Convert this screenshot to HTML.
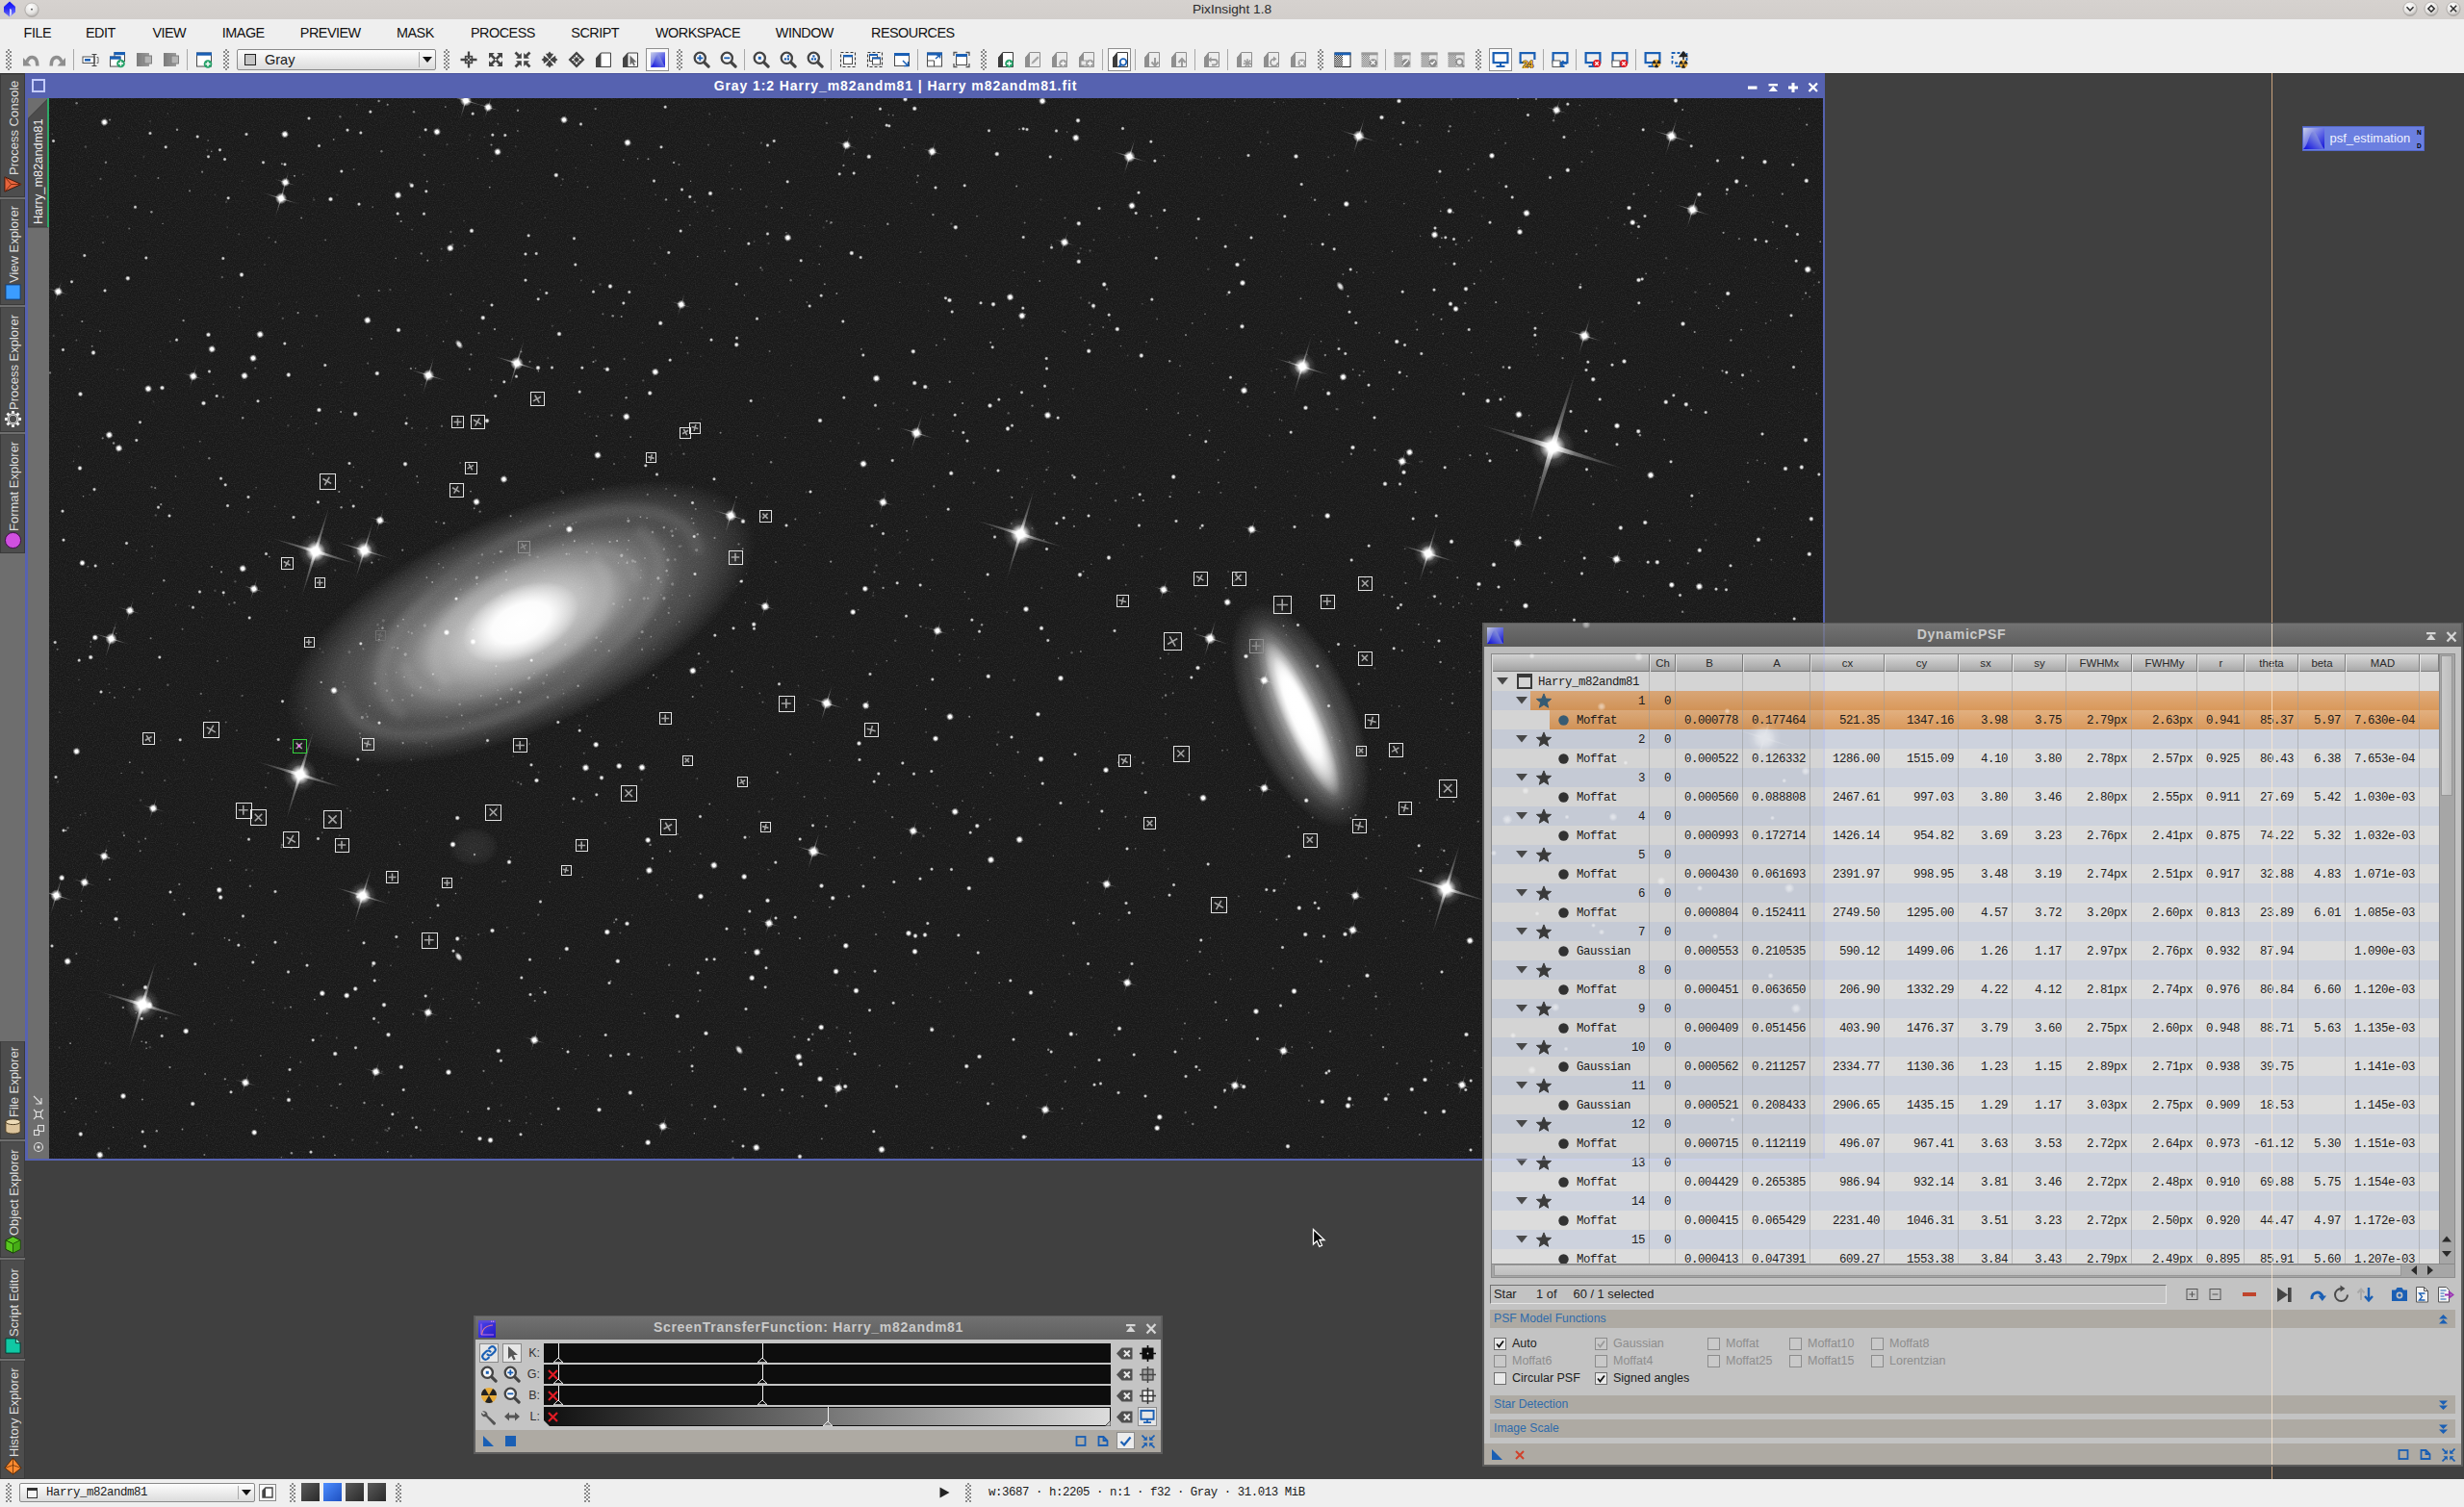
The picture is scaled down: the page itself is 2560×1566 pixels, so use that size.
<!DOCTYPE html><html><head><meta charset="utf-8"><title>PixInsight 1.8</title><style>
*{box-sizing:border-box}
html,body{margin:0;padding:0}
body{width:2560px;height:1566px;position:relative;overflow:hidden;background:#404040;font-family:"Liberation Sans",sans-serif;font-size:12.5px;color:#1a1a1a}
.a{position:absolute}
.mono{font-family:"Liberation Mono",monospace;font-size:12.4px;letter-spacing:-.44px}
.menu span{position:absolute;top:25px;font-size:14.4px;letter-spacing:-.5px;color:#111;line-height:18px;white-space:nowrap}
.grip{position:absolute;width:6px;background-image:repeating-conic-gradient(#8a8a8a 0% 25%,#f0f0f0 0% 50%);background-size:4px 4px}
.sep{position:absolute;width:1px;background:#a8a8a8}
.vt{position:absolute;left:0;width:26px;background:#4d4d4d;border:1px solid #3a3a3a;border-top-color:#444}
    .vt span{position:absolute;left:4px;bottom:0;transform-origin:0 100%;transform:rotate(-90deg) translate(0,100%);white-space:nowrap;color:#dcdcdc;font-size:13px;line-height:19px;height:19px}
.bar{position:absolute;left:1548px;width:1003px;height:19px;background:#aeaaa3;color:#2e6bab;font-size:12.2px;line-height:19px;padding-left:4px}
.cb{position:absolute;width:13px;height:13px;border:1px solid #6e6e6e;background:#e9e9e9}
.cb.d{border-color:#8c8c8c;background:#c9c9c9}
.lb{position:absolute;font-size:12.5px;line-height:15px;white-space:nowrap;color:#1c1c1c}
.lb.d{color:#8d8d8d}
.row{position:absolute;left:0;width:984px;height:20px}
.row span{position:absolute;top:1px;line-height:20px;white-space:pre;color:#1c1c1c}
.hd{position:absolute;top:0;height:18px;border-right:1px solid #7d7d7d;border-left:1px solid #e6e6e6;font-size:11.4px;line-height:18px;text-align:center;color:#2a2a2a}
</style></head><body><div class="a" style="left:0;top:0;width:2560px;height:20px;background:linear-gradient(#d6d2cf,#d2cecb)"></div><div class="a" style="left:1180px;top:2px;width:200px;text-align:center;font-size:13.7px;line-height:16px;color:#2b2b2b">PixInsight 1.8</div><svg class="a" style="left:3px;top:1px" width="14" height="17" viewBox="0 0 14 17"><defs><linearGradient id="gm" x1="0" y1="0" x2="0" y2="1"><stop offset="0" stop-color="#1010f0"/><stop offset=".45" stop-color="#2a2cff"/><stop offset="1" stop-color="#c8ccff"/></linearGradient></defs><path d="M7 .5 L13 6 L13 11.5 L7 16.5 L1 11.5 L1 6 Z" fill="url(#gm)"/><path d="M7 8 L13 6 L13 11.5 L7 16.5Z" fill="#4a50f8" opacity=".55"/><path d="M7 8 L1 6 L1 11.5 L7 16.5Z" fill="#2020e8" opacity=".5"/><path d="M7 8 L7 16.5 L9 14 L9 9Z" fill="#e8eaff" opacity=".8"/></svg><svg class="a" style="left:24.5px;top:1.8px" width="16" height="16" viewBox="-8 -8 16 16"><defs><radialGradient id="bl32" cx=".4" cy=".3" r=".8"><stop offset="0" stop-color="#fff"/><stop offset=".6" stop-color="#e4e2e0"/><stop offset="1" stop-color="#a9a6a3"/></radialGradient></defs><circle r="7.400" cy=".5" fill="#8f8c89" opacity=".55"/><circle r="7" fill="url(#bl32)" stroke="#a9a6a3" stroke-width=".6"/><circle r="0.9" cy="-0.3" fill="#444"/></svg><svg class="a" style="left:2495.5px;top:1.2px" width="16" height="16" viewBox="-8 -8 16 16"><defs><radialGradient id="bl2503" cx=".4" cy=".3" r=".8"><stop offset="0" stop-color="#fff"/><stop offset=".6" stop-color="#e4e2e0"/><stop offset="1" stop-color="#a9a6a3"/></radialGradient></defs><circle r="7.400" cy=".5" fill="#8f8c89" opacity=".55"/><circle r="7" fill="url(#bl2503)" stroke="#a9a6a3" stroke-width=".6"/><path d="M-3.500 -1.700L0 1.900 3.500 -1.700" fill="none" stroke="#2a2a2a" stroke-width="1.500"/></svg><svg class="a" style="left:2518.3px;top:1.2px" width="16" height="16" viewBox="-8 -8 16 16"><defs><radialGradient id="bl2526" cx=".4" cy=".3" r=".8"><stop offset="0" stop-color="#fff"/><stop offset=".6" stop-color="#e4e2e0"/><stop offset="1" stop-color="#a9a6a3"/></radialGradient></defs><circle r="7.400" cy=".5" fill="#8f8c89" opacity=".55"/><circle r="7" fill="url(#bl2526)" stroke="#a9a6a3" stroke-width=".6"/><path d="M0 -3.200L3.200 0 0 3.200-3.200 0Z" fill="none" stroke="#2a2a2a" stroke-width="1.500"/></svg><svg class="a" style="left:2541px;top:1.2px" width="16" height="16" viewBox="-8 -8 16 16"><defs><radialGradient id="bl2549" cx=".4" cy=".3" r=".8"><stop offset="0" stop-color="#fff"/><stop offset=".6" stop-color="#e4e2e0"/><stop offset="1" stop-color="#a9a6a3"/></radialGradient></defs><circle r="7.400" cy=".5" fill="#8f8c89" opacity=".55"/><circle r="7" fill="url(#bl2549)" stroke="#a9a6a3" stroke-width=".6"/><path d="M-3.200 -3.200L3.200 3.200M3.200 -3.200L-3.200 3.200" stroke="#2a2a2a" stroke-width="1.500"/></svg><div class="a" style="left:0;top:20px;width:2560px;height:56px;background:#efefef"></div><div class="menu"><span style="left:24.6px">FILE</span><span style="left:89px">EDIT</span><span style="left:158.4px">VIEW</span><span style="left:230.8px">IMAGE</span><span style="left:311.8px">PREVIEW</span><span style="left:412px">MASK</span><span style="left:489px">PROCESS</span><span style="left:593.3px">SCRIPT</span><span style="left:681px">WORKSPACE</span><span style="left:805.8px">WINDOW</span><span style="left:905px">RESOURCES</span></div><div class="grip" style="left:6px;top:51px;height:22px"></div><svg class="a" style="left:23px;top:53px" width="18" height="18" viewBox="0 0 18 18"><path d="M1 15.500V7l8.500 8.500z" fill="#8e8e8e"/><path d="M5 11.500C6 4.500 16 4 15.800 15.500" fill="none" stroke="#8e8e8e" stroke-width="3.600"/></svg><svg class="a" style="left:51px;top:53px" width="18" height="18" viewBox="0 0 18 18"><path d="M17 15.500V7l-8.500 8.500z" fill="#8e8e8e"/><path d="M13 11.500C12 4.500 2 4 2.200 15.500" fill="none" stroke="#8e8e8e" stroke-width="3.600"/></svg><div class="sep" style="left:76px;top:51px;height:22px"></div><svg class="a" style="left:85px;top:53px" width="18" height="18" viewBox="0 0 18 18"><rect x="1" y="6" width="12" height="6.500" fill="#fff" stroke="#555" stroke-width="1"/><rect x="3" y="8" width="6" height="2.6" fill="#1a5fb4"/><path d="M10.5 3.5h5M10.5 15.500h5M13 3.5v12" stroke="#444" stroke-width="1.2" fill="none"/><path d="M15.500 6.500h1.500v6h-1.500" stroke="#666" fill="none"/></svg><svg class="a" style="left:113px;top:53px" width="18" height="18" viewBox="0 0 18 18"><rect x="6" y="1.5" width="10.5" height="9" fill="#fff" stroke="#4a4a4a" stroke-width="1"/><rect x="5.5" y="1" width="11.5" height="3.2" fill="#1a5fb4"/><rect x="1.5" y="6" width="10.5" height="10" fill="#fff" stroke="#4a4a4a" stroke-width="1"/><rect x="1" y="5.5" width="11.5" height="3.2" fill="#1a5fb4"/><circle cx="12.5" cy="13" r="4.3" fill="#26a269"/><path d="M10 13h5M12.5 10.5v5" stroke="#fff" stroke-width="1.400"/></svg><svg class="a" style="left:141px;top:53px" width="18" height="18" viewBox="0 0 18 18"><defs><linearGradient id="gb141" x1="0" y1="0" x2="1" y2="0"><stop offset="0" stop-color="#7a7a7a"/><stop offset="1" stop-color="#9c9c9c"/></linearGradient></defs><rect x="1" y="2" width="13" height="14" fill="url(#gb141)"/><rect x="9" y="5" width="7.5" height="8" fill="#b5b5b5" stroke="#7e7e7e"/></svg><svg class="a" style="left:169px;top:53px" width="18" height="18" viewBox="0 0 18 18"><defs><linearGradient id="gb169" x1="0" y1="0" x2="1" y2="0"><stop offset="0" stop-color="#7a7a7a"/><stop offset="1" stop-color="#9c9c9c"/></linearGradient></defs><rect x="1" y="2" width="13" height="14" fill="url(#gb169)"/><rect x="9" y="5" width="7.5" height="8" fill="#b5b5b5" stroke="#7e7e7e"/></svg><div class="sep" style="left:194px;top:51px;height:22px"></div><svg class="a" style="left:203px;top:53px" width="18" height="18" viewBox="0 0 18 18"><rect x="1.5" y="2" width="15" height="14" fill="#fff" stroke="#4a4a4a" stroke-width="1"/><rect x="1" y="1.5" width="16" height="3.2" fill="#1a5fb4"/><circle cx="13" cy="13.5" r="4.3" fill="#26a269"/><path d="M10.5 13.5h5M13 11v5" stroke="#fff" stroke-width="1.400"/></svg><div class="grip" style="left:232px;top:51px;height:22px"></div><div class="a" style="left:246px;top:51px;width:207px;height:22px;border:1px solid #8a8a8a;border-radius:2px;background:linear-gradient(#fdfdfd,#dcdcdc)"><div class="a" style="left:7px;top:4px;width:12px;height:12px;border:1.500px solid #222;background:#c4c4c4"></div><div class="a" style="left:28px;top:1px;font-size:14.5px;line-height:18px;color:#1a1a1a">Gray</div><div class="a" style="left:188px;top:2px;width:1px;height:16px;background:#aaa"></div><svg class="a" style="left:192px;top:7px" width="10" height="7"><path d="M0 0h10L5 6z" fill="#111"/></svg></div><div class="grip" style="left:461px;top:51px;height:22px"></div><svg class="a" style="left:478px;top:53px" width="18" height="18" viewBox="0 0 18 18"><path d="M9 0.500v17M0.500 9h17" stroke="#444" stroke-width="2.300"/><rect x="5.600" y="5.600" width="6.800" height="6.800" fill="none" stroke="#444" stroke-width="1.600"/><rect x="8.200" y="8.200" width="1.600" height="1.600" fill="#efefef"/></svg><svg class="a" style="left:506px;top:53px" width="18" height="18" viewBox="0 0 18 18"><path d="M2 2h5.800L2 7.800zM16 2v5.800L10.200 2zM2 16V10.200L7.800 16zM16 16H10.200L16 10.200z" fill="#444"/><path d="M4 4l10 10M14 4L4 14" stroke="#444" stroke-width="2.500"/><rect x="8.100" y="8.100" width="1.800" height="1.800" fill="#efefef"/></svg><svg class="a" style="left:534px;top:53px" width="18" height="18" viewBox="0 0 18 18"><path d="M7.800 7.800V2L2 7.800zM10.200 7.800V2L16 7.800zM7.800 10.200V16L2 10.200zM10.200 10.200V16L16 10.200z" fill="#444"/><path d="M1.500 1.500l4.500 4.500M16.500 1.500L12 6M1.500 16.500L6 12M16.500 16.500L12 12" stroke="#444" stroke-width="2.800"/></svg><svg class="a" style="left:562px;top:53px" width="18" height="18" viewBox="0 0 18 18"><path d="M9 9L4.800 2.800h2.400L9 0.500l1.800 2.300h2.400zM9 9l4.200 6.200h-2.400L9 17.500l-1.800-2.300H4.800zM9 9L2.800 13.200v-2.400L0.500 9l2.300-1.800V4.800zM9 9l6.200-4.200v2.400L17.500 9l-2.300 1.800v2.400z" fill="#444"/><circle cx="9" cy="9" r="1.100" fill="#efefef"/></svg><svg class="a" style="left:590px;top:53px" width="18" height="18" viewBox="0 0 18 18"><path d="M9 0.500L17.500 9 9 17.500 0.500 9z" fill="#444"/><g fill="#efefef"><rect x="7.900" y="4.300" width="2.200" height="2.200"/><rect x="7.900" y="11.500" width="2.200" height="2.200"/><rect x="4.300" y="7.900" width="2.200" height="2.200"/><rect x="11.500" y="7.900" width="2.200" height="2.200"/><rect x="6.200" y="6.200" width="1.500" height="1.500"/><rect x="10.300" y="6.200" width="1.500" height="1.500"/><rect x="6.200" y="10.300" width="1.500" height="1.500"/><rect x="10.300" y="10.300" width="1.500" height="1.500"/></g></svg><svg class="a" style="left:618px;top:53px" width="18" height="18" viewBox="0 0 18 18"><path d="M1.500 16.500V7.500l5-5.500h10v14.500z" fill="#fff" stroke="#444" stroke-width="1"/><path d="M1 17V7.500L6.500 1.500V17z" fill="#444"/></svg><svg class="a" style="left:646px;top:53px" width="18" height="18" viewBox="0 0 18 18"><path d="M1.500 16.500V7.500l5-5.500h10v14.500z" fill="#f4f4f4" stroke="#444" stroke-width="1"/><path d="M1 17V7.500L6.500 1.500V17z" fill="#444"/><path d="M8.500 4.500v10l2.300-2.200 1.500 3.200 1.600-0.700-1.500-3.200h3.100z" fill="#6a6a6a"/></svg><div class="a" style="left:671px;top:50px;width:24px;height:24px;border:1px solid #8f8f8f;background:#fbfbfb"></div><svg class="a" style="left:675.5px;top:54px" width="15.5" height="16" viewBox="0 0 17 17"><defs><linearGradient id="pg1" x1="0" y1="0" x2="1" y2="1"><stop offset="0" stop-color="#c9d0e8"/><stop offset=".5" stop-color="#6a72e6"/><stop offset="1" stop-color="#1010d8"/></linearGradient><linearGradient id="ph1" x1="0" y1="1" x2="1" y2="0"><stop offset="0" stop-color="#0a0ae0"/><stop offset=".55" stop-color="#6a74e0"/><stop offset="1" stop-color="#aeb8dc"/></linearGradient></defs><rect width="17" height="17" fill="url(#pg1)"/><path d="M0 17 C4 14 5 3 8 3 C11 3 13 12 17 17Z" fill="url(#ph1)"/></svg><div class="grip" style="left:703px;top:51px;height:22px"></div><svg class="a" style="left:720px;top:53px" width="18" height="18" viewBox="0 0 18 18"><circle cx="7.300" cy="7.300" r="5.600" fill="#f6f6f6" stroke="#444" stroke-width="2.300"/><path d="M11.800 11.800l4.300 4.300" stroke="#444" stroke-width="3.200" stroke-linecap="round"/><g transform="translate(.3 .3)"><path d="M4 7h6M7 4v6" stroke="#1a5fb4" stroke-width="1.800"/></g></svg><svg class="a" style="left:748px;top:53px" width="18" height="18" viewBox="0 0 18 18"><circle cx="7.300" cy="7.300" r="5.600" fill="#f6f6f6" stroke="#444" stroke-width="2.300"/><path d="M11.800 11.800l4.300 4.300" stroke="#444" stroke-width="3.200" stroke-linecap="round"/><g transform="translate(.3 .3)"><path d="M4 7h6" stroke="#1a5fb4" stroke-width="1.800"/></g></svg><div class="sep" style="left:773px;top:51px;height:22px"></div><svg class="a" style="left:782px;top:53px" width="18" height="18" viewBox="0 0 18 18"><circle cx="7.300" cy="7.300" r="5.600" fill="#f6f6f6" stroke="#444" stroke-width="2.300"/><path d="M11.800 11.800l4.300 4.300" stroke="#444" stroke-width="3.200" stroke-linecap="round"/><g transform="translate(.3 .3)"><rect x="5.500" y="5.500" width="3" height="3" fill="#1a5fb4"/></g></svg><svg class="a" style="left:810px;top:53px" width="18" height="18" viewBox="0 0 18 18"><circle cx="7.300" cy="7.300" r="5.600" fill="#f6f6f6" stroke="#444" stroke-width="2.300"/><path d="M11.800 11.800l4.300 4.300" stroke="#444" stroke-width="3.200" stroke-linecap="round"/><g transform="translate(.3 .3)"><rect x="4.500" y="7" width="2.200" height="2.200" fill="#1a5fb4"/><rect x="7.500" y="7" width="2.200" height="2.200" fill="#1a5fb4"/><rect x="7.500" y="4" width="2.200" height="2.200" fill="#1a5fb4"/></g></svg><svg class="a" style="left:838px;top:53px" width="18" height="18" viewBox="0 0 18 18"><circle cx="7.300" cy="7.300" r="5.600" fill="#f6f6f6" stroke="#444" stroke-width="2.300"/><path d="M11.800 11.800l4.300 4.300" stroke="#444" stroke-width="3.200" stroke-linecap="round"/><g transform="translate(.3 .3)"><rect x="4.500" y="7" width="2.200" height="2.200" fill="#1a5fb4"/><rect x="7.500" y="7" width="2.200" height="2.200" fill="#1a5fb4"/><rect x="6" y="4" width="2.200" height="2.200" fill="#1a5fb4"/></g></svg><div class="sep" style="left:863px;top:51px;height:22px"></div><svg class="a" style="left:872px;top:53px" width="18" height="18" viewBox="0 0 18 18"><rect x="1.500" y="1.500" width="15" height="15" fill="none" stroke="#3a3a3a" stroke-width="1.100" stroke-dasharray="3 2"/><rect x="4.5" y="4.5" width="9" height="9" fill="#fff" stroke="#4a4a4a" stroke-width="1"/><rect x="4" y="4" width="10" height="2.4" fill="#1a5fb4"/></svg><svg class="a" style="left:900px;top:53px" width="18" height="18" viewBox="0 0 18 18"><rect x="1.500" y="1.500" width="15" height="15" fill="none" stroke="#3a3a3a" stroke-width="1.100" stroke-dasharray="3 2"/><rect x="3.5" y="3.5" width="8" height="7" fill="#fff" stroke="#4a4a4a" stroke-width="1"/><rect x="3" y="3" width="9" height="2" fill="#1a5fb4"/><rect x="6.5" y="7" width="8" height="7" fill="#fff" stroke="#4a4a4a" stroke-width="1"/><rect x="6" y="6.5" width="9" height="2" fill="#1a5fb4"/></svg><svg class="a" style="left:928px;top:53px" width="18" height="18" viewBox="0 0 18 18"><rect x="1.5" y="2.5" width="15" height="13" fill="#fff" stroke="#4a4a4a" stroke-width="1"/><rect x="1" y="2" width="16" height="3" fill="#1a5fb4"/><path d="M10 10l5 5M15.500 11v4.500H11" stroke="#1a5fb4" stroke-width="1.500" fill="none"/></svg><div class="sep" style="left:953px;top:51px;height:22px"></div><svg class="a" style="left:962px;top:53px" width="18" height="18" viewBox="0 0 18 18"><rect x="1.5" y="2" width="15" height="14" fill="#fff" stroke="#4a4a4a" stroke-width="1"/><rect x="1" y="1.5" width="16" height="3" fill="#1a5fb4"/><path d="M1.500 10h7v6" fill="none" stroke="#4a4a4a"/><path d="M10 8l4-3.500M11 4h3.500v3.500" stroke="#1a5fb4" stroke-width="1.500" fill="none"/></svg><svg class="a" style="left:990px;top:53px" width="18" height="18" viewBox="0 0 18 18"><path d="M1 5V1.500h3.500M13.500 1.500H17V5M17 13v3.500h-3.500M4.500 16.500H1V13" fill="none" stroke="#555" stroke-width="1.300"/><rect x="3.5" y="3.5" width="11" height="11" fill="#fff" stroke="#4a4a4a" stroke-width="1"/><rect x="3" y="3" width="12" height="3" fill="#1a5fb4"/></svg><div class="grip" style="left:1019px;top:51px;height:22px"></div><svg class="a" style="left:1036px;top:53px" width="18" height="18" viewBox="0 0 18 18"><path d="M1.500 16.500V7l4.500-5.500h10.500v15z" fill="#fff" stroke="#3d3d3d" stroke-width="1"/><path d="M1 17V7L6 1v16z" fill="#3d3d3d"/><circle cx="12.5" cy="13" r="4.3" fill="#26a269"/><path d="M10 13h5M12.5 10.5v5" stroke="#fff" stroke-width="1.400"/></svg><svg class="a" style="left:1064px;top:53px" width="18" height="18" viewBox="0 0 18 18"><path d="M1.500 16.500V7l4.500-5.500h10.500v15z" fill="#ececec" stroke="#8e8e8e" stroke-width="1"/><path d="M1 17V7L6 1v16z" fill="#8e8e8e"/><path d="M7 14l1-3 6-6 2 2-6 6z" fill="#a8a8a8" stroke="#efefef" stroke-width=".6"/></svg><svg class="a" style="left:1092px;top:53px" width="18" height="18" viewBox="0 0 18 18"><path d="M1.500 16.500V7l4.500-5.500h10.500v15z" fill="#ececec" stroke="#8e8e8e" stroke-width="1"/><path d="M1 17V7L6 1v16z" fill="#8e8e8e"/><circle cx="12.5" cy="13" r="4.3" fill="#a2a2a2"/><path d="M10 13h5M12.5 10.5v5" stroke="#fff" stroke-width="1.400"/></svg><svg class="a" style="left:1120px;top:53px" width="18" height="18" viewBox="0 0 18 18"><path d="M1.500 16.500V7l4.500-5.500h10.500v15z" fill="#ececec" stroke="#8e8e8e" stroke-width="1"/><path d="M1 17V7L6 1v16z" fill="#8e8e8e"/><rect x="3" y="10" width="6" height="5" fill="#e8e8e8" stroke="#999"/><circle cx="12.5" cy="13" r="4.3" fill="#a2a2a2"/><path d="M10 13h5M12.5 10.5v5" stroke="#fff" stroke-width="1.400"/></svg><div class="sep" style="left:1145px;top:51px;height:22px"></div><div class="a" style="left:1151px;top:50px;width:24px;height:24px;border:1px solid #8f8f8f;background:#fbfbfb"></div><svg class="a" style="left:1154.5px;top:53px" width="18" height="18" viewBox="0 0 18 18"><path d="M1.500 16.500V7l4.500-5.500h10.500v15z" fill="#fff" stroke="#3d3d3d" stroke-width="1"/><path d="M1 17V7L6 1v16z" fill="#3d3d3d"/><circle cx="12" cy="11.500" r="3.300" fill="#fff" stroke="#1a5fb4" stroke-width="1.700"/><path d="M9.800 14l-2.300 2.500" stroke="#1a5fb4" stroke-width="2"/></svg><div class="sep" style="left:1179px;top:51px;height:22px"></div><svg class="a" style="left:1188px;top:53px" width="18" height="18" viewBox="0 0 18 18"><path d="M1.500 16.500V7l4.500-5.500h10.500v15z" fill="#ececec" stroke="#8e8e8e" stroke-width="1"/><path d="M1 17V7L6 1v16z" fill="#8e8e8e"/><path d="M12 7v8M8.500 11.500l3.500 4 3.500-4" stroke="#9a9a9a" stroke-width="2" fill="none"/></svg><svg class="a" style="left:1216px;top:53px" width="18" height="18" viewBox="0 0 18 18"><path d="M1.500 16.500V7l4.500-5.500h10.500v15z" fill="#ececec" stroke="#8e8e8e" stroke-width="1"/><path d="M1 17V7L6 1v16z" fill="#8e8e8e"/><path d="M12 16V9M8.500 12l3.500-4 3.500 4" stroke="#9a9a9a" stroke-width="2" fill="none"/></svg><div class="sep" style="left:1241px;top:51px;height:22px"></div><svg class="a" style="left:1250px;top:53px" width="18" height="18" viewBox="0 0 18 18"><path d="M1.500 16.500V7l4.500-5.500h10.500v15z" fill="#ececec" stroke="#8e8e8e" stroke-width="1"/><path d="M1 17V7L6 1v16z" fill="#8e8e8e"/><path d="M6 9h6a2.500 2.500 0 010 5.500H9" stroke="#9a9a9a" stroke-width="1.800" fill="none"/><path d="M8.500 6L5 9l3.500 3z" fill="#9a9a9a"/></svg><div class="sep" style="left:1275px;top:51px;height:22px"></div><svg class="a" style="left:1284px;top:53px" width="18" height="18" viewBox="0 0 18 18"><path d="M1.500 16.500V7l4.500-5.500h10.500v15z" fill="#ececec" stroke="#8e8e8e" stroke-width="1"/><path d="M1 17V7L6 1v16z" fill="#8e8e8e"/><circle cx="12" cy="12.500" r="3" fill="none" stroke="#9a9a9a" stroke-width="2.400" stroke-dasharray="1.600 1"/><circle cx="12" cy="12.500" r="2.200" fill="#9a9a9a"/></svg><svg class="a" style="left:1312px;top:53px" width="18" height="18" viewBox="0 0 18 18"><path d="M1.500 16.500V7l4.500-5.500h10.500v15z" fill="#ececec" stroke="#8e8e8e" stroke-width="1"/><path d="M1 17V7L6 1v16z" fill="#8e8e8e"/><path d="M15.500 12a3.700 3.700 0 11-3.700-3.700" stroke="#9a9a9a" stroke-width="1.800" fill="none"/><path d="M11 5.500l3.500 2.800-3.500 2.800z" fill="#9a9a9a"/></svg><svg class="a" style="left:1340px;top:53px" width="18" height="18" viewBox="0 0 18 18"><path d="M1.500 16.500V7l4.500-5.500h10.500v15z" fill="#ececec" stroke="#8e8e8e" stroke-width="1"/><path d="M1 17V7L6 1v16z" fill="#8e8e8e"/><circle cx="12.500" cy="12.500" r="4" fill="#a2a2a2"/><path d="M10.500 10.500l4 4M14.500 10.500l-4 4" stroke="#fff" stroke-width="1.300"/></svg><div class="grip" style="left:1369px;top:51px;height:22px"></div><svg class="a" style="left:1386px;top:53px" width="18" height="18" viewBox="0 0 18 18"><defs><pattern id="ck1" width="2" height="2" patternUnits="userSpaceOnUse"><rect width="2" height="2" fill="#fff"/><rect width="1" height="1" fill="#222"/><rect x="1" y="1" width="1" height="1" fill="#222"/></pattern></defs><rect x="1" y="2" width="16" height="14.500" fill="#fff" stroke="#222" stroke-width="1"/><rect x="1" y="4" width="8" height="12.500" fill="url(#ck1)"/><rect x=".5" y="1.500" width="17" height="2.800" fill="#1a5fb4"/></svg><svg class="a" style="left:1414px;top:53px" width="18" height="18" viewBox="0 0 18 18"><defs><pattern id="ck2" width="2" height="2" patternUnits="userSpaceOnUse"><rect width="2" height="2" fill="#dcdcdc"/><rect width="1" height="1" fill="#808080"/><rect x="1" y="1" width="1" height="1" fill="#808080"/></pattern></defs><rect x="1" y="2" width="16" height="14.500" fill="#e6e6e6" stroke="#b0b0b0" stroke-width="1"/><rect x="1" y="4" width="8" height="12.500" fill="url(#ck2)"/><rect x=".5" y="1.500" width="17" height="2.800" fill="#999"/><circle cx="12.800" cy="12.500" r="4.300" fill="#8c8c8c"/><path d="M10.500 10l4 4M14.500 10l-4 4" stroke="#fff" stroke-width="1.300"/></svg><div class="sep" style="left:1439px;top:51px;height:22px"></div><svg class="a" style="left:1448px;top:53px" width="18" height="18" viewBox="0 0 18 18"><defs><pattern id="ck3" width="2" height="2" patternUnits="userSpaceOnUse"><rect width="2" height="2" fill="#dcdcdc"/><rect width="1" height="1" fill="#808080"/><rect x="1" y="1" width="1" height="1" fill="#808080"/></pattern></defs><rect x="1" y="2" width="16" height="14.500" fill="#e6e6e6" stroke="#b0b0b0" stroke-width="1"/><rect x="1" y="4" width="8" height="12.500" fill="url(#ck3)"/><rect x=".5" y="1.500" width="17" height="2.800" fill="#999"/><circle cx="12.800" cy="12.500" r="4.300" fill="#8c8c8c"/><path d="M10 14.500l5-5" stroke="#fff" stroke-width="1.300"/></svg><svg class="a" style="left:1476px;top:53px" width="18" height="18" viewBox="0 0 18 18"><defs><pattern id="ck4" width="2" height="2" patternUnits="userSpaceOnUse"><rect width="2" height="2" fill="#dcdcdc"/><rect width="1" height="1" fill="#808080"/><rect x="1" y="1" width="1" height="1" fill="#808080"/></pattern></defs><rect x="1" y="2" width="16" height="14.500" fill="#e6e6e6" stroke="#b0b0b0" stroke-width="1"/><rect x="1" y="4" width="8" height="12.500" fill="url(#ck4)"/><rect x=".5" y="1.500" width="17" height="2.800" fill="#999"/><circle cx="12.800" cy="12.500" r="4.300" fill="#8c8c8c"/><path d="M10.500 12l1.500 1.700 2.700-3.200" stroke="#fff" stroke-width="1.300" fill="none"/></svg><svg class="a" style="left:1504px;top:53px" width="18" height="18" viewBox="0 0 18 18"><defs><pattern id="ck5" width="2" height="2" patternUnits="userSpaceOnUse"><rect width="2" height="2" fill="#dcdcdc"/><rect width="1" height="1" fill="#808080"/><rect x="1" y="1" width="1" height="1" fill="#808080"/></pattern></defs><rect x="1" y="2" width="16" height="14.500" fill="#e6e6e6" stroke="#b0b0b0" stroke-width="1"/><rect x="1" y="4" width="8" height="12.500" fill="url(#ck5)"/><rect x=".5" y="1.500" width="17" height="2.800" fill="#999"/><circle cx="12.300" cy="11.500" r="3.300" fill="#eee" stroke="#8c8c8c" stroke-width="1.800"/><path d="M14.600 14l2.400 2.400" stroke="#8c8c8c" stroke-width="2.200"/></svg><div class="grip" style="left:1533px;top:51px;height:22px"></div><div class="a" style="left:1547px;top:50px;width:24px;height:24px;border:1px solid #8f8f8f;background:#fbfbfb"></div><svg class="a" style="left:1550px;top:53px" width="18" height="18" viewBox="0 0 18 18"><rect x="1.600" y="2.100" width="14.800" height="10" fill="none" stroke="#1a5fb4" stroke-width="2.200"/><path d="M9 12.500v3M4.500 16h9" stroke="#1a5fb4" stroke-width="2"/></svg><svg class="a" style="left:1578px;top:53px" width="18" height="18" viewBox="0 0 18 18"><rect x="1.600" y="2.100" width="14.800" height="10" fill="none" stroke="#1a5fb4" stroke-width="2.200"/><path d="M9 12.500v3M4.500 16h9" stroke="#1a5fb4" stroke-width="2"/><rect x="4" y="9" width="14" height="9" fill="#efefef"/><text x="4" y="17.800" font-family="Liberation Sans" font-weight="bold" font-size="10.500" letter-spacing="-.6" fill="#f2b632" stroke="#2a2206" stroke-width="1.100" paint-order="stroke">24</text></svg><div class="sep" style="left:1603px;top:51px;height:22px"></div><svg class="a" style="left:1612px;top:53px" width="18" height="18" viewBox="0 0 18 18"><rect x="1.600" y="2.100" width="14.800" height="10" fill="none" stroke="#1a5fb4" stroke-width="2.200"/><path d="M9 12.500v3M4.500 16h9" stroke="#1a5fb4" stroke-width="2"/><rect x="1" y="10" width="8" height="6.500" fill="#fff" stroke="#555"/><path d="M16 13h-6M12.500 10l-3 3 3 3" stroke="#1a5fb4" stroke-width="1.700" fill="none"/></svg><div class="sep" style="left:1637px;top:51px;height:22px"></div><svg class="a" style="left:1646px;top:53px" width="18" height="18" viewBox="0 0 18 18"><rect x="1.600" y="2.100" width="14.800" height="10" fill="none" stroke="#1a5fb4" stroke-width="2.200"/><path d="M9 12.500v3M4.500 16h9" stroke="#1a5fb4" stroke-width="2"/><circle cx="13" cy="13" r="4" fill="#e01b24"/><path d="M11.3 11.3l3.400 3.400M14.7 11.3l-3.400 3.400" stroke="#fff" stroke-width="1.300"/></svg><svg class="a" style="left:1674px;top:53px" width="18" height="18" viewBox="0 0 18 18"><rect x="1.600" y="2.100" width="14.800" height="10" fill="none" stroke="#1a5fb4" stroke-width="2.200"/><path d="M9 12.500v3M4.500 16h9" stroke="#1a5fb4" stroke-width="2"/><rect x="1" y="10" width="8" height="6.500" fill="#fff" stroke="#555"/><circle cx="13" cy="13" r="4" fill="#e01b24"/><path d="M11.3 11.3l3.400 3.400M14.7 11.3l-3.400 3.400" stroke="#fff" stroke-width="1.300"/></svg><div class="sep" style="left:1699px;top:51px;height:22px"></div><svg class="a" style="left:1708px;top:53px" width="18" height="18" viewBox="0 0 18 18"><rect x="1.600" y="2.100" width="14.800" height="10" fill="none" stroke="#1a5fb4" stroke-width="2.200"/><path d="M9 12.500v3M4.500 16h9" stroke="#1a5fb4" stroke-width="2"/><circle cx="13" cy="13" r="4.3" fill="#e9ad3b"/><path d="M13 13L8.70 13.00A4.3 4.3 0 0 1 10.85 9.28Z" fill="#222"/><path d="M13 13L15.15 9.28A4.3 4.3 0 0 1 17.30 13.00Z" fill="#222"/><path d="M13 13L15.15 16.72A4.3 4.3 0 0 1 10.85 16.72Z" fill="#222"/></svg><svg class="a" style="left:1736px;top:53px" width="18" height="18" viewBox="0 0 18 18"><rect x="1.500" y="2" width="15" height="10.500" fill="none" stroke="#1a5fb4" stroke-width="1.800" stroke-dasharray="3 2"/><path d="M9 12.500v3M5 16.200h6" stroke="#1a5fb4" stroke-width="1.800"/><circle cx="13" cy="13.5" r="4.3" fill="#e9ad3b"/><path d="M13 13.5L8.70 13.50A4.3 4.3 0 0 1 10.85 9.78Z" fill="#222"/><path d="M13 13.5L15.15 9.78A4.3 4.3 0 0 1 17.30 13.50Z" fill="#222"/><path d="M13 13.5L15.15 17.22A4.3 4.3 0 0 1 10.85 17.22Z" fill="#222"/><path d="M13 9V4M9.500 5.500L13 1l3.500 4.500z" fill="#222" stroke="#222" stroke-width="1.500"/></svg><div class="a" style="left:0;top:76px;width:2560px;height:1461px;background:#404040"></div><div class="a" style="left:0;top:76px;width:2560px;height:1px;background:#303030"></div><div class="a" style="left:0;top:77px;width:26px;height:1460px;background:#6e6e6e"></div><div class="vt" style="top:77px;height:128px"><span style="bottom:22px">Process Console</span><svg class="a" style="left:3px;bottom:3px" width="19" height="19" viewBox="0 0 20 20"><path d="M1 2L19 10 1 18z" fill="#e8643c" stroke="#3a1408" stroke-width="1"/><path d="M1 2l7 8-7 8M8 10h11" stroke="#7a2a10" stroke-width="1" fill="none"/></svg></div><div class="vt" style="top:207px;height:110px"><span style="bottom:22px">View Explorer</span><svg class="a" style="left:3px;bottom:3px" width="19" height="19" viewBox="0 0 20 20"><rect x="2" y="2" width="16" height="16" fill="#3b9cff" stroke="#123a6e" stroke-width="1"/></svg></div><div class="vt" style="top:319px;height:130px"><span style="bottom:22px">Process Explorer</span><svg class="a" style="left:3px;bottom:3px" width="19" height="19" viewBox="0 0 20 20"><circle cx="10" cy="10" r="5.200" fill="none" stroke="#f4f4f4" stroke-width="2.600"/><g stroke="#f4f4f4" stroke-width="3"><path d="M10 1v3M10 16v3M1 10h3M16 10h3M3.600 3.600l2.200 2.200M14.200 14.200l2.200 2.200M3.600 16.400l2.200-2.200M14.200 5.800l2.200-2.200"/></g><circle cx="10" cy="10" r="5.200" fill="none" stroke="#111" stroke-width=".6"/></svg></div><div class="vt" style="top:451px;height:124px"><span style="bottom:22px">Format Explorer</span><svg class="a" style="left:3px;bottom:3px" width="19" height="19" viewBox="0 0 20 20"><circle cx="10" cy="10" r="8.500" fill="#d050e0" stroke="#3a0a44" stroke-width="1"/></svg></div><div class="vt" style="top:1082px;height:102px"><span style="bottom:22px">File Explorer</span><svg class="a" style="left:3px;bottom:3px" width="19" height="19" viewBox="0 0 20 20"><path d="M2 5v10c0 4 16 4 16 0V5" fill="#dcc49c" stroke="#4a3a20"/><ellipse cx="10" cy="5" rx="8" ry="3" fill="#eedcb8" stroke="#4a3a20"/></svg></div><div class="vt" style="top:1186px;height:121px"><span style="bottom:22px">Object Explorer</span><svg class="a" style="left:3px;bottom:3px" width="19" height="19" viewBox="0 0 20 20"><path d="M10 1l8 4v10l-8 4-8-4V5z" fill="#58c81e" stroke="#143a04"/><path d="M2 5l8 4 8-4M10 9v10" stroke="#143a04" fill="none"/><path d="M10 9l8-4v10l-8 4z" fill="#3a9a10" opacity=".6"/></svg></div><div class="vt" style="top:1309px;height:103px"><span style="bottom:22px">Script Editor</span><svg class="a" style="left:3px;bottom:3px" width="19" height="19" viewBox="0 0 20 20"><path d="M2 2h11l5 5v11H2z" fill="#10c8a4" stroke="#043a30"/><path d="M13 2v5h5" fill="#8ee8d4" stroke="#043a30"/></svg></div><div class="vt" style="top:1414px;height:123px"><span style="bottom:22px">History Explorer</span><svg class="a" style="left:3px;bottom:3px" width="19" height="19" viewBox="0 0 20 20"><path d="M10 1l9 11-9 7-9-7z" fill="#ff8a30" stroke="#5a2a04"/><path d="M10 1v18M1 12l9-3 9 3" stroke="#5a2a04" fill="none" stroke-width=".8"/></svg></div><div class="a" style="left:2359.500px;top:76px;width:1.500px;height:1461px;background:#c9a27c"></div><div class="a" style="left:2391.500px;top:131px;width:127px;height:25.500px;background:#6b7fe0;border:1px solid #5468c8"><svg class="a" style="left:.5px;top:.5px" width="22" height="22" viewBox="0 0 17 17"><defs><linearGradient id="pg2" x1="0" y1="0" x2="1" y2="1"><stop offset="0" stop-color="#c9d0e8"/><stop offset=".5" stop-color="#6a72e6"/><stop offset="1" stop-color="#1010d8"/></linearGradient><linearGradient id="ph2" x1="0" y1="1" x2="1" y2="0"><stop offset="0" stop-color="#0a0ae0"/><stop offset=".55" stop-color="#6a74e0"/><stop offset="1" stop-color="#aeb8dc"/></linearGradient></defs><rect width="17" height="17" fill="url(#pg2)"/><path d="M0 17 C4 14 5 3 8 3 C11 3 13 12 17 17Z" fill="url(#ph2)"/></svg><div class="a" style="left:28px;top:2px;font-size:13px;line-height:19px;color:#f0f2ff">psf_estimation</div><div class="a" style="left:118.500px;top:2px;font-size:6.500px;font-weight:bold;line-height:7px;color:#000">N</div><div class="a" style="left:118.500px;top:16px;font-size:6.500px;font-weight:bold;line-height:7px;color:#000">D</div></div><div class="a" style="left:26px;top:76px;width:1870px;height:1130px;background:#5662b0"></div><div class="a" style="left:26px;top:76px;width:1870px;height:1px;background:#46519c"></div><div class="a" style="left:33px;top:82px;width:14px;height:14px;border:2.500px solid #c5ccff;background:#5662b0"></div><div class="a" style="left:500px;top:79px;width:861px;text-align:center;font-weight:bold;font-size:14px;letter-spacing:.92px;line-height:20px;color:#fff;white-space:nowrap">Gray 1:2 Harry_m82andm81 | Harry m82andm81.fit</div><svg class="a" style="left:1810px;top:83px" width="84" height="16"><g fill="#fff" stroke="none"><rect x="6" y="6.500" width="9.500" height="3.200"/><rect x="27.500" y="4" width="9.500" height="2.400"/><path d="M32.200 6.400L37 12H27.500z"/><rect x="48" y="6.500" width="10" height="3"/><rect x="51.500" y="3" width="3" height="10"/></g><path d="M69.500 3.500l8.500 8.500M78 3.500l-8.500 8.500" stroke="#fff" stroke-width="2.300"/></svg><div class="a" style="left:29px;top:102px;width:22px;height:1102px;background:#6e6e6e"></div><svg class="a" style="left:29px;top:102px" width="22" height="136"><path d="M21 0.500L0 21.500V134H21z" fill="#4c4c4c" stroke="#3a3a3a" stroke-width="1"/><rect x="20" y="0" width="2" height="134" fill="#2ea866"/></svg><div class="a" style="left:29px;top:233px;width:20px;height:0"><span class="a" style="left:2px;top:0;transform-origin:0 0;transform:rotate(-90deg);white-space:nowrap;color:#f0f0f0;font-size:12.800px;line-height:17px">Harry_m82andm81</span></div><svg class="a" style="left:32px;top:1136px" width="16" height="66"><g fill="none" stroke="#e0e0e0" stroke-width="1.100"><path d="M3 3l8 8M11 5v6H5"/><path d="M3 17l3 3m4 0l3-3m0 10l-3-3m-4 0l-3 3"/><rect x="5.500" y="19.500" width="5" height="5"/><rect x="7.500" y="33.500" width="6" height="6"/><rect x="3.500" y="38.500" width="5" height="5" fill="#6e6e6e"/><circle cx="8" cy="56" r="4.500"/><circle cx="8" cy="56" r="1" fill="#e0e0e0"/></g></svg><svg class="a" style="left:51px;top:102px;background:#191919" width="1843" height="1102" viewBox="51 102 1843 1102"><defs>
<radialGradient id="s"><stop offset="0" stop-color="#fff"/><stop offset=".38" stop-color="#fff"/><stop offset=".62" stop-color="#fff" stop-opacity=".55"/><stop offset="1" stop-color="#fff" stop-opacity="0"/></radialGradient>
<radialGradient id="h"><stop offset="0" stop-color="#fff" stop-opacity=".55"/><stop offset=".4" stop-color="#fff" stop-opacity=".22"/><stop offset="1" stop-color="#fff" stop-opacity="0"/></radialGradient>
<linearGradient id="k" x1="0" y1="0" x2="1" y2="0"><stop offset="0" stop-color="#fff" stop-opacity="0"/><stop offset=".35" stop-color="#fff" stop-opacity=".35"/><stop offset=".5" stop-color="#fff" stop-opacity=".95"/><stop offset=".65" stop-color="#fff" stop-opacity=".35"/><stop offset="1" stop-color="#fff" stop-opacity="0"/></linearGradient>
<linearGradient id="kv" x1="0" y1="0" x2="0" y2="1"><stop offset="0" stop-color="#fff" stop-opacity="0"/><stop offset=".35" stop-color="#fff" stop-opacity=".35"/><stop offset=".5" stop-color="#fff" stop-opacity=".95"/><stop offset=".65" stop-color="#fff" stop-opacity=".35"/><stop offset="1" stop-color="#fff" stop-opacity="0"/></linearGradient>
<g id="x"><path d="M-1 0L0 -.035 1 0 0 .035z" fill="url(#k)"/><path d="M0 -1.050L.035 0 0 1.050-.035 0z" fill="url(#kv)"/></g>
<radialGradient id="ga"><stop offset="0" stop-color="#fff" stop-opacity=".36"/><stop offset=".5" stop-color="#fff" stop-opacity=".30"/><stop offset=".78" stop-color="#fff" stop-opacity=".2"/><stop offset=".92" stop-color="#fff" stop-opacity=".08"/><stop offset="1" stop-color="#fff" stop-opacity="0"/></radialGradient>
<radialGradient id="gb"><stop offset="0" stop-color="#fff" stop-opacity=".42"/><stop offset=".6" stop-color="#fff" stop-opacity=".26"/><stop offset="1" stop-color="#fff" stop-opacity="0"/></radialGradient>
<radialGradient id="gc"><stop offset="0" stop-color="#fff" stop-opacity=".64"/><stop offset=".5" stop-color="#fff" stop-opacity=".42"/><stop offset="1" stop-color="#fff" stop-opacity="0"/></radialGradient>
<radialGradient id="gd"><stop offset="0" stop-color="#fff" stop-opacity="1"/><stop offset=".5" stop-color="#fff" stop-opacity=".93"/><stop offset="1" stop-color="#fff" stop-opacity="0"/></radialGradient>
<radialGradient id="g1"><stop offset="0" stop-color="#fff" stop-opacity=".26"/><stop offset=".55" stop-color="#fff" stop-opacity=".13"/><stop offset=".85" stop-color="#fff" stop-opacity=".04"/><stop offset="1" stop-color="#fff" stop-opacity="0"/></radialGradient>
<radialGradient id="g2"><stop offset="0" stop-color="#fff" stop-opacity=".5"/><stop offset=".5" stop-color="#fff" stop-opacity=".28"/><stop offset="1" stop-color="#fff" stop-opacity="0"/></radialGradient>
<radialGradient id="g3"><stop offset="0" stop-color="#fff" stop-opacity="1"/><stop offset=".35" stop-color="#fff" stop-opacity=".8"/><stop offset="1" stop-color="#fff" stop-opacity="0"/></radialGradient>
<filter id="bl" x="-20%" y="-20%" width="140%" height="140%"><feGaussianBlur stdDeviation="3"/></filter>
<filter id="bl2" x="-20%" y="-20%" width="140%" height="140%"><feGaussianBlur stdDeviation="6"/></filter>
<filter id="nz" x="0" y="0" width="100%" height="100%"><feTurbulence type="fractalNoise" baseFrequency=".85" numOctaves="2" seed="4"/><feColorMatrix values="0 0 0 0 1  0 0 0 0 1  0 0 0 0 1  .9 .9 .9 0 -1.15"/></filter>
</defs><rect x="51" y="102" width="1843" height="1102" filter="url(#nz)" opacity=".10"/><g transform="translate(541 647) rotate(-24)"><ellipse rx="262" ry="112" fill="url(#ga)"/><g filter="url(#bl)" fill="none" stroke="#fff" stroke-opacity=".075" stroke-width="13"><path d="M-150 40 C-190 -20 -100 -80 30 -82 C150 -82 212 -40 198 10"/><path d="M150 -40 C190 20 100 80 -30 82 C-150 82 -212 40 -198 -10"/><path d="M-95 30 C-120 -20 -50 -53 30 -53 C100 -51 138 -20 126 10"/><path d="M95 -30 C120 20 50 53 -30 53 C-100 51 -138 20 -126 -10"/></g><ellipse rx="182" ry="76" fill="url(#gb)"/><ellipse rx="122" ry="58" fill="url(#gc)"/><ellipse rx="64" ry="37" fill="url(#gd)"/><circle cx="-68.6" cy="52.7" r="0.9" fill="#fff" opacity="0.32"/><circle cx="-175.1" cy="-44.5" r="1.6" fill="#fff" opacity="0.18"/><circle cx="10.7" cy="85.3" r="0.9" fill="#fff" opacity="0.25"/><circle cx="-129.5" cy="-60.0" r="1.6" fill="#fff" opacity="0.18"/><circle cx="132.5" cy="-11.2" r="1.6" fill="#fff" opacity="0.25"/><circle cx="-193.7" cy="-18.4" r="1.1" fill="#fff" opacity="0.18"/><circle cx="-132.7" cy="-30.5" r="0.9" fill="#fff" opacity="0.18"/><circle cx="-133.4" cy="-53.2" r="1.3" fill="#fff" opacity="0.40"/><circle cx="-160.5" cy="-41.6" r="1.1" fill="#fff" opacity="0.25"/><circle cx="146.3" cy="37.5" r="1.6" fill="#fff" opacity="0.32"/><circle cx="-107.8" cy="-35.9" r="1.3" fill="#fff" opacity="0.25"/><circle cx="163.4" cy="-30.2" r="1.3" fill="#fff" opacity="0.32"/><circle cx="-66.7" cy="-75.6" r="0.9" fill="#fff" opacity="0.18"/><circle cx="176.2" cy="-29.8" r="1.3" fill="#fff" opacity="0.40"/><circle cx="-35.2" cy="74.4" r="1.6" fill="#fff" opacity="0.32"/><circle cx="65.6" cy="46.3" r="1.3" fill="#fff" opacity="0.25"/><circle cx="-14.8" cy="-74.2" r="0.9" fill="#fff" opacity="0.25"/><circle cx="-190.5" cy="23.1" r="1.6" fill="#fff" opacity="0.32"/><circle cx="-43.2" cy="-68.5" r="1.1" fill="#fff" opacity="0.25"/><circle cx="127.3" cy="29.2" r="1.6" fill="#fff" opacity="0.25"/><circle cx="-14.9" cy="55.9" r="1.3" fill="#fff" opacity="0.25"/><circle cx="-66.8" cy="-75.8" r="0.9" fill="#fff" opacity="0.40"/><circle cx="158.4" cy="-49.7" r="0.9" fill="#fff" opacity="0.40"/><circle cx="-92.3" cy="-37.8" r="1.6" fill="#fff" opacity="0.25"/><circle cx="147.1" cy="48.8" r="1.1" fill="#fff" opacity="0.18"/><circle cx="182.0" cy="-23.1" r="1.6" fill="#fff" opacity="0.25"/><circle cx="-110.1" cy="-52.7" r="0.9" fill="#fff" opacity="0.40"/><circle cx="184.5" cy="-4.9" r="1.1" fill="#fff" opacity="0.18"/><circle cx="-0.6" cy="-68.7" r="0.9" fill="#fff" opacity="0.25"/><circle cx="186.8" cy="-23.6" r="0.9" fill="#fff" opacity="0.32"/><circle cx="134.4" cy="-9.4" r="1.3" fill="#fff" opacity="0.25"/><circle cx="-92.4" cy="51.8" r="1.3" fill="#fff" opacity="0.25"/><circle cx="-110.3" cy="-38.6" r="1.1" fill="#fff" opacity="0.25"/><circle cx="-163.9" cy="-3.8" r="1.3" fill="#fff" opacity="0.40"/><circle cx="-5.9" cy="82.2" r="1.3" fill="#fff" opacity="0.32"/><circle cx="113.3" cy="24.6" r="1.1" fill="#fff" opacity="0.40"/><circle cx="-136.6" cy="-58.4" r="1.3" fill="#fff" opacity="0.18"/><circle cx="72.5" cy="-45.8" r="1.1" fill="#fff" opacity="0.40"/><circle cx="145.2" cy="-51.0" r="1.6" fill="#fff" opacity="0.40"/><circle cx="-105.8" cy="29.8" r="1.1" fill="#fff" opacity="0.18"/><circle cx="111.3" cy="60.1" r="1.6" fill="#fff" opacity="0.32"/><circle cx="105.8" cy="64.9" r="0.9" fill="#fff" opacity="0.25"/><circle cx="-133.8" cy="23.1" r="1.3" fill="#fff" opacity="0.25"/><circle cx="-37.0" cy="59.3" r="1.6" fill="#fff" opacity="0.25"/><circle cx="160.3" cy="27.5" r="1.6" fill="#fff" opacity="0.25"/><circle cx="-193.7" cy="-13.5" r="1.1" fill="#fff" opacity="0.18"/><circle cx="20.6" cy="-62.4" r="0.9" fill="#fff" opacity="0.18"/><circle cx="-90.5" cy="73.4" r="0.9" fill="#fff" opacity="0.18"/><circle cx="-3.9" cy="67.0" r="1.6" fill="#fff" opacity="0.18"/><circle cx="7.7" cy="-54.8" r="1.1" fill="#fff" opacity="0.32"/><circle cx="-185.3" cy="24.5" r="1.1" fill="#fff" opacity="0.32"/><circle cx="137.2" cy="-32.3" r="0.9" fill="#fff" opacity="0.40"/><circle cx="-122.5" cy="19.3" r="1.1" fill="#fff" opacity="0.32"/><circle cx="37.1" cy="-60.4" r="1.3" fill="#fff" opacity="0.25"/><circle cx="2.7" cy="60.7" r="0.9" fill="#fff" opacity="0.40"/><circle cx="118.7" cy="-39.0" r="1.1" fill="#fff" opacity="0.40"/><circle cx="182.8" cy="-5.3" r="1.3" fill="#fff" opacity="0.18"/><circle cx="-25.2" cy="-55.3" r="0.9" fill="#fff" opacity="0.40"/><circle cx="-99.4" cy="75.9" r="0.9" fill="#fff" opacity="0.25"/><circle cx="126.2" cy="-11.7" r="1.1" fill="#fff" opacity="0.32"/><circle cx="10.9" cy="-75.9" r="1.3" fill="#fff" opacity="0.40"/><circle cx="117.7" cy="68.4" r="0.9" fill="#fff" opacity="0.32"/><circle cx="139.9" cy="18.9" r="0.9" fill="#fff" opacity="0.18"/><circle cx="43.8" cy="-55.1" r="1.3" fill="#fff" opacity="0.18"/><circle cx="-154.7" cy="19.4" r="1.3" fill="#fff" opacity="0.25"/><circle cx="150.2" cy="20.6" r="1.3" fill="#fff" opacity="0.18"/><circle cx="71.9" cy="64.0" r="1.1" fill="#fff" opacity="0.32"/><circle cx="-144.6" cy="23.5" r="1.3" fill="#fff" opacity="0.18"/><circle cx="197.5" cy="5.5" r="1.6" fill="#fff" opacity="0.25"/><circle cx="124.1" cy="-21.1" r="1.6" fill="#fff" opacity="0.40"/><circle cx="167.0" cy="-9.2" r="1.3" fill="#fff" opacity="0.25"/><circle cx="73.2" cy="-56.0" r="0.9" fill="#fff" opacity="0.25"/><circle cx="166.2" cy="2.7" r="1.6" fill="#fff" opacity="0.32"/><circle cx="-141.9" cy="-43.3" r="1.3" fill="#fff" opacity="0.40"/><circle cx="173.2" cy="5.4" r="1.3" fill="#fff" opacity="0.25"/><circle cx="160.4" cy="12.5" r="1.3" fill="#fff" opacity="0.40"/><circle cx="145.0" cy="32.9" r="0.9" fill="#fff" opacity="0.18"/><circle cx="-16.1" cy="56.3" r="1.6" fill="#fff" opacity="0.18"/><circle cx="-51.2" cy="63.6" r="1.1" fill="#fff" opacity="0.40"/><circle cx="12.4" cy="-75.3" r="1.1" fill="#fff" opacity="0.18"/><circle cx="91.2" cy="-71.9" r="1.1" fill="#fff" opacity="0.18"/><circle cx="94.9" cy="-71.8" r="1.1" fill="#fff" opacity="0.18"/><circle cx="149.3" cy="15.9" r="1.6" fill="#fff" opacity="0.40"/><circle cx="-122.9" cy="-18.6" r="1.6" fill="#fff" opacity="0.32"/><circle cx="136.3" cy="1.2" r="0.9" fill="#fff" opacity="0.18"/><circle cx="-7.9" cy="-80.8" r="1.3" fill="#fff" opacity="0.25"/><circle cx="-22.7" cy="-61.3" r="1.6" fill="#fff" opacity="0.40"/><circle cx="75.0" cy="-44.6" r="0.9" fill="#fff" opacity="0.25"/><circle cx="131.0" cy="30.7" r="1.3" fill="#fff" opacity="0.25"/><circle cx="132.7" cy="8.1" r="0.9" fill="#fff" opacity="0.25"/></g><g transform="translate(1351 743) rotate(66)"><ellipse rx="126" ry="56" fill="url(#ga)" opacity=".75"/><ellipse rx="110" ry="36" fill="url(#gb)"/><ellipse rx="100" ry="24" fill="url(#gc)"/><ellipse cx="4" rx="88" ry="18" fill="url(#gd)"/><ellipse cx="-10" cy="-1" rx="56" ry="11" fill="url(#gd)"/></g><ellipse cx="492" cy="880" rx="26" ry="20" fill="url(#ga)" opacity=".22"/><circle cx="1296.3" cy="422.5" r="1.1" fill="#fff" opacity="0.22"/><circle cx="907.4" cy="615.9" r="0.7" fill="#fff" opacity="0.34"/><circle cx="418.2" cy="1179.9" r="1.0" fill="#fff" opacity="0.14"/><circle cx="584.7" cy="186.3" r="1.1" fill="#fff" opacity="0.28"/><circle cx="1882.9" cy="528.3" r="0.8" fill="#fff" opacity="0.14"/><circle cx="1122.7" cy="258.2" r="1.1" fill="#fff" opacity="0.22"/><circle cx="1806.9" cy="248.1" r="1.2" fill="#fff" opacity="0.34"/><circle cx="566.2" cy="226.2" r="0.9" fill="#fff" opacity="0.18"/><circle cx="968.6" cy="1067.5" r="1.0" fill="#fff" opacity="0.14"/><circle cx="344.2" cy="1148.9" r="1.2" fill="#fff" opacity="0.28"/><circle cx="798.2" cy="903.4" r="1.0" fill="#fff" opacity="0.22"/><circle cx="744.2" cy="235.2" r="0.9" fill="#fff" opacity="0.14"/><circle cx="649.1" cy="474.8" r="1.0" fill="#fff" opacity="0.14"/><circle cx="1783.2" cy="317.7" r="0.7" fill="#fff" opacity="0.42"/><circle cx="585.2" cy="512.2" r="1.0" fill="#fff" opacity="0.28"/><circle cx="1891.8" cy="751.3" r="0.9" fill="#fff" opacity="0.28"/><circle cx="1443.7" cy="1043.4" r="0.9" fill="#fff" opacity="0.14"/><circle cx="146.1" cy="831.5" r="1.2" fill="#fff" opacity="0.18"/><circle cx="510.5" cy="394.8" r="1.1" fill="#fff" opacity="0.22"/><circle cx="400.9" cy="513.4" r="1.0" fill="#fff" opacity="0.14"/><circle cx="1547.4" cy="797.2" r="1.1" fill="#fff" opacity="0.34"/><circle cx="425.9" cy="190.8" r="1.2" fill="#fff" opacity="0.28"/><circle cx="881.9" cy="931.4" r="1.2" fill="#fff" opacity="0.50"/><circle cx="578.5" cy="156.0" r="1.1" fill="#fff" opacity="0.18"/><circle cx="365.7" cy="559.2" r="0.9" fill="#fff" opacity="0.22"/><circle cx="522.3" cy="916.1" r="1.2" fill="#fff" opacity="0.22"/><circle cx="799.6" cy="365.0" r="1.0" fill="#fff" opacity="0.34"/><circle cx="1283.7" cy="234.0" r="1.2" fill="#fff" opacity="0.18"/><circle cx="189.5" cy="653.7" r="1.0" fill="#fff" opacity="0.34"/><circle cx="456.5" cy="1100.7" r="1.0" fill="#fff" opacity="0.28"/><circle cx="308.3" cy="314.0" r="0.7" fill="#fff" opacity="0.18"/><circle cx="681.2" cy="202.4" r="0.8" fill="#fff" opacity="0.22"/><circle cx="527.2" cy="729.7" r="0.7" fill="#fff" opacity="0.42"/><circle cx="1655.5" cy="523.9" r="1.2" fill="#fff" opacity="0.34"/><circle cx="438.0" cy="399.8" r="0.7" fill="#fff" opacity="0.28"/><circle cx="562.5" cy="1168.4" r="0.8" fill="#fff" opacity="0.42"/><circle cx="978.8" cy="795.8" r="0.8" fill="#fff" opacity="0.14"/><circle cx="550.5" cy="375.8" r="1.0" fill="#fff" opacity="0.42"/><circle cx="872.7" cy="1153.2" r="0.7" fill="#fff" opacity="0.18"/><circle cx="110.4" cy="883.9" r="1.0" fill="#fff" opacity="0.34"/><circle cx="953.7" cy="182.6" r="1.1" fill="#fff" opacity="0.50"/><circle cx="913.8" cy="596.7" r="0.7" fill="#fff" opacity="0.18"/><circle cx="335.5" cy="677.6" r="1.2" fill="#fff" opacity="0.14"/><circle cx="1786.2" cy="897.4" r="1.2" fill="#fff" opacity="0.50"/><circle cx="1460.5" cy="606.0" r="1.1" fill="#fff" opacity="0.50"/><circle cx="123.9" cy="964.1" r="0.8" fill="#fff" opacity="0.34"/><circle cx="1746.4" cy="813.3" r="0.9" fill="#fff" opacity="0.18"/><circle cx="1205.6" cy="684.1" r="1.0" fill="#fff" opacity="0.42"/><circle cx="1458.8" cy="211.6" r="0.9" fill="#fff" opacity="0.34"/><circle cx="1789.9" cy="313.3" r="0.9" fill="#fff" opacity="0.18"/><circle cx="1507.9" cy="103.3" r="1.1" fill="#fff" opacity="0.22"/><circle cx="1887.3" cy="409.0" r="0.9" fill="#fff" opacity="0.42"/><circle cx="1598.0" cy="369.1" r="1.1" fill="#fff" opacity="0.18"/><circle cx="1059.1" cy="134.3" r="1.0" fill="#fff" opacity="0.42"/><circle cx="1248.3" cy="163.0" r="0.8" fill="#fff" opacity="0.28"/><circle cx="1681.8" cy="815.2" r="0.7" fill="#fff" opacity="0.22"/><circle cx="470.9" cy="569.6" r="0.9" fill="#fff" opacity="0.18"/><circle cx="959.5" cy="868.8" r="1.2" fill="#fff" opacity="0.28"/><circle cx="718.8" cy="538.8" r="0.7" fill="#fff" opacity="0.50"/><circle cx="589.4" cy="1033.4" r="0.7" fill="#fff" opacity="0.18"/><circle cx="964.6" cy="322.9" r="0.8" fill="#fff" opacity="0.18"/><circle cx="908.2" cy="394.1" r="0.9" fill="#fff" opacity="0.14"/><circle cx="1805.4" cy="648.3" r="0.8" fill="#fff" opacity="0.18"/><circle cx="945.0" cy="1105.3" r="0.7" fill="#fff" opacity="0.34"/><circle cx="320.8" cy="535.6" r="0.8" fill="#fff" opacity="0.14"/><circle cx="1846.3" cy="258.4" r="0.7" fill="#fff" opacity="0.42"/><circle cx="161.8" cy="535.4" r="1.2" fill="#fff" opacity="0.22"/><circle cx="1401.4" cy="1201.3" r="0.8" fill="#fff" opacity="0.22"/><circle cx="402.4" cy="821.0" r="1.1" fill="#fff" opacity="0.42"/><circle cx="912.8" cy="445.6" r="1.2" fill="#fff" opacity="0.28"/><circle cx="1597.5" cy="1187.5" r="1.0" fill="#fff" opacity="0.18"/><circle cx="251.8" cy="188.2" r="0.7" fill="#fff" opacity="0.22"/><circle cx="825.4" cy="1077.5" r="1.1" fill="#fff" opacity="0.50"/><circle cx="433.2" cy="495.0" r="0.9" fill="#fff" opacity="0.50"/><circle cx="1532.7" cy="198.7" r="1.2" fill="#fff" opacity="0.28"/><circle cx="411.7" cy="698.8" r="1.0" fill="#fff" opacity="0.18"/><circle cx="646.9" cy="914.5" r="1.0" fill="#fff" opacity="0.14"/><circle cx="1215.2" cy="375.3" r="1.2" fill="#fff" opacity="0.50"/><circle cx="797.0" cy="515.9" r="1.0" fill="#fff" opacity="0.14"/><circle cx="1531.6" cy="170.3" r="0.8" fill="#fff" opacity="0.42"/><circle cx="166.8" cy="769.4" r="0.9" fill="#fff" opacity="0.22"/><circle cx="668.4" cy="1153.0" r="0.7" fill="#fff" opacity="0.22"/><circle cx="1426.7" cy="861.9" r="0.9" fill="#fff" opacity="0.22"/><circle cx="58.0" cy="934.7" r="1.2" fill="#fff" opacity="0.14"/><circle cx="95.7" cy="359.7" r="1.0" fill="#fff" opacity="0.42"/><circle cx="1814.3" cy="1153.2" r="1.0" fill="#fff" opacity="0.50"/><circle cx="513.7" cy="575.8" r="1.0" fill="#fff" opacity="0.18"/><circle cx="1761.5" cy="303.6" r="1.2" fill="#fff" opacity="0.22"/><circle cx="1567.3" cy="953.6" r="1.1" fill="#fff" opacity="0.18"/><circle cx="655.1" cy="454.1" r="0.9" fill="#fff" opacity="0.50"/><circle cx="1492.7" cy="189.1" r="0.8" fill="#fff" opacity="0.28"/><circle cx="1438.6" cy="374.5" r="0.7" fill="#fff" opacity="0.42"/><circle cx="113.4" cy="711.0" r="0.9" fill="#fff" opacity="0.18"/><circle cx="1857.6" cy="1075.6" r="0.7" fill="#fff" opacity="0.22"/><circle cx="1202.1" cy="331.6" r="1.0" fill="#fff" opacity="0.28"/><circle cx="1872.7" cy="1173.3" r="0.8" fill="#fff" opacity="0.18"/><circle cx="296.0" cy="609.9" r="1.2" fill="#fff" opacity="0.18"/><circle cx="1429.5" cy="1035.4" r="1.2" fill="#fff" opacity="0.50"/><circle cx="274.3" cy="1028.6" r="0.9" fill="#fff" opacity="0.22"/><circle cx="1095.8" cy="513.0" r="1.2" fill="#fff" opacity="0.22"/><circle cx="418.1" cy="374.7" r="0.8" fill="#fff" opacity="0.18"/><circle cx="333.6" cy="1076.4" r="1.1" fill="#fff" opacity="0.18"/><circle cx="652.4" cy="538.5" r="0.8" fill="#fff" opacity="0.34"/><circle cx="1021.0" cy="817.9" r="0.7" fill="#fff" opacity="0.42"/><circle cx="906.0" cy="142.8" r="0.7" fill="#fff" opacity="0.28"/><circle cx="1678.0" cy="356.7" r="1.0" fill="#fff" opacity="0.22"/><circle cx="125.4" cy="425.6" r="0.7" fill="#fff" opacity="0.14"/><circle cx="400.4" cy="1174.2" r="1.1" fill="#fff" opacity="0.18"/><circle cx="1765.3" cy="512.2" r="0.8" fill="#fff" opacity="0.28"/><circle cx="1162.4" cy="956.0" r="1.2" fill="#fff" opacity="0.14"/><circle cx="246.0" cy="759.0" r="1.1" fill="#fff" opacity="0.22"/><circle cx="452.1" cy="508.3" r="0.8" fill="#fff" opacity="0.14"/><circle cx="426.9" cy="382.9" r="1.1" fill="#fff" opacity="0.42"/><circle cx="1252.0" cy="326.2" r="0.7" fill="#fff" opacity="0.50"/><circle cx="654.1" cy="849.5" r="0.8" fill="#fff" opacity="0.34"/><circle cx="626.4" cy="326.2" r="1.0" fill="#fff" opacity="0.34"/><circle cx="942.1" cy="551.8" r="1.0" fill="#fff" opacity="0.42"/><circle cx="1064.9" cy="806.4" r="0.7" fill="#fff" opacity="0.42"/><circle cx="352.7" cy="868.3" r="1.0" fill="#fff" opacity="0.22"/><circle cx="1281.8" cy="562.5" r="0.7" fill="#fff" opacity="0.22"/><circle cx="1424.7" cy="1075.8" r="1.0" fill="#fff" opacity="0.28"/><circle cx="84.6" cy="946.9" r="0.9" fill="#fff" opacity="0.42"/><circle cx="414.4" cy="904.3" r="0.8" fill="#fff" opacity="0.14"/><circle cx="851.2" cy="274.5" r="0.7" fill="#fff" opacity="0.50"/><circle cx="217.8" cy="738.7" r="0.9" fill="#fff" opacity="0.28"/><circle cx="1475.7" cy="245.2" r="0.7" fill="#fff" opacity="0.34"/><circle cx="313.6" cy="990.7" r="1.0" fill="#fff" opacity="0.14"/><circle cx="1106.8" cy="1123.8" r="1.2" fill="#fff" opacity="0.34"/><circle cx="367.4" cy="485.4" r="0.8" fill="#fff" opacity="0.34"/><circle cx="367.6" cy="175.9" r="1.0" fill="#fff" opacity="0.28"/><circle cx="1439.8" cy="974.9" r="0.8" fill="#fff" opacity="0.22"/><circle cx="284.4" cy="1141.3" r="1.0" fill="#fff" opacity="0.22"/><circle cx="149.4" cy="1122.6" r="1.0" fill="#fff" opacity="0.14"/><circle cx="1717.5" cy="785.6" r="0.8" fill="#fff" opacity="0.42"/><circle cx="1499.3" cy="346.7" r="1.0" fill="#fff" opacity="0.34"/><circle cx="1610.8" cy="1015.8" r="0.8" fill="#fff" opacity="0.34"/><circle cx="453.0" cy="542.5" r="1.1" fill="#fff" opacity="0.18"/><circle cx="757.9" cy="237.6" r="0.8" fill="#fff" opacity="0.42"/><circle cx="1554.2" cy="314.2" r="1.1" fill="#fff" opacity="0.50"/><circle cx="1447.0" cy="144.0" r="0.9" fill="#fff" opacity="0.14"/><circle cx="769.5" cy="604.2" r="1.2" fill="#fff" opacity="0.50"/><circle cx="615.4" cy="564.9" r="1.1" fill="#fff" opacity="0.18"/><circle cx="835.6" cy="828.0" r="1.0" fill="#fff" opacity="0.34"/><circle cx="858.9" cy="127.8" r="1.1" fill="#fff" opacity="0.28"/><circle cx="908.5" cy="594.4" r="1.1" fill="#fff" opacity="0.50"/><circle cx="1560.4" cy="1023.9" r="1.0" fill="#fff" opacity="0.28"/><circle cx="248.3" cy="243.6" r="1.0" fill="#fff" opacity="0.22"/><circle cx="220.0" cy="589.0" r="1.1" fill="#fff" opacity="0.42"/><circle cx="126.1" cy="803.4" r="0.7" fill="#fff" opacity="0.42"/><circle cx="629.2" cy="895.9" r="0.7" fill="#fff" opacity="0.14"/><circle cx="1437.0" cy="1088.1" r="1.2" fill="#fff" opacity="0.50"/><circle cx="302.0" cy="1046.5" r="1.1" fill="#fff" opacity="0.42"/><circle cx="1327.4" cy="222.8" r="0.8" fill="#fff" opacity="0.28"/><circle cx="581.6" cy="995.7" r="0.8" fill="#fff" opacity="0.42"/><circle cx="1504.0" cy="1127.5" r="0.7" fill="#fff" opacity="0.50"/><circle cx="697.7" cy="935.3" r="0.8" fill="#fff" opacity="0.22"/><circle cx="1703.3" cy="405.0" r="1.0" fill="#fff" opacity="0.18"/><circle cx="519.4" cy="1164.7" r="1.0" fill="#fff" opacity="0.18"/><circle cx="1141.8" cy="780.7" r="0.8" fill="#fff" opacity="0.22"/><circle cx="737.1" cy="321.2" r="1.0" fill="#fff" opacity="0.18"/><circle cx="1224.2" cy="408.6" r="0.9" fill="#fff" opacity="0.28"/><circle cx="362.0" cy="966.9" r="0.7" fill="#fff" opacity="0.50"/><circle cx="1029.1" cy="803.2" r="0.9" fill="#fff" opacity="0.50"/><circle cx="886.0" cy="676.6" r="1.2" fill="#fff" opacity="0.14"/><circle cx="515.5" cy="692.3" r="1.0" fill="#fff" opacity="0.42"/><circle cx="1521.1" cy="393.8" r="0.9" fill="#fff" opacity="0.34"/><circle cx="320.4" cy="466.6" r="0.7" fill="#fff" opacity="0.28"/><circle cx="475.0" cy="780.1" r="0.7" fill="#fff" opacity="0.22"/><circle cx="1561.9" cy="381.5" r="1.2" fill="#fff" opacity="0.50"/><circle cx="1130.8" cy="833.4" r="0.9" fill="#fff" opacity="0.42"/><circle cx="54.3" cy="139.2" r="0.8" fill="#fff" opacity="0.22"/><circle cx="1186.4" cy="578.3" r="1.1" fill="#fff" opacity="0.22"/><circle cx="1701.5" cy="247.5" r="0.8" fill="#fff" opacity="0.34"/><circle cx="1254.7" cy="126.6" r="0.7" fill="#fff" opacity="0.34"/><circle cx="705.2" cy="219.2" r="0.9" fill="#fff" opacity="0.34"/><circle cx="464.3" cy="745.1" r="1.1" fill="#fff" opacity="0.18"/><circle cx="427.3" cy="789.6" r="1.0" fill="#fff" opacity="0.18"/><circle cx="299.3" cy="1134.1" r="0.8" fill="#fff" opacity="0.42"/><circle cx="326.2" cy="207.6" r="1.2" fill="#fff" opacity="0.18"/><circle cx="1656.8" cy="963.9" r="1.0" fill="#fff" opacity="0.50"/><circle cx="538.0" cy="114.7" r="1.2" fill="#fff" opacity="0.50"/><circle cx="1087.4" cy="488.1" r="1.2" fill="#fff" opacity="0.34"/><circle cx="868.8" cy="1134.7" r="1.2" fill="#fff" opacity="0.28"/><circle cx="509.0" cy="1097.7" r="0.7" fill="#fff" opacity="0.14"/><circle cx="1030.6" cy="549.4" r="0.8" fill="#fff" opacity="0.18"/><circle cx="158.6" cy="960.3" r="0.7" fill="#fff" opacity="0.34"/><circle cx="1066.4" cy="1138.9" r="0.8" fill="#fff" opacity="0.28"/><circle cx="418.7" cy="772.1" r="1.1" fill="#fff" opacity="0.42"/><circle cx="1233.4" cy="998.3" r="0.8" fill="#fff" opacity="0.34"/><circle cx="621.2" cy="432.9" r="0.7" fill="#fff" opacity="0.42"/><circle cx="1494.0" cy="890.4" r="0.7" fill="#fff" opacity="0.28"/><circle cx="1607.3" cy="923.2" r="1.0" fill="#fff" opacity="0.14"/><circle cx="1418.1" cy="600.6" r="0.8" fill="#fff" opacity="0.14"/><circle cx="532.8" cy="811.7" r="0.7" fill="#fff" opacity="0.22"/><circle cx="1693.6" cy="1121.5" r="0.9" fill="#fff" opacity="0.42"/><circle cx="147.8" cy="802.7" r="1.2" fill="#fff" opacity="0.28"/><circle cx="1314.8" cy="1112.8" r="0.9" fill="#fff" opacity="0.22"/><circle cx="1234.2" cy="1165.6" r="0.8" fill="#fff" opacity="0.14"/><circle cx="1672.9" cy="118.8" r="0.9" fill="#fff" opacity="0.18"/><circle cx="1602.3" cy="325.5" r="0.8" fill="#fff" opacity="0.42"/><circle cx="1737.3" cy="313.5" r="1.0" fill="#fff" opacity="0.22"/><circle cx="1159.1" cy="520.2" r="1.2" fill="#fff" opacity="0.42"/><circle cx="1860.2" cy="1029.4" r="1.1" fill="#fff" opacity="0.28"/><circle cx="921.2" cy="686.7" r="0.7" fill="#fff" opacity="0.50"/><circle cx="99.9" cy="1155.2" r="0.8" fill="#fff" opacity="0.34"/><circle cx="1681.6" cy="971.7" r="1.0" fill="#fff" opacity="0.34"/><circle cx="1129.8" cy="724.9" r="0.8" fill="#fff" opacity="0.18"/><circle cx="111.7" cy="225.3" r="1.1" fill="#fff" opacity="0.18"/><circle cx="686.6" cy="258.3" r="0.7" fill="#fff" opacity="0.14"/><circle cx="127.8" cy="865.3" r="1.2" fill="#fff" opacity="0.14"/><circle cx="1335.6" cy="913.9" r="0.7" fill="#fff" opacity="0.50"/><circle cx="1139.2" cy="502.5" r="1.1" fill="#fff" opacity="0.42"/><circle cx="172.5" cy="1058.3" r="1.2" fill="#fff" opacity="0.28"/><circle cx="248.4" cy="328.7" r="0.7" fill="#fff" opacity="0.14"/><circle cx="114.4" cy="1036.2" r="1.2" fill="#fff" opacity="0.14"/><circle cx="1571.6" cy="798.0" r="0.9" fill="#fff" opacity="0.28"/><circle cx="235.1" cy="209.8" r="1.2" fill="#fff" opacity="0.18"/><circle cx="593.7" cy="472.8" r="0.9" fill="#fff" opacity="0.14"/><circle cx="697.7" cy="1127.0" r="0.7" fill="#fff" opacity="0.42"/><circle cx="1451.4" cy="1105.2" r="1.1" fill="#fff" opacity="0.34"/><circle cx="928.4" cy="419.0" r="1.2" fill="#fff" opacity="0.14"/><circle cx="1505.2" cy="136.4" r="1.1" fill="#fff" opacity="0.50"/><circle cx="232.2" cy="618.8" r="0.7" fill="#fff" opacity="0.34"/><circle cx="1094.3" cy="889.3" r="0.7" fill="#fff" opacity="0.34"/><circle cx="1561.9" cy="289.7" r="0.7" fill="#fff" opacity="0.34"/><circle cx="423.4" cy="941.9" r="0.7" fill="#fff" opacity="0.14"/><circle cx="692.0" cy="207.4" r="1.2" fill="#fff" opacity="0.50"/><circle cx="1572.1" cy="1167.8" r="1.1" fill="#fff" opacity="0.22"/><circle cx="1815.1" cy="669.7" r="1.1" fill="#fff" opacity="0.18"/><circle cx="573.9" cy="338.6" r="1.2" fill="#fff" opacity="0.18"/><circle cx="969.4" cy="223.1" r="1.2" fill="#fff" opacity="0.50"/><circle cx="200.1" cy="970.3" r="1.2" fill="#fff" opacity="0.34"/><circle cx="1501.3" cy="794.0" r="0.9" fill="#fff" opacity="0.14"/><circle cx="790.5" cy="536.8" r="1.2" fill="#fff" opacity="0.14"/><circle cx="829.0" cy="813.7" r="0.9" fill="#fff" opacity="0.18"/><circle cx="609.7" cy="573.7" r="1.1" fill="#fff" opacity="0.34"/><circle cx="366.3" cy="1184.6" r="1.2" fill="#fff" opacity="0.18"/><circle cx="1790.6" cy="241.8" r="1.1" fill="#fff" opacity="0.50"/><circle cx="1321.3" cy="769.1" r="0.7" fill="#fff" opacity="0.22"/><circle cx="1122.9" cy="676.9" r="1.0" fill="#fff" opacity="0.42"/><circle cx="1071.5" cy="458.3" r="1.0" fill="#fff" opacity="0.28"/><circle cx="1320.9" cy="385.4" r="0.8" fill="#fff" opacity="0.18"/><circle cx="666.7" cy="810.3" r="1.2" fill="#fff" opacity="0.18"/><circle cx="986.7" cy="396.8" r="1.2" fill="#fff" opacity="0.50"/><circle cx="1605.9" cy="272.4" r="0.8" fill="#fff" opacity="0.18"/><circle cx="1383.8" cy="766.4" r="0.9" fill="#fff" opacity="0.18"/><circle cx="486.3" cy="1155.3" r="0.9" fill="#fff" opacity="0.42"/><circle cx="1884.6" cy="283.4" r="1.2" fill="#fff" opacity="0.14"/><circle cx="411.2" cy="268.4" r="0.8" fill="#fff" opacity="0.50"/><circle cx="607.8" cy="429.7" r="0.9" fill="#fff" opacity="0.18"/><circle cx="252.4" cy="1106.4" r="0.9" fill="#fff" opacity="0.18"/><circle cx="1682.5" cy="613.2" r="0.7" fill="#fff" opacity="0.28"/><circle cx="1625.5" cy="583.1" r="0.8" fill="#fff" opacity="0.34"/><circle cx="1858.8" cy="428.4" r="0.7" fill="#fff" opacity="0.18"/><circle cx="525.0" cy="915.5" r="0.7" fill="#fff" opacity="0.42"/><circle cx="497.5" cy="1041.9" r="1.2" fill="#fff" opacity="0.34"/><circle cx="1133.6" cy="815.2" r="0.8" fill="#fff" opacity="0.42"/><circle cx="1382.1" cy="1071.8" r="1.2" fill="#fff" opacity="0.42"/><circle cx="1126.9" cy="353.9" r="0.8" fill="#fff" opacity="0.42"/><circle cx="279.9" cy="578.6" r="0.9" fill="#fff" opacity="0.42"/><circle cx="1342.3" cy="1088.0" r="0.8" fill="#fff" opacity="0.50"/><circle cx="788.4" cy="887.3" r="0.8" fill="#fff" opacity="0.22"/><circle cx="1616.5" cy="634.0" r="0.7" fill="#fff" opacity="0.34"/><circle cx="1633.3" cy="673.1" r="1.2" fill="#fff" opacity="0.50"/><circle cx="388.4" cy="823.2" r="0.7" fill="#fff" opacity="0.28"/><circle cx="1584.1" cy="1102.8" r="0.7" fill="#fff" opacity="0.14"/><circle cx="514.0" cy="342.1" r="1.2" fill="#fff" opacity="0.50"/><circle cx="1804.3" cy="322.2" r="0.9" fill="#fff" opacity="0.14"/><circle cx="1612.3" cy="605.4" r="0.8" fill="#fff" opacity="0.42"/><circle cx="927.8" cy="119.7" r="0.9" fill="#fff" opacity="0.34"/><circle cx="682.9" cy="919.8" r="1.0" fill="#fff" opacity="0.18"/><circle cx="1876.1" cy="304.6" r="1.1" fill="#fff" opacity="0.50"/><circle cx="1770.0" cy="905.5" r="1.1" fill="#fff" opacity="0.22"/><circle cx="1226.0" cy="380.2" r="1.0" fill="#fff" opacity="0.28"/><circle cx="164.4" cy="184.9" r="1.0" fill="#fff" opacity="0.42"/><circle cx="1337.9" cy="490.0" r="0.9" fill="#fff" opacity="0.14"/><circle cx="464.6" cy="919.1" r="1.1" fill="#fff" opacity="0.18"/><circle cx="1883.4" cy="1160.9" r="1.0" fill="#fff" opacity="0.18"/><circle cx="354.2" cy="1126.2" r="0.7" fill="#fff" opacity="0.50"/><circle cx="1522.4" cy="314.9" r="1.2" fill="#fff" opacity="0.34"/><circle cx="1379.3" cy="999.7" r="0.8" fill="#fff" opacity="0.22"/><circle cx="1278.5" cy="1017.4" r="1.0" fill="#fff" opacity="0.28"/><circle cx="1886.9" cy="939.4" r="1.2" fill="#fff" opacity="0.18"/><circle cx="1488.3" cy="619.3" r="0.8" fill="#fff" opacity="0.22"/><circle cx="1348.8" cy="859.6" r="1.0" fill="#fff" opacity="0.42"/><circle cx="393.6" cy="105.0" r="1.2" fill="#fff" opacity="0.50"/><circle cx="569.3" cy="372.0" r="0.9" fill="#fff" opacity="0.22"/><circle cx="934.8" cy="574.2" r="1.2" fill="#fff" opacity="0.14"/><circle cx="1266.0" cy="501.4" r="0.9" fill="#fff" opacity="0.50"/><circle cx="760.8" cy="196.0" r="1.1" fill="#fff" opacity="0.22"/><circle cx="1496.0" cy="256.7" r="0.9" fill="#fff" opacity="0.42"/><circle cx="1124.5" cy="826.3" r="0.8" fill="#fff" opacity="0.14"/><circle cx="1259.9" cy="377.5" r="0.7" fill="#fff" opacity="0.34"/><circle cx="314.1" cy="359.5" r="1.0" fill="#fff" opacity="0.22"/><circle cx="1497.5" cy="331.8" r="1.0" fill="#fff" opacity="0.50"/><circle cx="1036.1" cy="773.7" r="1.2" fill="#fff" opacity="0.34"/><circle cx="1851.9" cy="201.6" r="1.1" fill="#fff" opacity="0.50"/><circle cx="1224.2" cy="429.3" r="1.0" fill="#fff" opacity="0.42"/><circle cx="443.7" cy="188.6" r="1.0" fill="#fff" opacity="0.42"/><circle cx="1677.8" cy="713.7" r="0.9" fill="#fff" opacity="0.28"/><circle cx="482.6" cy="255.6" r="1.0" fill="#fff" opacity="0.34"/><circle cx="158.7" cy="616.7" r="0.8" fill="#fff" opacity="0.42"/><circle cx="956.6" cy="651.0" r="1.1" fill="#fff" opacity="0.34"/><circle cx="1641.3" cy="109.3" r="0.9" fill="#fff" opacity="0.28"/><circle cx="1333.5" cy="650.4" r="0.9" fill="#fff" opacity="0.50"/><circle cx="909.4" cy="571.2" r="1.2" fill="#fff" opacity="0.14"/><circle cx="383.7" cy="499.1" r="1.2" fill="#fff" opacity="0.14"/><circle cx="88.9" cy="152.5" r="1.2" fill="#fff" opacity="0.22"/><circle cx="1541.2" cy="205.6" r="1.0" fill="#fff" opacity="0.28"/><circle cx="1446.5" cy="261.2" r="0.8" fill="#fff" opacity="0.42"/><circle cx="816.9" cy="241.8" r="0.7" fill="#fff" opacity="0.50"/><circle cx="1265.6" cy="478.1" r="1.1" fill="#fff" opacity="0.34"/><circle cx="1471.2" cy="334.2" r="1.0" fill="#fff" opacity="0.22"/><circle cx="829.5" cy="712.5" r="0.9" fill="#fff" opacity="0.22"/><circle cx="705.6" cy="646.1" r="0.9" fill="#fff" opacity="0.34"/><circle cx="1865.0" cy="1064.0" r="0.9" fill="#fff" opacity="0.18"/><circle cx="1257.4" cy="974.7" r="0.9" fill="#fff" opacity="0.18"/><circle cx="635.4" cy="431.7" r="1.1" fill="#fff" opacity="0.42"/><circle cx="212.4" cy="1200.1" r="1.0" fill="#fff" opacity="0.42"/><circle cx="1072.6" cy="549.4" r="1.1" fill="#fff" opacity="0.14"/><circle cx="785.4" cy="221.6" r="0.7" fill="#fff" opacity="0.18"/><circle cx="1565.9" cy="625.5" r="1.2" fill="#fff" opacity="0.14"/><circle cx="1505.2" cy="1104.6" r="1.1" fill="#fff" opacity="0.28"/><circle cx="1187.6" cy="792.7" r="1.2" fill="#fff" opacity="0.42"/><circle cx="1150.0" cy="852.4" r="0.8" fill="#fff" opacity="0.14"/><circle cx="1280.3" cy="606.6" r="0.8" fill="#fff" opacity="0.14"/><circle cx="1274.1" cy="1059.9" r="1.0" fill="#fff" opacity="0.50"/><circle cx="236.4" cy="1127.4" r="0.7" fill="#fff" opacity="0.22"/><circle cx="1658.0" cy="254.8" r="0.9" fill="#fff" opacity="0.34"/><circle cx="1359.8" cy="1052.4" r="0.8" fill="#fff" opacity="0.28"/><circle cx="114.1" cy="124.5" r="1.1" fill="#fff" opacity="0.42"/><circle cx="1116.8" cy="1109.0" r="1.0" fill="#fff" opacity="0.34"/><circle cx="1013.3" cy="1010.9" r="1.0" fill="#fff" opacity="0.34"/><circle cx="1333.2" cy="547.9" r="0.7" fill="#fff" opacity="0.14"/><circle cx="1304.2" cy="756.4" r="1.2" fill="#fff" opacity="0.18"/><circle cx="927.3" cy="556.5" r="0.7" fill="#fff" opacity="0.14"/><circle cx="1238.8" cy="335.9" r="0.8" fill="#fff" opacity="0.42"/><circle cx="79.6" cy="107.3" r="1.2" fill="#fff" opacity="0.42"/><circle cx="275.2" cy="1166.9" r="0.7" fill="#fff" opacity="0.18"/><circle cx="1653.6" cy="244.1" r="0.7" fill="#fff" opacity="0.22"/><circle cx="1376.8" cy="369.0" r="1.2" fill="#fff" opacity="0.42"/><circle cx="396.4" cy="157.3" r="1.2" fill="#fff" opacity="0.42"/><circle cx="1331.6" cy="261.6" r="0.7" fill="#fff" opacity="0.22"/><circle cx="1209.6" cy="883.6" r="1.0" fill="#fff" opacity="0.42"/><circle cx="1769.3" cy="382.0" r="0.7" fill="#fff" opacity="0.42"/><circle cx="109.9" cy="168.7" r="1.2" fill="#fff" opacity="0.42"/><circle cx="1557.4" cy="189.8" r="0.9" fill="#fff" opacity="0.22"/><circle cx="1395.4" cy="284.9" r="1.0" fill="#fff" opacity="0.34"/><circle cx="161.2" cy="507.1" r="1.1" fill="#fff" opacity="0.42"/><circle cx="859.6" cy="847.9" r="0.8" fill="#fff" opacity="0.50"/><circle cx="266.1" cy="1153.2" r="0.8" fill="#fff" opacity="0.42"/><circle cx="1528.8" cy="627.6" r="1.0" fill="#fff" opacity="0.22"/><circle cx="1497.1" cy="726.6" r="0.9" fill="#fff" opacity="0.22"/><circle cx="162.8" cy="1175.3" r="1.2" fill="#fff" opacity="0.50"/><circle cx="1575.9" cy="467.9" r="1.1" fill="#fff" opacity="0.42"/><circle cx="1852.4" cy="1018.1" r="1.1" fill="#fff" opacity="0.50"/><circle cx="619.7" cy="574.3" r="0.8" fill="#fff" opacity="0.28"/><circle cx="764.9" cy="516.6" r="0.8" fill="#fff" opacity="0.50"/><circle cx="882.7" cy="860.8" r="0.9" fill="#fff" opacity="0.22"/><circle cx="545.0" cy="275.3" r="0.7" fill="#fff" opacity="0.22"/><circle cx="1586.6" cy="996.6" r="1.1" fill="#fff" opacity="0.18"/><circle cx="555.7" cy="1040.0" r="1.1" fill="#fff" opacity="0.42"/><circle cx="1483.1" cy="653.0" r="1.1" fill="#fff" opacity="0.14"/><circle cx="1046.2" cy="636.2" r="1.0" fill="#fff" opacity="0.18"/><circle cx="1502.7" cy="897.9" r="0.8" fill="#fff" opacity="0.22"/><circle cx="1169.5" cy="848.8" r="1.0" fill="#fff" opacity="0.42"/><circle cx="431.7" cy="382.7" r="0.7" fill="#fff" opacity="0.50"/><circle cx="760.5" cy="697.7" r="1.1" fill="#fff" opacity="0.50"/><circle cx="705.5" cy="171.0" r="1.0" fill="#fff" opacity="0.34"/><circle cx="1011.3" cy="388.0" r="1.1" fill="#fff" opacity="0.22"/><circle cx="929.3" cy="751.4" r="0.8" fill="#fff" opacity="0.18"/><circle cx="405.4" cy="301.1" r="1.2" fill="#fff" opacity="0.22"/><circle cx="719.7" cy="724.0" r="1.0" fill="#fff" opacity="0.50"/><circle cx="1004.2" cy="266.2" r="0.7" fill="#fff" opacity="0.28"/><circle cx="740.4" cy="218.9" r="1.2" fill="#fff" opacity="0.28"/><circle cx="1502.1" cy="274.1" r="1.1" fill="#fff" opacity="0.14"/><circle cx="686.7" cy="674.4" r="0.7" fill="#fff" opacity="0.14"/><circle cx="112.9" cy="1193.4" r="1.1" fill="#fff" opacity="0.28"/><circle cx="1132.3" cy="337.4" r="0.9" fill="#fff" opacity="0.28"/><circle cx="230.0" cy="594.4" r="1.1" fill="#fff" opacity="0.50"/><circle cx="1172.9" cy="246.3" r="0.7" fill="#fff" opacity="0.22"/><circle cx="421.4" cy="301.2" r="0.7" fill="#fff" opacity="0.14"/><circle cx="145.0" cy="716.2" r="1.2" fill="#fff" opacity="0.28"/><circle cx="948.2" cy="1033.9" r="0.7" fill="#fff" opacity="0.50"/><circle cx="1153.2" cy="539.9" r="0.7" fill="#fff" opacity="0.42"/><circle cx="1819.0" cy="385.4" r="1.1" fill="#fff" opacity="0.18"/><circle cx="1231.7" cy="1156.0" r="1.2" fill="#fff" opacity="0.34"/><circle cx="775.5" cy="596.1" r="0.8" fill="#fff" opacity="0.22"/><circle cx="1830.9" cy="1194.9" r="0.8" fill="#fff" opacity="0.18"/><circle cx="122.2" cy="384.0" r="0.9" fill="#fff" opacity="0.14"/><circle cx="1714.8" cy="1098.8" r="0.7" fill="#fff" opacity="0.22"/><circle cx="1500.3" cy="884.0" r="1.2" fill="#fff" opacity="0.50"/><circle cx="1867.1" cy="163.5" r="0.8" fill="#fff" opacity="0.22"/><circle cx="1442.4" cy="1137.2" r="1.2" fill="#fff" opacity="0.42"/><circle cx="601.7" cy="753.8" r="1.2" fill="#fff" opacity="0.14"/><circle cx="918.5" cy="511.6" r="1.0" fill="#fff" opacity="0.14"/><circle cx="742.1" cy="520.4" r="1.0" fill="#fff" opacity="0.18"/><circle cx="1539.3" cy="1109.6" r="0.7" fill="#fff" opacity="0.28"/><circle cx="1372.8" cy="317.0" r="0.7" fill="#fff" opacity="0.18"/><circle cx="1760.7" cy="345.0" r="1.1" fill="#fff" opacity="0.50"/><circle cx="738.6" cy="927.5" r="1.0" fill="#fff" opacity="0.14"/><circle cx="1757.5" cy="526.4" r="0.7" fill="#fff" opacity="0.42"/><circle cx="189.5" cy="1173.5" r="0.9" fill="#fff" opacity="0.50"/><circle cx="482.0" cy="229.4" r="0.9" fill="#fff" opacity="0.18"/><circle cx="662.8" cy="913.1" r="0.8" fill="#fff" opacity="0.42"/><circle cx="882.9" cy="1082.0" r="1.0" fill="#fff" opacity="0.50"/><circle cx="326.3" cy="562.9" r="0.8" fill="#fff" opacity="0.18"/><circle cx="97.8" cy="731.2" r="0.9" fill="#fff" opacity="0.22"/><circle cx="1533.0" cy="389.3" r="0.7" fill="#fff" opacity="0.22"/><circle cx="891.7" cy="633.6" r="0.8" fill="#fff" opacity="0.34"/><circle cx="155.8" cy="1088.3" r="1.2" fill="#fff" opacity="0.18"/><circle cx="1083.0" cy="1022.5" r="0.7" fill="#fff" opacity="0.22"/><circle cx="1442.2" cy="1171.7" r="1.0" fill="#fff" opacity="0.22"/><circle cx="1890.5" cy="1121.4" r="0.7" fill="#fff" opacity="0.28"/><circle cx="584.4" cy="1089.6" r="0.7" fill="#fff" opacity="0.50"/><circle cx="1389.9" cy="425.5" r="1.2" fill="#fff" opacity="0.14"/><circle cx="865.8" cy="661.6" r="1.1" fill="#fff" opacity="0.18"/><circle cx="867.5" cy="972.1" r="1.1" fill="#fff" opacity="0.22"/><circle cx="393.5" cy="581.6" r="1.0" fill="#fff" opacity="0.18"/><circle cx="561.2" cy="301.1" r="0.8" fill="#fff" opacity="0.34"/><circle cx="1470.9" cy="886.2" r="0.8" fill="#fff" opacity="0.34"/><circle cx="197.1" cy="198.3" r="1.1" fill="#fff" opacity="0.42"/><circle cx="964.2" cy="403.8" r="0.8" fill="#fff" opacity="0.18"/><circle cx="1179.7" cy="881.9" r="0.8" fill="#fff" opacity="0.34"/><circle cx="618.7" cy="113.1" r="1.2" fill="#fff" opacity="0.42"/><circle cx="1008.6" cy="1028.9" r="0.7" fill="#fff" opacity="0.34"/><circle cx="1545.0" cy="471.4" r="1.2" fill="#fff" opacity="0.50"/><circle cx="1793.8" cy="201.5" r="1.0" fill="#fff" opacity="0.50"/><circle cx="929.4" cy="1063.0" r="0.9" fill="#fff" opacity="0.18"/><circle cx="393.9" cy="1018.4" r="0.9" fill="#fff" opacity="0.14"/><circle cx="352.3" cy="511.0" r="1.1" fill="#fff" opacity="0.50"/><circle cx="59.6" cy="674.8" r="1.0" fill="#fff" opacity="0.34"/><circle cx="182.5" cy="495.1" r="0.8" fill="#fff" opacity="0.50"/><circle cx="1580.8" cy="1107.6" r="1.2" fill="#fff" opacity="0.50"/><circle cx="753.9" cy="930.0" r="0.7" fill="#fff" opacity="0.22"/><circle cx="1659.6" cy="1153.4" r="1.0" fill="#fff" opacity="0.28"/><circle cx="997.0" cy="686.6" r="1.1" fill="#fff" opacity="0.18"/><circle cx="89.1" cy="1168.1" r="0.8" fill="#fff" opacity="0.34"/><circle cx="387.2" cy="215.1" r="0.9" fill="#fff" opacity="0.34"/><circle cx="1557.0" cy="135.1" r="0.7" fill="#fff" opacity="0.42"/><circle cx="1412.5" cy="390.1" r="1.1" fill="#fff" opacity="0.42"/><circle cx="1113.5" cy="678.2" r="1.2" fill="#fff" opacity="0.28"/><circle cx="240.6" cy="1060.2" r="1.2" fill="#fff" opacity="0.18"/><circle cx="134.2" cy="237.6" r="1.0" fill="#fff" opacity="0.34"/><circle cx="973.9" cy="410.1" r="0.7" fill="#fff" opacity="0.14"/><circle cx="798.6" cy="252.9" r="1.1" fill="#fff" opacity="0.18"/><circle cx="1638.0" cy="264.2" r="1.1" fill="#fff" opacity="0.28"/><circle cx="1426.9" cy="283.1" r="0.7" fill="#fff" opacity="0.42"/><circle cx="767.5" cy="565.4" r="1.1" fill="#fff" opacity="0.34"/><circle cx="117.7" cy="1171.5" r="0.7" fill="#fff" opacity="0.50"/><circle cx="720.5" cy="543.6" r="0.9" fill="#fff" opacity="0.42"/><circle cx="853.8" cy="1183.3" r="0.9" fill="#fff" opacity="0.50"/><circle cx="789.3" cy="720.3" r="0.9" fill="#fff" opacity="0.34"/><circle cx="321.2" cy="851.5" r="0.9" fill="#fff" opacity="0.18"/><circle cx="1655.3" cy="832.8" r="0.7" fill="#fff" opacity="0.22"/><circle cx="251.9" cy="308.6" r="0.9" fill="#fff" opacity="0.28"/><circle cx="421.0" cy="839.4" r="0.8" fill="#fff" opacity="0.18"/><circle cx="826.4" cy="539.6" r="1.0" fill="#fff" opacity="0.42"/><circle cx="137.2" cy="1182.2" r="0.7" fill="#fff" opacity="0.14"/><circle cx="1646.3" cy="786.3" r="1.2" fill="#fff" opacity="0.34"/><circle cx="554.9" cy="699.6" r="0.7" fill="#fff" opacity="0.34"/><circle cx="236.2" cy="236.1" r="0.7" fill="#fff" opacity="0.28"/><circle cx="487.2" cy="145.4" r="0.7" fill="#fff" opacity="0.22"/><circle cx="691.5" cy="286.0" r="0.7" fill="#fff" opacity="0.34"/><circle cx="1818.6" cy="1117.0" r="0.9" fill="#fff" opacity="0.14"/><circle cx="910.6" cy="690.3" r="0.8" fill="#fff" opacity="0.28"/><circle cx="279.4" cy="246.8" r="0.9" fill="#fff" opacity="0.28"/><circle cx="1115.0" cy="404.1" r="1.2" fill="#fff" opacity="0.14"/><circle cx="1415.6" cy="418.5" r="1.0" fill="#fff" opacity="0.34"/><circle cx="1331.6" cy="346.2" r="1.0" fill="#fff" opacity="0.18"/><circle cx="1062.0" cy="506.2" r="1.1" fill="#fff" opacity="0.22"/><circle cx="1180.4" cy="618.8" r="0.9" fill="#fff" opacity="0.14"/><circle cx="497.5" cy="346.2" r="1.1" fill="#fff" opacity="0.34"/><circle cx="757.2" cy="747.4" r="0.7" fill="#fff" opacity="0.22"/><circle cx="350.1" cy="1151.2" r="0.9" fill="#fff" opacity="0.34"/><circle cx="650.9" cy="399.5" r="0.8" fill="#fff" opacity="0.22"/><circle cx="155.9" cy="126.0" r="1.1" fill="#fff" opacity="0.14"/><circle cx="1167.7" cy="485.5" r="1.2" fill="#fff" opacity="0.14"/><circle cx="1003.8" cy="1021.4" r="0.9" fill="#fff" opacity="0.42"/><circle cx="1456.9" cy="676.1" r="1.2" fill="#fff" opacity="0.42"/><circle cx="1772.3" cy="561.3" r="1.2" fill="#fff" opacity="0.22"/><circle cx="309.6" cy="325.1" r="1.1" fill="#fff" opacity="0.50"/><circle cx="561.0" cy="1026.5" r="0.7" fill="#fff" opacity="0.42"/><circle cx="1629.1" cy="1118.1" r="1.0" fill="#fff" opacity="0.22"/><circle cx="1497.6" cy="882.8" r="1.2" fill="#fff" opacity="0.18"/><circle cx="812.2" cy="215.9" r="1.0" fill="#fff" opacity="0.50"/><circle cx="1064.6" cy="231.4" r="1.0" fill="#fff" opacity="0.34"/><circle cx="326.8" cy="1038.6" r="0.9" fill="#fff" opacity="0.50"/><circle cx="1196.2" cy="224.4" r="1.0" fill="#fff" opacity="0.42"/><circle cx="894.9" cy="898.8" r="0.9" fill="#fff" opacity="0.22"/><circle cx="771.0" cy="714.0" r="1.0" fill="#fff" opacity="0.42"/><circle cx="644.4" cy="969.4" r="1.0" fill="#fff" opacity="0.28"/><circle cx="869.3" cy="305.0" r="0.9" fill="#fff" opacity="0.50"/><circle cx="318.2" cy="736.1" r="1.1" fill="#fff" opacity="0.18"/><circle cx="213.1" cy="1116.0" r="0.9" fill="#fff" opacity="0.50"/><circle cx="1171.7" cy="369.4" r="0.9" fill="#fff" opacity="0.18"/><circle cx="1842.6" cy="1084.2" r="0.7" fill="#fff" opacity="0.14"/><circle cx="138.4" cy="724.6" r="1.0" fill="#fff" opacity="0.22"/><circle cx="1747.1" cy="954.4" r="1.1" fill="#fff" opacity="0.34"/><circle cx="1890.9" cy="672.2" r="1.1" fill="#fff" opacity="0.42"/><circle cx="1313.9" cy="531.2" r="0.9" fill="#fff" opacity="0.14"/><circle cx="1147.1" cy="488.9" r="0.7" fill="#fff" opacity="0.42"/><circle cx="176.8" cy="354.7" r="1.0" fill="#fff" opacity="0.22"/><circle cx="974.2" cy="816.7" r="1.1" fill="#fff" opacity="0.18"/><circle cx="1672.5" cy="1164.8" r="1.0" fill="#fff" opacity="0.28"/><circle cx="862.2" cy="790.3" r="1.1" fill="#fff" opacity="0.22"/><circle cx="1325.6" cy="924.6" r="0.7" fill="#fff" opacity="0.18"/><circle cx="719.5" cy="506.1" r="0.7" fill="#fff" opacity="0.50"/><circle cx="623.5" cy="295.5" r="1.2" fill="#fff" opacity="0.22"/><circle cx="1322.5" cy="1006.3" r="1.1" fill="#fff" opacity="0.28"/><circle cx="1214.1" cy="679.5" r="1.1" fill="#fff" opacity="0.18"/><circle cx="981.5" cy="309.3" r="0.8" fill="#fff" opacity="0.14"/><circle cx="1212.3" cy="766.6" r="0.9" fill="#fff" opacity="0.34"/><circle cx="1882.5" cy="803.4" r="0.7" fill="#fff" opacity="0.42"/><circle cx="809.2" cy="970.0" r="0.9" fill="#fff" opacity="0.42"/><circle cx="1324.0" cy="106.3" r="0.9" fill="#fff" opacity="0.28"/><circle cx="1603.1" cy="748.0" r="1.2" fill="#fff" opacity="0.14"/><circle cx="413.4" cy="650.6" r="1.1" fill="#fff" opacity="0.34"/><circle cx="541.3" cy="814.8" r="1.1" fill="#fff" opacity="0.34"/><circle cx="1888.7" cy="735.1" r="1.0" fill="#fff" opacity="0.34"/><circle cx="274.9" cy="274.8" r="1.1" fill="#fff" opacity="0.14"/><circle cx="104.5" cy="185.9" r="1.1" fill="#fff" opacity="0.28"/><circle cx="1568.0" cy="777.5" r="0.7" fill="#fff" opacity="0.42"/><circle cx="74.0" cy="951.2" r="0.9" fill="#fff" opacity="0.18"/><circle cx="1369.6" cy="491.9" r="0.8" fill="#fff" opacity="0.14"/><circle cx="542.4" cy="211.6" r="1.1" fill="#fff" opacity="0.14"/><circle cx="694.0" cy="597.7" r="1.0" fill="#fff" opacity="0.14"/><circle cx="151.8" cy="1083.4" r="1.1" fill="#fff" opacity="0.50"/><circle cx="1819.6" cy="586.5" r="1.1" fill="#fff" opacity="0.18"/><circle cx="510.5" cy="150.5" r="1.1" fill="#fff" opacity="0.50"/><circle cx="370.8" cy="108.8" r="1.0" fill="#fff" opacity="0.22"/><circle cx="822.1" cy="379.7" r="1.0" fill="#fff" opacity="0.14"/><circle cx="498.7" cy="531.6" r="1.2" fill="#fff" opacity="0.34"/><circle cx="459.0" cy="442.7" r="1.2" fill="#fff" opacity="0.28"/><circle cx="92.3" cy="1058.8" r="0.7" fill="#fff" opacity="0.18"/><circle cx="364.2" cy="519.7" r="0.7" fill="#fff" opacity="0.22"/><circle cx="780.9" cy="502.0" r="0.9" fill="#fff" opacity="0.34"/><circle cx="1657.1" cy="472.1" r="1.2" fill="#fff" opacity="0.14"/><circle cx="1822.5" cy="567.3" r="0.9" fill="#fff" opacity="0.34"/><circle cx="502.4" cy="312.7" r="0.9" fill="#fff" opacity="0.22"/><circle cx="488.1" cy="140.5" r="1.2" fill="#fff" opacity="0.14"/><circle cx="680.2" cy="273.8" r="1.2" fill="#fff" opacity="0.18"/><circle cx="221.7" cy="399.2" r="0.8" fill="#fff" opacity="0.34"/><circle cx="868.0" cy="1023.6" r="0.8" fill="#fff" opacity="0.18"/><circle cx="729.1" cy="340.6" r="1.0" fill="#fff" opacity="0.28"/><circle cx="1210.9" cy="742.0" r="0.9" fill="#fff" opacity="0.28"/><circle cx="981.4" cy="352.5" r="1.0" fill="#fff" opacity="0.42"/><circle cx="292.3" cy="880.5" r="0.9" fill="#fff" opacity="0.34"/><circle cx="1709.0" cy="749.5" r="0.9" fill="#fff" opacity="0.34"/><circle cx="504.8" cy="772.2" r="0.8" fill="#fff" opacity="0.18"/><circle cx="1658.8" cy="237.3" r="1.1" fill="#fff" opacity="0.14"/><circle cx="1051.0" cy="400.0" r="1.0" fill="#fff" opacity="0.14"/><circle cx="1262.8" cy="727.6" r="0.9" fill="#fff" opacity="0.14"/><circle cx="769.6" cy="196.8" r="0.8" fill="#fff" opacity="0.50"/><circle cx="1619.4" cy="455.8" r="1.2" fill="#fff" opacity="0.14"/><circle cx="176.5" cy="1109.1" r="1.1" fill="#fff" opacity="0.50"/><circle cx="598.3" cy="174.6" r="0.9" fill="#fff" opacity="0.14"/><circle cx="468.3" cy="241.0" r="1.2" fill="#fff" opacity="0.28"/><circle cx="571.4" cy="546.5" r="1.0" fill="#fff" opacity="0.50"/><circle cx="1208.5" cy="794.7" r="0.8" fill="#fff" opacity="0.22"/><circle cx="376.1" cy="506.0" r="1.2" fill="#fff" opacity="0.42"/><circle cx="698.7" cy="556.7" r="1.2" fill="#fff" opacity="0.42"/><circle cx="1339.7" cy="375.8" r="1.0" fill="#fff" opacity="0.22"/><circle cx="1720.8" cy="209.7" r="0.9" fill="#fff" opacity="0.14"/><circle cx="550.2" cy="773.0" r="0.8" fill="#fff" opacity="0.42"/><circle cx="1299.5" cy="547.9" r="1.1" fill="#fff" opacity="0.18"/><circle cx="844.8" cy="936.2" r="0.8" fill="#fff" opacity="0.28"/><circle cx="1411.7" cy="710.7" r="1.2" fill="#fff" opacity="0.42"/><circle cx="1786.3" cy="724.1" r="0.8" fill="#fff" opacity="0.34"/><circle cx="968.6" cy="675.9" r="1.0" fill="#fff" opacity="0.42"/><circle cx="1312.2" cy="486.6" r="0.7" fill="#fff" opacity="0.14"/><circle cx="1588.6" cy="957.7" r="0.9" fill="#fff" opacity="0.14"/><circle cx="1663.8" cy="746.8" r="1.2" fill="#fff" opacity="0.14"/><circle cx="1846.3" cy="852.5" r="0.7" fill="#fff" opacity="0.50"/><circle cx="638.1" cy="958.4" r="0.9" fill="#fff" opacity="0.42"/><circle cx="1734.8" cy="561.8" r="1.2" fill="#fff" opacity="0.28"/><circle cx="1890.5" cy="780.1" r="0.8" fill="#fff" opacity="0.22"/><circle cx="1022.9" cy="486.6" r="1.0" fill="#fff" opacity="0.28"/><circle cx="1765.4" cy="864.2" r="1.2" fill="#fff" opacity="0.42"/><circle cx="1580.7" cy="794.2" r="1.0" fill="#fff" opacity="0.34"/><circle cx="151.1" cy="871.5" r="1.0" fill="#fff" opacity="0.42"/><circle cx="994.4" cy="1124.8" r="0.8" fill="#fff" opacity="0.28"/><circle cx="1455.2" cy="150.1" r="1.2" fill="#fff" opacity="0.50"/><circle cx="1536.0" cy="389.8" r="1.1" fill="#fff" opacity="0.18"/><circle cx="1837.6" cy="804.5" r="1.1" fill="#fff" opacity="0.22"/><circle cx="511.2" cy="167.4" r="0.9" fill="#fff" opacity="0.22"/><circle cx="809.6" cy="324.0" r="0.9" fill="#fff" opacity="0.18"/><circle cx="302.7" cy="881.1" r="1.2" fill="#fff" opacity="0.28"/><circle cx="489.4" cy="368.4" r="1.1" fill="#fff" opacity="0.42"/><circle cx="871.2" cy="1133.3" r="0.9" fill="#fff" opacity="0.42"/><circle cx="602.7" cy="1076.9" r="0.8" fill="#fff" opacity="0.34"/><circle cx="1089.1" cy="469.6" r="0.7" fill="#fff" opacity="0.34"/><circle cx="833.6" cy="1139.2" r="1.2" fill="#fff" opacity="0.42"/><circle cx="336.3" cy="1181.2" r="1.0" fill="#fff" opacity="0.50"/><circle cx="431.3" cy="862.5" r="0.7" fill="#fff" opacity="0.22"/><circle cx="947.8" cy="149.8" r="0.9" fill="#fff" opacity="0.22"/><circle cx="414.3" cy="875.2" r="1.0" fill="#fff" opacity="0.14"/><circle cx="348.3" cy="592.5" r="1.1" fill="#fff" opacity="0.22"/><circle cx="584.6" cy="716.4" r="0.7" fill="#fff" opacity="0.14"/><circle cx="914.5" cy="1181.8" r="1.0" fill="#fff" opacity="0.14"/><circle cx="1428.3" cy="467.6" r="1.2" fill="#fff" opacity="0.34"/><circle cx="538.3" cy="812.9" r="1.0" fill="#fff" opacity="0.28"/><circle cx="400.8" cy="700.5" r="0.7" fill="#fff" opacity="0.22"/><circle cx="1745.7" cy="812.2" r="1.2" fill="#fff" opacity="0.34"/><circle cx="1774.7" cy="821.2" r="0.9" fill="#fff" opacity="0.42"/><circle cx="504.4" cy="254.8" r="0.7" fill="#fff" opacity="0.14"/><circle cx="1478.3" cy="1027.2" r="0.9" fill="#fff" opacity="0.22"/><circle cx="393.3" cy="805.2" r="1.2" fill="#fff" opacity="0.18"/><circle cx="239.3" cy="894.2" r="0.9" fill="#fff" opacity="0.42"/><circle cx="1187.8" cy="520.1" r="1.2" fill="#fff" opacity="0.50"/><circle cx="707.6" cy="355.7" r="0.8" fill="#fff" opacity="0.34"/><circle cx="1746.0" cy="1025.3" r="0.9" fill="#fff" opacity="0.18"/><circle cx="157.4" cy="220.2" r="1.2" fill="#fff" opacity="0.50"/><circle cx="1893.8" cy="546.4" r="0.7" fill="#fff" opacity="0.18"/><circle cx="962.1" cy="652.5" r="0.8" fill="#fff" opacity="0.22"/><circle cx="1161.6" cy="792.4" r="0.8" fill="#fff" opacity="0.42"/><circle cx="470.3" cy="254.4" r="1.2" fill="#fff" opacity="0.28"/><circle cx="216.2" cy="146.0" r="1.0" fill="#fff" opacity="0.28"/><circle cx="402.7" cy="898.7" r="0.7" fill="#fff" opacity="0.14"/><circle cx="1600.6" cy="1044.6" r="1.1" fill="#fff" opacity="0.28"/><circle cx="314.8" cy="181.3" r="0.7" fill="#fff" opacity="0.34"/><circle cx="1361.0" cy="1083.5" r="0.7" fill="#fff" opacity="0.28"/><circle cx="67.2" cy="1155.5" r="0.8" fill="#fff" opacity="0.42"/><circle cx="354.1" cy="427.9" r="1.0" fill="#fff" opacity="0.50"/><circle cx="1089.3" cy="485.6" r="0.8" fill="#fff" opacity="0.28"/><circle cx="207.7" cy="458.7" r="1.0" fill="#fff" opacity="0.28"/><circle cx="1841.1" cy="1103.4" r="0.8" fill="#fff" opacity="0.28"/><circle cx="1823.6" cy="785.1" r="0.7" fill="#fff" opacity="0.42"/><circle cx="1297.7" cy="773.3" r="0.9" fill="#fff" opacity="0.34"/><circle cx="1103.6" cy="1152.0" r="1.0" fill="#fff" opacity="0.42"/><circle cx="1244.1" cy="431.8" r="0.9" fill="#fff" opacity="0.34"/><circle cx="1682.2" cy="132.7" r="0.8" fill="#fff" opacity="0.18"/><circle cx="1301.8" cy="595.0" r="0.7" fill="#fff" opacity="0.18"/><circle cx="1268.3" cy="512.0" r="1.1" fill="#fff" opacity="0.28"/><circle cx="714.5" cy="366.7" r="1.0" fill="#fff" opacity="0.28"/><circle cx="532.2" cy="352.4" r="0.8" fill="#fff" opacity="0.34"/><circle cx="1433.0" cy="345.8" r="0.9" fill="#fff" opacity="0.42"/><circle cx="226.0" cy="686.9" r="0.9" fill="#fff" opacity="0.42"/><circle cx="952.7" cy="712.5" r="0.8" fill="#fff" opacity="0.34"/><circle cx="1106.5" cy="226.5" r="1.1" fill="#fff" opacity="0.34"/><circle cx="1095.7" cy="1040.4" r="1.2" fill="#fff" opacity="0.14"/><circle cx="1526.0" cy="250.0" r="1.1" fill="#fff" opacity="0.34"/><circle cx="985.8" cy="1026.1" r="0.7" fill="#fff" opacity="0.42"/><circle cx="1876.8" cy="897.2" r="0.7" fill="#fff" opacity="0.28"/><circle cx="1581.1" cy="533.9" r="0.8" fill="#fff" opacity="0.18"/><circle cx="1088.7" cy="956.0" r="0.8" fill="#fff" opacity="0.22"/><circle cx="1481.5" cy="165.4" r="0.8" fill="#fff" opacity="0.14"/><circle cx="737.2" cy="118.7" r="1.1" fill="#fff" opacity="0.18"/><circle cx="898.2" cy="234.8" r="0.8" fill="#fff" opacity="0.28"/><circle cx="1725.4" cy="198.7" r="0.8" fill="#fff" opacity="0.34"/><circle cx="262.4" cy="904.5" r="0.9" fill="#fff" opacity="0.18"/><circle cx="727.3" cy="1029.3" r="1.2" fill="#fff" opacity="0.42"/><circle cx="72.5" cy="383.7" r="0.8" fill="#fff" opacity="0.22"/><circle cx="996.8" cy="680.2" r="0.9" fill="#fff" opacity="0.42"/><circle cx="952.2" cy="1001.8" r="0.9" fill="#fff" opacity="0.14"/><circle cx="706.6" cy="462.8" r="1.1" fill="#fff" opacity="0.14"/><circle cx="113.9" cy="1105.1" r="0.8" fill="#fff" opacity="0.22"/><circle cx="704.1" cy="866.7" r="0.7" fill="#fff" opacity="0.50"/><circle cx="1873.2" cy="586.7" r="0.7" fill="#fff" opacity="0.28"/><circle cx="254.5" cy="984.4" r="0.8" fill="#fff" opacity="0.18"/><circle cx="1072.5" cy="421.6" r="1.2" fill="#fff" opacity="0.42"/><circle cx="752.9" cy="261.0" r="0.9" fill="#fff" opacity="0.34"/><circle cx="1889.0" cy="941.1" r="0.9" fill="#fff" opacity="0.28"/><circle cx="76.4" cy="479.3" r="0.8" fill="#fff" opacity="0.28"/><circle cx="975.8" cy="1064.1" r="0.7" fill="#fff" opacity="0.14"/><circle cx="387.0" cy="1003.8" r="1.2" fill="#fff" opacity="0.34"/><circle cx="774.5" cy="626.3" r="0.8" fill="#fff" opacity="0.42"/><circle cx="1608.5" cy="535.5" r="1.1" fill="#fff" opacity="0.34"/><circle cx="190.9" cy="464.9" r="0.8" fill="#fff" opacity="0.22"/><circle cx="1698.6" cy="751.3" r="0.7" fill="#fff" opacity="0.18"/><circle cx="363.8" cy="499.8" r="1.0" fill="#fff" opacity="0.22"/><circle cx="1114.5" cy="529.4" r="0.9" fill="#fff" opacity="0.22"/><circle cx="62.0" cy="740.2" r="0.9" fill="#fff" opacity="0.18"/><circle cx="88.8" cy="608.3" r="1.1" fill="#fff" opacity="0.14"/><circle cx="1213.7" cy="903.1" r="0.8" fill="#fff" opacity="0.22"/><circle cx="759.5" cy="172.0" r="0.9" fill="#fff" opacity="0.22"/><circle cx="1099.6" cy="684.0" r="0.8" fill="#fff" opacity="0.42"/><circle cx="113.9" cy="719.8" r="0.7" fill="#fff" opacity="0.50"/><circle cx="418.2" cy="571.7" r="1.1" fill="#fff" opacity="0.42"/><circle cx="233.4" cy="974.7" r="0.8" fill="#fff" opacity="0.50"/><circle cx="1519.3" cy="257.5" r="0.7" fill="#fff" opacity="0.22"/><circle cx="1825.7" cy="478.3" r="0.9" fill="#fff" opacity="0.34"/><circle cx="1623.5" cy="372.2" r="1.1" fill="#fff" opacity="0.42"/><circle cx="799.2" cy="168.6" r="0.9" fill="#fff" opacity="0.42"/><circle cx="646.7" cy="1191.2" r="1.0" fill="#fff" opacity="0.34"/><circle cx="727.9" cy="370.3" r="0.8" fill="#fff" opacity="0.22"/><circle cx="328.9" cy="328.3" r="1.2" fill="#fff" opacity="0.28"/><circle cx="797.4" cy="538.5" r="0.9" fill="#fff" opacity="0.18"/><circle cx="1132.5" cy="260.5" r="1.2" fill="#fff" opacity="0.22"/><circle cx="515.7" cy="732.2" r="1.2" fill="#fff" opacity="0.22"/><circle cx="186.5" cy="311.6" r="0.7" fill="#fff" opacity="0.34"/><circle cx="380.4" cy="741.7" r="1.0" fill="#fff" opacity="0.22"/><circle cx="1839.7" cy="862.7" r="1.2" fill="#fff" opacity="0.50"/><circle cx="1750.2" cy="1026.1" r="0.9" fill="#fff" opacity="0.18"/><circle cx="559.4" cy="385.8" r="0.7" fill="#fff" opacity="0.50"/><circle cx="354.3" cy="397.4" r="1.2" fill="#fff" opacity="0.14"/><circle cx="453.4" cy="542.3" r="0.8" fill="#fff" opacity="0.34"/><circle cx="571.9" cy="655.1" r="0.7" fill="#fff" opacity="0.18"/><circle cx="496.5" cy="164.6" r="0.8" fill="#fff" opacity="0.34"/><circle cx="140.6" cy="182.9" r="1.1" fill="#fff" opacity="0.22"/><circle cx="1376.1" cy="107.6" r="0.9" fill="#fff" opacity="0.34"/><circle cx="1235.1" cy="118.5" r="0.9" fill="#fff" opacity="0.14"/><circle cx="442.1" cy="462.1" r="1.2" fill="#fff" opacity="0.14"/><circle cx="1247.0" cy="548.7" r="1.2" fill="#fff" opacity="0.50"/><circle cx="673.5" cy="165.3" r="1.0" fill="#fff" opacity="0.50"/><circle cx="134.8" cy="792.2" r="0.9" fill="#fff" opacity="0.50"/><circle cx="962.1" cy="760.8" r="0.9" fill="#fff" opacity="0.28"/><circle cx="1660.5" cy="130.4" r="0.9" fill="#fff" opacity="0.34"/><circle cx="1256.5" cy="447.4" r="1.0" fill="#fff" opacity="0.34"/><circle cx="1359.8" cy="1022.1" r="0.8" fill="#fff" opacity="0.14"/><circle cx="85.3" cy="334.0" r="1.1" fill="#fff" opacity="0.50"/><circle cx="1600.2" cy="496.3" r="0.9" fill="#fff" opacity="0.28"/><circle cx="685.2" cy="851.5" r="1.1" fill="#fff" opacity="0.18"/><circle cx="1262.5" cy="764.9" r="0.9" fill="#fff" opacity="0.18"/><circle cx="1416.8" cy="386.1" r="1.2" fill="#fff" opacity="0.28"/><circle cx="1457.8" cy="957.1" r="0.9" fill="#fff" opacity="0.42"/><circle cx="1474.9" cy="1179.1" r="1.0" fill="#fff" opacity="0.34"/><circle cx="563.8" cy="678.7" r="0.9" fill="#fff" opacity="0.18"/><circle cx="517.1" cy="717.1" r="0.7" fill="#fff" opacity="0.42"/><circle cx="1542.4" cy="1178.5" r="0.8" fill="#fff" opacity="0.42"/><circle cx="471.5" cy="935.8" r="0.7" fill="#fff" opacity="0.14"/><circle cx="1202.2" cy="236.7" r="1.1" fill="#fff" opacity="0.34"/><circle cx="428.7" cy="958.7" r="0.9" fill="#fff" opacity="0.34"/><circle cx="724.8" cy="266.5" r="0.8" fill="#fff" opacity="0.50"/><circle cx="1410.7" cy="1117.4" r="0.8" fill="#fff" opacity="0.34"/><circle cx="104.5" cy="959.5" r="0.8" fill="#fff" opacity="0.28"/><circle cx="1861.4" cy="651.8" r="1.2" fill="#fff" opacity="0.22"/><circle cx="1711.6" cy="530.7" r="0.8" fill="#fff" opacity="0.22"/><circle cx="1506.6" cy="131.2" r="1.2" fill="#fff" opacity="0.42"/><circle cx="79.4" cy="991.0" r="1.0" fill="#fff" opacity="0.42"/><circle cx="1643.5" cy="168.1" r="1.1" fill="#fff" opacity="0.28"/><circle cx="806.5" cy="1114.9" r="1.2" fill="#fff" opacity="0.42"/><circle cx="1636.6" cy="135.8" r="0.7" fill="#fff" opacity="0.22"/><circle cx="1358.2" cy="368.5" r="0.9" fill="#fff" opacity="0.18"/><circle cx="651.9" cy="571.0" r="0.9" fill="#fff" opacity="0.22"/><circle cx="1671.8" cy="651.5" r="1.1" fill="#fff" opacity="0.50"/><circle cx="339.8" cy="1053.1" r="0.9" fill="#fff" opacity="0.50"/><circle cx="302.6" cy="432.7" r="0.7" fill="#fff" opacity="0.22"/><circle cx="58.2" cy="1063.1" r="0.8" fill="#fff" opacity="0.18"/><circle cx="640.3" cy="774.5" r="1.0" fill="#fff" opacity="0.18"/><circle cx="1118.5" cy="1074.9" r="0.8" fill="#fff" opacity="0.50"/><circle cx="1679.4" cy="499.1" r="1.0" fill="#fff" opacity="0.18"/><circle cx="852.4" cy="256.1" r="0.9" fill="#fff" opacity="0.42"/><circle cx="96.0" cy="224.9" r="0.7" fill="#fff" opacity="0.18"/><circle cx="1731.1" cy="268.2" r="1.2" fill="#fff" opacity="0.22"/><circle cx="230.8" cy="288.0" r="1.2" fill="#fff" opacity="0.28"/><circle cx="217.3" cy="476.2" r="1.2" fill="#fff" opacity="0.42"/><circle cx="782.1" cy="471.9" r="0.7" fill="#fff" opacity="0.34"/><circle cx="483.4" cy="974.9" r="1.2" fill="#fff" opacity="0.14"/><circle cx="120.8" cy="658.3" r="0.8" fill="#fff" opacity="0.34"/><circle cx="844.4" cy="217.6" r="0.7" fill="#fff" opacity="0.14"/><circle cx="1877.0" cy="450.8" r="0.7" fill="#fff" opacity="0.14"/><circle cx="1815.1" cy="1171.6" r="1.1" fill="#fff" opacity="0.28"/><circle cx="55.7" cy="348.8" r="1.1" fill="#fff" opacity="0.18"/><circle cx="1218.0" cy="703.2" r="0.7" fill="#fff" opacity="0.34"/><circle cx="702.6" cy="648.9" r="0.7" fill="#fff" opacity="0.22"/><circle cx="1839.6" cy="1042.2" r="0.8" fill="#fff" opacity="0.42"/><circle cx="184.4" cy="877.3" r="0.7" fill="#fff" opacity="0.22"/><circle cx="546.8" cy="1166.9" r="0.8" fill="#fff" opacity="0.34"/><circle cx="139.2" cy="972.0" r="0.9" fill="#fff" opacity="0.22"/><circle cx="70.5" cy="860.3" r="1.2" fill="#fff" opacity="0.28"/><circle cx="1053.5" cy="706.8" r="1.2" fill="#fff" opacity="0.28"/><circle cx="1861.5" cy="1065.2" r="1.2" fill="#fff" opacity="0.22"/><circle cx="786.9" cy="452.7" r="1.0" fill="#fff" opacity="0.28"/><circle cx="1844.1" cy="528.6" r="1.0" fill="#fff" opacity="0.28"/><circle cx="1532.3" cy="1091.7" r="1.2" fill="#fff" opacity="0.14"/><circle cx="491.6" cy="654.2" r="0.9" fill="#fff" opacity="0.42"/><circle cx="1176.9" cy="517.4" r="0.8" fill="#fff" opacity="0.50"/><circle cx="416.7" cy="230.0" r="1.1" fill="#fff" opacity="0.50"/><circle cx="113.0" cy="891.5" r="1.0" fill="#fff" opacity="0.42"/><circle cx="1080.4" cy="856.7" r="1.0" fill="#fff" opacity="0.34"/><circle cx="1282.1" cy="604.0" r="1.1" fill="#fff" opacity="0.14"/><circle cx="923.6" cy="815.4" r="1.0" fill="#fff" opacity="0.34"/><circle cx="682.0" cy="703.9" r="1.0" fill="#fff" opacity="0.18"/><circle cx="1571.5" cy="974.1" r="1.0" fill="#fff" opacity="0.22"/><circle cx="1363.5" cy="535.7" r="1.1" fill="#fff" opacity="0.22"/><circle cx="1180.4" cy="848.3" r="0.9" fill="#fff" opacity="0.14"/><circle cx="1210.1" cy="700.5" r="0.8" fill="#fff" opacity="0.34"/><circle cx="1461.6" cy="391.0" r="1.0" fill="#fff" opacity="0.50"/><circle cx="1380.8" cy="677.3" r="1.0" fill="#fff" opacity="0.34"/><circle cx="458.7" cy="258.6" r="1.1" fill="#fff" opacity="0.22"/><circle cx="1016.6" cy="683.3" r="0.9" fill="#fff" opacity="0.18"/><circle cx="1292.6" cy="270.0" r="1.2" fill="#fff" opacity="0.28"/><circle cx="378.5" cy="1146.0" r="1.2" fill="#fff" opacity="0.50"/><circle cx="1729.2" cy="456.8" r="0.9" fill="#fff" opacity="0.50"/><circle cx="1642.6" cy="573.7" r="1.0" fill="#fff" opacity="0.18"/><circle cx="1345.9" cy="515.4" r="0.9" fill="#fff" opacity="0.22"/><circle cx="1272.9" cy="677.9" r="0.9" fill="#fff" opacity="0.28"/><circle cx="1271.5" cy="405.1" r="0.9" fill="#fff" opacity="0.28"/><circle cx="1331.9" cy="597.1" r="1.0" fill="#fff" opacity="0.42"/><circle cx="1522.2" cy="938.2" r="0.8" fill="#fff" opacity="0.14"/><circle cx="1304.6" cy="506.4" r="1.1" fill="#fff" opacity="0.42"/><circle cx="489.0" cy="510.6" r="0.9" fill="#fff" opacity="0.50"/><circle cx="753.4" cy="121.6" r="0.8" fill="#fff" opacity="0.14"/><circle cx="1102.5" cy="165.6" r="0.8" fill="#fff" opacity="0.22"/><circle cx="1374.6" cy="404.6" r="0.9" fill="#fff" opacity="0.22"/><circle cx="496.7" cy="1021.2" r="0.7" fill="#fff" opacity="0.34"/><circle cx="1223.4" cy="1048.5" r="0.8" fill="#fff" opacity="0.18"/><circle cx="830.9" cy="975.1" r="1.1" fill="#fff" opacity="0.50"/><circle cx="735.9" cy="150.4" r="1.0" fill="#fff" opacity="0.28"/><circle cx="727.7" cy="887.2" r="0.9" fill="#fff" opacity="0.28"/><circle cx="845.3" cy="771.4" r="0.9" fill="#fff" opacity="0.22"/><circle cx="490.8" cy="1038.4" r="0.8" fill="#fff" opacity="0.34"/><circle cx="404.1" cy="1172.5" r="1.2" fill="#fff" opacity="0.34"/><circle cx="737.3" cy="835.5" r="0.9" fill="#fff" opacity="0.50"/><circle cx="181.4" cy="935.2" r="1.0" fill="#fff" opacity="0.28"/><circle cx="1020.1" cy="649.3" r="1.2" fill="#fff" opacity="0.50"/><circle cx="1510.0" cy="220.8" r="1.1" fill="#fff" opacity="0.28"/><circle cx="1774.3" cy="874.4" r="1.0" fill="#fff" opacity="0.28"/><circle cx="1884.7" cy="296.2" r="0.7" fill="#fff" opacity="0.28"/><circle cx="783.8" cy="251.1" r="0.7" fill="#fff" opacity="0.42"/><circle cx="479.3" cy="322.7" r="1.1" fill="#fff" opacity="0.14"/><circle cx="1757.2" cy="426.0" r="0.9" fill="#fff" opacity="0.50"/><circle cx="765.1" cy="608.8" r="0.7" fill="#fff" opacity="0.18"/><circle cx="1613.7" cy="731.3" r="0.7" fill="#fff" opacity="0.14"/><circle cx="966.9" cy="1036.7" r="0.8" fill="#fff" opacity="0.34"/><circle cx="888.2" cy="1010.0" r="0.8" fill="#fff" opacity="0.42"/><circle cx="669.5" cy="1053.0" r="1.1" fill="#fff" opacity="0.42"/><circle cx="1429.4" cy="1031.7" r="0.8" fill="#fff" opacity="0.28"/><circle cx="1556.5" cy="1062.9" r="0.8" fill="#fff" opacity="0.22"/><circle cx="667.2" cy="673.1" r="0.7" fill="#fff" opacity="0.18"/><circle cx="1873.1" cy="404.7" r="0.9" fill="#fff" opacity="0.14"/><circle cx="627.9" cy="383.0" r="0.9" fill="#fff" opacity="0.34"/><circle cx="778.6" cy="1078.1" r="1.2" fill="#fff" opacity="0.14"/><circle cx="616.5" cy="375.9" r="1.0" fill="#fff" opacity="0.50"/><circle cx="854.7" cy="696.6" r="0.9" fill="#fff" opacity="0.18"/><circle cx="293.8" cy="330.7" r="1.2" fill="#fff" opacity="0.22"/><circle cx="1769.5" cy="825.3" r="1.2" fill="#fff" opacity="0.34"/><circle cx="311.4" cy="1127.4" r="0.9" fill="#fff" opacity="0.18"/><circle cx="892.2" cy="881.0" r="1.2" fill="#fff" opacity="0.14"/><circle cx="1395.0" cy="111.4" r="0.7" fill="#fff" opacity="0.28"/><circle cx="1804.5" cy="1009.4" r="0.7" fill="#fff" opacity="0.22"/><circle cx="455.9" cy="585.9" r="0.8" fill="#fff" opacity="0.42"/><circle cx="436.9" cy="1174.4" r="1.1" fill="#fff" opacity="0.28"/><circle cx="799.3" cy="904.0" r="0.8" fill="#fff" opacity="0.18"/><circle cx="157.4" cy="580.0" r="1.2" fill="#fff" opacity="0.14"/><circle cx="141.2" cy="1052.6" r="0.7" fill="#fff" opacity="0.50"/><circle cx="1150.0" cy="300.5" r="1.2" fill="#fff" opacity="0.34"/><circle cx="1409.7" cy="282.9" r="0.8" fill="#fff" opacity="0.42"/><circle cx="1378.8" cy="927.0" r="0.8" fill="#fff" opacity="0.34"/><circle cx="1596.0" cy="262.6" r="1.2" fill="#fff" opacity="0.18"/><circle cx="1002.4" cy="615.2" r="0.8" fill="#fff" opacity="0.50"/><circle cx="219.7" cy="157.4" r="0.8" fill="#fff" opacity="0.42"/><circle cx="1587.3" cy="880.2" r="1.0" fill="#fff" opacity="0.42"/><circle cx="833.5" cy="1058.7" r="1.2" fill="#fff" opacity="0.18"/><circle cx="128.0" cy="1023.4" r="0.9" fill="#fff" opacity="0.50"/><circle cx="479.8" cy="743.4" r="0.9" fill="#fff" opacity="0.42"/><circle cx="1084.1" cy="271.7" r="0.9" fill="#fff" opacity="0.22"/><circle cx="1062.3" cy="338.5" r="1.2" fill="#fff" opacity="0.18"/><circle cx="772.5" cy="138.3" r="1.0" fill="#fff" opacity="0.18"/><circle cx="1232.0" cy="348.1" r="1.1" fill="#fff" opacity="0.42"/><circle cx="223.5" cy="613.8" r="1.2" fill="#fff" opacity="0.18"/><circle cx="843.2" cy="850.2" r="0.7" fill="#fff" opacity="0.14"/><circle cx="1577.9" cy="236.6" r="0.8" fill="#fff" opacity="0.42"/><circle cx="1782.4" cy="682.0" r="0.9" fill="#fff" opacity="0.28"/><circle cx="692.3" cy="928.9" r="1.0" fill="#fff" opacity="0.14"/><circle cx="420.5" cy="410.6" r="0.9" fill="#fff" opacity="0.34"/><circle cx="1127.1" cy="935.4" r="0.8" fill="#fff" opacity="0.18"/><circle cx="918.0" cy="948.1" r="0.8" fill="#fff" opacity="0.34"/><circle cx="1755.1" cy="137.7" r="1.1" fill="#fff" opacity="0.14"/><circle cx="1833.8" cy="481.4" r="0.8" fill="#fff" opacity="0.42"/><circle cx="603.9" cy="291.5" r="0.9" fill="#fff" opacity="0.28"/><circle cx="937.6" cy="465.2" r="0.9" fill="#fff" opacity="0.18"/><circle cx="253.1" cy="1018.9" r="0.7" fill="#fff" opacity="0.42"/><circle cx="1081.6" cy="207.4" r="1.1" fill="#fff" opacity="0.14"/><circle cx="1503.3" cy="758.3" r="1.0" fill="#fff" opacity="0.14"/><circle cx="113.2" cy="667.7" r="0.7" fill="#fff" opacity="0.28"/><circle cx="1243.1" cy="247.4" r="1.1" fill="#fff" opacity="0.50"/><circle cx="701.3" cy="514.9" r="1.2" fill="#fff" opacity="0.42"/><circle cx="353.0" cy="289.0" r="0.7" fill="#fff" opacity="0.22"/><circle cx="60.1" cy="812.5" r="1.0" fill="#fff" opacity="0.22"/><circle cx="325.7" cy="205.6" r="0.8" fill="#fff" opacity="0.14"/><circle cx="333.1" cy="400.1" r="1.1" fill="#fff" opacity="0.14"/><circle cx="648.6" cy="373.1" r="1.1" fill="#fff" opacity="0.34"/><circle cx="128.5" cy="384.4" r="0.8" fill="#fff" opacity="0.22"/><circle cx="795.1" cy="326.2" r="0.8" fill="#fff" opacity="0.18"/><circle cx="1390.1" cy="691.3" r="0.8" fill="#fff" opacity="0.14"/><circle cx="78.9" cy="1141.5" r="1.0" fill="#fff" opacity="0.50"/><circle cx="1508.9" cy="730.6" r="1.2" fill="#fff" opacity="0.42"/><circle cx="473.5" cy="928.5" r="0.8" fill="#fff" opacity="0.50"/><circle cx="537.9" cy="136.1" r="1.0" fill="#fff" opacity="0.34"/><circle cx="1005.9" cy="423.7" r="0.7" fill="#fff" opacity="0.14"/><circle cx="1274.5" cy="341.8" r="0.8" fill="#fff" opacity="0.34"/><circle cx="1479.2" cy="667.3" r="0.7" fill="#fff" opacity="0.50"/><circle cx="503.9" cy="762.3" r="0.7" fill="#fff" opacity="0.14"/><circle cx="447.1" cy="953.7" r="0.8" fill="#fff" opacity="0.50"/><circle cx="610.5" cy="194.6" r="1.0" fill="#fff" opacity="0.34"/><circle cx="1748.1" cy="113.9" r="1.0" fill="#fff" opacity="0.50"/><circle cx="801.3" cy="199.0" r="0.8" fill="#fff" opacity="0.18"/><circle cx="1403.3" cy="850.0" r="0.8" fill="#fff" opacity="0.50"/><circle cx="685.6" cy="256.7" r="0.8" fill="#fff" opacity="0.18"/><circle cx="1315.4" cy="882.9" r="0.7" fill="#fff" opacity="0.14"/><circle cx="1509.9" cy="630.7" r="1.0" fill="#fff" opacity="0.34"/><circle cx="1487.2" cy="1102.7" r="1.1" fill="#fff" opacity="0.42"/><circle cx="166.4" cy="1057.0" r="0.7" fill="#fff" opacity="0.50"/><circle cx="724.8" cy="555.3" r="1.2" fill="#fff" opacity="0.42"/><circle cx="1841.2" cy="744.2" r="1.0" fill="#fff" opacity="0.42"/><circle cx="1473.9" cy="648.8" r="0.9" fill="#fff" opacity="0.50"/><circle cx="1329.4" cy="435.9" r="0.7" fill="#fff" opacity="0.42"/><circle cx="910.1" cy="970.9" r="1.2" fill="#fff" opacity="0.34"/><circle cx="354.6" cy="527.2" r="1.2" fill="#fff" opacity="0.50"/><circle cx="1779.0" cy="667.3" r="1.2" fill="#fff" opacity="0.34"/><circle cx="1030.9" cy="1144.4" r="0.7" fill="#fff" opacity="0.14"/><circle cx="1835.9" cy="969.8" r="0.9" fill="#fff" opacity="0.50"/><circle cx="1596.1" cy="357.8" r="0.8" fill="#fff" opacity="0.34"/><circle cx="894.9" cy="362.8" r="1.0" fill="#fff" opacity="0.34"/><circle cx="1724.7" cy="857.2" r="1.2" fill="#fff" opacity="0.14"/><circle cx="773.5" cy="965.8" r="1.2" fill="#fff" opacity="0.42"/><circle cx="1477.3" cy="479.6" r="1.0" fill="#fff" opacity="0.28"/><circle cx="1798.4" cy="353.6" r="1.2" fill="#fff" opacity="0.50"/><circle cx="1510.3" cy="832.9" r="1.0" fill="#fff" opacity="0.50"/><circle cx="612.7" cy="433.1" r="1.1" fill="#fff" opacity="0.14"/><circle cx="1803.7" cy="1069.8" r="1.0" fill="#fff" opacity="0.28"/><circle cx="808.1" cy="432.0" r="0.8" fill="#fff" opacity="0.22"/><circle cx="1056.2" cy="193.6" r="1.0" fill="#fff" opacity="0.50"/><circle cx="909.7" cy="137.9" r="0.9" fill="#fff" opacity="0.14"/><circle cx="1880.1" cy="308.4" r="1.0" fill="#fff" opacity="0.28"/><circle cx="1269.2" cy="991.5" r="0.7" fill="#fff" opacity="0.18"/><circle cx="1309.7" cy="147.8" r="0.8" fill="#fff" opacity="0.28"/><circle cx="551.3" cy="1157.4" r="0.9" fill="#fff" opacity="0.18"/><circle cx="464.2" cy="1082.6" r="1.1" fill="#fff" opacity="0.28"/><circle cx="619.7" cy="453.0" r="1.1" fill="#fff" opacity="0.50"/><circle cx="1872.9" cy="310.8" r="0.8" fill="#fff" opacity="0.28"/><circle cx="1022.6" cy="102.4" r="0.8" fill="#fff" opacity="0.14"/><circle cx="1792.6" cy="602.9" r="1.2" fill="#fff" opacity="0.22"/><circle cx="1408.5" cy="847.2" r="1.1" fill="#fff" opacity="0.42"/><circle cx="1640.1" cy="668.3" r="1.0" fill="#fff" opacity="0.18"/><circle cx="1762.4" cy="1087.0" r="1.2" fill="#fff" opacity="0.28"/><circle cx="190.9" cy="789.7" r="1.0" fill="#fff" opacity="0.22"/><circle cx="1816.3" cy="500.7" r="1.2" fill="#fff" opacity="0.42"/><circle cx="1215.6" cy="516.2" r="1.1" fill="#fff" opacity="0.50"/><circle cx="1297.9" cy="1101.7" r="1.0" fill="#fff" opacity="0.28"/><circle cx="721.3" cy="1177.8" r="0.7" fill="#fff" opacity="0.50"/><circle cx="1687.7" cy="233.2" r="1.0" fill="#fff" opacity="0.28"/><circle cx="624.4" cy="666.8" r="0.8" fill="#fff" opacity="0.42"/><circle cx="1169.8" cy="607.7" r="0.9" fill="#fff" opacity="0.28"/><circle cx="303.5" cy="1152.2" r="0.9" fill="#fff" opacity="0.18"/><circle cx="396.9" cy="1113.6" r="1.1" fill="#fff" opacity="0.14"/><circle cx="1889.8" cy="293.3" r="1.1" fill="#fff" opacity="0.42"/><circle cx="1861.1" cy="793.3" r="0.8" fill="#fff" opacity="0.22"/><circle cx="1475.4" cy="130.4" r="1.1" fill="#fff" opacity="0.28"/><circle cx="1246.7" cy="989.0" r="1.2" fill="#fff" opacity="0.42"/><circle cx="752.2" cy="1163.3" r="1.2" fill="#fff" opacity="0.22"/><circle cx="1324.2" cy="407.8" r="0.8" fill="#fff" opacity="0.50"/><circle cx="1111.0" cy="1012.1" r="1.1" fill="#fff" opacity="0.22"/><circle cx="1698.1" cy="323.3" r="0.7" fill="#fff" opacity="0.18"/><circle cx="618.6" cy="675.6" r="1.2" fill="#fff" opacity="0.22"/><circle cx="1723.7" cy="749.2" r="1.0" fill="#fff" opacity="0.50"/><circle cx="1833.0" cy="1162.3" r="0.8" fill="#fff" opacity="0.22"/><circle cx="621.2" cy="1142.0" r="0.8" fill="#fff" opacity="0.34"/><circle cx="642.4" cy="585.0" r="0.7" fill="#fff" opacity="0.42"/><circle cx="530.6" cy="536.2" r="1.0" fill="#fff" opacity="0.50"/><circle cx="1826.9" cy="396.1" r="0.8" fill="#fff" opacity="0.34"/><circle cx="880.8" cy="1024.5" r="1.2" fill="#fff" opacity="0.18"/><circle cx="1486.0" cy="448.9" r="0.8" fill="#fff" opacity="0.22"/><circle cx="1446.3" cy="620.2" r="1.1" fill="#fff" opacity="0.50"/><circle cx="1286.9" cy="931.4" r="0.9" fill="#fff" opacity="0.28"/><circle cx="719.5" cy="1113.1" r="1.1" fill="#fff" opacity="0.50"/><circle cx="582.5" cy="796.5" r="0.9" fill="#fff" opacity="0.28"/><circle cx="1472.6" cy="147.5" r="1.2" fill="#fff" opacity="0.34"/><circle cx="614.2" cy="765.6" r="0.9" fill="#fff" opacity="0.22"/><circle cx="1858.0" cy="1078.3" r="1.1" fill="#fff" opacity="0.14"/><circle cx="1440.1" cy="849.2" r="1.0" fill="#fff" opacity="0.50"/><circle cx="1539.7" cy="224.6" r="0.9" fill="#fff" opacity="0.18"/><circle cx="1239.3" cy="1168.0" r="1.2" fill="#fff" opacity="0.42"/><circle cx="1326.4" cy="955.6" r="1.0" fill="#fff" opacity="0.50"/><circle cx="1784.1" cy="920.2" r="0.9" fill="#fff" opacity="0.28"/><circle cx="774.5" cy="989.9" r="0.9" fill="#fff" opacity="0.50"/><circle cx="393.3" cy="1062.5" r="1.1" fill="#fff" opacity="0.42"/><circle cx="1011.6" cy="839.7" r="0.9" fill="#fff" opacity="0.18"/><circle cx="443.7" cy="853.5" r="1.0" fill="#fff" opacity="0.14"/><circle cx="976.4" cy="1040.8" r="1.2" fill="#fff" opacity="0.18"/><circle cx="1115.9" cy="546.9" r="1.1" fill="#fff" opacity="0.42"/><circle cx="555.6" cy="1033.0" r="0.8" fill="#fff" opacity="0.18"/><circle cx="460.5" cy="1038.3" r="0.8" fill="#fff" opacity="0.34"/><circle cx="281.3" cy="413.4" r="0.7" fill="#fff" opacity="0.42"/><circle cx="1838.5" cy="1127.1" r="1.0" fill="#fff" opacity="0.22"/><circle cx="292.9" cy="877.9" r="1.2" fill="#fff" opacity="0.28"/><circle cx="1179.6" cy="405.1" r="0.7" fill="#fff" opacity="0.50"/><circle cx="1163.0" cy="1010.3" r="0.9" fill="#fff" opacity="0.34"/><circle cx="443.7" cy="348.7" r="0.7" fill="#fff" opacity="0.22"/><circle cx="1296.9" cy="1176.3" r="0.7" fill="#fff" opacity="0.22"/><circle cx="94.0" cy="672.0" r="0.7" fill="#fff" opacity="0.50"/><circle cx="1809.1" cy="342.7" r="1.0" fill="#fff" opacity="0.42"/><circle cx="1459.0" cy="594.5" r="1.1" fill="#fff" opacity="0.14"/><circle cx="1852.1" cy="752.5" r="1.1" fill="#fff" opacity="0.50"/><circle cx="110.5" cy="694.7" r="1.0" fill="#fff" opacity="0.14"/><circle cx="942.5" cy="426.2" r="0.9" fill="#fff" opacity="0.22"/><circle cx="1029.1" cy="355.8" r="1.1" fill="#fff" opacity="0.50"/><circle cx="1563.1" cy="412.4" r="1.1" fill="#fff" opacity="0.34"/><circle cx="1365.2" cy="347.7" r="0.8" fill="#fff" opacity="0.14"/><circle cx="1545.3" cy="397.4" r="0.9" fill="#fff" opacity="0.14"/><circle cx="1810.2" cy="403.7" r="0.7" fill="#fff" opacity="0.34"/><circle cx="258.1" cy="532.1" r="1.1" fill="#fff" opacity="0.28"/><circle cx="468.0" cy="1058.2" r="0.7" fill="#fff" opacity="0.50"/><circle cx="735.4" cy="687.8" r="1.2" fill="#fff" opacity="0.22"/><circle cx="182.6" cy="628.6" r="0.8" fill="#fff" opacity="0.28"/><circle cx="887.7" cy="854.3" r="1.2" fill="#fff" opacity="0.34"/><circle cx="888.9" cy="478.5" r="0.8" fill="#fff" opacity="0.14"/><circle cx="793.5" cy="413.4" r="0.8" fill="#fff" opacity="0.14"/><circle cx="1407.4" cy="670.9" r="1.0" fill="#fff" opacity="0.50"/><circle cx="415.4" cy="877.5" r="0.8" fill="#fff" opacity="0.50"/><circle cx="540.5" cy="719.4" r="1.2" fill="#fff" opacity="0.50"/><circle cx="1844.3" cy="925.9" r="0.7" fill="#fff" opacity="0.42"/><circle cx="1382.6" cy="894.9" r="0.7" fill="#fff" opacity="0.22"/><circle cx="430.0" cy="116.3" r="1.2" fill="#fff" opacity="0.42"/><circle cx="1428.4" cy="694.6" r="1.1" fill="#fff" opacity="0.22"/><circle cx="1207.6" cy="725.0" r="0.9" fill="#fff" opacity="0.22"/><circle cx="614.5" cy="150.8" r="0.8" fill="#fff" opacity="0.42"/><circle cx="705.7" cy="1092.7" r="1.2" fill="#fff" opacity="0.28"/><circle cx="1475.1" cy="479.9" r="0.8" fill="#fff" opacity="0.22"/><circle cx="1483.9" cy="621.3" r="0.7" fill="#fff" opacity="0.22"/><circle cx="1515.7" cy="626.8" r="0.8" fill="#fff" opacity="0.50"/><circle cx="251.6" cy="722.9" r="1.1" fill="#fff" opacity="0.28"/><circle cx="436.7" cy="379.6" r="0.7" fill="#fff" opacity="0.18"/><circle cx="1359.9" cy="1143.7" r="1.1" fill="#fff" opacity="0.28"/><circle cx="1478.2" cy="901.8" r="0.8" fill="#fff" opacity="0.50"/><circle cx="1703.0" cy="583.2" r="0.8" fill="#fff" opacity="0.14"/><circle cx="255.8" cy="904.1" r="1.1" fill="#fff" opacity="0.28"/><circle cx="101.9" cy="998.1" r="0.7" fill="#fff" opacity="0.28"/><circle cx="1489.2" cy="326.8" r="1.1" fill="#fff" opacity="0.34"/><circle cx="1735.3" cy="1048.1" r="0.9" fill="#fff" opacity="0.34"/><circle cx="1082.3" cy="610.9" r="1.2" fill="#fff" opacity="0.18"/><circle cx="64.5" cy="327.3" r="0.9" fill="#fff" opacity="0.28"/><circle cx="1673.9" cy="210.1" r="0.8" fill="#fff" opacity="0.18"/><circle cx="862.0" cy="732.4" r="1.2" fill="#fff" opacity="0.42"/><circle cx="1354.0" cy="586.5" r="0.7" fill="#fff" opacity="0.34"/><circle cx="1386.2" cy="161.3" r="1.0" fill="#fff" opacity="0.18"/><circle cx="788.6" cy="843.5" r="1.2" fill="#fff" opacity="0.18"/><circle cx="1372.1" cy="619.5" r="1.0" fill="#fff" opacity="0.34"/><circle cx="312.3" cy="1103.7" r="1.1" fill="#fff" opacity="0.28"/><circle cx="166.6" cy="364.9" r="0.8" fill="#fff" opacity="0.14"/><circle cx="774.0" cy="970.4" r="0.8" fill="#fff" opacity="0.42"/><circle cx="1412.0" cy="815.9" r="0.8" fill="#fff" opacity="0.14"/><circle cx="1724.4" cy="322.5" r="0.7" fill="#fff" opacity="0.14"/><circle cx="910.8" cy="545.0" r="0.8" fill="#fff" opacity="0.50"/><circle cx="1289.3" cy="1127.3" r="1.2" fill="#fff" opacity="0.34"/><circle cx="1745.2" cy="391.8" r="0.8" fill="#fff" opacity="0.28"/><circle cx="84.6" cy="936.3" r="0.7" fill="#fff" opacity="0.50"/><circle cx="1844.5" cy="884.4" r="0.8" fill="#fff" opacity="0.18"/><circle cx="1538.4" cy="281.4" r="1.1" fill="#fff" opacity="0.22"/><circle cx="246.0" cy="969.2" r="1.0" fill="#fff" opacity="0.14"/><circle cx="184.0" cy="134.7" r="1.2" fill="#fff" opacity="0.50"/><circle cx="208.8" cy="720.9" r="1.1" fill="#fff" opacity="0.34"/><circle cx="1510.3" cy="694.3" r="1.2" fill="#fff" opacity="0.14"/><circle cx="1270.0" cy="779.8" r="1.0" fill="#fff" opacity="0.28"/><circle cx="1287.1" cy="719.0" r="0.8" fill="#fff" opacity="0.14"/><circle cx="396.3" cy="660.7" r="1.0" fill="#fff" opacity="0.18"/><circle cx="276.1" cy="818.4" r="0.8" fill="#fff" opacity="0.42"/><circle cx="841.7" cy="223.7" r="0.7" fill="#fff" opacity="0.34"/><circle cx="1008.8" cy="848.8" r="0.7" fill="#fff" opacity="0.42"/><circle cx="491.3" cy="1073.3" r="0.7" fill="#fff" opacity="0.14"/><circle cx="728.5" cy="435.6" r="0.9" fill="#fff" opacity="0.18"/><circle cx="961.7" cy="737.0" r="0.9" fill="#fff" opacity="0.50"/><circle cx="404.9" cy="188.9" r="0.7" fill="#fff" opacity="0.14"/><circle cx="1309.5" cy="947.6" r="0.8" fill="#fff" opacity="0.34"/><circle cx="761.2" cy="1186.1" r="1.1" fill="#fff" opacity="0.34"/><circle cx="1246.3" cy="1111.9" r="1.2" fill="#fff" opacity="0.50"/><circle cx="1519.0" cy="1108.0" r="0.7" fill="#fff" opacity="0.42"/><circle cx="1394.9" cy="840.5" r="0.8" fill="#fff" opacity="0.50"/><circle cx="1730.3" cy="984.8" r="0.7" fill="#fff" opacity="0.18"/><circle cx="1191.3" cy="425.3" r="0.9" fill="#fff" opacity="0.42"/><circle cx="298.2" cy="970.0" r="0.9" fill="#fff" opacity="0.14"/><circle cx="648.9" cy="206.4" r="1.0" fill="#fff" opacity="0.18"/><circle cx="1858.8" cy="822.7" r="1.0" fill="#fff" opacity="0.50"/><circle cx="1199.3" cy="932.2" r="0.9" fill="#fff" opacity="0.22"/><circle cx="1532.1" cy="116.5" r="1.1" fill="#fff" opacity="0.14"/><circle cx="678.9" cy="701.5" r="0.9" fill="#fff" opacity="0.50"/><circle cx="656.8" cy="951.0" r="0.8" fill="#fff" opacity="0.22"/><circle cx="1515.4" cy="688.3" r="0.7" fill="#fff" opacity="0.14"/><circle cx="1572.3" cy="447.7" r="1.2" fill="#fff" opacity="0.22"/><circle cx="727.6" cy="694.1" r="1.0" fill="#fff" opacity="0.18"/><circle cx="440.8" cy="160.9" r="1.2" fill="#fff" opacity="0.34"/><circle cx="502.5" cy="1112.9" r="1.1" fill="#fff" opacity="0.42"/><circle cx="1481.8" cy="797.9" r="1.2" fill="#fff" opacity="0.18"/><circle cx="452.9" cy="934.1" r="0.7" fill="#fff" opacity="0.42"/><circle cx="530.5" cy="890.8" r="0.8" fill="#fff" opacity="0.34"/><circle cx="858.2" cy="858.9" r="1.2" fill="#fff" opacity="0.42"/><circle cx="575.0" cy="532.8" r="0.9" fill="#fff" opacity="0.22"/><circle cx="1821.4" cy="203.1" r="0.8" fill="#fff" opacity="0.42"/><circle cx="529.3" cy="1164.7" r="1.2" fill="#fff" opacity="0.42"/><circle cx="1140.5" cy="825.0" r="1.1" fill="#fff" opacity="0.14"/><circle cx="1331.7" cy="436.9" r="0.7" fill="#fff" opacity="0.42"/><circle cx="174.3" cy="118.0" r="0.9" fill="#fff" opacity="0.14"/><circle cx="313.1" cy="226.4" r="1.0" fill="#fff" opacity="0.42"/><circle cx="1837.9" cy="859.7" r="0.9" fill="#fff" opacity="0.50"/><circle cx="880.4" cy="1093.7" r="0.9" fill="#fff" opacity="0.22"/><circle cx="778.6" cy="869.8" r="0.8" fill="#fff" opacity="0.28"/><circle cx="1874.3" cy="1069.6" r="1.0" fill="#fff" opacity="0.22"/><circle cx="645.7" cy="329.1" r="1.0" fill="#fff" opacity="0.50"/><circle cx="1496.8" cy="219.4" r="0.8" fill="#fff" opacity="0.50"/><circle cx="697.4" cy="471.8" r="1.1" fill="#fff" opacity="0.14"/><circle cx="1609.5" cy="182.1" r="0.7" fill="#fff" opacity="0.18"/><circle cx="1493.0" cy="831.1" r="0.9" fill="#fff" opacity="0.42"/><circle cx="535.8" cy="152.3" r="1.0" fill="#fff" opacity="0.14"/><circle cx="1593.3" cy="165.1" r="0.9" fill="#fff" opacity="0.42"/><circle cx="214.9" cy="745.2" r="0.7" fill="#fff" opacity="0.14"/><circle cx="596.3" cy="397.7" r="0.8" fill="#fff" opacity="0.22"/><circle cx="721.2" cy="898.4" r="0.8" fill="#fff" opacity="0.22"/><circle cx="1503.2" cy="379.3" r="0.9" fill="#fff" opacity="0.18"/><circle cx="1015.0" cy="224.8" r="0.8" fill="#fff" opacity="0.50"/><circle cx="356.6" cy="940.4" r="0.7" fill="#fff" opacity="0.18"/><circle cx="1246.4" cy="1079.1" r="1.0" fill="#fff" opacity="0.50"/><circle cx="724.3" cy="808.9" r="1.0" fill="#fff" opacity="0.22"/><circle cx="1653.8" cy="157.7" r="1.2" fill="#fff" opacity="0.28"/><circle cx="1592.5" cy="360.8" r="0.7" fill="#fff" opacity="0.28"/><circle cx="858.9" cy="229.7" r="1.0" fill="#fff" opacity="0.34"/><circle cx="1362.3" cy="205.3" r="0.7" fill="#fff" opacity="0.28"/><circle cx="934.8" cy="293.5" r="0.8" fill="#fff" opacity="0.28"/><circle cx="862.4" cy="232.4" r="0.7" fill="#fff" opacity="0.22"/><circle cx="716.6" cy="619.0" r="0.9" fill="#fff" opacity="0.34"/><circle cx="156.6" cy="663.3" r="1.0" fill="#fff" opacity="0.42"/><circle cx="448.8" cy="775.5" r="1.0" fill="#fff" opacity="0.14"/><circle cx="161.4" cy="577.9" r="0.7" fill="#fff" opacity="0.18"/><circle cx="1012.2" cy="664.6" r="0.9" fill="#fff" opacity="0.18"/><circle cx="238.1" cy="628.0" r="1.0" fill="#fff" opacity="0.28"/><circle cx="1497.9" cy="247.2" r="1.0" fill="#fff" opacity="0.42"/><circle cx="636.7" cy="328.3" r="1.2" fill="#fff" opacity="0.50"/><circle cx="716.8" cy="233.9" r="1.0" fill="#fff" opacity="0.28"/><circle cx="525.2" cy="663.5" r="1.2" fill="#fff" opacity="0.42"/><circle cx="1546.7" cy="1096.7" r="1.2" fill="#fff" opacity="0.28"/><circle cx="1317.0" cy="137.5" r="1.2" fill="#fff" opacity="0.18"/><circle cx="1474.8" cy="834.2" r="0.8" fill="#fff" opacity="0.42"/><circle cx="722.8" cy="528.9" r="0.9" fill="#fff" opacity="0.42"/><circle cx="127.9" cy="1047.0" r="1.2" fill="#fff" opacity="0.42"/><circle cx="385.9" cy="352.0" r="1.1" fill="#fff" opacity="0.28"/><circle cx="1712.6" cy="192.3" r="0.8" fill="#fff" opacity="0.50"/><circle cx="117.2" cy="585.8" r="0.8" fill="#fff" opacity="0.50"/><circle cx="404.0" cy="927.3" r="1.1" fill="#fff" opacity="0.18"/><circle cx="1782.4" cy="545.0" r="1.2" fill="#fff" opacity="0.18"/><circle cx="74.2" cy="1147.1" r="0.8" fill="#fff" opacity="0.14"/><circle cx="930.2" cy="665.8" r="1.2" fill="#fff" opacity="0.28"/><circle cx="1290.6" cy="335.9" r="0.8" fill="#fff" opacity="0.18"/><circle cx="1587.9" cy="324.5" r="1.0" fill="#fff" opacity="0.22"/><circle cx="468.0" cy="1161.3" r="0.9" fill="#fff" opacity="0.14"/><circle cx="801.1" cy="480.2" r="1.2" fill="#fff" opacity="0.42"/><circle cx="93.3" cy="514.1" r="0.8" fill="#fff" opacity="0.18"/><circle cx="1577.1" cy="102.2" r="1.1" fill="#fff" opacity="0.50"/><circle cx="526.2" cy="602.5" r="1.1" fill="#fff" opacity="0.34"/><circle cx="1362.7" cy="253.7" r="0.8" fill="#fff" opacity="0.34"/><circle cx="273.1" cy="1160.2" r="0.8" fill="#fff" opacity="0.18"/><circle cx="1891.2" cy="251.1" r="0.9" fill="#fff" opacity="0.50"/><circle cx="155.9" cy="360.2" r="0.8" fill="#fff" opacity="0.14"/><circle cx="1130.2" cy="600.6" r="1.0" fill="#fff" opacity="0.22"/><circle cx="1688.3" cy="831.2" r="0.8" fill="#fff" opacity="0.42"/><circle cx="546.6" cy="1140.1" r="1.0" fill="#fff" opacity="0.14"/><circle cx="146.1" cy="1110.1" r="0.7" fill="#fff" opacity="0.14"/><circle cx="1717.0" cy="179.7" r="0.8" fill="#fff" opacity="0.50"/><circle cx="306.0" cy="182.8" r="1.0" fill="#fff" opacity="0.50"/><circle cx="604.4" cy="832.8" r="1.2" fill="#fff" opacity="0.34"/><circle cx="1125.6" cy="593.8" r="1.0" fill="#fff" opacity="0.42"/><circle cx="1028.6" cy="851.2" r="0.9" fill="#fff" opacity="0.34"/><circle cx="1824.7" cy="314.3" r="0.7" fill="#fff" opacity="0.34"/><circle cx="1705.2" cy="730.5" r="0.8" fill="#fff" opacity="0.50"/><circle cx="1326.5" cy="383.7" r="0.8" fill="#fff" opacity="0.28"/><circle cx="726.0" cy="679.3" r="1.2" fill="#fff" opacity="0.50"/><circle cx="186.3" cy="918.9" r="1.1" fill="#fff" opacity="0.42"/><circle cx="920.3" cy="842.7" r="0.7" fill="#fff" opacity="0.28"/><circle cx="927.1" cy="849.1" r="1.2" fill="#fff" opacity="0.42"/><circle cx="1690.8" cy="615.0" r="0.9" fill="#fff" opacity="0.50"/><circle cx="1841.0" cy="1180.0" r="0.7" fill="#fff" opacity="0.18"/><circle cx="1050.9" cy="544.0" r="0.8" fill="#fff" opacity="0.42"/><circle cx="479.5" cy="912.3" r="0.9" fill="#fff" opacity="0.28"/><circle cx="1273.5" cy="947.1" r="0.8" fill="#fff" opacity="0.18"/><circle cx="1230.1" cy="1070.6" r="0.7" fill="#fff" opacity="0.14"/><circle cx="990.7" cy="1076.8" r="1.1" fill="#fff" opacity="0.28"/><circle cx="1242.3" cy="619.5" r="1.0" fill="#fff" opacity="0.22"/><circle cx="1114.3" cy="494.0" r="1.2" fill="#fff" opacity="0.50"/><circle cx="856.8" cy="295.3" r="1.0" fill="#fff" opacity="0.42"/><circle cx="83.5" cy="846.9" r="0.8" fill="#fff" opacity="0.28"/><circle cx="732.4" cy="1162.7" r="0.9" fill="#fff" opacity="0.50"/><circle cx="1065.1" cy="326.8" r="0.8" fill="#fff" opacity="0.42"/><circle cx="1142.4" cy="949.4" r="0.9" fill="#fff" opacity="0.50"/><circle cx="1618.1" cy="816.9" r="0.8" fill="#fff" opacity="0.50"/><circle cx="170.3" cy="603.3" r="1.2" fill="#fff" opacity="0.50"/><circle cx="1136.2" cy="320.5" r="0.7" fill="#fff" opacity="0.34"/><circle cx="1036.7" cy="901.6" r="0.9" fill="#fff" opacity="0.14"/><circle cx="180.1" cy="107.2" r="0.8" fill="#fff" opacity="0.14"/><circle cx="1333.5" cy="106.3" r="0.8" fill="#fff" opacity="0.18"/><circle cx="539.6" cy="885.6" r="0.8" fill="#fff" opacity="0.14"/><circle cx="95.1" cy="192.9" r="0.7" fill="#fff" opacity="0.18"/><circle cx="324.9" cy="471.6" r="1.1" fill="#fff" opacity="0.22"/><circle cx="641.1" cy="562.0" r="1.0" fill="#fff" opacity="0.50"/><circle cx="527.4" cy="162.6" r="0.7" fill="#fff" opacity="0.22"/><circle cx="350.4" cy="202.7" r="1.1" fill="#fff" opacity="0.14"/><circle cx="1334.9" cy="391.8" r="1.2" fill="#fff" opacity="0.22"/><circle cx="680.8" cy="644.0" r="0.8" fill="#fff" opacity="0.34"/><circle cx="1763.1" cy="719.5" r="0.7" fill="#fff" opacity="0.50"/><circle cx="334.7" cy="865.3" r="1.0" fill="#fff" opacity="0.22"/><circle cx="1372.5" cy="354.8" r="0.7" fill="#fff" opacity="0.50"/><circle cx="921.7" cy="174.3" r="0.8" fill="#fff" opacity="0.18"/><circle cx="1514.2" cy="600.3" r="1.0" fill="#fff" opacity="0.50"/><circle cx="1552.4" cy="787.9" r="1.2" fill="#fff" opacity="0.28"/><circle cx="1092.3" cy="254.3" r="0.8" fill="#fff" opacity="0.34"/><circle cx="448.7" cy="1027.6" r="1.0" fill="#fff" opacity="0.18"/><circle cx="1434.8" cy="654.4" r="1.1" fill="#fff" opacity="0.34"/><circle cx="662.6" cy="164.9" r="0.8" fill="#fff" opacity="0.42"/><circle cx="94.3" cy="667.1" r="0.8" fill="#fff" opacity="0.42"/><circle cx="1374.0" cy="602.6" r="0.8" fill="#fff" opacity="0.18"/><circle cx="428.1" cy="444.9" r="1.2" fill="#fff" opacity="0.22"/><circle cx="292.9" cy="170.3" r="1.0" fill="#fff" opacity="0.50"/><circle cx="675.6" cy="877.9" r="1.2" fill="#fff" opacity="0.42"/><circle cx="1515.0" cy="443.3" r="0.9" fill="#fff" opacity="0.34"/><circle cx="1380.2" cy="163.3" r="1.1" fill="#fff" opacity="0.22"/><circle cx="215.3" cy="156.1" r="1.1" fill="#fff" opacity="0.18"/><circle cx="329.8" cy="1128.7" r="0.8" fill="#fff" opacity="0.28"/><circle cx="106.7" cy="455.3" r="1.1" fill="#fff" opacity="0.42"/><circle cx="1011.7" cy="501.8" r="1.2" fill="#fff" opacity="0.28"/><circle cx="1026.4" cy="956.5" r="0.7" fill="#fff" opacity="0.42"/><circle cx="180.1" cy="528.5" r="1.0" fill="#fff" opacity="0.14"/><circle cx="516.5" cy="838.7" r="0.8" fill="#fff" opacity="0.28"/><circle cx="637.5" cy="627.5" r="1.2" fill="#fff" opacity="0.28"/><circle cx="1470.7" cy="511.6" r="1.0" fill="#fff" opacity="0.50"/><circle cx="1760.5" cy="1131.2" r="1.1" fill="#fff" opacity="0.14"/><circle cx="244.4" cy="604.2" r="1.2" fill="#fff" opacity="0.22"/><circle cx="296.2" cy="1047.7" r="1.1" fill="#fff" opacity="0.18"/><circle cx="167.5" cy="855.8" r="0.7" fill="#fff" opacity="0.22"/><circle cx="1263.0" cy="1041.4" r="1.2" fill="#fff" opacity="0.50"/><circle cx="679.1" cy="674.8" r="0.8" fill="#fff" opacity="0.28"/><circle cx="1336.4" cy="890.9" r="1.2" fill="#fff" opacity="0.14"/><circle cx="109.8" cy="1104.6" r="1.2" fill="#fff" opacity="0.18"/><circle cx="1027.8" cy="873.6" r="0.9" fill="#fff" opacity="0.18"/><circle cx="1559.6" cy="767.2" r="1.0" fill="#fff" opacity="0.18"/><circle cx="492.7" cy="528.3" r="1.0" fill="#fff" opacity="0.42"/><circle cx="674.0" cy="237.8" r="0.8" fill="#fff" opacity="0.28"/><circle cx="1841.9" cy="230.9" r="0.9" fill="#fff" opacity="0.42"/><circle cx="1783.0" cy="895.6" r="1.0" fill="#fff" opacity="0.28"/><circle cx="468.4" cy="305.8" r="0.9" fill="#fff" opacity="0.50"/><circle cx="908.4" cy="891.1" r="1.2" fill="#fff" opacity="0.50"/><circle cx="289.9" cy="315.4" r="1.0" fill="#fff" opacity="0.14"/><circle cx="1649.7" cy="667.4" r="0.8" fill="#fff" opacity="0.14"/><circle cx="521.3" cy="619.1" r="1.2" fill="#fff" opacity="0.18"/><circle cx="1850.2" cy="780.1" r="0.9" fill="#fff" opacity="0.18"/><circle cx="1395.3" cy="1037.2" r="1.2" fill="#fff" opacity="0.18"/><circle cx="1266.7" cy="164.1" r="0.7" fill="#fff" opacity="0.50"/><circle cx="478.1" cy="480.9" r="0.9" fill="#fff" opacity="0.34"/><circle cx="123.5" cy="143.4" r="0.9" fill="#fff" opacity="0.18"/><circle cx="1614.8" cy="1004.4" r="0.9" fill="#fff" opacity="0.22"/><circle cx="606.8" cy="782.8" r="1.0" fill="#fff" opacity="0.28"/><circle cx="574.3" cy="1140.9" r="0.7" fill="#fff" opacity="0.42"/><circle cx="807.7" cy="802.7" r="1.1" fill="#fff" opacity="0.50"/><circle cx="1731.5" cy="1002.3" r="1.2" fill="#fff" opacity="0.50"/><circle cx="147.2" cy="1082.2" r="0.8" fill="#fff" opacity="0.50"/><circle cx="328.4" cy="440.1" r="1.1" fill="#fff" opacity="0.42"/><circle cx="651.7" cy="583.6" r="0.9" fill="#fff" opacity="0.18"/><circle cx="493.0" cy="888.0" r="1.2" fill="#fff" opacity="0.50"/><circle cx="152.1" cy="1089.3" r="0.8" fill="#fff" opacity="0.50"/><circle cx="640.2" cy="955.4" r="1.2" fill="#fff" opacity="0.50"/><circle cx="1298.6" cy="821.0" r="0.7" fill="#fff" opacity="0.50"/><circle cx="1654.7" cy="705.6" r="1.0" fill="#fff" opacity="0.22"/><circle cx="917.6" cy="610.9" r="1.2" fill="#fff" opacity="0.50"/><circle cx="1594.3" cy="905.8" r="0.9" fill="#fff" opacity="0.18"/><circle cx="169.0" cy="232.4" r="0.7" fill="#fff" opacity="0.50"/><circle cx="98.1" cy="509.8" r="1.1" fill="#fff" opacity="0.14"/><circle cx="968.6" cy="159.9" r="1.0" fill="#fff" opacity="0.42"/><circle cx="791.6" cy="986.2" r="1.0" fill="#fff" opacity="0.22"/><circle cx="1228.0" cy="1079.5" r="1.1" fill="#fff" opacity="0.28"/><circle cx="638.0" cy="482.1" r="0.9" fill="#fff" opacity="0.42"/><circle cx="1661.7" cy="733.7" r="0.7" fill="#fff" opacity="0.34"/><circle cx="1133.7" cy="1015.8" r="1.1" fill="#fff" opacity="0.14"/><circle cx="943.1" cy="560.9" r="1.2" fill="#fff" opacity="0.18"/><circle cx="434.2" cy="501.3" r="0.9" fill="#fff" opacity="0.42"/><circle cx="1333.6" cy="239.6" r="1.1" fill="#fff" opacity="0.14"/><circle cx="901.6" cy="729.3" r="0.7" fill="#fff" opacity="0.42"/><circle cx="292.4" cy="1202.6" r="0.8" fill="#fff" opacity="0.34"/><circle cx="587.3" cy="669.7" r="1.2" fill="#fff" opacity="0.22"/><circle cx="238.2" cy="976.9" r="1.1" fill="#fff" opacity="0.50"/><circle cx="157.5" cy="506.1" r="1.2" fill="#fff" opacity="0.28"/><circle cx="341.7" cy="803.9" r="0.7" fill="#fff" opacity="0.28"/><circle cx="422.8" cy="434.5" r="0.9" fill="#fff" opacity="0.34"/><circle cx="1400.5" cy="307.9" r="1.1" fill="#fff" opacity="0.50"/><circle cx="973.1" cy="838.6" r="0.8" fill="#fff" opacity="0.34"/><circle cx="1814.1" cy="1204.0" r="1.1" fill="#fff" opacity="0.50"/><circle cx="353.4" cy="121.3" r="1.2" fill="#fff" opacity="0.34"/><circle cx="1670.9" cy="226.3" r="1.1" fill="#fff" opacity="0.22"/><circle cx="149.4" cy="163.1" r="1.1" fill="#fff" opacity="0.14"/><circle cx="1712.2" cy="1040.0" r="1.2" fill="#fff" opacity="0.42"/><circle cx="1811.0" cy="664.9" r="0.8" fill="#fff" opacity="0.34"/><circle cx="444.3" cy="270.8" r="1.0" fill="#fff" opacity="0.50"/><circle cx="107.1" cy="252.1" r="1.2" fill="#fff" opacity="0.22"/><circle cx="1164.5" cy="359.6" r="0.8" fill="#fff" opacity="0.34"/><circle cx="1209.3" cy="161.7" r="0.7" fill="#fff" opacity="0.50"/><circle cx="678.0" cy="892.0" r="1.2" fill="#fff" opacity="0.50"/><circle cx="487.9" cy="383.7" r="1.1" fill="#fff" opacity="0.50"/><circle cx="374.4" cy="766.4" r="0.8" fill="#fff" opacity="0.34"/><circle cx="1380.8" cy="223.0" r="1.0" fill="#fff" opacity="0.42"/><circle cx="1146.1" cy="339.9" r="1.0" fill="#fff" opacity="0.34"/><circle cx="147.9" cy="1142.4" r="1.0" fill="#fff" opacity="0.50"/><circle cx="210.1" cy="178.7" r="1.1" fill="#fff" opacity="0.42"/><circle cx="815.9" cy="454.6" r="0.8" fill="#fff" opacity="0.42"/><circle cx="449.9" cy="700.4" r="1.0" fill="#fff" opacity="0.50"/><circle cx="1381.0" cy="1200.2" r="0.8" fill="#fff" opacity="0.18"/><circle cx="1653.1" cy="494.9" r="1.0" fill="#fff" opacity="0.22"/><circle cx="622.4" cy="801.8" r="1.0" fill="#fff" opacity="0.14"/><circle cx="313.7" cy="751.9" r="0.7" fill="#fff" opacity="0.34"/><circle cx="596.8" cy="562.2" r="1.0" fill="#fff" opacity="0.50"/><circle cx="1844.2" cy="637.8" r="0.9" fill="#fff" opacity="0.28"/><circle cx="1006.6" cy="622.0" r="1.1" fill="#fff" opacity="0.18"/><circle cx="972.8" cy="358.7" r="0.9" fill="#fff" opacity="0.42"/><circle cx="757.7" cy="178.7" r="0.7" fill="#fff" opacity="0.22"/><circle cx="1403.9" cy="471.8" r="1.2" fill="#fff" opacity="0.42"/><circle cx="1599.6" cy="813.3" r="1.0" fill="#fff" opacity="0.50"/><circle cx="1589.2" cy="705.8" r="0.7" fill="#fff" opacity="0.50"/><circle cx="1496.7" cy="627.4" r="1.1" fill="#fff" opacity="0.42"/><circle cx="1363.7" cy="849.6" r="1.0" fill="#fff" opacity="0.34"/><circle cx="600.6" cy="712.8" r="1.2" fill="#fff" opacity="0.42"/><circle cx="1405.7" cy="1148.1" r="0.8" fill="#fff" opacity="0.42"/><circle cx="725.3" cy="1040.4" r="0.9" fill="#fff" opacity="0.34"/><circle cx="1104.1" cy="344.1" r="0.8" fill="#fff" opacity="0.34"/><circle cx="1068.2" cy="819.3" r="0.9" fill="#fff" opacity="0.14"/><circle cx="301.6" cy="1098.7" r="0.7" fill="#fff" opacity="0.34"/><circle cx="646.7" cy="630.5" r="1.0" fill="#fff" opacity="0.22"/><circle cx="720.8" cy="1088.5" r="0.9" fill="#fff" opacity="0.34"/><circle cx="1031.4" cy="1126.2" r="1.2" fill="#fff" opacity="0.28"/><circle cx="265.3" cy="382.5" r="1.1" fill="#fff" opacity="0.34"/><circle cx="1092.8" cy="1046.5" r="0.7" fill="#fff" opacity="0.22"/><circle cx="1525.4" cy="176.0" r="1.2" fill="#fff" opacity="0.34"/><circle cx="73.1" cy="1084.2" r="0.9" fill="#fff" opacity="0.50"/><circle cx="963.3" cy="1137.1" r="1.0" fill="#fff" opacity="0.14"/><circle cx="190.6" cy="333.1" r="1.2" fill="#fff" opacity="0.50"/><circle cx="310.1" cy="444.9" r="0.8" fill="#fff" opacity="0.14"/><circle cx="855.7" cy="236.4" r="1.2" fill="#fff" opacity="0.14"/><circle cx="1796.2" cy="709.1" r="0.7" fill="#fff" opacity="0.50"/><circle cx="1756.0" cy="580.3" r="0.8" fill="#fff" opacity="0.14"/><circle cx="1429.7" cy="1048.2" r="1.0" fill="#fff" opacity="0.28"/><circle cx="222.7" cy="1064.0" r="0.8" fill="#fff" opacity="0.34"/><circle cx="283.8" cy="434.5" r="0.7" fill="#fff" opacity="0.14"/><circle cx="346.7" cy="145.0" r="0.9" fill="#fff" opacity="0.42"/><circle cx="1330.9" cy="287.6" r="1.0" fill="#fff" opacity="0.18"/><circle cx="248.4" cy="319.6" r="0.9" fill="#fff" opacity="0.42"/><circle cx="1785.6" cy="320.2" r="0.7" fill="#fff" opacity="0.50"/><circle cx="851.7" cy="532.8" r="0.9" fill="#fff" opacity="0.28"/><circle cx="479.8" cy="1176.0" r="1.2" fill="#fff" opacity="0.42"/><circle cx="1710.1" cy="284.4" r="0.8" fill="#fff" opacity="0.50"/><circle cx="697.9" cy="914.4" r="0.7" fill="#fff" opacity="0.28"/><circle cx="1028.2" cy="852.1" r="0.7" fill="#fff" opacity="0.50"/><circle cx="861.1" cy="973.6" r="1.1" fill="#fff" opacity="0.14"/><circle cx="883.3" cy="1073.3" r="1.1" fill="#fff" opacity="0.42"/><circle cx="672.1" cy="538.3" r="0.8" fill="#fff" opacity="0.50"/><circle cx="139.7" cy="968.7" r="1.1" fill="#fff" opacity="0.18"/><circle cx="966.5" cy="860.6" r="0.8" fill="#fff" opacity="0.42"/><circle cx="1241.8" cy="653.3" r="1.2" fill="#fff" opacity="0.34"/><circle cx="1781.0" cy="1032.6" r="0.9" fill="#fff" opacity="0.28"/><circle cx="1351.4" cy="310.3" r="1.0" fill="#fff" opacity="0.42"/><circle cx="1272.3" cy="469.8" r="1.0" fill="#fff" opacity="0.34"/><circle cx="1763.0" cy="779.9" r="0.9" fill="#fff" opacity="0.28"/><circle cx="402.8" cy="1196.8" r="0.8" fill="#fff" opacity="0.50"/><circle cx="1275.1" cy="779.3" r="0.7" fill="#fff" opacity="0.34"/><circle cx="1319.0" cy="452.7" r="1.1" fill="#fff" opacity="0.22"/><circle cx="1527.4" cy="473.2" r="1.1" fill="#fff" opacity="0.50"/><circle cx="1057.3" cy="1151.2" r="0.7" fill="#fff" opacity="0.28"/><circle cx="1765.4" cy="936.2" r="0.8" fill="#fff" opacity="0.28"/><circle cx="1453.6" cy="733.8" r="0.9" fill="#fff" opacity="0.34"/><circle cx="986.5" cy="878.9" r="0.7" fill="#fff" opacity="0.14"/><circle cx="1136.5" cy="249.2" r="1.0" fill="#fff" opacity="0.22"/><circle cx="1666.4" cy="770.0" r="1.0" fill="#fff" opacity="0.28"/><circle cx="1677.6" cy="994.1" r="0.7" fill="#fff" opacity="0.42"/><circle cx="878.3" cy="507.9" r="0.7" fill="#fff" opacity="0.28"/><circle cx="1588.7" cy="431.8" r="0.7" fill="#fff" opacity="0.42"/><circle cx="526.8" cy="963.8" r="0.8" fill="#fff" opacity="0.34"/><circle cx="1789.1" cy="1201.7" r="1.0" fill="#fff" opacity="0.50"/><circle cx="1104.7" cy="993.0" r="0.9" fill="#fff" opacity="0.28"/><circle cx="1236.2" cy="452.1" r="1.2" fill="#fff" opacity="0.42"/><circle cx="922.3" cy="232.7" r="1.2" fill="#fff" opacity="0.50"/><circle cx="318.0" cy="850.9" r="0.7" fill="#fff" opacity="0.34"/><circle cx="1872.4" cy="698.1" r="1.2" fill="#fff" opacity="0.18"/><circle cx="699.0" cy="1040.2" r="0.8" fill="#fff" opacity="0.22"/><circle cx="1552.9" cy="138.7" r="1.0" fill="#fff" opacity="0.14"/><circle cx="211.1" cy="1040.2" r="0.7" fill="#fff" opacity="0.18"/><circle cx="907.2" cy="618.9" r="1.2" fill="#fff" opacity="0.14"/><circle cx="1394.8" cy="480.2" r="1.1" fill="#fff" opacity="0.18"/><circle cx="1814.3" cy="813.0" r="0.7" fill="#fff" opacity="0.42"/><circle cx="393.7" cy="653.2" r="0.9" fill="#fff" opacity="0.18"/><circle cx="352.9" cy="1126.8" r="1.0" fill="#fff" opacity="0.50"/><circle cx="1499.3" cy="377.7" r="0.7" fill="#fff" opacity="0.18"/><circle cx="347.9" cy="1200.3" r="0.9" fill="#fff" opacity="0.50"/><circle cx="167.3" cy="524.2" r="1.1" fill="#fff" opacity="0.50"/><circle cx="1834.7" cy="335.9" r="1.0" fill="#fff" opacity="0.28"/><circle cx="1535.7" cy="853.6" r="1.2" fill="#fff" opacity="0.28"/><circle cx="478.6" cy="612.6" r="1.1" fill="#fff" opacity="0.18"/><circle cx="1752.5" cy="278.9" r="1.2" fill="#fff" opacity="0.14"/><circle cx="1072.2" cy="548.5" r="0.8" fill="#fff" opacity="0.18"/><circle cx="1707.6" cy="619.5" r="0.9" fill="#fff" opacity="0.34"/><circle cx="728.6" cy="712.5" r="1.1" fill="#fff" opacity="0.22"/><circle cx="349.8" cy="1078.5" r="0.9" fill="#fff" opacity="0.28"/><circle cx="1819.9" cy="1183.8" r="0.8" fill="#fff" opacity="0.28"/><circle cx="1124.2" cy="1167.4" r="1.0" fill="#fff" opacity="0.34"/><circle cx="1060.0" cy="447.9" r="0.7" fill="#fff" opacity="0.22"/><circle cx="428.0" cy="238.6" r="0.9" fill="#fff" opacity="0.28"/><circle cx="1211.1" cy="722.5" r="1.2" fill="#fff" opacity="0.42"/><circle cx="718.8" cy="1148.2" r="1.2" fill="#fff" opacity="0.18"/><circle cx="1052.2" cy="1052.5" r="1.2" fill="#fff" opacity="0.18"/><circle cx="715.1" cy="768.5" r="0.9" fill="#fff" opacity="0.22"/><circle cx="1837.3" cy="371.1" r="1.1" fill="#fff" opacity="0.14"/><circle cx="826.0" cy="333.0" r="0.7" fill="#fff" opacity="0.18"/><circle cx="1000.0" cy="832.2" r="0.8" fill="#fff" opacity="0.42"/><circle cx="254.4" cy="417.9" r="0.7" fill="#fff" opacity="0.18"/><circle cx="1300.9" cy="887.9" r="0.7" fill="#fff" opacity="0.22"/><circle cx="141.8" cy="572.1" r="0.9" fill="#fff" opacity="0.22"/><circle cx="1700.9" cy="865.8" r="1.1" fill="#fff" opacity="0.28"/><circle cx="696.1" cy="884.6" r="1.1" fill="#fff" opacity="0.50"/><circle cx="384.1" cy="733.5" r="0.8" fill="#fff" opacity="0.50"/><circle cx="464.1" cy="334.0" r="0.7" fill="#fff" opacity="0.22"/><circle cx="1130.0" cy="917.1" r="0.9" fill="#fff" opacity="0.42"/><circle cx="1832.1" cy="548.4" r="1.2" fill="#fff" opacity="0.14"/><circle cx="175.0" cy="1017.1" r="1.0" fill="#fff" opacity="0.14"/><circle cx="1579.9" cy="1085.4" r="1.1" fill="#fff" opacity="0.18"/><circle cx="839.5" cy="1061.6" r="0.7" fill="#fff" opacity="0.14"/><circle cx="1882.8" cy="1196.9" r="1.1" fill="#fff" opacity="0.34"/><circle cx="1255.3" cy="279.6" r="1.2" fill="#fff" opacity="0.22"/><circle cx="1067.0" cy="497.6" r="0.9" fill="#fff" opacity="0.22"/><circle cx="1052.7" cy="281.2" r="0.8" fill="#fff" opacity="0.18"/><circle cx="254.5" cy="980.1" r="0.7" fill="#fff" opacity="0.18"/><circle cx="621.0" cy="727.0" r="0.7" fill="#fff" opacity="0.34"/><circle cx="966.2" cy="612.6" r="0.7" fill="#fff" opacity="0.42"/><circle cx="158.1" cy="567.8" r="0.8" fill="#fff" opacity="0.50"/><circle cx="61.6" cy="1088.7" r="0.9" fill="#fff" opacity="0.18"/><circle cx="1476.7" cy="1022.0" r="1.1" fill="#fff" opacity="0.28"/><circle cx="842.3" cy="627.0" r="0.7" fill="#fff" opacity="0.18"/><circle cx="1848.9" cy="1195.8" r="0.7" fill="#fff" opacity="0.28"/><circle cx="1871.5" cy="365.2" r="0.7" fill="#fff" opacity="0.34"/><circle cx="1756.0" cy="320.4" r="0.9" fill="#fff" opacity="0.14"/><circle cx="1477.4" cy="933.4" r="0.9" fill="#fff" opacity="0.42"/><circle cx="196.3" cy="933.5" r="0.7" fill="#fff" opacity="0.34"/><circle cx="1486.7" cy="594.5" r="1.2" fill="#fff" opacity="0.18"/><circle cx="368.1" cy="578.0" r="0.7" fill="#fff" opacity="0.42"/><circle cx="997.5" cy="1125.1" r="1.1" fill="#fff" opacity="0.14"/><circle cx="968.4" cy="1192.8" r="1.2" fill="#fff" opacity="0.42"/><circle cx="1418.9" cy="1004.3" r="0.7" fill="#fff" opacity="0.22"/><circle cx="985.2" cy="471.5" r="0.7" fill="#fff" opacity="0.34"/><circle cx="1419.4" cy="891.9" r="1.1" fill="#fff" opacity="0.28"/><circle cx="360.8" cy="839.9" r="1.0" fill="#fff" opacity="0.22"/><circle cx="1269.6" cy="202.8" r="1.0" fill="#fff" opacity="0.14"/><circle cx="1344.1" cy="831.4" r="0.7" fill="#fff" opacity="0.18"/><circle cx="802.9" cy="692.9" r="0.9" fill="#fff" opacity="0.22"/><circle cx="668.3" cy="395.4" r="1.2" fill="#fff" opacity="0.22"/><circle cx="461.2" cy="543.6" r="1.2" fill="#fff" opacity="0.50"/><circle cx="844.8" cy="273.6" r="0.7" fill="#fff" opacity="0.14"/><circle cx="1051.8" cy="1193.6" r="1.2" fill="#fff" opacity="0.14"/><circle cx="755.8" cy="851.9" r="0.9" fill="#fff" opacity="0.18"/><circle cx="233.8" cy="1121.3" r="1.1" fill="#fff" opacity="0.50"/><circle cx="876.4" cy="171.9" r="1.1" fill="#fff" opacity="0.50"/><circle cx="1694.7" cy="241.9" r="0.7" fill="#fff" opacity="0.28"/><circle cx="857.0" cy="829.3" r="0.7" fill="#fff" opacity="0.42"/><circle cx="391.7" cy="1187.5" r="1.2" fill="#fff" opacity="0.14"/><circle cx="1505.9" cy="973.0" r="0.7" fill="#fff" opacity="0.14"/><circle cx="1528.6" cy="366.5" r="0.8" fill="#fff" opacity="0.34"/><circle cx="1798.9" cy="397.6" r="0.8" fill="#fff" opacity="0.42"/><circle cx="1580.5" cy="550.1" r="0.9" fill="#fff" opacity="0.18"/><circle cx="1853.7" cy="584.6" r="0.7" fill="#fff" opacity="0.18"/><circle cx="219.6" cy="902.2" r="0.8" fill="#fff" opacity="0.42"/><circle cx="1723.1" cy="828.3" r="0.9" fill="#fff" opacity="0.42"/><circle cx="266.6" cy="992.2" r="0.7" fill="#fff" opacity="0.42"/><circle cx="458.3" cy="270.6" r="0.9" fill="#fff" opacity="0.14"/><circle cx="1663.0" cy="1200.0" r="0.9" fill="#fff" opacity="0.50"/><circle cx="1726.1" cy="968.2" r="1.1" fill="#fff" opacity="0.28"/><circle cx="1837.5" cy="811.8" r="1.1" fill="#fff" opacity="0.34"/><circle cx="413.2" cy="673.6" r="1.0" fill="#fff" opacity="0.42"/><circle cx="672.8" cy="513.8" r="1.1" fill="#fff" opacity="0.34"/><circle cx="1134.8" cy="347.2" r="0.9" fill="#fff" opacity="0.42"/><circle cx="977.8" cy="657.3" r="1.0" fill="#fff" opacity="0.28"/><circle cx="1275.0" cy="306.4" r="1.1" fill="#fff" opacity="0.22"/><circle cx="559.3" cy="950.6" r="1.2" fill="#fff" opacity="0.28"/><circle cx="1490.4" cy="672.2" r="0.8" fill="#fff" opacity="0.42"/><circle cx="1756.9" cy="664.9" r="1.0" fill="#fff" opacity="0.34"/><circle cx="586.2" cy="545.0" r="1.2" fill="#fff" opacity="0.14"/><circle cx="1559.6" cy="633.8" r="1.2" fill="#fff" opacity="0.42"/><circle cx="443.4" cy="600.1" r="0.9" fill="#fff" opacity="0.42"/><circle cx="615.7" cy="498.1" r="0.9" fill="#fff" opacity="0.42"/><circle cx="1256.6" cy="1012.3" r="1.0" fill="#fff" opacity="0.42"/><circle cx="1405.7" cy="383.9" r="0.9" fill="#fff" opacity="0.42"/><circle cx="81.9" cy="706.4" r="0.9" fill="#fff" opacity="0.22"/><circle cx="805.9" cy="584.1" r="1.1" fill="#fff" opacity="0.34"/><circle cx="1691.2" cy="1058.9" r="0.9" fill="#fff" opacity="0.50"/><circle cx="1516.5" cy="477.1" r="1.0" fill="#fff" opacity="0.14"/><circle cx="1377.3" cy="914.2" r="0.8" fill="#fff" opacity="0.28"/><circle cx="239.2" cy="319.1" r="1.0" fill="#fff" opacity="0.14"/><circle cx="1363.3" cy="1088.7" r="1.0" fill="#fff" opacity="0.50"/><circle cx="1816.3" cy="420.0" r="0.8" fill="#fff" opacity="0.22"/><circle cx="334.7" cy="808.8" r="1.2" fill="#fff" opacity="0.18"/><circle cx="700.1" cy="168.9" r="1.2" fill="#fff" opacity="0.50"/><circle cx="503.2" cy="142.4" r="0.8" fill="#fff" opacity="0.14"/><circle cx="838.4" cy="313.9" r="0.9" fill="#fff" opacity="0.34"/><circle cx="270.9" cy="1096.9" r="1.0" fill="#fff" opacity="0.34"/><circle cx="783.6" cy="758.0" r="0.9" fill="#fff" opacity="0.14"/><circle cx="773.4" cy="306.8" r="0.7" fill="#fff" opacity="0.42"/><circle cx="736.2" cy="940.9" r="0.9" fill="#fff" opacity="0.18"/><circle cx="1303.5" cy="790.3" r="0.8" fill="#fff" opacity="0.18"/><circle cx="88.6" cy="845.1" r="1.1" fill="#fff" opacity="0.18"/><circle cx="592.5" cy="322.6" r="0.8" fill="#fff" opacity="0.18"/><circle cx="919.6" cy="953.0" r="0.9" fill="#fff" opacity="0.14"/><circle cx="118.1" cy="460.5" r="1.2" fill="#fff" opacity="0.50"/><circle cx="1160.4" cy="664.1" r="0.7" fill="#fff" opacity="0.18"/><circle cx="443.2" cy="445.1" r="1.0" fill="#fff" opacity="0.22"/><circle cx="79.4" cy="353.5" r="0.9" fill="#fff" opacity="0.28"/><circle cx="494.0" cy="1046.0" r="0.8" fill="#fff" opacity="0.22"/><circle cx="1133.3" cy="517.7" r="0.7" fill="#fff" opacity="0.34"/><circle cx="1518.8" cy="995.1" r="0.9" fill="#fff" opacity="0.28"/><circle cx="1481.5" cy="630.0" r="0.7" fill="#fff" opacity="0.14"/><circle cx="1273.6" cy="611.1" r="1.1" fill="#fff" opacity="0.34"/><circle cx="373.9" cy="762.3" r="1.0" fill="#fff" opacity="0.34"/><circle cx="1813.4" cy="278.1" r="0.7" fill="#fff" opacity="0.22"/><circle cx="1449.4" cy="926.2" r="0.7" fill="#fff" opacity="0.22"/><circle cx="902.2" cy="336.2" r="0.7" fill="#fff" opacity="0.14"/><circle cx="223.3" cy="202.3" r="0.9" fill="#fff" opacity="0.14"/><circle cx="848.3" cy="661.6" r="0.9" fill="#fff" opacity="0.42"/><circle cx="692.1" cy="508.0" r="1.2" fill="#fff" opacity="0.18"/><circle cx="235.7" cy="683.7" r="0.7" fill="#fff" opacity="0.22"/><circle cx="585.9" cy="698.3" r="0.8" fill="#fff" opacity="0.28"/><circle cx="710.4" cy="471.7" r="1.1" fill="#fff" opacity="0.34"/><circle cx="1089.3" cy="415.0" r="0.7" fill="#fff" opacity="0.34"/><circle cx="1811.5" cy="509.1" r="0.7" fill="#fff" opacity="0.22"/><circle cx="1260.9" cy="688.3" r="0.9" fill="#fff" opacity="0.18"/><circle cx="656.3" cy="1033.2" r="0.9" fill="#fff" opacity="0.18"/><circle cx="820.3" cy="1156.5" r="0.9" fill="#fff" opacity="0.18"/><circle cx="791.9" cy="280.5" r="1.2" fill="#fff" opacity="0.18"/><circle cx="1276.2" cy="593.9" r="1.0" fill="#fff" opacity="0.22"/><circle cx="479.9" cy="972.5" r="1.0" fill="#fff" opacity="0.18"/><circle cx="1584.2" cy="515.2" r="1.2" fill="#fff" opacity="0.14"/><circle cx="104.0" cy="344.1" r="0.9" fill="#fff" opacity="0.42"/><circle cx="790.9" cy="148.5" r="1.1" fill="#fff" opacity="0.28"/><circle cx="1527.0" cy="698.8" r="0.7" fill="#fff" opacity="0.42"/><circle cx="372.6" cy="307.2" r="1.2" fill="#fff" opacity="0.34"/><circle cx="301.9" cy="777.6" r="0.8" fill="#fff" opacity="0.42"/><circle cx="990.1" cy="448.0" r="1.1" fill="#fff" opacity="0.34"/><circle cx="298.0" cy="634.7" r="1.1" fill="#fff" opacity="0.14"/><circle cx="299.4" cy="442.2" r="1.2" fill="#fff" opacity="0.18"/><circle cx="1057.6" cy="781.6" r="1.1" fill="#fff" opacity="0.50"/><circle cx="460.5" cy="589.7" r="0.9" fill="#fff" opacity="0.34"/><circle cx="283.7" cy="1041.7" r="1.0" fill="#fff" opacity="0.28"/><circle cx="1064.3" cy="282.9" r="0.7" fill="#fff" opacity="0.42"/><circle cx="1775.1" cy="191.0" r="1.1" fill="#fff" opacity="0.14"/><circle cx="1141.9" cy="861.2" r="1.1" fill="#fff" opacity="0.42"/><circle cx="323.0" cy="990.7" r="0.7" fill="#fff" opacity="0.18"/><circle cx="1720.2" cy="1148.4" r="0.7" fill="#fff" opacity="0.14"/><circle cx="1191.1" cy="355.2" r="0.7" fill="#fff" opacity="0.50"/><circle cx="1573.4" cy="602.2" r="0.8" fill="#fff" opacity="0.50"/><circle cx="387.3" cy="448.1" r="1.2" fill="#fff" opacity="0.22"/><circle cx="1162.8" cy="247.1" r="0.9" fill="#fff" opacity="0.14"/><circle cx="1727.4" cy="126.8" r="1.2" fill="#fff" opacity="0.14"/><circle cx="144.3" cy="874.8" r="1.2" fill="#fff" opacity="0.22"/><circle cx="605.2" cy="911.4" r="0.7" fill="#fff" opacity="0.50"/><circle cx="428.6" cy="1161.7" r="1.1" fill="#fff" opacity="0.50"/><circle cx="1840.1" cy="711.5" r="0.7" fill="#fff" opacity="0.50"/><circle cx="159.6" cy="417.5" r="0.9" fill="#fff" opacity="0.14"/><circle cx="1800.0" cy="830.7" r="1.0" fill="#fff" opacity="0.34"/><circle cx="1158.0" cy="1075.5" r="1.0" fill="#fff" opacity="0.42"/><circle cx="1051.4" cy="517.1" r="1.0" fill="#fff" opacity="0.50"/><circle cx="413.5" cy="1155.9" r="0.9" fill="#fff" opacity="0.22"/><circle cx="1423.8" cy="1018.0" r="0.8" fill="#fff" opacity="0.18"/><circle cx="1331.9" cy="538.5" r="0.8" fill="#fff" opacity="0.14"/><circle cx="451.4" cy="1153.4" r="0.9" fill="#fff" opacity="0.28"/><circle cx="990.6" cy="654.4" r="0.7" fill="#fff" opacity="0.34"/><circle cx="1439.8" cy="923.1" r="1.2" fill="#fff" opacity="0.22"/><circle cx="790.4" cy="278.3" r="1.0" fill="#fff" opacity="0.42"/><circle cx="1732.3" cy="1130.6" r="0.8" fill="#fff" opacity="0.34"/><circle cx="1459.7" cy="570.4" r="0.8" fill="#fff" opacity="0.28"/><circle cx="1839.8" cy="333.0" r="0.8" fill="#fff" opacity="0.42"/><circle cx="1382.5" cy="491.3" r="0.7" fill="#fff" opacity="0.22"/><circle cx="559.6" cy="802.4" r="1.0" fill="#fff" opacity="0.22"/><circle cx="745.6" cy="739.7" r="0.8" fill="#fff" opacity="0.22"/><circle cx="857.1" cy="104.1" r="0.9" fill="#fff" opacity="0.22"/><circle cx="1512.7" cy="253.9" r="1.1" fill="#fff" opacity="0.34"/><circle cx="1089.2" cy="1090.8" r="1.2" fill="#fff" opacity="0.50"/><circle cx="364.2" cy="842.8" r="0.7" fill="#fff" opacity="0.50"/><circle cx="1840.3" cy="581.8" r="1.0" fill="#fff" opacity="0.28"/><circle cx="1588.9" cy="888.2" r="1.0" fill="#fff" opacity="0.18"/><circle cx="1613.4" cy="274.1" r="0.8" fill="#fff" opacity="0.34"/><circle cx="1703.9" cy="452.2" r="1.2" fill="#fff" opacity="0.50"/><circle cx="850.9" cy="407.9" r="0.7" fill="#fff" opacity="0.18"/><circle cx="1381.5" cy="1028.5" r="0.8" fill="#fff" opacity="0.28"/><circle cx="1131.7" cy="314.8" r="1.2" fill="#fff" opacity="0.34"/><circle cx="947.0" cy="211.2" r="0.8" fill="#fff" opacity="0.28"/><circle cx="121.6" cy="947.8" r="1.1" fill="#fff" opacity="0.14"/><circle cx="1042.4" cy="341.8" r="0.9" fill="#fff" opacity="0.42"/><circle cx="1390.7" cy="353.5" r="1.1" fill="#fff" opacity="0.18"/><circle cx="1245.7" cy="511.6" r="1.0" fill="#fff" opacity="0.50"/><circle cx="171.2" cy="811.0" r="1.2" fill="#fff" opacity="0.22"/><circle cx="333.7" cy="708.9" r="1.2" fill="#fff" opacity="0.50"/><circle cx="237.3" cy="1026.5" r="0.7" fill="#fff" opacity="0.18"/><circle cx="508.8" cy="194.6" r="0.9" fill="#fff" opacity="0.50"/><circle cx="210.0" cy="641.3" r="0.9" fill="#fff" opacity="0.14"/><circle cx="604.1" cy="610.6" r="0.9" fill="#fff" opacity="0.18"/><circle cx="1504.2" cy="898.4" r="0.7" fill="#fff" opacity="0.50"/><circle cx="462.8" cy="111.1" r="0.9" fill="#fff" opacity="0.42"/><circle cx="250.3" cy="870.3" r="0.7" fill="#fff" opacity="0.18"/><circle cx="436.2" cy="142.4" r="1.0" fill="#fff" opacity="0.28"/><circle cx="1251.5" cy="689.9" r="0.8" fill="#fff" opacity="0.22"/><circle cx="821.2" cy="783.8" r="1.1" fill="#fff" opacity="0.42"/><circle cx="863.2" cy="583.7" r="1.1" fill="#fff" opacity="0.50"/><circle cx="1447.3" cy="404.5" r="1.0" fill="#fff" opacity="0.50"/><circle cx="802.4" cy="830.3" r="1.1" fill="#fff" opacity="0.18"/><circle cx="901.3" cy="735.5" r="0.8" fill="#fff" opacity="0.34"/><circle cx="988.4" cy="232.5" r="1.2" fill="#fff" opacity="0.22"/><circle cx="1708.2" cy="576.9" r="0.7" fill="#fff" opacity="0.14"/><circle cx="528.1" cy="640.0" r="0.8" fill="#fff" opacity="0.50"/><circle cx="406.0" cy="1003.3" r="0.9" fill="#fff" opacity="0.28"/><circle cx="1364.5" cy="904.6" r="0.8" fill="#fff" opacity="0.18"/><circle cx="1235.3" cy="825.7" r="1.2" fill="#fff" opacity="0.22"/><circle cx="91.4" cy="588.7" r="0.9" fill="#fff" opacity="0.34"/><circle cx="1151.7" cy="473.1" r="0.8" fill="#fff" opacity="0.14"/><circle cx="1286.5" cy="418.2" r="0.9" fill="#fff" opacity="0.22"/><circle cx="1517.1" cy="860.7" r="0.8" fill="#fff" opacity="0.14"/><circle cx="220.0" cy="809.9" r="0.9" fill="#fff" opacity="0.14"/><circle cx="1487.2" cy="1112.1" r="1.2" fill="#fff" opacity="0.18"/><circle cx="1186.6" cy="803.6" r="1.2" fill="#fff" opacity="0.28"/><circle cx="1700.7" cy="231.8" r="1.0" fill="#fff" opacity="0.22"/><circle cx="948.7" cy="591.2" r="0.7" fill="#fff" opacity="0.28"/><circle cx="1756.8" cy="520.8" r="0.8" fill="#fff" opacity="0.22"/><circle cx="936.1" cy="886.6" r="1.0" fill="#fff" opacity="0.28"/><circle cx="1007.7" cy="714.9" r="0.7" fill="#fff" opacity="0.34"/><circle cx="128.8" cy="596.8" r="0.8" fill="#fff" opacity="0.18"/><circle cx="862.8" cy="942.6" r="0.9" fill="#fff" opacity="0.22"/><circle cx="332.3" cy="674.2" r="1.0" fill="#fff" opacity="0.18"/><circle cx="1780.6" cy="1090.9" r="0.8" fill="#fff" opacity="0.14"/><circle cx="1084.6" cy="560.7" r="0.7" fill="#fff" opacity="0.34"/><circle cx="869.9" cy="1111.0" r="0.9" fill="#fff" opacity="0.34"/><circle cx="861.6" cy="942.7" r="0.7" fill="#fff" opacity="0.50"/><circle cx="252.2" cy="434.3" r="1.2" fill="#fff" opacity="0.50"/><circle cx="86.6" cy="515.8" r="0.8" fill="#fff" opacity="0.50"/><circle cx="923.4" cy="119.4" r="0.8" fill="#fff" opacity="0.34"/><circle cx="461.0" cy="191.8" r="0.7" fill="#fff" opacity="0.34"/><circle cx="409.4" cy="672.5" r="0.8" fill="#fff" opacity="0.22"/><circle cx="1564.3" cy="561.4" r="0.9" fill="#fff" opacity="0.34"/><circle cx="495.1" cy="1027.2" r="0.7" fill="#fff" opacity="0.34"/><circle cx="1418.9" cy="209.5" r="1.2" fill="#fff" opacity="0.28"/><circle cx="613.7" cy="166.4" r="0.7" fill="#fff" opacity="0.14"/><circle cx="839.6" cy="732.5" r="0.8" fill="#fff" opacity="0.34"/><circle cx="1596.0" cy="1052.5" r="1.2" fill="#fff" opacity="0.28"/><circle cx="584.4" cy="735.0" r="0.7" fill="#fff" opacity="0.22"/><circle cx="892.1" cy="460.5" r="1.1" fill="#fff" opacity="0.22"/><circle cx="1227.7" cy="663.1" r="0.7" fill="#fff" opacity="0.50"/><circle cx="1002.7" cy="477.1" r="0.9" fill="#fff" opacity="0.14"/><circle cx="634.5" cy="1019.4" r="0.9" fill="#fff" opacity="0.42"/><circle cx="618.8" cy="374.7" r="1.1" fill="#fff" opacity="0.22"/><circle cx="1147.8" cy="761.3" r="0.8" fill="#fff" opacity="0.28"/><circle cx="1789.5" cy="385.4" r="1.1" fill="#fff" opacity="0.50"/><circle cx="427.0" cy="1201.3" r="1.2" fill="#fff" opacity="0.18"/><circle cx="1543.3" cy="716.9" r="0.7" fill="#fff" opacity="0.22"/><circle cx="1642.1" cy="295.4" r="0.9" fill="#fff" opacity="0.42"/><circle cx="1186.7" cy="315.8" r="1.0" fill="#fff" opacity="0.18"/><circle cx="1366.1" cy="207.8" r="1.2" fill="#fff" opacity="0.50"/><circle cx="243.6" cy="626.2" r="1.2" fill="#fff" opacity="0.34"/><circle cx="1317.7" cy="149.5" r="0.8" fill="#fff" opacity="0.28"/><circle cx="771.7" cy="570.2" r="0.9" fill="#fff" opacity="0.42"/><circle cx="1334.1" cy="918.0" r="1.2" fill="#fff" opacity="0.22"/><circle cx="792.5" cy="729.6" r="1.1" fill="#fff" opacity="0.28"/><circle cx="397.3" cy="1148.3" r="1.1" fill="#fff" opacity="0.50"/><circle cx="673.3" cy="714.9" r="0.7" fill="#fff" opacity="0.50"/><circle cx="201.4" cy="854.7" r="0.7" fill="#fff" opacity="0.42"/><circle cx="1080.2" cy="292.0" r="0.9" fill="#fff" opacity="0.50"/><circle cx="544.3" cy="969.8" r="1.0" fill="#fff" opacity="0.22"/><circle cx="626.9" cy="508.0" r="0.8" fill="#fff" opacity="0.50"/><circle cx="1057.1" cy="296.8" r="0.7" fill="#fff" opacity="0.18"/><circle cx="1695.2" cy="686.2" r="1.0" fill="#fff" opacity="0.22"/><circle cx="1644.9" cy="680.1" r="0.8" fill="#fff" opacity="0.42"/><circle cx="1066.3" cy="1181.1" r="0.9" fill="#fff" opacity="0.50"/><circle cx="582.9" cy="192.5" r="0.8" fill="#fff" opacity="0.28"/><circle cx="1744.7" cy="1148.0" r="0.8" fill="#fff" opacity="0.28"/><circle cx="910.5" cy="587.5" r="1.2" fill="#fff" opacity="0.28"/><circle cx="1500.3" cy="205.5" r="0.8" fill="#fff" opacity="0.28"/><circle cx="517.3" cy="128.8" r="0.7" fill="#fff" opacity="0.28"/><circle cx="1359.1" cy="743.4" r="1.1" fill="#fff" opacity="0.14"/><circle cx="504.7" cy="418.0" r="0.7" fill="#fff" opacity="0.22"/><circle cx="1108.7" cy="137.1" r="0.7" fill="#fff" opacity="0.50"/><circle cx="1614.1" cy="125.2" r="1.2" fill="#fff" opacity="0.34"/><circle cx="1543.1" cy="868.4" r="1.1" fill="#fff" opacity="0.18"/><circle cx="1549.1" cy="272.1" r="1.1" fill="#fff" opacity="0.28"/><circle cx="541.0" cy="541.9" r="0.8" fill="#fff" opacity="0.14"/><circle cx="1356.4" cy="733.6" r="1.2" fill="#fff" opacity="0.42"/><circle cx="670.0" cy="580.0" r="0.8" fill="#fff" opacity="0.50"/><circle cx="584.8" cy="854.5" r="0.7" fill="#fff" opacity="0.34"/><circle cx="734.9" cy="214.5" r="0.9" fill="#fff" opacity="0.22"/><circle cx="1352.9" cy="1128.3" r="1.2" fill="#fff" opacity="0.22"/><circle cx="1272.0" cy="1134.9" r="1.1" fill="#fff" opacity="0.28"/><circle cx="879.4" cy="616.7" r="1.1" fill="#fff" opacity="0.22"/><circle cx="1746.5" cy="860.9" r="0.8" fill="#fff" opacity="0.50"/><circle cx="259.9" cy="920.7" r="1.2" fill="#fff" opacity="0.42"/><circle cx="286.3" cy="251.6" r="1.0" fill="#fff" opacity="0.42"/><circle cx="667.2" cy="1148.3" r="1.2" fill="#fff" opacity="0.28"/><circle cx="939.4" cy="153.3" r="0.8" fill="#fff" opacity="0.50"/><circle cx="1842.0" cy="294.3" r="0.7" fill="#fff" opacity="0.14"/><circle cx="885.0" cy="121.7" r="1.0" fill="#fff" opacity="0.42"/><circle cx="810.4" cy="1153.7" r="1.0" fill="#fff" opacity="0.18"/><circle cx="1617.1" cy="961.3" r="1.1" fill="#fff" opacity="0.28"/><circle cx="489.3" cy="437.9" r="1.0" fill="#fff" opacity="0.28"/><circle cx="779.1" cy="813.4" r="1.1" fill="#fff" opacity="0.14"/><circle cx="646.3" cy="770.7" r="1.0" fill="#fff" opacity="0.18"/><circle cx="459.3" cy="1189.4" r="0.7" fill="#fff" opacity="0.14"/><circle cx="1603.3" cy="1042.3" r="1.0" fill="#fff" opacity="0.42"/><circle cx="959.7" cy="513.7" r="0.7" fill="#fff" opacity="0.34"/><circle cx="748.6" cy="449.8" r="1.0" fill="#fff" opacity="0.42"/><circle cx="533.2" cy="786.0" r="0.7" fill="#fff" opacity="0.28"/><circle cx="1050.5" cy="515.9" r="1.0" fill="#fff" opacity="0.14"/><circle cx="796.3" cy="214.6" r="1.2" fill="#fff" opacity="0.28"/><circle cx="1526.1" cy="761.2" r="0.7" fill="#fff" opacity="0.42"/><circle cx="1155.2" cy="1061.8" r="0.9" fill="#fff" opacity="0.14"/><circle cx="1167.2" cy="566.2" r="1.1" fill="#fff" opacity="0.22"/><circle cx="1282.8" cy="105.1" r="1.0" fill="#fff" opacity="0.18"/><circle cx="698.6" cy="618.3" r="0.7" fill="#fff" opacity="0.22"/><circle cx="1209.6" cy="766.9" r="0.7" fill="#fff" opacity="0.22"/><circle cx="616.6" cy="360.8" r="1.1" fill="#fff" opacity="0.28"/><circle cx="1734.6" cy="725.8" r="1.2" fill="#fff" opacity="0.14"/><circle cx="844.3" cy="1074.8" r="1.2" fill="#fff" opacity="0.42"/><circle cx="1120.5" cy="263.2" r="1.2" fill="#fff" opacity="0.28"/><circle cx="611.2" cy="1096.5" r="0.7" fill="#fff" opacity="0.42"/><circle cx="584.6" cy="836.2" r="0.8" fill="#fff" opacity="0.22"/><circle cx="1359.0" cy="874.7" r="0.8" fill="#fff" opacity="0.14"/><circle cx="1728.8" cy="283.5" r="0.9" fill="#fff" opacity="0.18"/><circle cx="1401.5" cy="1024.6" r="1.2" fill="#fff" opacity="0.42"/><circle cx="1374.3" cy="1181.4" r="0.9" fill="#fff" opacity="0.34"/><circle cx="1132.3" cy="1153.8" r="0.7" fill="#fff" opacity="0.18"/><circle cx="860.7" cy="1078.7" r="0.9" fill="#fff" opacity="0.18"/><circle cx="1531.7" cy="294.8" r="1.1" fill="#fff" opacity="0.50"/><circle cx="583.4" cy="510.5" r="1.1" fill="#fff" opacity="0.22"/><circle cx="1518.2" cy="159.8" r="0.7" fill="#fff" opacity="0.18"/><circle cx="1596.0" cy="103.0" r="1.1" fill="#fff" opacity="0.42"/><circle cx="1761.3" cy="172.8" r="0.9" fill="#fff" opacity="0.14"/><circle cx="338.1" cy="249.4" r="0.9" fill="#fff" opacity="0.34"/><circle cx="1342.5" cy="741.6" r="0.7" fill="#fff" opacity="0.50"/><circle cx="1528.1" cy="661.0" r="0.8" fill="#fff" opacity="0.28"/><circle cx="1563.1" cy="1006.5" r="0.8" fill="#fff" opacity="0.18"/><circle cx="1544.5" cy="354.5" r="0.7" fill="#fff" opacity="0.14"/><circle cx="1649.5" cy="1012.3" r="0.7" fill="#fff" opacity="0.50"/><circle cx="386.3" cy="584.7" r="1.1" fill="#fff" opacity="0.50"/><circle cx="1538.3" cy="1181.3" r="0.8" fill="#fff" opacity="0.18"/><circle cx="628.8" cy="855.2" r="1.2" fill="#fff" opacity="0.18"/><circle cx="1615.4" cy="726.7" r="0.9" fill="#fff" opacity="0.50"/><circle cx="514.8" cy="700.2" r="0.8" fill="#fff" opacity="0.34"/><circle cx="1635.1" cy="1081.9" r="0.8" fill="#fff" opacity="0.42"/><circle cx="1336.0" cy="843.9" r="0.7" fill="#fff" opacity="0.18"/><circle cx="1485.6" cy="946.5" r="0.9" fill="#fff" opacity="0.22"/><circle cx="231.9" cy="412.6" r="1.2" fill="#fff" opacity="0.28"/><circle cx="1537.2" cy="697.5" r="1.0" fill="#fff" opacity="0.14"/><circle cx="222.2" cy="545.0" r="0.8" fill="#fff" opacity="0.18"/><circle cx="433.2" cy="1129.8" r="0.7" fill="#fff" opacity="0.14"/><circle cx="1726.1" cy="544.2" r="0.8" fill="#fff" opacity="0.18"/><circle cx="887.2" cy="160.1" r="1.0" fill="#fff" opacity="0.42"/><circle cx="879.6" cy="136.2" r="0.9" fill="#fff" opacity="0.18"/><circle cx="497.1" cy="971.1" r="1.2" fill="#fff" opacity="0.22"/><circle cx="1496.6" cy="688.0" r="1.2" fill="#fff" opacity="0.50"/><circle cx="285.5" cy="526.3" r="0.9" fill="#fff" opacity="0.28"/><circle cx="571.1" cy="916.6" r="0.8" fill="#fff" opacity="0.28"/><circle cx="650.6" cy="413.2" r="1.2" fill="#fff" opacity="0.50"/><circle cx="936.8" cy="520.6" r="0.7" fill="#fff" opacity="0.14"/><circle cx="879.7" cy="726.6" r="1.0" fill="#fff" opacity="0.22"/><circle cx="962.4" cy="537.4" r="0.8" fill="#fff" opacity="0.34"/><circle cx="1342.8" cy="808.4" r="1.1" fill="#fff" opacity="0.28"/><circle cx="402.7" cy="108.8" r="1.0" fill="#fff" opacity="0.50"/><circle cx="1598.1" cy="1085.1" r="1.0" fill="#fff" opacity="0.42"/><circle cx="278.6" cy="803.5" r="1.2" fill="#fff" opacity="0.14"/><circle cx="1752.5" cy="829.4" r="0.9" fill="#fff" opacity="0.28"/><circle cx="1000.1" cy="419.1" r="1.0" fill="#fff" opacity="0.50"/><circle cx="913.8" cy="1107.3" r="1.1" fill="#fff" opacity="0.28"/><circle cx="1179.0" cy="786.6" r="0.8" fill="#fff" opacity="0.22"/><circle cx="1231.0" cy="1063.5" r="1.0" fill="#fff" opacity="0.42"/><circle cx="1877.2" cy="129.6" r="1.1" fill="#fff" opacity="0.50"/><circle cx="966.9" cy="1067.6" r="0.8" fill="#fff" opacity="0.28"/><circle cx="1437.9" cy="618.2" r="1.0" fill="#fff" opacity="0.42"/><circle cx="413.3" cy="983.7" r="1.2" fill="#fff" opacity="0.14"/><circle cx="215.0" cy="1179.8" r="0.8" fill="#fff" opacity="0.22"/><circle cx="742.5" cy="559.0" r="1.1" fill="#fff" opacity="0.42"/><circle cx="1691.8" cy="1143.5" r="1.2" fill="#fff" opacity="0.28"/><circle cx="724.7" cy="220.4" r="0.7" fill="#fff" opacity="0.22"/><circle cx="1007.2" cy="744.7" r="1.0" fill="#fff" opacity="0.50"/><circle cx="1861.7" cy="557.8" r="0.9" fill="#fff" opacity="0.34"/><circle cx="821.6" cy="291.3" r="1.2" fill="#fff" opacity="0.34"/><circle cx="985.9" cy="1193.5" r="0.9" fill="#fff" opacity="0.22"/><circle cx="761.5" cy="1203.4" r="1.2" fill="#fff" opacity="0.28"/><circle cx="119.5" cy="652.5" r="1.1" fill="#fff" opacity="0.18"/><circle cx="1270.2" cy="998.2" r="0.7" fill="#fff" opacity="0.22"/><circle cx="600.3" cy="188.7" r="0.8" fill="#fff" opacity="0.18"/><circle cx="969.5" cy="431.2" r="1.1" fill="#fff" opacity="0.28"/><circle cx="1033.2" cy="148.9" r="0.7" fill="#fff" opacity="0.18"/><circle cx="1281.3" cy="861.4" r="1.0" fill="#fff" opacity="0.18"/><circle cx="1744.8" cy="1005.6" r="0.9" fill="#fff" opacity="0.22"/><circle cx="174.4" cy="711.8" r="1.2" fill="#fff" opacity="0.28"/><circle cx="464.5" cy="150.3" r="1.0" fill="#fff" opacity="0.22"/><circle cx="114.0" cy="913.9" r="1.2" fill="#fff" opacity="0.42"/><circle cx="565.5" cy="593.1" r="0.8" fill="#fff" opacity="0.22"/><circle cx="393.7" cy="301.9" r="1.0" fill="#fff" opacity="0.42"/><circle cx="1711.4" cy="938.5" r="0.8" fill="#fff" opacity="0.34"/><circle cx="1368.3" cy="996.5" r="1.1" fill="#fff" opacity="0.14"/><circle cx="402.4" cy="1175.1" r="1.2" fill="#fff" opacity="0.22"/><circle cx="1032.3" cy="805.9" r="0.7" fill="#fff" opacity="0.34"/><circle cx="667.4" cy="356.2" r="0.9" fill="#fff" opacity="0.14"/><circle cx="68.5" cy="863.1" r="1.0" fill="#fff" opacity="0.50"/><circle cx="1216.6" cy="511.7" r="1.0" fill="#fff" opacity="0.18"/><circle cx="1106.5" cy="344.9" r="0.8" fill="#fff" opacity="0.42"/><circle cx="1218.7" cy="720.3" r="1.0" fill="#fff" opacity="0.34"/><circle cx="707.3" cy="869.8" r="1.0" fill="#fff" opacity="0.14"/><circle cx="1869.2" cy="113.0" r="0.7" fill="#fff" opacity="0.34"/><circle cx="1055.9" cy="529.9" r="1.2" fill="#fff" opacity="0.22"/><circle cx="968.6" cy="581.7" r="1.2" fill="#fff" opacity="0.34"/><circle cx="1153.2" cy="332.7" r="0.7" fill="#fff" opacity="0.28"/><circle cx="1472.3" cy="342.4" r="1.0" fill="#fff" opacity="0.50"/><circle cx="52.0" cy="387.4" r="1.2" fill="#fff" opacity="0.42"/><circle cx="1459.4" cy="803.4" r="1.0" fill="#fff" opacity="0.50"/><circle cx="1401.5" cy="839.1" r="0.8" fill="#fff" opacity="0.22"/><circle cx="1037.3" cy="760.8" r="1.2" fill="#fff" opacity="0.18"/><circle cx="1871.7" cy="540.8" r="0.7" fill="#fff" opacity="0.14"/><circle cx="598.0" cy="1110.8" r="0.8" fill="#fff" opacity="0.34"/><circle cx="321.5" cy="558.2" r="0.9" fill="#fff" opacity="0.14"/><circle cx="739.3" cy="751.0" r="0.7" fill="#fff" opacity="0.22"/><circle cx="514.9" cy="669.5" r="0.9" fill="#fff" opacity="0.42"/><circle cx="1680.4" cy="1136.1" r="0.9" fill="#fff" opacity="0.50"/><circle cx="1433.1" cy="868.5" r="1.1" fill="#fff" opacity="0.22"/><circle cx="520.8" cy="1148.4" r="1.2" fill="#fff" opacity="0.14"/><circle cx="460.6" cy="354.8" r="0.8" fill="#fff" opacity="0.50"/><circle cx="844.0" cy="1091.8" r="0.7" fill="#fff" opacity="0.42"/><circle cx="1591.3" cy="442.5" r="0.7" fill="#fff" opacity="0.34"/><circle cx="1709.1" cy="402.1" r="0.8" fill="#fff" opacity="0.22"/><circle cx="266.1" cy="506.7" r="0.7" fill="#fff" opacity="0.34"/><circle cx="382.2" cy="377.6" r="1.1" fill="#fff" opacity="0.28"/><circle cx="970.3" cy="505.4" r="1.1" fill="#fff" opacity="0.50"/><circle cx="1564.2" cy="148.8" r="1.0" fill="#fff" opacity="0.34"/><circle cx="1509.3" cy="721.1" r="1.0" fill="#fff" opacity="0.28"/><circle cx="658.4" cy="249.8" r="0.9" fill="#fff" opacity="0.34"/><circle cx="1322.2" cy="361.5" r="0.8" fill="#fff" opacity="0.18"/><circle cx="112.9" cy="874.0" r="0.8" fill="#fff" opacity="0.18"/><circle cx="1038.1" cy="1021.3" r="0.9" fill="#fff" opacity="0.50"/><circle cx="969.4" cy="835.1" r="0.8" fill="#fff" opacity="0.42"/><circle cx="1205.6" cy="570.6" r="1.0" fill="#fff" opacity="0.18"/><circle cx="134.2" cy="480.7" r="0.7" fill="#fff" opacity="0.22"/><circle cx="694.7" cy="636.9" r="1.1" fill="#fff" opacity="0.34"/><circle cx="1687.5" cy="1152.9" r="1.2" fill="#fff" opacity="0.14"/><circle cx="1003.6" cy="265.8" r="1.0" fill="#fff" opacity="0.18"/><circle cx="610.2" cy="744.1" r="0.9" fill="#fff" opacity="0.28"/><circle cx="196.6" cy="629.5" r="1.0" fill="#fff" opacity="0.18"/><circle cx="1815.8" cy="480.9" r="1.0" fill="#fff" opacity="0.28"/><circle cx="420.1" cy="703.5" r="0.7" fill="#fff" opacity="0.42"/><circle cx="1615.3" cy="955.2" r="1.2" fill="#fff" opacity="0.18"/><circle cx="1158.2" cy="212.2" r="0.8" fill="#fff" opacity="0.14"/><circle cx="402.0" cy="717.7" r="1.2" fill="#fff" opacity="0.22"/><circle cx="717.6" cy="188.2" r="0.7" fill="#fff" opacity="0.50"/><circle cx="1047.7" cy="429.4" r="1.2" fill="#fff" opacity="0.28"/><circle cx="1535.6" cy="612.1" r="0.9" fill="#fff" opacity="0.50"/><circle cx="682.6" cy="1000.1" r="0.7" fill="#fff" opacity="0.18"/><circle cx="952.7" cy="189.3" r="0.9" fill="#fff" opacity="0.42"/><circle cx="1122.9" cy="309.4" r="1.2" fill="#fff" opacity="0.14"/><circle cx="1814.2" cy="192.9" r="1.2" fill="#fff" opacity="0.50"/><circle cx="1391.9" cy="769.7" r="0.7" fill="#fff" opacity="0.34"/><circle cx="1753.7" cy="585.3" r="1.1" fill="#fff" opacity="0.42"/><circle cx="1552.5" cy="405.3" r="0.7" fill="#fff" opacity="0.28"/><circle cx="1752.8" cy="400.1" r="0.7" fill="#fff" opacity="0.22"/><circle cx="302.9" cy="1198.3" r="1.2" fill="#fff" opacity="0.50"/><circle cx="437.8" cy="263.4" r="1.2" fill="#fff" opacity="0.42"/><circle cx="1294.5" cy="399.1" r="1.0" fill="#fff" opacity="0.28"/><circle cx="717.9" cy="1091.6" r="1.0" fill="#fff" opacity="0.28"/><circle cx="1336.3" cy="659.7" r="0.7" fill="#fff" opacity="0.28"/><circle cx="1808.7" cy="1029.0" r="1.2" fill="#fff" opacity="0.50"/><circle cx="128.9" cy="868.3" r="1.0" fill="#fff" opacity="0.50"/><circle cx="956.4" cy="262.0" r="1.1" fill="#fff" opacity="0.28"/><circle cx="1529.1" cy="246.9" r="1.0" fill="#fff" opacity="0.22"/><circle cx="541.5" cy="365.6" r="1.0" fill="#fff" opacity="0.42"/><circle cx="721.8" cy="209.9" r="1.1" fill="#fff" opacity="0.34"/><circle cx="995.7" cy="1191.8" r="0.8" fill="#fff" opacity="0.18"/><circle cx="81.6" cy="464.0" r="0.9" fill="#fff" opacity="0.18"/><circle cx="279.5" cy="562.8" r="0.7" fill="#fff" opacity="0.14"/><circle cx="1748.1" cy="635.8" r="1.2" fill="#fff" opacity="0.42"/><circle cx="1664.9" cy="334.5" r="1.0" fill="#fff" opacity="0.22"/><circle cx="1434.3" cy="799.6" r="0.8" fill="#fff" opacity="0.34"/><circle cx="1306.7" cy="613.1" r="1.0" fill="#fff" opacity="0.18"/><circle cx="129.2" cy="714.3" r="0.8" fill="#fff" opacity="0.50"/><circle cx="666.8" cy="1099.0" r="1.2" fill="#fff" opacity="0.18"/><circle cx="863.6" cy="231.3" r="1.2" fill="#fff" opacity="0.42"/><circle cx="667.1" cy="675.1" r="1.1" fill="#fff" opacity="0.34"/><circle cx="1087.3" cy="1117.0" r="1.2" fill="#fff" opacity="0.14"/><circle cx="1260.0" cy="750.8" r="1.0" fill="#fff" opacity="0.34"/><circle cx="1445.9" cy="733.0" r="0.8" fill="#fff" opacity="0.22"/><circle cx="835.9" cy="566.3" r="1.0" fill="#fff" opacity="0.18"/><circle cx="1084.9" cy="500.6" r="1.0" fill="#fff" opacity="0.18"/><circle cx="837.7" cy="511.3" r="1.1" fill="#fff" opacity="0.14"/><circle cx="863.0" cy="458.3" r="0.7" fill="#fff" opacity="0.28"/><circle cx="964.7" cy="294.8" r="0.7" fill="#fff" opacity="0.22"/><circle cx="119.0" cy="724.9" r="0.8" fill="#fff" opacity="0.50"/><circle cx="145.7" cy="884.2" r="1.0" fill="#fff" opacity="0.42"/><circle cx="647.8" cy="166.3" r="0.8" fill="#fff" opacity="0.50"/><circle cx="1284.4" cy="596.0" r="1.2" fill="#fff" opacity="0.50"/><circle cx="1519.4" cy="619.6" r="1.0" fill="#fff" opacity="0.14"/><circle cx="481.4" cy="981.7" r="0.9" fill="#fff" opacity="0.14"/><circle cx="695.2" cy="1002.8" r="1.2" fill="#fff" opacity="0.42"/><circle cx="1498.6" cy="1110.3" r="0.7" fill="#fff" opacity="0.28"/><circle cx="1399.8" cy="177.6" r="1.0" fill="#fff" opacity="0.42"/><circle cx="1119.9" cy="970.6" r="1.1" fill="#fff" opacity="0.18"/><circle cx="234.7" cy="750.6" r="1.0" fill="#fff" opacity="0.28"/><circle cx="511.0" cy="1125.4" r="1.2" fill="#fff" opacity="0.14"/><circle cx="1133.8" cy="586.3" r="0.8" fill="#fff" opacity="0.34"/><circle cx="1697.5" cy="201.5" r="1.1" fill="#fff" opacity="0.50"/><circle cx="1608.5" cy="904.3" r="1.1" fill="#fff" opacity="0.22"/><circle cx="1832.9" cy="902.8" r="0.7" fill="#fff" opacity="0.22"/><circle cx="1658.2" cy="122.9" r="0.9" fill="#fff" opacity="0.28"/><circle cx="1776.4" cy="295.1" r="1.1" fill="#fff" opacity="0.22"/><circle cx="1604.7" cy="595.6" r="0.9" fill="#fff" opacity="0.34"/><circle cx="429.3" cy="1053.8" r="1.1" fill="#fff" opacity="0.34"/><circle cx="325.3" cy="1182.3" r="0.9" fill="#fff" opacity="0.22"/><circle cx="1732.1" cy="855.6" r="1.0" fill="#fff" opacity="0.50"/><circle cx="1388.6" cy="425.1" r="1.2" fill="#fff" opacity="0.28"/><circle cx="443.0" cy="772.2" r="1.1" fill="#fff" opacity="0.18"/><circle cx="869.4" cy="1067.8" r="1.2" fill="#fff" opacity="0.22"/><use href="#x" transform="translate(108.5 127.0) rotate(17) scale(8)"/><circle cx="108.5" cy="127.0" r="4" fill="url(#s)"/><use href="#x" transform="translate(296.0 139.5) rotate(17) scale(8)"/><circle cx="296.0" cy="139.5" r="4" fill="url(#s)"/><use href="#x" transform="translate(454.0 137.0) rotate(17) scale(8)"/><circle cx="454.0" cy="137.0" r="4" fill="url(#s)"/><use href="#x" transform="translate(484.0 104.5) rotate(17) scale(22)"/><circle cx="484.0" cy="104.5" r="6.1" fill="url(#s)"/><use href="#x" transform="translate(507.2 111.5) rotate(17) scale(14)"/><circle cx="507.2" cy="111.5" r="4.7" fill="url(#s)"/><use href="#x" transform="translate(586.0 124.5) rotate(17) scale(8)"/><circle cx="586.0" cy="124.5" r="4" fill="url(#s)"/><circle cx="603.5" cy="129.0" r="2.15" fill="url(#s)" opacity="0.78"/><use href="#x" transform="translate(652.0 148.2) rotate(17) scale(8)"/><circle cx="652.0" cy="148.2" r="4" fill="url(#s)"/><use href="#x" transform="translate(517.0 157.8) rotate(17) scale(8)"/><circle cx="517.0" cy="157.8" r="4" fill="url(#s)"/><circle cx="384.8" cy="116.2" r="2.15" fill="url(#s)" opacity="0.78"/><circle cx="256.0" cy="139.5" r="2.15" fill="url(#s)" opacity="0.78"/><circle cx="216.5" cy="162.8" r="2.15" fill="url(#s)" opacity="0.78"/><use href="#x" transform="translate(296.5 189.5) rotate(17) scale(14)"/><circle cx="296.5" cy="189.5" r="4.7" fill="url(#s)"/><use href="#x" transform="translate(292.0 206.2) rotate(17) scale(22)"/><circle cx="292.0" cy="206.2" r="6.1" fill="url(#s)"/><use href="#x" transform="translate(413.5 202.8) rotate(17) scale(8)"/><circle cx="413.5" cy="202.8" r="4" fill="url(#s)"/><circle cx="427.8" cy="192.8" r="2.8" fill="url(#s)" opacity="0.90"/><circle cx="343.5" cy="207.0" r="2.8" fill="url(#s)" opacity="0.90"/><circle cx="577.8" cy="182.0" r="2.8" fill="url(#s)" opacity="0.90"/><circle cx="490.0" cy="239.8" r="2.8" fill="url(#s)" opacity="0.90"/><use href="#x" transform="translate(467.8 257.8) rotate(17) scale(8)"/><circle cx="467.8" cy="257.8" r="4" fill="url(#s)"/><circle cx="549.2" cy="244.8" r="2.15" fill="url(#s)" opacity="0.78"/><use href="#x" transform="translate(60.5 303.0) rotate(17) scale(14)"/><circle cx="60.5" cy="303.0" r="4.7" fill="url(#s)"/><circle cx="132.8" cy="289.2" r="2.8" fill="url(#s)" opacity="0.90"/><circle cx="251.0" cy="285.5" r="2.8" fill="url(#s)" opacity="0.90"/><circle cx="87.8" cy="265.5" r="2.15" fill="url(#s)" opacity="0.78"/><circle cx="151.8" cy="268.0" r="2.15" fill="url(#s)" opacity="0.78"/><use href="#x" transform="translate(381.8 332.8) rotate(17) scale(8)"/><circle cx="381.8" cy="332.8" r="4" fill="url(#s)"/><circle cx="414.0" cy="343.0" r="2.8" fill="url(#s)" opacity="0.90"/><circle cx="501.8" cy="330.2" r="2.8" fill="url(#s)" opacity="0.90"/><use href="#x" transform="translate(270.2 347.5) rotate(17) scale(8)"/><circle cx="270.2" cy="347.5" r="4" fill="url(#s)"/><circle cx="216.5" cy="347.8" r="2.8" fill="url(#s)" opacity="0.90"/><use href="#x" transform="translate(220.2 362.8) rotate(17) scale(8)"/><circle cx="220.2" cy="362.8" r="4" fill="url(#s)"/><use href="#x" transform="translate(263.0 372.2) rotate(17) scale(8)"/><circle cx="263.0" cy="372.2" r="4" fill="url(#s)"/><circle cx="97.0" cy="366.5" r="2.8" fill="url(#s)" opacity="0.90"/><use href="#x" transform="translate(200.8 391.0) rotate(17) scale(14)"/><circle cx="200.8" cy="391.0" r="4.7" fill="url(#s)"/><use href="#x" transform="translate(254.0 390.5) rotate(17) scale(8)"/><circle cx="254.0" cy="390.5" r="4" fill="url(#s)"/><circle cx="299.8" cy="389.5" r="2.8" fill="url(#s)" opacity="0.90"/><use href="#x" transform="translate(154.0 404.0) rotate(17) scale(8)"/><circle cx="154.0" cy="404.0" r="4" fill="url(#s)"/><circle cx="168.5" cy="403.0" r="2.8" fill="url(#s)" opacity="0.90"/><circle cx="391.8" cy="388.0" r="2.8" fill="url(#s)" opacity="0.90"/><use href="#x" transform="translate(445.2 390.0) rotate(17) scale(22)"/><circle cx="445.2" cy="390.0" r="6.1" fill="url(#s)"/><use href="#x" transform="translate(537.0 377.5) rotate(17) scale(27)"/><circle cx="537.0" cy="377.5" r="6.8" fill="url(#s)"/><circle cx="559.0" cy="382.2" r="2.8" fill="url(#s)" opacity="0.90"/><circle cx="573.5" cy="382.0" r="2.15" fill="url(#s)" opacity="0.78"/><circle cx="604.8" cy="382.2" r="2.15" fill="url(#s)" opacity="0.78"/><circle cx="631.0" cy="383.8" r="2.8" fill="url(#s)" opacity="0.90"/><circle cx="581.0" cy="347.0" r="2.8" fill="url(#s)" opacity="0.90"/><circle cx="634.0" cy="297.5" r="2.8" fill="url(#s)" opacity="0.90"/><circle cx="616.5" cy="303.2" r="2.15" fill="url(#s)" opacity="0.78"/><circle cx="653.8" cy="303.5" r="2.15" fill="url(#s)" opacity="0.78"/><circle cx="83.5" cy="409.5" r="2.8" fill="url(#s)" opacity="0.90"/><circle cx="211.5" cy="419.0" r="2.8" fill="url(#s)" opacity="0.90"/><circle cx="331.5" cy="426.0" r="2.8" fill="url(#s)" opacity="0.90"/><circle cx="369.2" cy="430.2" r="2.8" fill="url(#s)" opacity="0.90"/><circle cx="422.0" cy="440.0" r="2.15" fill="url(#s)" opacity="0.78"/><circle cx="506.0" cy="437.2" r="2.8" fill="url(#s)" opacity="0.90"/><circle cx="602.2" cy="407.2" r="2.15" fill="url(#s)" opacity="0.78"/><use href="#x" transform="translate(650.8 433.0) rotate(17) scale(8)"/><circle cx="650.8" cy="433.0" r="4" fill="url(#s)"/><use href="#x" transform="translate(113.5 452.0) rotate(17) scale(8)"/><circle cx="113.5" cy="452.0" r="4" fill="url(#s)"/><use href="#x" transform="translate(123.5 465.8) rotate(17) scale(8)"/><circle cx="123.5" cy="465.8" r="4" fill="url(#s)"/><circle cx="141.8" cy="457.5" r="2.15" fill="url(#s)" opacity="0.78"/><circle cx="145.5" cy="438.8" r="2.15" fill="url(#s)" opacity="0.78"/><ellipse cx="477.0" cy="357.8" rx="5.500" ry="3.300" transform="rotate(55 477.0 357.8)" fill="url(#s)" opacity=".85"/><circle cx="361.0" cy="135.2" r="2.15" fill="url(#s)" opacity="0.78"/><circle cx="374.8" cy="138.0" r="2.15" fill="url(#s)" opacity="0.78"/><circle cx="331.5" cy="151.5" r="2.15" fill="url(#s)" opacity="0.78"/><circle cx="442.2" cy="134.8" r="2.15" fill="url(#s)" opacity="0.78"/><circle cx="511.8" cy="140.2" r="2.15" fill="url(#s)" opacity="0.78"/><circle cx="524.8" cy="140.5" r="2.15" fill="url(#s)" opacity="0.78"/><circle cx="172.2" cy="152.8" r="2.15" fill="url(#s)" opacity="0.78"/><circle cx="228.5" cy="155.8" r="2.15" fill="url(#s)" opacity="0.78"/><circle cx="233.5" cy="165.5" r="2.15" fill="url(#s)" opacity="0.78"/><circle cx="273.5" cy="168.8" r="2.15" fill="url(#s)" opacity="0.78"/><circle cx="296.0" cy="170.8" r="2.15" fill="url(#s)" opacity="0.78"/><circle cx="354.8" cy="178.0" r="2.15" fill="url(#s)" opacity="0.78"/><circle cx="237.2" cy="205.8" r="2.15" fill="url(#s)" opacity="0.78"/><circle cx="140.5" cy="215.2" r="2.15" fill="url(#s)" opacity="0.78"/><circle cx="373.0" cy="212.2" r="2.15" fill="url(#s)" opacity="0.78"/><circle cx="440.5" cy="222.2" r="2.15" fill="url(#s)" opacity="0.78"/><circle cx="413.2" cy="222.0" r="2.15" fill="url(#s)" opacity="0.78"/><circle cx="442.8" cy="198.8" r="2.15" fill="url(#s)" opacity="0.78"/><circle cx="546.0" cy="264.0" r="2.15" fill="url(#s)" opacity="0.78"/><circle cx="557.2" cy="263.5" r="2.15" fill="url(#s)" opacity="0.78"/><circle cx="597.8" cy="275.0" r="2.15" fill="url(#s)" opacity="0.78"/><circle cx="546.0" cy="291.2" r="2.15" fill="url(#s)" opacity="0.78"/><circle cx="559.2" cy="310.8" r="2.15" fill="url(#s)" opacity="0.78"/><circle cx="567.8" cy="304.5" r="2.15" fill="url(#s)" opacity="0.78"/><circle cx="511.0" cy="317.0" r="2.15" fill="url(#s)" opacity="0.78"/><circle cx="647.8" cy="315.0" r="2.15" fill="url(#s)" opacity="0.78"/><circle cx="183.5" cy="353.2" r="2.15" fill="url(#s)" opacity="0.78"/><circle cx="295.8" cy="357.0" r="2.15" fill="url(#s)" opacity="0.78"/><circle cx="337.8" cy="379.5" r="2.15" fill="url(#s)" opacity="0.78"/><circle cx="217.5" cy="386.0" r="2.15" fill="url(#s)" opacity="0.78"/><circle cx="268.0" cy="416.8" r="2.15" fill="url(#s)" opacity="0.78"/><circle cx="225.2" cy="411.5" r="2.15" fill="url(#s)" opacity="0.78"/><circle cx="536.5" cy="391.2" r="2.15" fill="url(#s)" opacity="0.78"/><circle cx="523.8" cy="396.8" r="2.15" fill="url(#s)" opacity="0.78"/><circle cx="514.8" cy="411.5" r="2.15" fill="url(#s)" opacity="0.78"/><circle cx="74.5" cy="292.8" r="2.15" fill="url(#s)" opacity="0.78"/><circle cx="109.0" cy="302.0" r="2.15" fill="url(#s)" opacity="0.78"/><circle cx="65.5" cy="363.5" r="2.15" fill="url(#s)" opacity="0.78"/><circle cx="55.5" cy="146.5" r="2.15" fill="url(#s)" opacity="0.78"/><circle cx="156.0" cy="138.5" r="2.15" fill="url(#s)" opacity="0.78"/><circle cx="205.2" cy="142.0" r="2.15" fill="url(#s)" opacity="0.78"/><circle cx="321.0" cy="123.0" r="2.15" fill="url(#s)" opacity="0.78"/><circle cx="491.2" cy="118.2" r="2.15" fill="url(#s)" opacity="0.78"/><circle cx="596.5" cy="247.8" r="2.15" fill="url(#s)" opacity="0.78"/><circle cx="231.8" cy="268.5" r="2.15" fill="url(#s)" opacity="0.78"/><circle cx="691.2" cy="111.2" r="2.15" fill="url(#s)" opacity="0.78"/><circle cx="950.2" cy="112.8" r="2.8" fill="url(#s)" opacity="0.90"/><circle cx="940.5" cy="103.2" r="2.8" fill="url(#s)" opacity="0.90"/><use href="#x" transform="translate(1083.0 105.0) rotate(17) scale(8)"/><circle cx="1083.0" cy="105.0" r="4" fill="url(#s)"/><circle cx="1120.0" cy="125.2" r="2.8" fill="url(#s)" opacity="0.90"/><use href="#x" transform="translate(1117.8 143.2) rotate(17) scale(8)"/><circle cx="1117.8" cy="143.2" r="4" fill="url(#s)"/><use href="#x" transform="translate(879.5 150.8) rotate(17) scale(14)"/><circle cx="879.5" cy="150.8" r="4.7" fill="url(#s)"/><use href="#x" transform="translate(968.5 157.5) rotate(17) scale(14)"/><circle cx="968.5" cy="157.5" r="4.7" fill="url(#s)"/><circle cx="902.8" cy="162.8" r="2.8" fill="url(#s)" opacity="0.90"/><circle cx="1035.8" cy="160.0" r="2.8" fill="url(#s)" opacity="0.90"/><use href="#x" transform="translate(1173.5 162.8) rotate(17) scale(22)"/><circle cx="1173.5" cy="162.8" r="6.1" fill="url(#s)"/><circle cx="921.2" cy="130.2" r="2.15" fill="url(#s)" opacity="0.78"/><circle cx="738.0" cy="201.0" r="2.8" fill="url(#s)" opacity="0.90"/><circle cx="716.8" cy="204.5" r="2.15" fill="url(#s)" opacity="0.78"/><circle cx="818.2" cy="188.8" r="2.15" fill="url(#s)" opacity="0.78"/><circle cx="972.0" cy="195.0" r="2.15" fill="url(#s)" opacity="0.78"/><circle cx="1002.2" cy="192.8" r="2.15" fill="url(#s)" opacity="0.78"/><circle cx="1183.0" cy="200.2" r="2.15" fill="url(#s)" opacity="0.78"/><use href="#x" transform="translate(1176.0 213.8) rotate(17) scale(8)"/><circle cx="1176.0" cy="213.8" r="4" fill="url(#s)"/><circle cx="1142.0" cy="216.5" r="2.15" fill="url(#s)" opacity="0.78"/><circle cx="1120.8" cy="232.2" r="2.8" fill="url(#s)" opacity="0.90"/><circle cx="992.8" cy="236.2" r="2.8" fill="url(#s)" opacity="0.90"/><use href="#x" transform="translate(818.5 247.0) rotate(17) scale(8)"/><circle cx="818.5" cy="247.0" r="4" fill="url(#s)"/><circle cx="797.5" cy="243.0" r="2.15" fill="url(#s)" opacity="0.78"/><circle cx="707.2" cy="240.0" r="2.15" fill="url(#s)" opacity="0.78"/><use href="#x" transform="translate(1106.0 251.8) rotate(17) scale(14)"/><circle cx="1106.0" cy="251.8" r="4.7" fill="url(#s)"/><circle cx="1120.8" cy="271.8" r="2.8" fill="url(#s)" opacity="0.90"/><circle cx="884.8" cy="263.0" r="2.8" fill="url(#s)" opacity="0.90"/><circle cx="894.2" cy="267.5" r="2.15" fill="url(#s)" opacity="0.78"/><circle cx="1147.2" cy="295.5" r="2.8" fill="url(#s)" opacity="0.90"/><use href="#x" transform="translate(1049.5 308.8) rotate(17) scale(8)"/><circle cx="1049.5" cy="308.8" r="4" fill="url(#s)"/><circle cx="1032.0" cy="316.2" r="2.8" fill="url(#s)" opacity="0.90"/><circle cx="986.5" cy="312.0" r="2.8" fill="url(#s)" opacity="0.90"/><use href="#x" transform="translate(1061.8 328.2) rotate(17) scale(8)"/><circle cx="1061.8" cy="328.2" r="4" fill="url(#s)"/><circle cx="1062.8" cy="320.2" r="2.15" fill="url(#s)" opacity="0.78"/><use href="#x" transform="translate(707.8 316.5) rotate(17) scale(14)"/><circle cx="707.8" cy="316.5" r="4.7" fill="url(#s)"/><circle cx="686.2" cy="335.8" r="2.8" fill="url(#s)" opacity="0.90"/><circle cx="1136.0" cy="317.8" r="2.8" fill="url(#s)" opacity="0.90"/><circle cx="1196.8" cy="311.2" r="2.15" fill="url(#s)" opacity="0.78"/><circle cx="1160.8" cy="342.0" r="2.8" fill="url(#s)" opacity="0.90"/><circle cx="765.2" cy="358.2" r="2.8" fill="url(#s)" opacity="0.90"/><circle cx="765.5" cy="351.2" r="2.15" fill="url(#s)" opacity="0.78"/><circle cx="739.0" cy="353.2" r="2.15" fill="url(#s)" opacity="0.78"/><circle cx="948.8" cy="365.2" r="2.8" fill="url(#s)" opacity="0.90"/><circle cx="896.8" cy="369.0" r="2.15" fill="url(#s)" opacity="0.78"/><circle cx="1131.2" cy="364.8" r="2.8" fill="url(#s)" opacity="0.90"/><circle cx="1185.8" cy="369.5" r="2.8" fill="url(#s)" opacity="0.90"/><use href="#x" transform="translate(680.8 386.5) rotate(17) scale(8)"/><circle cx="680.8" cy="386.5" r="4" fill="url(#s)"/><circle cx="696.2" cy="374.2" r="2.15" fill="url(#s)" opacity="0.78"/><use href="#x" transform="translate(910.5 393.2) rotate(17) scale(8)"/><circle cx="910.5" cy="393.2" r="4" fill="url(#s)"/><circle cx="950.2" cy="398.0" r="2.8" fill="url(#s)" opacity="0.90"/><circle cx="961.2" cy="402.0" r="2.8" fill="url(#s)" opacity="0.90"/><circle cx="675.2" cy="408.5" r="2.8" fill="url(#s)" opacity="0.90"/><circle cx="780.2" cy="416.5" r="2.15" fill="url(#s)" opacity="0.78"/><circle cx="876.8" cy="413.2" r="2.15" fill="url(#s)" opacity="0.78"/><circle cx="1028.5" cy="421.5" r="2.8" fill="url(#s)" opacity="0.90"/><circle cx="1037.8" cy="415.2" r="2.15" fill="url(#s)" opacity="0.78"/><circle cx="1085.5" cy="401.2" r="2.15" fill="url(#s)" opacity="0.78"/><use href="#x" transform="translate(1088.5 431.5) rotate(17) scale(8)"/><circle cx="1088.5" cy="431.5" r="4" fill="url(#s)"/><circle cx="852.0" cy="437.0" r="2.8" fill="url(#s)" opacity="0.90"/><use href="#x" transform="translate(952.2 450.0) rotate(17) scale(22)"/><circle cx="952.2" cy="450.0" r="6.1" fill="url(#s)"/><circle cx="1047.0" cy="445.5" r="2.8" fill="url(#s)" opacity="0.90"/><circle cx="1005.0" cy="458.2" r="2.15" fill="url(#s)" opacity="0.78"/><circle cx="1252.8" cy="458.8" r="2.15" fill="url(#s)" opacity="0.78"/><circle cx="1277.0" cy="303.8" r="2.15" fill="url(#s)" opacity="0.78"/><circle cx="914.5" cy="113.2" r="2.15" fill="url(#s)" opacity="0.78"/><circle cx="923.8" cy="130.8" r="2.15" fill="url(#s)" opacity="0.78"/><circle cx="797.5" cy="151.0" r="2.15" fill="url(#s)" opacity="0.78"/><circle cx="804.2" cy="146.5" r="2.15" fill="url(#s)" opacity="0.78"/><circle cx="1067.0" cy="134.5" r="2.15" fill="url(#s)" opacity="0.78"/><circle cx="1063.2" cy="133.8" r="2.15" fill="url(#s)" opacity="0.78"/><circle cx="1027.5" cy="135.8" r="2.15" fill="url(#s)" opacity="0.78"/><circle cx="1097.5" cy="136.0" r="2.15" fill="url(#s)" opacity="0.78"/><circle cx="1166.5" cy="133.5" r="2.15" fill="url(#s)" opacity="0.78"/><circle cx="1195.8" cy="147.2" r="2.15" fill="url(#s)" opacity="0.78"/><circle cx="1199.8" cy="167.2" r="2.15" fill="url(#s)" opacity="0.78"/><circle cx="1091.2" cy="163.0" r="2.15" fill="url(#s)" opacity="0.78"/><circle cx="872.2" cy="180.8" r="2.15" fill="url(#s)" opacity="0.78"/><circle cx="887.2" cy="180.0" r="2.15" fill="url(#s)" opacity="0.78"/><circle cx="708.5" cy="197.0" r="2.15" fill="url(#s)" opacity="0.78"/><circle cx="679.5" cy="188.0" r="2.15" fill="url(#s)" opacity="0.78"/><circle cx="1209.8" cy="218.5" r="2.15" fill="url(#s)" opacity="0.78"/><circle cx="1180.2" cy="221.5" r="2.15" fill="url(#s)" opacity="0.78"/><circle cx="1245.2" cy="227.5" r="2.15" fill="url(#s)" opacity="0.78"/><circle cx="1063.2" cy="246.5" r="2.15" fill="url(#s)" opacity="0.78"/><circle cx="1092.5" cy="257.2" r="2.15" fill="url(#s)" opacity="0.78"/><circle cx="777.8" cy="253.2" r="2.15" fill="url(#s)" opacity="0.78"/><circle cx="694.8" cy="262.5" r="2.15" fill="url(#s)" opacity="0.78"/><circle cx="832.2" cy="270.8" r="2.15" fill="url(#s)" opacity="0.78"/><circle cx="765.2" cy="295.2" r="2.15" fill="url(#s)" opacity="0.78"/><circle cx="853.2" cy="307.2" r="2.15" fill="url(#s)" opacity="0.78"/><circle cx="841.2" cy="318.0" r="2.15" fill="url(#s)" opacity="0.78"/><circle cx="786.5" cy="331.2" r="2.15" fill="url(#s)" opacity="0.78"/><circle cx="875.8" cy="334.0" r="2.15" fill="url(#s)" opacity="0.78"/><circle cx="989.2" cy="324.0" r="2.15" fill="url(#s)" opacity="0.78"/><circle cx="1019.0" cy="314.8" r="2.15" fill="url(#s)" opacity="0.78"/><circle cx="982.5" cy="309.8" r="2.15" fill="url(#s)" opacity="0.78"/><circle cx="1152.2" cy="327.2" r="2.15" fill="url(#s)" opacity="0.78"/><circle cx="1031.2" cy="360.8" r="2.15" fill="url(#s)" opacity="0.78"/><circle cx="1087.2" cy="372.5" r="2.15" fill="url(#s)" opacity="0.78"/><circle cx="1087.5" cy="383.0" r="2.15" fill="url(#s)" opacity="0.78"/><circle cx="1061.5" cy="407.8" r="2.15" fill="url(#s)" opacity="0.78"/><circle cx="992.2" cy="431.2" r="2.15" fill="url(#s)" opacity="0.78"/><circle cx="909.5" cy="421.2" r="2.15" fill="url(#s)" opacity="0.78"/><circle cx="1000.8" cy="449.5" r="2.15" fill="url(#s)" opacity="0.78"/><circle cx="1051.5" cy="442.2" r="2.15" fill="url(#s)" opacity="0.78"/><circle cx="1099.2" cy="434.2" r="2.15" fill="url(#s)" opacity="0.78"/><circle cx="1278.5" cy="392.2" r="2.15" fill="url(#s)" opacity="0.78"/><circle cx="1273.2" cy="256.2" r="2.15" fill="url(#s)" opacity="0.78"/><circle cx="1201.2" cy="268.2" r="2.15" fill="url(#s)" opacity="0.78"/><circle cx="687.0" cy="152.8" r="2.15" fill="url(#s)" opacity="0.78"/><circle cx="1453.5" cy="105.0" r="2.8" fill="url(#s)" opacity="0.90"/><use href="#x" transform="translate(1617.2 114.5) rotate(17) scale(14)"/><circle cx="1617.2" cy="114.5" r="4.7" fill="url(#s)"/><circle cx="1435.5" cy="122.0" r="2.8" fill="url(#s)" opacity="0.90"/><circle cx="1458.0" cy="127.5" r="2.15" fill="url(#s)" opacity="0.78"/><use href="#x" transform="translate(1411.8 141.5) rotate(17) scale(22)"/><circle cx="1411.8" cy="141.5" r="6.1" fill="url(#s)"/><use href="#x" transform="translate(1736.5 141.5) rotate(17) scale(22)"/><circle cx="1736.5" cy="141.5" r="6.1" fill="url(#s)"/><circle cx="1587.5" cy="119.5" r="2.15" fill="url(#s)" opacity="0.78"/><circle cx="1741.0" cy="104.5" r="2.8" fill="url(#s)" opacity="0.90"/><circle cx="1297.0" cy="161.5" r="2.15" fill="url(#s)" opacity="0.78"/><circle cx="1346.5" cy="162.5" r="2.8" fill="url(#s)" opacity="0.90"/><circle cx="1550.0" cy="161.8" r="3.4" fill="url(#s)"/><circle cx="1628.8" cy="176.8" r="2.8" fill="url(#s)" opacity="0.90"/><circle cx="1610.5" cy="184.5" r="2.15" fill="url(#s)" opacity="0.78"/><circle cx="1496.0" cy="178.2" r="2.15" fill="url(#s)" opacity="0.78"/><circle cx="1833.5" cy="168.2" r="2.8" fill="url(#s)" opacity="0.90"/><circle cx="1804.2" cy="188.5" r="2.8" fill="url(#s)" opacity="0.90"/><circle cx="1876.8" cy="187.8" r="2.8" fill="url(#s)" opacity="0.90"/><circle cx="1765.5" cy="202.0" r="2.8" fill="url(#s)" opacity="0.90"/><use href="#x" transform="translate(1758.5 218.0) rotate(17) scale(22)"/><circle cx="1758.5" cy="218.0" r="6.1" fill="url(#s)"/><circle cx="1398.8" cy="212.0" r="3.4" fill="url(#s)"/><circle cx="1506.2" cy="219.2" r="3.4" fill="url(#s)"/><use href="#x" transform="translate(1586.0 221.5) rotate(17) scale(8)"/><circle cx="1586.0" cy="221.5" r="4" fill="url(#s)"/><circle cx="1692.5" cy="216.0" r="2.8" fill="url(#s)" opacity="0.90"/><circle cx="1696.2" cy="231.2" r="3.4" fill="url(#s)"/><circle cx="1702.5" cy="235.5" r="2.15" fill="url(#s)" opacity="0.78"/><circle cx="1709.0" cy="224.5" r="2.15" fill="url(#s)" opacity="0.78"/><use href="#x" transform="translate(1490.5 244.0) rotate(17) scale(8)"/><circle cx="1490.5" cy="244.0" r="4" fill="url(#s)"/><circle cx="1579.0" cy="241.0" r="3.4" fill="url(#s)"/><circle cx="1548.0" cy="231.2" r="2.15" fill="url(#s)" opacity="0.78"/><circle cx="1856.2" cy="235.0" r="2.15" fill="url(#s)" opacity="0.78"/><circle cx="1867.5" cy="243.5" r="2.15" fill="url(#s)" opacity="0.78"/><circle cx="1835.2" cy="250.8" r="2.15" fill="url(#s)" opacity="0.78"/><circle cx="1823.8" cy="249.0" r="2.15" fill="url(#s)" opacity="0.78"/><circle cx="1285.5" cy="275.0" r="2.8" fill="url(#s)" opacity="0.90"/><circle cx="1291.0" cy="294.0" r="3.4" fill="url(#s)"/><circle cx="1403.2" cy="280.0" r="2.15" fill="url(#s)" opacity="0.78"/><circle cx="1511.0" cy="274.2" r="2.15" fill="url(#s)" opacity="0.78"/><ellipse cx="1392.5" cy="297.5" rx="5.500" ry="3.300" transform="rotate(55 1392.5 297.5)" fill="url(#s)" opacity=".85"/><use href="#x" transform="translate(1878.2 280.0) rotate(17) scale(8)"/><circle cx="1878.2" cy="280.0" r="4" fill="url(#s)"/><circle cx="1866.2" cy="271.2" r="2.15" fill="url(#s)" opacity="0.78"/><circle cx="1702.5" cy="291.0" r="2.8" fill="url(#s)" opacity="0.90"/><circle cx="1706.2" cy="290.0" r="2.15" fill="url(#s)" opacity="0.78"/><circle cx="1641.8" cy="298.5" r="2.15" fill="url(#s)" opacity="0.78"/><circle cx="1523.0" cy="300.2" r="2.8" fill="url(#s)" opacity="0.90"/><circle cx="1507.0" cy="315.8" r="2.8" fill="url(#s)" opacity="0.90"/><circle cx="1512.5" cy="321.0" r="3.4" fill="url(#s)"/><circle cx="1457.2" cy="303.2" r="2.15" fill="url(#s)" opacity="0.78"/><circle cx="1795.2" cy="305.0" r="2.8" fill="url(#s)" opacity="0.90"/><circle cx="1290.5" cy="339.2" r="2.8" fill="url(#s)" opacity="0.90"/><circle cx="1402.0" cy="324.2" r="2.15" fill="url(#s)" opacity="0.78"/><circle cx="1408.8" cy="335.5" r="2.15" fill="url(#s)" opacity="0.78"/><circle cx="1748.5" cy="336.5" r="2.8" fill="url(#s)" opacity="0.90"/><use href="#x" transform="translate(1646.2 349.0) rotate(17) scale(22)"/><circle cx="1646.2" cy="349.0" r="6.1" fill="url(#s)"/><circle cx="1451.2" cy="355.0" r="2.8" fill="url(#s)" opacity="0.90"/><circle cx="1391.0" cy="362.5" r="2.15" fill="url(#s)" opacity="0.78"/><circle cx="1397.8" cy="367.5" r="2.15" fill="url(#s)" opacity="0.78"/><circle cx="1476.8" cy="367.5" r="2.15" fill="url(#s)" opacity="0.78"/><circle cx="1353.0" cy="381.0" r="14.28" fill="url(#h)"/><use href="#x" transform="translate(1353.0 381.0) rotate(17) scale(33)"/><circle cx="1353.0" cy="381.0" r="8.4" fill="url(#s)"/><use href="#x" transform="translate(1395.5 391.8) rotate(17) scale(8)"/><circle cx="1395.5" cy="391.8" r="4" fill="url(#s)"/><use href="#x" transform="translate(1292.5 405.8) rotate(17) scale(8)"/><circle cx="1292.5" cy="405.8" r="4" fill="url(#s)"/><circle cx="1380.2" cy="408.8" r="2.8" fill="url(#s)" opacity="0.90"/><circle cx="1568.2" cy="382.0" r="2.15" fill="url(#s)" opacity="0.78"/><circle cx="1655.2" cy="394.2" r="2.8" fill="url(#s)" opacity="0.90"/><circle cx="1687.5" cy="375.5" r="2.8" fill="url(#s)" opacity="0.90"/><circle cx="1675.0" cy="379.2" r="2.15" fill="url(#s)" opacity="0.78"/><circle cx="1810.5" cy="389.8" r="2.15" fill="url(#s)" opacity="0.78"/><circle cx="1356.5" cy="423.8" r="2.8" fill="url(#s)" opacity="0.90"/><circle cx="1545.8" cy="416.5" r="2.8" fill="url(#s)" opacity="0.90"/><circle cx="1559.0" cy="415.0" r="2.15" fill="url(#s)" opacity="0.78"/><use href="#x" transform="translate(1578.0 430.8) rotate(17) scale(8)"/><circle cx="1578.0" cy="430.8" r="4" fill="url(#s)"/><circle cx="1730.8" cy="417.8" r="2.8" fill="url(#s)" opacity="0.90"/><circle cx="1751.8" cy="420.2" r="2.8" fill="url(#s)" opacity="0.90"/><circle cx="1680.0" cy="442.5" r="3.4" fill="url(#s)"/><circle cx="1702.2" cy="448.2" r="2.8" fill="url(#s)" opacity="0.90"/><circle cx="1613.0" cy="464.5" r="22.95" fill="url(#h)"/><use href="#x" transform="translate(1613.0 464.5) rotate(17) scale(82)"/><circle cx="1613.0" cy="464.5" r="13.5" fill="url(#s)"/><use href="#x" transform="translate(1464.5 470.0) rotate(17) scale(8)"/><circle cx="1464.5" cy="470.0" r="4" fill="url(#s)"/><circle cx="1405.5" cy="465.0" r="2.8" fill="url(#s)" opacity="0.90"/><circle cx="1876.0" cy="457.2" r="2.8" fill="url(#s)" opacity="0.90"/><circle cx="1831.0" cy="451.0" r="2.15" fill="url(#s)" opacity="0.78"/><circle cx="1628.8" cy="108.2" r="2.15" fill="url(#s)" opacity="0.78"/><circle cx="1625.0" cy="142.5" r="2.15" fill="url(#s)" opacity="0.78"/><circle cx="1707.2" cy="134.8" r="2.15" fill="url(#s)" opacity="0.78"/><circle cx="1757.2" cy="151.8" r="2.15" fill="url(#s)" opacity="0.78"/><circle cx="1810.5" cy="163.8" r="2.15" fill="url(#s)" opacity="0.78"/><circle cx="1784.5" cy="167.0" r="2.15" fill="url(#s)" opacity="0.78"/><circle cx="1862.8" cy="171.2" r="2.15" fill="url(#s)" opacity="0.78"/><circle cx="1794.5" cy="197.0" r="2.15" fill="url(#s)" opacity="0.78"/><circle cx="1352.2" cy="191.5" r="2.15" fill="url(#s)" opacity="0.78"/><circle cx="1334.8" cy="224.8" r="2.15" fill="url(#s)" opacity="0.78"/><circle cx="1300.0" cy="247.0" r="2.15" fill="url(#s)" opacity="0.78"/><circle cx="1374.2" cy="253.8" r="2.15" fill="url(#s)" opacity="0.78"/><circle cx="1386.2" cy="258.8" r="2.15" fill="url(#s)" opacity="0.78"/><circle cx="1501.8" cy="246.8" r="2.15" fill="url(#s)" opacity="0.78"/><circle cx="1510.5" cy="248.5" r="2.15" fill="url(#s)" opacity="0.78"/><circle cx="1491.0" cy="237.0" r="2.15" fill="url(#s)" opacity="0.78"/><circle cx="1571.2" cy="205.0" r="2.15" fill="url(#s)" opacity="0.78"/><circle cx="1564.8" cy="193.8" r="2.15" fill="url(#s)" opacity="0.78"/><circle cx="1490.0" cy="301.2" r="2.15" fill="url(#s)" opacity="0.78"/><circle cx="1702.8" cy="314.8" r="2.15" fill="url(#s)" opacity="0.78"/><circle cx="1595.0" cy="341.2" r="2.15" fill="url(#s)" opacity="0.78"/><circle cx="1594.8" cy="348.2" r="2.15" fill="url(#s)" opacity="0.78"/><circle cx="1526.2" cy="342.5" r="2.15" fill="url(#s)" opacity="0.78"/><circle cx="1459.5" cy="358.5" r="2.15" fill="url(#s)" opacity="0.78"/><circle cx="1454.2" cy="387.0" r="2.15" fill="url(#s)" opacity="0.78"/><circle cx="1422.0" cy="400.2" r="2.15" fill="url(#s)" opacity="0.78"/><circle cx="1520.5" cy="409.2" r="2.15" fill="url(#s)" opacity="0.78"/><circle cx="1632.0" cy="427.5" r="2.15" fill="url(#s)" opacity="0.78"/><circle cx="1649.8" cy="376.2" r="2.15" fill="url(#s)" opacity="0.78"/><circle cx="1648.0" cy="384.5" r="2.15" fill="url(#s)" opacity="0.78"/><circle cx="1863.5" cy="381.5" r="2.15" fill="url(#s)" opacity="0.78"/><circle cx="1793.8" cy="387.0" r="2.15" fill="url(#s)" opacity="0.78"/><circle cx="1772.2" cy="428.5" r="2.15" fill="url(#s)" opacity="0.78"/><circle cx="1428.0" cy="434.0" r="2.15" fill="url(#s)" opacity="0.78"/><circle cx="1341.2" cy="449.2" r="2.15" fill="url(#s)" opacity="0.78"/><circle cx="1647.8" cy="448.0" r="2.15" fill="url(#s)" opacity="0.78"/><circle cx="1680.0" cy="461.8" r="2.15" fill="url(#s)" opacity="0.78"/><circle cx="1861.0" cy="327.8" r="2.15" fill="url(#s)" opacity="0.78"/><circle cx="1738.8" cy="410.8" r="2.15" fill="url(#s)" opacity="0.78"/><circle cx="1662.2" cy="415.0" r="2.15" fill="url(#s)" opacity="0.78"/><circle cx="83.0" cy="486.5" r="2.8" fill="url(#s)" opacity="0.90"/><use href="#x" transform="translate(621.0 473.0) rotate(17) scale(8)"/><circle cx="621.0" cy="473.0" r="4" fill="url(#s)"/><circle cx="421.0" cy="482.2" r="2.8" fill="url(#s)" opacity="0.90"/><use href="#x" transform="translate(523.5 498.0) rotate(17) scale(8)"/><circle cx="523.5" cy="498.0" r="4" fill="url(#s)"/><use href="#x" transform="translate(495.0 521.5) rotate(17) scale(8)"/><circle cx="495.0" cy="521.5" r="4" fill="url(#s)"/><use href="#x" transform="translate(394.8 540.8) rotate(17) scale(14)"/><circle cx="394.8" cy="540.8" r="4.7" fill="url(#s)"/><circle cx="327.8" cy="573.0" r="17.85" fill="url(#h)"/><use href="#x" transform="translate(327.8 573.0) rotate(17) scale(50)"/><circle cx="327.8" cy="573.0" r="10.5" fill="url(#s)"/><circle cx="378.5" cy="572.0" r="14.28" fill="url(#h)"/><use href="#x" transform="translate(378.5 572.0) rotate(17) scale(33)"/><circle cx="378.5" cy="572.0" r="8.4" fill="url(#s)"/><use href="#x" transform="translate(591.5 550.0) rotate(17) scale(8)"/><circle cx="591.5" cy="550.0" r="4" fill="url(#s)"/><use href="#x" transform="translate(252.2 590.8) rotate(17) scale(8)"/><circle cx="252.2" cy="590.8" r="4" fill="url(#s)"/><use href="#x" transform="translate(263.8 612.0) rotate(17) scale(14)"/><circle cx="263.8" cy="612.0" r="4.7" fill="url(#s)"/><circle cx="85.5" cy="585.0" r="3.4" fill="url(#s)"/><circle cx="99.2" cy="588.0" r="2.15" fill="url(#s)" opacity="0.78"/><use href="#x" transform="translate(135.0 634.5) rotate(17) scale(14)"/><circle cx="135.0" cy="634.5" r="4.7" fill="url(#s)"/><use href="#x" transform="translate(115.5 663.8) rotate(17) scale(22)"/><circle cx="115.5" cy="663.8" r="6.1" fill="url(#s)"/><circle cx="98.8" cy="662.5" r="3.4" fill="url(#s)"/><circle cx="94.2" cy="683.0" r="2.8" fill="url(#s)" opacity="0.90"/><circle cx="259.2" cy="642.0" r="2.15" fill="url(#s)" opacity="0.78"/><circle cx="464.0" cy="657.2" r="3.4" fill="url(#s)"/><circle cx="491.5" cy="666.8" r="3.4" fill="url(#s)"/><use href="#x" transform="translate(347.0 717.5) rotate(17) scale(8)"/><circle cx="347.0" cy="717.5" r="4" fill="url(#s)"/><circle cx="474.0" cy="622.2" r="2.15" fill="url(#s)" opacity="0.78"/><circle cx="552.2" cy="686.2" r="2.15" fill="url(#s)" opacity="0.78"/><use href="#x" transform="translate(79.5 780.8) rotate(17) scale(8)"/><circle cx="79.5" cy="780.8" r="4" fill="url(#s)"/><circle cx="187.2" cy="768.8" r="2.15" fill="url(#s)" opacity="0.78"/><circle cx="289.2" cy="768.5" r="2.15" fill="url(#s)" opacity="0.78"/><circle cx="371.8" cy="789.2" r="2.15" fill="url(#s)" opacity="0.78"/><circle cx="311.8" cy="805.0" r="17.85" fill="url(#h)"/><use href="#x" transform="translate(311.8 805.0) rotate(17) scale(50)"/><circle cx="311.8" cy="805.0" r="10.5" fill="url(#s)"/><circle cx="619.2" cy="773.8" r="3.4" fill="url(#s)"/><use href="#x" transform="translate(608.5 797.8) rotate(17) scale(8)"/><circle cx="608.5" cy="797.8" r="4" fill="url(#s)"/><circle cx="643.2" cy="796.0" r="3.4" fill="url(#s)"/><circle cx="625.0" cy="808.2" r="2.8" fill="url(#s)" opacity="0.90"/><circle cx="557.5" cy="811.0" r="2.8" fill="url(#s)" opacity="0.90"/><circle cx="552.0" cy="794.8" r="2.15" fill="url(#s)" opacity="0.78"/><circle cx="164.5" cy="527.2" r="2.15" fill="url(#s)" opacity="0.78"/><circle cx="305.0" cy="537.5" r="2.15" fill="url(#s)" opacity="0.78"/><circle cx="367.2" cy="526.0" r="2.15" fill="url(#s)" opacity="0.78"/><circle cx="58.0" cy="807.5" r="2.15" fill="url(#s)" opacity="0.78"/><circle cx="596.0" cy="830.0" r="2.15" fill="url(#s)" opacity="0.78"/><circle cx="619.8" cy="825.8" r="2.15" fill="url(#s)" opacity="0.78"/><circle cx="98.0" cy="508.5" r="2.15" fill="url(#s)" opacity="0.78"/><circle cx="65.0" cy="531.2" r="2.15" fill="url(#s)" opacity="0.78"/><circle cx="176.0" cy="536.0" r="2.15" fill="url(#s)" opacity="0.78"/><circle cx="229.5" cy="497.2" r="2.15" fill="url(#s)" opacity="0.78"/><circle cx="234.2" cy="503.8" r="2.15" fill="url(#s)" opacity="0.78"/><circle cx="258.0" cy="516.5" r="2.15" fill="url(#s)" opacity="0.78"/><circle cx="236.5" cy="525.5" r="2.15" fill="url(#s)" opacity="0.78"/><circle cx="330.5" cy="521.8" r="2.15" fill="url(#s)" opacity="0.78"/><circle cx="363.0" cy="481.5" r="2.15" fill="url(#s)" opacity="0.78"/><circle cx="66.0" cy="561.2" r="2.15" fill="url(#s)" opacity="0.78"/><circle cx="131.5" cy="564.5" r="2.15" fill="url(#s)" opacity="0.78"/><circle cx="276.5" cy="575.5" r="2.15" fill="url(#s)" opacity="0.78"/><circle cx="207.5" cy="615.0" r="2.15" fill="url(#s)" opacity="0.78"/><circle cx="232.2" cy="615.8" r="2.15" fill="url(#s)" opacity="0.78"/><circle cx="200.5" cy="631.2" r="2.15" fill="url(#s)" opacity="0.78"/><circle cx="57.2" cy="667.5" r="2.15" fill="url(#s)" opacity="0.78"/><circle cx="82.2" cy="686.2" r="2.15" fill="url(#s)" opacity="0.78"/><circle cx="165.8" cy="683.0" r="2.15" fill="url(#s)" opacity="0.78"/><circle cx="105.0" cy="719.0" r="2.15" fill="url(#s)" opacity="0.78"/><circle cx="293.5" cy="728.8" r="2.15" fill="url(#s)" opacity="0.78"/><circle cx="394.0" cy="751.2" r="2.15" fill="url(#s)" opacity="0.78"/><circle cx="374.8" cy="668.8" r="2.15" fill="url(#s)" opacity="0.78"/><circle cx="506.5" cy="769.5" r="2.15" fill="url(#s)" opacity="0.78"/><circle cx="602.2" cy="759.2" r="2.15" fill="url(#s)" opacity="0.78"/><circle cx="579.8" cy="750.5" r="2.15" fill="url(#s)" opacity="0.78"/><use href="#x" transform="translate(897.0 482.0) rotate(17) scale(8)"/><circle cx="897.0" cy="482.0" r="4" fill="url(#s)"/><circle cx="927.2" cy="478.5" r="2.15" fill="url(#s)" opacity="0.78"/><circle cx="988.2" cy="491.8" r="2.8" fill="url(#s)" opacity="0.90"/><circle cx="1037.0" cy="489.0" r="2.15" fill="url(#s)" opacity="0.78"/><circle cx="1116.2" cy="496.0" r="2.15" fill="url(#s)" opacity="0.78"/><circle cx="1219.2" cy="495.5" r="2.8" fill="url(#s)" opacity="0.90"/><circle cx="742.0" cy="497.8" r="2.15" fill="url(#s)" opacity="0.78"/><use href="#x" transform="translate(917.5 522.0) rotate(17) scale(14)"/><circle cx="917.5" cy="522.0" r="4.7" fill="url(#s)"/><use href="#x" transform="translate(759.2 535.8) rotate(17) scale(22)"/><circle cx="759.2" cy="535.8" r="6.1" fill="url(#s)"/><circle cx="772.0" cy="541.8" r="2.8" fill="url(#s)" opacity="0.90"/><circle cx="1060.2" cy="555.0" r="17.85" fill="url(#h)"/><use href="#x" transform="translate(1060.2 555.0) rotate(17) scale(50)"/><circle cx="1060.2" cy="555.0" r="10.5" fill="url(#s)"/><circle cx="1152.0" cy="579.5" r="2.8" fill="url(#s)" opacity="0.90"/><circle cx="1122.0" cy="597.2" r="2.8" fill="url(#s)" opacity="0.90"/><use href="#x" transform="translate(1209.0 612.8) rotate(17) scale(14)"/><circle cx="1209.0" cy="612.8" r="4.7" fill="url(#s)"/><use href="#x" transform="translate(1275.2 625.8) rotate(17) scale(8)"/><circle cx="1275.2" cy="625.8" r="4" fill="url(#s)"/><circle cx="898.8" cy="611.8" r="3.4" fill="url(#s)"/><circle cx="932.2" cy="605.8" r="2.15" fill="url(#s)" opacity="0.78"/><circle cx="956.2" cy="608.0" r="2.15" fill="url(#s)" opacity="0.78"/><use href="#x" transform="translate(795.0 630.2) rotate(17) scale(14)"/><circle cx="795.0" cy="630.2" r="4.7" fill="url(#s)"/><circle cx="886.2" cy="636.0" r="3.4" fill="url(#s)"/><circle cx="1066.0" cy="633.0" r="3.4" fill="url(#s)"/><use href="#x" transform="translate(974.0 655.5) rotate(17) scale(14)"/><circle cx="974.0" cy="655.5" r="4.7" fill="url(#s)"/><circle cx="1017.5" cy="656.2" r="2.15" fill="url(#s)" opacity="0.78"/><circle cx="1082.0" cy="652.8" r="2.8" fill="url(#s)" opacity="0.90"/><use href="#x" transform="translate(1257.2 663.5) rotate(17) scale(22)"/><circle cx="1257.2" cy="663.5" r="6.1" fill="url(#s)"/><circle cx="783.2" cy="648.8" r="2.8" fill="url(#s)" opacity="0.90"/><circle cx="783.5" cy="653.2" r="2.15" fill="url(#s)" opacity="0.78"/><use href="#x" transform="translate(719.8 697.0) rotate(17) scale(8)"/><circle cx="719.8" cy="697.0" r="4" fill="url(#s)"/><circle cx="1026.8" cy="702.8" r="2.8" fill="url(#s)" opacity="0.90"/><circle cx="1102.0" cy="704.8" r="3.4" fill="url(#s)"/><circle cx="1244.5" cy="694.0" r="2.8" fill="url(#s)" opacity="0.90"/><circle cx="1237.8" cy="704.0" r="2.15" fill="url(#s)" opacity="0.78"/><use href="#x" transform="translate(858.8 730.8) rotate(17) scale(22)"/><circle cx="858.8" cy="730.8" r="6.1" fill="url(#s)"/><use href="#x" transform="translate(899.5 733.2) rotate(17) scale(8)"/><circle cx="899.5" cy="733.2" r="4" fill="url(#s)"/><use href="#x" transform="translate(987.0 744.8) rotate(17) scale(8)"/><circle cx="987.0" cy="744.8" r="4" fill="url(#s)"/><circle cx="1078.5" cy="742.2" r="2.8" fill="url(#s)" opacity="0.90"/><circle cx="972.0" cy="767.5" r="3.4" fill="url(#s)"/><circle cx="892.5" cy="772.5" r="2.8" fill="url(#s)" opacity="0.90"/><circle cx="893.0" cy="789.5" r="2.15" fill="url(#s)" opacity="0.78"/><circle cx="1081.5" cy="788.8" r="3.4" fill="url(#s)"/><circle cx="1149.0" cy="800.2" r="3.4" fill="url(#s)"/><circle cx="1117.0" cy="783.8" r="2.15" fill="url(#s)" opacity="0.78"/><use href="#x" transform="translate(1250.0 829.2) rotate(17) scale(8)"/><circle cx="1250.0" cy="829.2" r="4" fill="url(#s)"/><circle cx="908.2" cy="812.2" r="2.15" fill="url(#s)" opacity="0.78"/><circle cx="937.8" cy="793.0" r="2.15" fill="url(#s)" opacity="0.78"/><circle cx="1222.0" cy="541.5" r="2.15" fill="url(#s)" opacity="0.78"/><circle cx="722.0" cy="596.5" r="2.15" fill="url(#s)" opacity="0.78"/><circle cx="721.2" cy="557.5" r="2.15" fill="url(#s)" opacity="0.78"/><use href="#x" transform="translate(667.0 797.5) rotate(17) scale(8)"/><circle cx="667.0" cy="797.5" r="4" fill="url(#s)"/><circle cx="670.8" cy="483.8" r="2.15" fill="url(#s)" opacity="0.78"/><circle cx="682.5" cy="493.0" r="2.15" fill="url(#s)" opacity="0.78"/><circle cx="719.5" cy="522.5" r="2.15" fill="url(#s)" opacity="0.78"/><circle cx="842.0" cy="511.0" r="2.15" fill="url(#s)" opacity="0.78"/><circle cx="817.0" cy="546.0" r="2.15" fill="url(#s)" opacity="0.78"/><circle cx="906.0" cy="546.5" r="2.15" fill="url(#s)" opacity="0.78"/><circle cx="917.5" cy="554.5" r="2.15" fill="url(#s)" opacity="0.78"/><circle cx="985.2" cy="529.2" r="2.15" fill="url(#s)" opacity="0.78"/><circle cx="1033.5" cy="558.0" r="2.15" fill="url(#s)" opacity="0.78"/><circle cx="1087.5" cy="570.5" r="2.15" fill="url(#s)" opacity="0.78"/><circle cx="1097.8" cy="543.8" r="2.15" fill="url(#s)" opacity="0.78"/><circle cx="1105.2" cy="538.2" r="2.15" fill="url(#s)" opacity="0.78"/><circle cx="1131.0" cy="536.0" r="2.15" fill="url(#s)" opacity="0.78"/><circle cx="1183.5" cy="546.0" r="2.15" fill="url(#s)" opacity="0.78"/><circle cx="1184.2" cy="513.8" r="2.15" fill="url(#s)" opacity="0.78"/><circle cx="1249.2" cy="546.2" r="2.15" fill="url(#s)" opacity="0.78"/><circle cx="1026.2" cy="597.0" r="2.15" fill="url(#s)" opacity="0.78"/><circle cx="1009.8" cy="644.2" r="2.15" fill="url(#s)" opacity="0.78"/><circle cx="941.5" cy="640.2" r="2.15" fill="url(#s)" opacity="0.78"/><circle cx="1088.8" cy="665.5" r="2.15" fill="url(#s)" opacity="0.78"/><circle cx="1158.0" cy="655.5" r="2.15" fill="url(#s)" opacity="0.78"/><circle cx="968.8" cy="706.0" r="2.15" fill="url(#s)" opacity="0.78"/><circle cx="904.0" cy="700.5" r="2.15" fill="url(#s)" opacity="0.78"/><circle cx="809.5" cy="710.8" r="2.15" fill="url(#s)" opacity="0.78"/><circle cx="762.0" cy="652.8" r="2.15" fill="url(#s)" opacity="0.78"/><circle cx="742.8" cy="660.2" r="2.15" fill="url(#s)" opacity="0.78"/><circle cx="770.5" cy="604.0" r="2.15" fill="url(#s)" opacity="0.78"/><circle cx="949.5" cy="804.2" r="2.15" fill="url(#s)" opacity="0.78"/><circle cx="967.8" cy="801.5" r="2.15" fill="url(#s)" opacity="0.78"/><circle cx="1083.2" cy="814.2" r="2.15" fill="url(#s)" opacity="0.78"/><circle cx="912.8" cy="804.0" r="2.15" fill="url(#s)" opacity="0.78"/><circle cx="1190.2" cy="823.5" r="2.15" fill="url(#s)" opacity="0.78"/><circle cx="1102.0" cy="834.5" r="2.15" fill="url(#s)" opacity="0.78"/><circle cx="1051.0" cy="766.0" r="2.15" fill="url(#s)" opacity="0.78"/><use href="#x" transform="translate(1456.8 479.5) rotate(17) scale(14)"/><circle cx="1456.8" cy="479.5" r="4.7" fill="url(#s)"/><circle cx="1458.5" cy="490.8" r="2.8" fill="url(#s)" opacity="0.90"/><circle cx="1439.0" cy="502.8" r="2.8" fill="url(#s)" opacity="0.90"/><circle cx="1454.5" cy="503.0" r="2.15" fill="url(#s)" opacity="0.78"/><use href="#x" transform="translate(1715.0 493.8) rotate(17) scale(8)"/><circle cx="1715.0" cy="493.8" r="4" fill="url(#s)"/><circle cx="1855.0" cy="487.0" r="2.8" fill="url(#s)" opacity="0.90"/><circle cx="1871.8" cy="485.5" r="2.8" fill="url(#s)" opacity="0.90"/><circle cx="1889.8" cy="493.0" r="2.15" fill="url(#s)" opacity="0.78"/><circle cx="1379.2" cy="536.0" r="3.4" fill="url(#s)"/><use href="#x" transform="translate(1300.5 550.2) rotate(17) scale(14)"/><circle cx="1300.5" cy="550.2" r="4.7" fill="url(#s)"/><circle cx="1345.0" cy="547.5" r="2.15" fill="url(#s)" opacity="0.78"/><circle cx="1709.2" cy="543.0" r="2.8" fill="url(#s)" opacity="0.90"/><circle cx="1683.8" cy="548.5" r="2.8" fill="url(#s)" opacity="0.90"/><circle cx="1881.8" cy="539.2" r="2.8" fill="url(#s)" opacity="0.90"/><circle cx="1757.8" cy="515.2" r="2.15" fill="url(#s)" opacity="0.78"/><circle cx="1483.8" cy="575.2" r="14.28" fill="url(#h)"/><use href="#x" transform="translate(1483.8 575.2) rotate(17) scale(33)"/><circle cx="1483.8" cy="575.2" r="8.4" fill="url(#s)"/><use href="#x" transform="translate(1576.8 564.2) rotate(17) scale(14)"/><circle cx="1576.8" cy="564.2" r="4.7" fill="url(#s)"/><circle cx="1508.0" cy="562.8" r="2.8" fill="url(#s)" opacity="0.90"/><circle cx="1600.0" cy="558.8" r="2.15" fill="url(#s)" opacity="0.78"/><use href="#x" transform="translate(1679.5 581.2) rotate(17) scale(14)"/><circle cx="1679.5" cy="581.2" r="4.7" fill="url(#s)"/><circle cx="1765.8" cy="571.8" r="2.8" fill="url(#s)" opacity="0.90"/><circle cx="1827.0" cy="560.8" r="2.8" fill="url(#s)" opacity="0.90"/><circle cx="1879.8" cy="575.8" r="2.8" fill="url(#s)" opacity="0.90"/><circle cx="1646.2" cy="580.0" r="2.15" fill="url(#s)" opacity="0.78"/><circle cx="1721.8" cy="584.2" r="2.8" fill="url(#s)" opacity="0.90"/><circle cx="1798.0" cy="587.8" r="2.15" fill="url(#s)" opacity="0.78"/><circle cx="1552.0" cy="586.8" r="2.8" fill="url(#s)" opacity="0.90"/><circle cx="1404.2" cy="582.0" r="2.15" fill="url(#s)" opacity="0.78"/><circle cx="1536.5" cy="607.0" r="2.8" fill="url(#s)" opacity="0.90"/><circle cx="1736.8" cy="607.8" r="3.4" fill="url(#s)"/><use href="#x" transform="translate(1765.5 609.5) rotate(17) scale(8)"/><circle cx="1765.5" cy="609.5" r="4" fill="url(#s)"/><circle cx="1783.0" cy="612.2" r="2.15" fill="url(#s)" opacity="0.78"/><circle cx="1793.5" cy="612.8" r="2.15" fill="url(#s)" opacity="0.78"/><circle cx="1585.0" cy="629.5" r="3.4" fill="url(#s)"/><circle cx="1643.5" cy="596.0" r="2.15" fill="url(#s)" opacity="0.78"/><circle cx="1348.5" cy="649.5" r="2.15" fill="url(#s)" opacity="0.78"/><use href="#x" transform="translate(1313.5 707.0) rotate(17) scale(14)"/><circle cx="1313.5" cy="707.0" r="4.7" fill="url(#s)"/><circle cx="1294.5" cy="682.0" r="2.8" fill="url(#s)" opacity="0.90"/><circle cx="1368.8" cy="692.2" r="2.15" fill="url(#s)" opacity="0.78"/><use href="#x" transform="translate(1313.5 819.0) rotate(17) scale(14)"/><circle cx="1313.5" cy="819.0" r="4.7" fill="url(#s)"/><circle cx="1357.2" cy="831.8" r="2.8" fill="url(#s)" opacity="0.90"/><circle cx="1380.5" cy="733.5" r="2.15" fill="url(#s)" opacity="0.78"/><circle cx="1501.2" cy="485.8" r="2.15" fill="url(#s)" opacity="0.78"/><circle cx="1548.0" cy="478.8" r="2.15" fill="url(#s)" opacity="0.78"/><circle cx="1648.5" cy="487.8" r="2.15" fill="url(#s)" opacity="0.78"/><circle cx="1736.0" cy="479.8" r="2.15" fill="url(#s)" opacity="0.78"/><circle cx="1492.2" cy="536.0" r="2.15" fill="url(#s)" opacity="0.78"/><circle cx="1468.2" cy="539.0" r="2.15" fill="url(#s)" opacity="0.78"/><circle cx="1422.2" cy="567.2" r="2.15" fill="url(#s)" opacity="0.78"/><circle cx="1712.2" cy="584.2" r="2.15" fill="url(#s)" opacity="0.78"/><circle cx="1557.0" cy="610.0" r="2.15" fill="url(#s)" opacity="0.78"/><circle cx="1490.5" cy="619.8" r="2.15" fill="url(#s)" opacity="0.78"/><circle cx="1455.5" cy="628.5" r="2.15" fill="url(#s)" opacity="0.78"/><circle cx="1452.5" cy="631.8" r="2.15" fill="url(#s)" opacity="0.78"/><circle cx="1745.5" cy="618.5" r="2.15" fill="url(#s)" opacity="0.78"/><circle cx="1635.5" cy="644.2" r="2.15" fill="url(#s)" opacity="0.78"/><circle cx="1495.0" cy="666.0" r="2.15" fill="url(#s)" opacity="0.78"/><circle cx="1448.2" cy="673.8" r="2.15" fill="url(#s)" opacity="0.78"/><circle cx="1390.5" cy="669.5" r="2.15" fill="url(#s)" opacity="0.78"/><circle cx="1864.2" cy="643.0" r="2.15" fill="url(#s)" opacity="0.78"/><use href="#x" transform="translate(159.2 840.0) rotate(17) scale(14)"/><circle cx="159.2" cy="840.0" r="4.7" fill="url(#s)"/><use href="#x" transform="translate(108.2 889.8) rotate(17) scale(14)"/><circle cx="108.2" cy="889.8" r="4.7" fill="url(#s)"/><circle cx="64.2" cy="912.2" r="3.4" fill="url(#s)"/><use href="#x" transform="translate(87.8 917.0) rotate(17) scale(14)"/><circle cx="87.8" cy="917.0" r="4.7" fill="url(#s)"/><use href="#x" transform="translate(58.5 930.5) rotate(17) scale(22)"/><circle cx="58.5" cy="930.5" r="6.1" fill="url(#s)"/><circle cx="227.8" cy="924.8" r="3.4" fill="url(#s)"/><circle cx="229.2" cy="932.5" r="2.8" fill="url(#s)" opacity="0.90"/><circle cx="376.8" cy="930.8" r="14.28" fill="url(#h)"/><use href="#x" transform="translate(376.8 930.8) rotate(17) scale(33)"/><circle cx="376.8" cy="930.8" r="8.4" fill="url(#s)"/><circle cx="470.5" cy="877.5" r="3.4" fill="url(#s)"/><circle cx="475.2" cy="850.0" r="2.8" fill="url(#s)" opacity="0.90"/><circle cx="529.0" cy="895.8" r="2.8" fill="url(#s)" opacity="0.90"/><circle cx="286.0" cy="926.5" r="2.15" fill="url(#s)" opacity="0.78"/><circle cx="120.5" cy="955.0" r="2.8" fill="url(#s)" opacity="0.90"/><circle cx="252.5" cy="952.0" r="2.15" fill="url(#s)" opacity="0.78"/><use href="#x" transform="translate(70.2 999.0) rotate(17) scale(8)"/><circle cx="70.2" cy="999.0" r="4" fill="url(#s)"/><circle cx="511.5" cy="967.0" r="2.8" fill="url(#s)" opacity="0.90"/><circle cx="475.2" cy="975.5" r="2.8" fill="url(#s)" opacity="0.90"/><circle cx="630.8" cy="968.5" r="3.4" fill="url(#s)"/><circle cx="651.5" cy="959.8" r="2.8" fill="url(#s)" opacity="0.90"/><circle cx="588.8" cy="986.0" r="2.8" fill="url(#s)" opacity="0.90"/><circle cx="641.8" cy="998.8" r="2.8" fill="url(#s)" opacity="0.90"/><circle cx="286.0" cy="979.2" r="2.15" fill="url(#s)" opacity="0.78"/><circle cx="247.8" cy="982.2" r="2.15" fill="url(#s)" opacity="0.78"/><circle cx="388.2" cy="1001.0" r="2.8" fill="url(#s)" opacity="0.90"/><circle cx="262.8" cy="1000.0" r="2.15" fill="url(#s)" opacity="0.78"/><circle cx="389.2" cy="1019.0" r="2.15" fill="url(#s)" opacity="0.78"/><circle cx="334.8" cy="1032.2" r="3.4" fill="url(#s)"/><circle cx="360.2" cy="1034.5" r="3.4" fill="url(#s)"/><circle cx="369.2" cy="1027.5" r="2.8" fill="url(#s)" opacity="0.90"/><circle cx="148.0" cy="1044.0" r="17.85" fill="url(#h)"/><use href="#x" transform="translate(148.0 1044.0) rotate(17) scale(50)"/><circle cx="148.0" cy="1044.0" r="10.5" fill="url(#s)"/><use href="#x" transform="translate(155.2 1044.5) rotate(17) scale(8)"/><circle cx="155.2" cy="1044.5" r="4" fill="url(#s)"/><circle cx="151.0" cy="1026.0" r="2.8" fill="url(#s)" opacity="0.90"/><circle cx="399.0" cy="1044.2" r="2.8" fill="url(#s)" opacity="0.90"/><use href="#x" transform="translate(444.8 1052.2) rotate(17) scale(14)"/><circle cx="444.8" cy="1052.2" r="4.7" fill="url(#s)"/><circle cx="388.5" cy="1058.5" r="2.15" fill="url(#s)" opacity="0.78"/><circle cx="193.2" cy="1071.5" r="3.4" fill="url(#s)"/><circle cx="168.2" cy="1076.5" r="2.15" fill="url(#s)" opacity="0.78"/><circle cx="403.5" cy="1075.2" r="2.8" fill="url(#s)" opacity="0.90"/><use href="#x" transform="translate(555.2 1080.8) rotate(17) scale(14)"/><circle cx="555.2" cy="1080.8" r="4.7" fill="url(#s)"/><circle cx="517.8" cy="1092.0" r="2.8" fill="url(#s)" opacity="0.90"/><circle cx="520.5" cy="1102.2" r="2.15" fill="url(#s)" opacity="0.78"/><circle cx="590.0" cy="1093.0" r="2.15" fill="url(#s)" opacity="0.78"/><circle cx="634.5" cy="1097.0" r="2.15" fill="url(#s)" opacity="0.78"/><circle cx="348.2" cy="1095.0" r="2.8" fill="url(#s)" opacity="0.90"/><use href="#x" transform="translate(390.5 1113.8) rotate(17) scale(14)"/><circle cx="390.5" cy="1113.8" r="4.7" fill="url(#s)"/><circle cx="416.8" cy="1108.8" r="2.8" fill="url(#s)" opacity="0.90"/><circle cx="466.0" cy="1114.2" r="3.4" fill="url(#s)"/><use href="#x" transform="translate(255.0 1125.0) rotate(17) scale(14)"/><circle cx="255.0" cy="1125.0" r="4.7" fill="url(#s)"/><circle cx="240.0" cy="1134.8" r="2.15" fill="url(#s)" opacity="0.78"/><circle cx="300.0" cy="1143.0" r="2.8" fill="url(#s)" opacity="0.90"/><circle cx="128.0" cy="1139.0" r="3.4" fill="url(#s)"/><circle cx="200.2" cy="1147.0" r="2.8" fill="url(#s)" opacity="0.90"/><circle cx="264.2" cy="1176.8" r="3.4" fill="url(#s)"/><circle cx="83.8" cy="1178.5" r="2.8" fill="url(#s)" opacity="0.90"/><use href="#x" transform="translate(103.8 1200.2) rotate(17) scale(8)"/><circle cx="103.8" cy="1200.2" r="4" fill="url(#s)"/><circle cx="498.5" cy="1183.2" r="2.8" fill="url(#s)" opacity="0.90"/><circle cx="509.5" cy="1184.8" r="3.4" fill="url(#s)"/><circle cx="654.8" cy="1135.5" r="2.8" fill="url(#s)" opacity="0.90"/><circle cx="622.5" cy="1153.2" r="2.8" fill="url(#s)" opacity="0.90"/><circle cx="580.2" cy="1152.2" r="2.15" fill="url(#s)" opacity="0.78"/><circle cx="541.0" cy="1178.8" r="2.15" fill="url(#s)" opacity="0.78"/><circle cx="541.8" cy="1016.0" r="2.15" fill="url(#s)" opacity="0.78"/><circle cx="566.2" cy="1031.2" r="2.15" fill="url(#s)" opacity="0.78"/><circle cx="633.0" cy="1021.5" r="2.15" fill="url(#s)" opacity="0.78"/><circle cx="323.0" cy="1197.2" r="2.15" fill="url(#s)" opacity="0.78"/><ellipse cx="476.5" cy="994.2" rx="5.500" ry="3.300" transform="rotate(55 476.5 994.2)" fill="url(#s)" opacity=".85"/><circle cx="66.0" cy="863.0" r="2.15" fill="url(#s)" opacity="0.78"/><circle cx="258.5" cy="872.2" r="2.15" fill="url(#s)" opacity="0.78"/><circle cx="330.5" cy="871.5" r="2.15" fill="url(#s)" opacity="0.78"/><circle cx="177.0" cy="927.0" r="2.15" fill="url(#s)" opacity="0.78"/><circle cx="191.0" cy="950.0" r="2.15" fill="url(#s)" opacity="0.78"/><circle cx="371.8" cy="931.8" r="2.15" fill="url(#s)" opacity="0.78"/><circle cx="455.0" cy="940.8" r="2.15" fill="url(#s)" opacity="0.78"/><circle cx="561.5" cy="937.0" r="2.15" fill="url(#s)" opacity="0.78"/><circle cx="54.0" cy="983.0" r="2.15" fill="url(#s)" opacity="0.78"/><circle cx="202.8" cy="1001.8" r="2.15" fill="url(#s)" opacity="0.78"/><circle cx="299.5" cy="1010.0" r="2.15" fill="url(#s)" opacity="0.78"/><circle cx="319.0" cy="1003.2" r="2.15" fill="url(#s)" opacity="0.78"/><circle cx="442.2" cy="1035.0" r="2.15" fill="url(#s)" opacity="0.78"/><circle cx="369.5" cy="1088.8" r="2.15" fill="url(#s)" opacity="0.78"/><circle cx="325.2" cy="1080.8" r="2.15" fill="url(#s)" opacity="0.78"/><circle cx="419.2" cy="1132.5" r="2.15" fill="url(#s)" opacity="0.78"/><circle cx="407.8" cy="1157.8" r="2.15" fill="url(#s)" opacity="0.78"/><circle cx="432.5" cy="1171.5" r="2.15" fill="url(#s)" opacity="0.78"/><circle cx="507.5" cy="1152.0" r="2.15" fill="url(#s)" opacity="0.78"/><circle cx="150.5" cy="1191.2" r="2.15" fill="url(#s)" opacity="0.78"/><circle cx="148.2" cy="1176.0" r="2.15" fill="url(#s)" opacity="0.78"/><circle cx="301.0" cy="1111.5" r="2.15" fill="url(#s)" opacity="0.78"/><circle cx="550.5" cy="997.2" r="2.15" fill="url(#s)" opacity="0.78"/><circle cx="551.0" cy="1033.5" r="2.15" fill="url(#s)" opacity="0.78"/><circle cx="629.2" cy="1075.5" r="2.15" fill="url(#s)" opacity="0.78"/><circle cx="653.0" cy="1095.5" r="2.15" fill="url(#s)" opacity="0.78"/><circle cx="471.0" cy="988.2" r="2.15" fill="url(#s)" opacity="0.78"/><circle cx="147.2" cy="1058.5" r="2.15" fill="url(#s)" opacity="0.78"/><circle cx="411.8" cy="973.5" r="2.15" fill="url(#s)" opacity="0.78"/><circle cx="378.0" cy="979.8" r="2.15" fill="url(#s)" opacity="0.78"/><use href="#x" transform="translate(992.2 843.5) rotate(17) scale(8)"/><circle cx="992.2" cy="843.5" r="4" fill="url(#s)"/><use href="#x" transform="translate(948.8 863.5) rotate(17) scale(14)"/><circle cx="948.8" cy="863.5" r="4.7" fill="url(#s)"/><circle cx="1015.2" cy="858.2" r="2.8" fill="url(#s)" opacity="0.90"/><circle cx="1008.2" cy="865.2" r="2.15" fill="url(#s)" opacity="0.78"/><use href="#x" transform="translate(1059.2 872.5) rotate(17) scale(8)"/><circle cx="1059.2" cy="872.5" r="4" fill="url(#s)"/><circle cx="673.2" cy="873.0" r="3.4" fill="url(#s)"/><use href="#x" transform="translate(845.2 884.8) rotate(17) scale(22)"/><circle cx="845.2" cy="884.8" r="6.1" fill="url(#s)"/><use href="#x" transform="translate(741.8 899.2) rotate(17) scale(8)"/><circle cx="741.8" cy="899.2" r="4" fill="url(#s)"/><use href="#x" transform="translate(674.5 904.5) rotate(17) scale(8)"/><circle cx="674.5" cy="904.5" r="4" fill="url(#s)"/><circle cx="773.2" cy="911.0" r="3.4" fill="url(#s)"/><use href="#x" transform="translate(1029.5 893.5) rotate(17) scale(8)"/><circle cx="1029.5" cy="893.5" r="4" fill="url(#s)"/><circle cx="968.0" cy="903.2" r="2.15" fill="url(#s)" opacity="0.78"/><circle cx="988.5" cy="903.5" r="2.15" fill="url(#s)" opacity="0.78"/><circle cx="853.5" cy="920.5" r="2.8" fill="url(#s)" opacity="0.90"/><circle cx="865.2" cy="933.2" r="2.8" fill="url(#s)" opacity="0.90"/><circle cx="728.0" cy="931.5" r="3.4" fill="url(#s)"/><circle cx="797.5" cy="935.8" r="2.8" fill="url(#s)" opacity="0.90"/><circle cx="1006.8" cy="923.0" r="2.8" fill="url(#s)" opacity="0.90"/><use href="#x" transform="translate(1149.8 918.8) rotate(17) scale(14)"/><circle cx="1149.8" cy="918.8" r="4.7" fill="url(#s)"/><circle cx="1171.0" cy="882.0" r="2.15" fill="url(#s)" opacity="0.78"/><circle cx="1170.0" cy="938.5" r="2.15" fill="url(#s)" opacity="0.78"/><circle cx="1215.0" cy="930.2" r="2.15" fill="url(#s)" opacity="0.78"/><use href="#x" transform="translate(799.0 959.5) rotate(17) scale(14)"/><circle cx="799.0" cy="959.5" r="4.7" fill="url(#s)"/><circle cx="826.2" cy="953.2" r="2.15" fill="url(#s)" opacity="0.78"/><circle cx="944.0" cy="969.8" r="3.4" fill="url(#s)"/><circle cx="951.0" cy="972.5" r="2.8" fill="url(#s)" opacity="0.90"/><circle cx="961.0" cy="971.5" r="2.8" fill="url(#s)" opacity="0.90"/><circle cx="878.8" cy="982.8" r="3.4" fill="url(#s)"/><use href="#x" transform="translate(786.5 989.5) rotate(17) scale(8)"/><circle cx="786.5" cy="989.5" r="4" fill="url(#s)"/><circle cx="950.5" cy="988.8" r="3.4" fill="url(#s)"/><circle cx="1016.2" cy="990.0" r="2.15" fill="url(#s)" opacity="0.78"/><circle cx="734.2" cy="997.0" r="2.15" fill="url(#s)" opacity="0.78"/><circle cx="742.2" cy="996.8" r="2.15" fill="url(#s)" opacity="0.78"/><circle cx="868.5" cy="1009.5" r="3.4" fill="url(#s)"/><circle cx="781.2" cy="1016.2" r="3.4" fill="url(#s)"/><circle cx="796.0" cy="1005.8" r="2.15" fill="url(#s)" opacity="0.78"/><circle cx="795.2" cy="1025.8" r="2.15" fill="url(#s)" opacity="0.78"/><circle cx="889.5" cy="1029.5" r="3.4" fill="url(#s)"/><circle cx="1071.0" cy="1031.5" r="2.8" fill="url(#s)" opacity="0.90"/><use href="#x" transform="translate(1171.2 1021.2) rotate(17) scale(14)"/><circle cx="1171.2" cy="1021.2" r="4.7" fill="url(#s)"/><circle cx="1176.0" cy="1001.5" r="2.15" fill="url(#s)" opacity="0.78"/><circle cx="1130.5" cy="1001.5" r="2.15" fill="url(#s)" opacity="0.78"/><circle cx="703.8" cy="1056.0" r="2.8" fill="url(#s)" opacity="0.90"/><circle cx="775.0" cy="1048.5" r="2.15" fill="url(#s)" opacity="0.78"/><circle cx="853.2" cy="1067.5" r="3.4" fill="url(#s)"/><circle cx="733.5" cy="1073.8" r="2.8" fill="url(#s)" opacity="0.90"/><circle cx="968.2" cy="1070.0" r="2.8" fill="url(#s)" opacity="0.90"/><circle cx="1112.8" cy="1074.5" r="2.8" fill="url(#s)" opacity="0.90"/><circle cx="1163.0" cy="1068.8" r="2.8" fill="url(#s)" opacity="0.90"/><circle cx="1053.0" cy="1080.2" r="2.15" fill="url(#s)" opacity="0.78"/><use href="#x" transform="translate(829.8 1098.2) rotate(17) scale(8)"/><circle cx="829.8" cy="1098.2" r="4" fill="url(#s)"/><circle cx="831.8" cy="1105.8" r="2.8" fill="url(#s)" opacity="0.90"/><circle cx="1017.5" cy="1098.0" r="2.8" fill="url(#s)" opacity="0.90"/><circle cx="1004.2" cy="1108.0" r="2.8" fill="url(#s)" opacity="0.90"/><circle cx="1092.2" cy="1093.0" r="2.15" fill="url(#s)" opacity="0.78"/><circle cx="719.0" cy="1107.8" r="2.15" fill="url(#s)" opacity="0.78"/><circle cx="852.0" cy="1121.2" r="3.4" fill="url(#s)"/><use href="#x" transform="translate(871.0 1130.8) rotate(17) scale(14)"/><circle cx="871.0" cy="1130.8" r="4.7" fill="url(#s)"/><circle cx="878.2" cy="1129.0" r="2.8" fill="url(#s)" opacity="0.90"/><circle cx="774.0" cy="1131.8" r="2.15" fill="url(#s)" opacity="0.78"/><circle cx="812.8" cy="1132.5" r="2.15" fill="url(#s)" opacity="0.78"/><use href="#x" transform="translate(1086.0 1153.2) rotate(17) scale(14)"/><circle cx="1086.0" cy="1153.2" r="4.7" fill="url(#s)"/><circle cx="1204.8" cy="1160.8" r="3.4" fill="url(#s)"/><circle cx="1202.2" cy="1172.2" r="3.4" fill="url(#s)"/><use href="#x" transform="translate(688.8 1170.5) rotate(17) scale(14)"/><circle cx="688.8" cy="1170.5" r="4.7" fill="url(#s)"/><circle cx="673.2" cy="1187.2" r="3.4" fill="url(#s)"/><use href="#x" transform="translate(785.8 1192.5) rotate(17) scale(8)"/><circle cx="785.8" cy="1192.5" r="4" fill="url(#s)"/><use href="#x" transform="translate(916.0 1194.5) rotate(17) scale(8)"/><circle cx="916.0" cy="1194.5" r="4" fill="url(#s)"/><circle cx="907.8" cy="1175.8" r="2.15" fill="url(#s)" opacity="0.78"/><circle cx="1063.8" cy="1181.5" r="2.8" fill="url(#s)" opacity="0.90"/><use href="#x" transform="translate(1283.0 1128.0) rotate(17) scale(14)"/><circle cx="1283.0" cy="1128.0" r="4.7" fill="url(#s)"/><circle cx="1262.8" cy="1150.5" r="2.15" fill="url(#s)" opacity="0.78"/><circle cx="1221.0" cy="1093.0" r="2.15" fill="url(#s)" opacity="0.78"/><ellipse cx="768.0" cy="1091.0" rx="5.500" ry="3.300" transform="rotate(55 768.0 1091.0)" fill="url(#s)" opacity=".85"/><circle cx="742.8" cy="1149.8" r="2.15" fill="url(#s)" opacity="0.78"/><circle cx="858.2" cy="1149.2" r="2.15" fill="url(#s)" opacity="0.78"/><circle cx="831.0" cy="1201.8" r="2.8" fill="url(#s)" opacity="0.90"/><circle cx="727.5" cy="848.5" r="2.15" fill="url(#s)" opacity="0.78"/><circle cx="844.5" cy="857.8" r="2.15" fill="url(#s)" opacity="0.78"/><circle cx="831.2" cy="872.0" r="2.15" fill="url(#s)" opacity="0.78"/><circle cx="774.0" cy="870.2" r="2.15" fill="url(#s)" opacity="0.78"/><circle cx="1144.8" cy="843.0" r="2.15" fill="url(#s)" opacity="0.78"/><circle cx="805.8" cy="896.2" r="2.15" fill="url(#s)" opacity="0.78"/><circle cx="956.0" cy="913.2" r="2.15" fill="url(#s)" opacity="0.78"/><circle cx="928.8" cy="916.5" r="2.15" fill="url(#s)" opacity="0.78"/><circle cx="897.0" cy="921.0" r="2.15" fill="url(#s)" opacity="0.78"/><circle cx="778.8" cy="947.0" r="2.15" fill="url(#s)" opacity="0.78"/><circle cx="806.0" cy="954.0" r="2.15" fill="url(#s)" opacity="0.78"/><circle cx="755.0" cy="965.2" r="2.15" fill="url(#s)" opacity="0.78"/><circle cx="963.8" cy="959.5" r="2.15" fill="url(#s)" opacity="0.78"/><circle cx="995.8" cy="971.8" r="2.15" fill="url(#s)" opacity="0.78"/><circle cx="909.0" cy="1009.2" r="2.15" fill="url(#s)" opacity="0.78"/><circle cx="725.2" cy="1011.0" r="2.15" fill="url(#s)" opacity="0.78"/><circle cx="1049.8" cy="1019.0" r="2.15" fill="url(#s)" opacity="0.78"/><circle cx="928.2" cy="1042.2" r="2.15" fill="url(#s)" opacity="0.78"/><circle cx="903.5" cy="1049.8" r="2.15" fill="url(#s)" opacity="0.78"/><circle cx="1115.5" cy="959.2" r="2.15" fill="url(#s)" opacity="0.78"/><circle cx="1173.2" cy="948.5" r="2.15" fill="url(#s)" opacity="0.78"/><circle cx="1247.8" cy="977.0" r="2.15" fill="url(#s)" opacity="0.78"/><circle cx="1219.5" cy="919.5" r="2.15" fill="url(#s)" opacity="0.78"/><circle cx="1255.2" cy="898.0" r="2.15" fill="url(#s)" opacity="0.78"/><circle cx="1142.0" cy="1101.5" r="2.15" fill="url(#s)" opacity="0.78"/><circle cx="1178.2" cy="1096.0" r="2.15" fill="url(#s)" opacity="0.78"/><circle cx="1242.8" cy="1108.5" r="2.15" fill="url(#s)" opacity="0.78"/><circle cx="1232.0" cy="1118.5" r="2.15" fill="url(#s)" opacity="0.78"/><circle cx="1137.0" cy="1127.2" r="2.15" fill="url(#s)" opacity="0.78"/><circle cx="1143.5" cy="1126.0" r="2.15" fill="url(#s)" opacity="0.78"/><circle cx="1162.0" cy="1135.5" r="2.15" fill="url(#s)" opacity="0.78"/><circle cx="1190.0" cy="1139.0" r="2.15" fill="url(#s)" opacity="0.78"/><circle cx="1272.5" cy="1133.0" r="2.15" fill="url(#s)" opacity="0.78"/><circle cx="931.5" cy="1129.0" r="2.15" fill="url(#s)" opacity="0.78"/><circle cx="792.8" cy="1138.0" r="2.15" fill="url(#s)" opacity="0.78"/><circle cx="772.0" cy="1191.0" r="2.15" fill="url(#s)" opacity="0.78"/><circle cx="1026.5" cy="1146.8" r="2.15" fill="url(#s)" opacity="0.78"/><circle cx="840.2" cy="1080.2" r="2.15" fill="url(#s)" opacity="0.78"/><circle cx="888.2" cy="1095.2" r="2.15" fill="url(#s)" opacity="0.78"/><circle cx="1502.5" cy="923.5" r="17.85" fill="url(#h)"/><use href="#x" transform="translate(1502.5 923.5) rotate(17) scale(50)"/><circle cx="1502.5" cy="923.5" r="10.5" fill="url(#s)"/><use href="#x" transform="translate(1408.2 930.8) rotate(17) scale(14)"/><circle cx="1408.2" cy="930.8" r="4.7" fill="url(#s)"/><use href="#x" transform="translate(1405.5 966.5) rotate(17) scale(14)"/><circle cx="1405.5" cy="966.5" r="4.7" fill="url(#s)"/><circle cx="1397.5" cy="970.8" r="2.8" fill="url(#s)" opacity="0.90"/><circle cx="1356.2" cy="971.0" r="2.8" fill="url(#s)" opacity="0.90"/><circle cx="1375.5" cy="973.0" r="2.15" fill="url(#s)" opacity="0.78"/><circle cx="1349.8" cy="943.5" r="2.8" fill="url(#s)" opacity="0.90"/><circle cx="1370.0" cy="943.8" r="2.15" fill="url(#s)" opacity="0.78"/><circle cx="1315.8" cy="924.5" r="2.15" fill="url(#s)" opacity="0.78"/><circle cx="1323.8" cy="925.5" r="2.15" fill="url(#s)" opacity="0.78"/><use href="#x" transform="translate(1527.2 977.5) rotate(17) scale(8)"/><circle cx="1527.2" cy="977.5" r="4" fill="url(#s)"/><circle cx="1332.5" cy="984.5" r="2.15" fill="url(#s)" opacity="0.78"/><circle cx="1420.5" cy="1013.8" r="2.8" fill="url(#s)" opacity="0.90"/><circle cx="1344.5" cy="1030.0" r="3.4" fill="url(#s)"/><circle cx="1305.0" cy="1051.0" r="3.4" fill="url(#s)"/><use href="#x" transform="translate(1333.5 1092.0) rotate(17) scale(14)"/><circle cx="1333.5" cy="1092.0" r="4.7" fill="url(#s)"/><circle cx="1523.5" cy="1075.0" r="2.8" fill="url(#s)" opacity="0.90"/><circle cx="1292.2" cy="1129.2" r="2.8" fill="url(#s)" opacity="0.90"/><use href="#x" transform="translate(1519.0 1127.5) rotate(17) scale(14)"/><circle cx="1519.0" cy="1127.5" r="4.7" fill="url(#s)"/><circle cx="1480.5" cy="1122.0" r="2.8" fill="url(#s)" opacity="0.90"/><circle cx="1466.8" cy="1132.0" r="2.8" fill="url(#s)" opacity="0.90"/><circle cx="1439.8" cy="1142.0" r="2.8" fill="url(#s)" opacity="0.90"/><circle cx="1402.0" cy="1141.8" r="2.8" fill="url(#s)" opacity="0.90"/><circle cx="1400.5" cy="1149.0" r="3.4" fill="url(#s)"/><circle cx="1373.8" cy="1144.8" r="2.8" fill="url(#s)" opacity="0.90"/><circle cx="1500.0" cy="1155.0" r="2.8" fill="url(#s)" opacity="0.90"/><circle cx="1481.0" cy="1156.2" r="2.15" fill="url(#s)" opacity="0.78"/><circle cx="1380.8" cy="1113.0" r="2.15" fill="url(#s)" opacity="0.78"/><circle cx="1378.0" cy="1115.0" r="2.15" fill="url(#s)" opacity="0.78"/><circle cx="1338.0" cy="1191.2" r="2.8" fill="url(#s)" opacity="0.90"/><circle cx="1528.0" cy="1195.0" r="2.15" fill="url(#s)" opacity="0.78"/><circle cx="1498.0" cy="1010.0" r="2.15" fill="url(#s)" opacity="0.78"/><circle cx="1339.2" cy="889.8" r="2.15" fill="url(#s)" opacity="0.78"/><circle cx="1476.0" cy="904.8" r="2.15" fill="url(#s)" opacity="0.78"/><circle cx="1474.2" cy="878.8" r="2.15" fill="url(#s)" opacity="0.78"/><circle cx="1372.5" cy="999.0" r="2.15" fill="url(#s)" opacity="0.78"/><circle cx="1306.5" cy="1079.5" r="2.15" fill="url(#s)" opacity="0.78"/><circle cx="1330.5" cy="1045.0" r="2.15" fill="url(#s)" opacity="0.78"/><circle cx="1528.2" cy="1123.0" r="2.15" fill="url(#s)" opacity="0.78"/><circle cx="1522.8" cy="1132.5" r="2.15" fill="url(#s)" opacity="0.78"/><circle cx="1366.2" cy="938.2" r="2.15" fill="url(#s)" opacity="0.78"/><rect x="469.5" y="432.5" width="12.0" height="12.0" fill="none" stroke="#e2e2e2" stroke-width="1"/><path d="M471.5 438.5h8.0M475.5 434.5v8.0" stroke="#a4a4a4" stroke-width="1.600" transform="rotate(0 475.5 438.5)"/><rect x="489.5" y="431.5" width="14.0" height="14.0" fill="none" stroke="#e2e2e2" stroke-width="1"/><path d="M491.4 438.5h9.3M496.0 433.9v9.3" stroke="#a4a4a4" stroke-width="1.600" transform="rotate(30 496.0 438.5)"/><rect x="551.5" y="407.5" width="14.0" height="14.0" fill="none" stroke="#e2e2e2" stroke-width="1"/><path d="M553.4 414.5h9.3M558.0 409.9v9.3" stroke="#a4a4a4" stroke-width="1.600" transform="rotate(60 558.0 414.5)"/><rect x="706.5" y="444.5" width="11.0" height="11.0" fill="none" stroke="#e2e2e2" stroke-width="1"/><path d="M708.5 449.0h7.0M712.0 445.5v7.0" stroke="#a4a4a4" stroke-width="1.600" transform="rotate(60 712.0 449.0)"/><rect x="716.5" y="439.5" width="11.0" height="11.0" fill="none" stroke="#e2e2e2" stroke-width="1"/><path d="M718.5 444.5h7.0M722.0 441.0v7.0" stroke="#a4a4a4" stroke-width="1.600" transform="rotate(15 722.0 444.5)"/><rect x="332.5" y="492.5" width="16.0" height="16.0" fill="none" stroke="#e2e2e2" stroke-width="1"/><path d="M334.8 500.0h9.9M339.8 495.0v9.9" stroke="#a4a4a4" stroke-width="1.600" transform="rotate(30 339.8 500.0)"/><rect x="483.5" y="480.5" width="12.0" height="12.0" fill="none" stroke="#e2e2e2" stroke-width="1"/><path d="M485.1 485.2h7.4M488.8 481.6v7.4" stroke="#a4a4a4" stroke-width="1.600" transform="rotate(60 488.8 485.2)"/><rect x="467.5" y="502.5" width="14.0" height="14.0" fill="none" stroke="#e2e2e2" stroke-width="1"/><path d="M469.4 509.0h8.6M473.8 504.7v8.6" stroke="#a4a4a4" stroke-width="1.600" transform="rotate(30 473.8 509.0)"/><rect x="292.5" y="579.5" width="12.0" height="12.0" fill="none" stroke="#e2e2e2" stroke-width="1"/><path d="M294.2 585.5h8.0M298.2 581.5v8.0" stroke="#a4a4a4" stroke-width="1.600" transform="rotate(30 298.2 585.5)"/><rect x="327.5" y="600.5" width="10.0" height="10.0" fill="none" stroke="#e2e2e2" stroke-width="1"/><path d="M328.9 605.5h6.7M332.2 602.1v6.7" stroke="#a4a4a4" stroke-width="1.600" transform="rotate(0 332.2 605.5)"/><rect x="538.5" y="562.5" width="12.0" height="12.0" fill="none" stroke="#909090" stroke-width="1"/><path d="M540.1 567.8h7.4M543.8 564.1v7.4" stroke="#8a8a8a" stroke-width="1.600" transform="rotate(60 543.8 567.8)"/><rect x="390.5" y="655.5" width="10.0" height="10.0" fill="none" stroke="#707070" stroke-width="1"/><path d="M391.7 660.0h6.1M394.8 657.0v6.1" stroke="#6a6a6a" stroke-width="1.600" transform="rotate(15 394.8 660.0)"/><rect x="316.5" y="662.5" width="10.0" height="10.0" fill="none" stroke="#e2e2e2" stroke-width="1"/><path d="M317.7 667.2h6.1M320.8 664.2v6.1" stroke="#a4a4a4" stroke-width="1.600" transform="rotate(0 320.8 667.2)"/><rect x="211.5" y="750.5" width="16.0" height="16.0" fill="none" stroke="#e2e2e2" stroke-width="1"/><path d="M214.0 758.2h10.6M219.2 753.0v10.6" stroke="#a4a4a4" stroke-width="1.600" transform="rotate(30 219.2 758.2)"/><rect x="148.5" y="761.5" width="12.0" height="12.0" fill="none" stroke="#e2e2e2" stroke-width="1"/><path d="M150.2 767.5h8.0M154.2 763.5v8.0" stroke="#a4a4a4" stroke-width="1.600" transform="rotate(60 154.2 767.5)"/><rect x="304.5" y="768.5" width="14.0" height="14.0" fill="none" stroke="#34d23c" stroke-width="1"/><path d="M306.4 775.0h8.6M310.8 770.7v8.6" stroke="#a4a4a4" stroke-width="1.600" transform="rotate(45 310.8 775.0)"/><circle cx="310.8" cy="775.0" r="1.500" fill="#ff70ff"/><rect x="376.5" y="767.5" width="12.0" height="12.0" fill="none" stroke="#e2e2e2" stroke-width="1"/><path d="M378.1 773.0h7.4M381.8 769.3v7.4" stroke="#a4a4a4" stroke-width="1.600" transform="rotate(15 381.8 773.0)"/><rect x="533.5" y="767.5" width="14.0" height="14.0" fill="none" stroke="#e2e2e2" stroke-width="1"/><path d="M535.6 774.5h9.3M540.2 769.9v9.3" stroke="#a4a4a4" stroke-width="1.600" transform="rotate(0 540.2 774.5)"/><rect x="645.5" y="816.5" width="16.0" height="16.0" fill="none" stroke="#e2e2e2" stroke-width="1"/><path d="M648.0 824.2h10.6M653.2 819.0v10.6" stroke="#a4a4a4" stroke-width="1.600" transform="rotate(45 653.2 824.2)"/><rect x="671.5" y="470.5" width="10.0" height="10.0" fill="none" stroke="#e2e2e2" stroke-width="1"/><path d="M673.1 475.5h6.7M676.5 472.1v6.7" stroke="#a4a4a4" stroke-width="1.600" transform="rotate(15 676.5 475.5)"/><rect x="789.5" y="530.5" width="12.0" height="12.0" fill="none" stroke="#e2e2e2" stroke-width="1"/><path d="M791.3 536.2h7.4M795.0 532.6v7.4" stroke="#a4a4a4" stroke-width="1.600" transform="rotate(45 795.0 536.2)"/><rect x="757.5" y="572.5" width="14.0" height="14.0" fill="none" stroke="#e2e2e2" stroke-width="1"/><path d="M759.7 579.0h8.6M764.0 574.7v8.6" stroke="#a4a4a4" stroke-width="1.600" transform="rotate(0 764.0 579.0)"/><rect x="1240.5" y="594.5" width="14.0" height="14.0" fill="none" stroke="#e2e2e2" stroke-width="1"/><path d="M1242.4 601.0h8.6M1246.8 596.7v8.6" stroke="#a4a4a4" stroke-width="1.600" transform="rotate(30 1246.8 601.0)"/><rect x="1160.5" y="618.5" width="12.0" height="12.0" fill="none" stroke="#e2e2e2" stroke-width="1"/><path d="M1162.2 624.5h8.0M1166.2 620.5v8.0" stroke="#a4a4a4" stroke-width="1.600" transform="rotate(15 1166.2 624.5)"/><rect x="1209.5" y="657.5" width="18.0" height="18.0" fill="none" stroke="#e2e2e2" stroke-width="1"/><path d="M1212.3 666.5h11.8M1218.2 660.6v11.8" stroke="#a4a4a4" stroke-width="1.600" transform="rotate(60 1218.2 666.5)"/><rect x="809.5" y="723.5" width="16.0" height="16.0" fill="none" stroke="#e2e2e2" stroke-width="1"/><path d="M811.8 731.0h9.9M816.8 726.0v9.9" stroke="#a4a4a4" stroke-width="1.600" transform="rotate(0 816.8 731.0)"/><rect x="685.5" y="740.5" width="12.0" height="12.0" fill="none" stroke="#e2e2e2" stroke-width="1"/><path d="M687.2 746.5h8.0M691.2 742.5v8.0" stroke="#a4a4a4" stroke-width="1.600" transform="rotate(0 691.2 746.5)"/><rect x="898.5" y="751.5" width="14.0" height="14.0" fill="none" stroke="#e2e2e2" stroke-width="1"/><path d="M900.6 758.5h9.3M905.2 753.9v9.3" stroke="#a4a4a4" stroke-width="1.600" transform="rotate(15 905.2 758.5)"/><rect x="709.5" y="785.5" width="10.0" height="10.0" fill="none" stroke="#e2e2e2" stroke-width="1"/><path d="M710.7 790.0h6.1M713.8 787.0v6.1" stroke="#a4a4a4" stroke-width="1.600" transform="rotate(45 713.8 790.0)"/><rect x="766.5" y="807.5" width="10.0" height="10.0" fill="none" stroke="#e2e2e2" stroke-width="1"/><path d="M767.9 812.5h6.7M771.2 809.1v6.7" stroke="#a4a4a4" stroke-width="1.600" transform="rotate(60 771.2 812.5)"/><rect x="1162.5" y="784.5" width="12.0" height="12.0" fill="none" stroke="#e2e2e2" stroke-width="1"/><path d="M1164.2 790.5h8.0M1168.2 786.5v8.0" stroke="#a4a4a4" stroke-width="1.600" transform="rotate(30 1168.2 790.5)"/><rect x="1219.5" y="775.5" width="16.0" height="16.0" fill="none" stroke="#e2e2e2" stroke-width="1"/><path d="M1221.8 783.0h9.9M1226.8 778.0v9.9" stroke="#a4a4a4" stroke-width="1.600" transform="rotate(45 1226.8 783.0)"/><rect x="1280.5" y="594.5" width="14.0" height="14.0" fill="none" stroke="#e2e2e2" stroke-width="1"/><path d="M1282.2 600.2h8.6M1286.5 595.9v8.6" stroke="#a4a4a4" stroke-width="1.600" transform="rotate(45 1286.5 600.2)"/><rect x="1411.5" y="599.5" width="14.0" height="14.0" fill="none" stroke="#e2e2e2" stroke-width="1"/><path d="M1413.6 606.2h9.3M1418.2 601.6v9.3" stroke="#a4a4a4" stroke-width="1.600" transform="rotate(45 1418.2 606.2)"/><rect x="1372.5" y="618.5" width="14.0" height="14.0" fill="none" stroke="#e2e2e2" stroke-width="1"/><path d="M1374.4 624.8h8.6M1378.8 620.4v8.6" stroke="#a4a4a4" stroke-width="1.600" transform="rotate(0 1378.8 624.8)"/><rect x="1323.5" y="619.5" width="18.0" height="18.0" fill="none" stroke="#e2e2e2" stroke-width="1"/><path d="M1326.3 628.5h11.8M1332.2 622.6v11.8" stroke="#a4a4a4" stroke-width="1.600" transform="rotate(0 1332.2 628.5)"/><rect x="1298.5" y="664.5" width="14.0" height="14.0" fill="none" stroke="#909090" stroke-width="1"/><path d="M1300.6 671.2h9.3M1305.2 666.6v9.3" stroke="#8a8a8a" stroke-width="1.600" transform="rotate(0 1305.2 671.2)"/><rect x="1411.5" y="677.5" width="14.0" height="14.0" fill="none" stroke="#e2e2e2" stroke-width="1"/><path d="M1413.4 683.8h8.6M1417.8 679.4v8.6" stroke="#a4a4a4" stroke-width="1.600" transform="rotate(45 1417.8 683.8)"/><rect x="1418.5" y="742.5" width="14.0" height="14.0" fill="none" stroke="#e2e2e2" stroke-width="1"/><path d="M1420.6 749.2h9.3M1425.2 744.6v9.3" stroke="#a4a4a4" stroke-width="1.600" transform="rotate(15 1425.2 749.2)"/><rect x="1409.5" y="775.5" width="10.0" height="10.0" fill="none" stroke="#e2e2e2" stroke-width="1"/><path d="M1411.0 780.0h6.1M1414.0 777.0v6.1" stroke="#a4a4a4" stroke-width="1.600" transform="rotate(45 1414.0 780.0)"/><rect x="1443.5" y="772.5" width="14.0" height="14.0" fill="none" stroke="#e2e2e2" stroke-width="1"/><path d="M1445.4 779.0h8.6M1449.8 774.7v8.6" stroke="#a4a4a4" stroke-width="1.600" transform="rotate(60 1449.8 779.0)"/><rect x="1495.5" y="810.5" width="18.0" height="18.0" fill="none" stroke="#e2e2e2" stroke-width="1"/><path d="M1498.3 819.2h11.8M1504.2 813.3v11.8" stroke="#a4a4a4" stroke-width="1.600" transform="rotate(45 1504.2 819.2)"/><rect x="1453.5" y="833.5" width="13.0" height="13.0" fill="none" stroke="#e2e2e2" stroke-width="1"/><path d="M1455.3 839.5h8.3M1459.5 835.3v8.3" stroke="#a4a4a4" stroke-width="1.600" transform="rotate(15 1459.5 839.5)"/><rect x="245.5" y="834.5" width="16.0" height="16.0" fill="none" stroke="#e2e2e2" stroke-width="1"/><path d="M247.8 841.8h9.9M252.8 836.8v9.9" stroke="#a4a4a4" stroke-width="1.600" transform="rotate(0 252.8 841.8)"/><rect x="260.5" y="841.5" width="16.0" height="16.0" fill="none" stroke="#e2e2e2" stroke-width="1"/><path d="M263.2 849.5h10.6M268.5 844.2v10.6" stroke="#a4a4a4" stroke-width="1.600" transform="rotate(45 268.5 849.5)"/><rect x="336.5" y="842.5" width="18.0" height="18.0" fill="none" stroke="#e2e2e2" stroke-width="1"/><path d="M339.6 851.5h11.8M345.5 845.6v11.8" stroke="#a4a4a4" stroke-width="1.600" transform="rotate(45 345.5 851.5)"/><rect x="504.5" y="836.5" width="16.0" height="16.0" fill="none" stroke="#e2e2e2" stroke-width="1"/><path d="M507.2 844.0h10.6M512.5 838.7v10.6" stroke="#a4a4a4" stroke-width="1.600" transform="rotate(45 512.5 844.0)"/><rect x="294.5" y="864.5" width="16.0" height="16.0" fill="none" stroke="#e2e2e2" stroke-width="1"/><path d="M297.0 872.5h10.6M302.2 867.2v10.6" stroke="#a4a4a4" stroke-width="1.600" transform="rotate(30 302.2 872.5)"/><rect x="348.5" y="871.5" width="14.0" height="14.0" fill="none" stroke="#e2e2e2" stroke-width="1"/><path d="M350.7 878.0h8.6M355.0 873.7v8.6" stroke="#a4a4a4" stroke-width="1.600" transform="rotate(0 355.0 878.0)"/><rect x="598.5" y="872.5" width="12.0" height="12.0" fill="none" stroke="#e2e2e2" stroke-width="1"/><path d="M600.2 878.5h8.0M604.2 874.5v8.0" stroke="#a4a4a4" stroke-width="1.600" transform="rotate(0 604.2 878.5)"/><rect x="583.5" y="899.5" width="10.0" height="10.0" fill="none" stroke="#e2e2e2" stroke-width="1"/><path d="M584.7 904.0h6.1M587.8 901.0v6.1" stroke="#a4a4a4" stroke-width="1.600" transform="rotate(15 587.8 904.0)"/><rect x="401.5" y="905.5" width="12.0" height="12.0" fill="none" stroke="#e2e2e2" stroke-width="1"/><path d="M403.5 911.5h8.0M407.5 907.5v8.0" stroke="#a4a4a4" stroke-width="1.600" transform="rotate(0 407.5 911.5)"/><rect x="459.5" y="912.5" width="10.0" height="10.0" fill="none" stroke="#e2e2e2" stroke-width="1"/><path d="M461.1 917.5h6.7M464.5 914.1v6.7" stroke="#a4a4a4" stroke-width="1.600" transform="rotate(0 464.5 917.5)"/><rect x="438.5" y="969.5" width="16.0" height="16.0" fill="none" stroke="#e2e2e2" stroke-width="1"/><path d="M440.8 976.8h9.9M445.8 971.8v9.9" stroke="#a4a4a4" stroke-width="1.600" transform="rotate(0 445.8 976.8)"/><rect x="686.5" y="851.5" width="16.0" height="16.0" fill="none" stroke="#e2e2e2" stroke-width="1"/><path d="M688.8 859.0h9.9M693.8 854.0v9.9" stroke="#a4a4a4" stroke-width="1.600" transform="rotate(60 693.8 859.0)"/><rect x="790.5" y="854.5" width="10.0" height="10.0" fill="none" stroke="#e2e2e2" stroke-width="1"/><path d="M791.9 859.5h6.7M795.2 856.1v6.7" stroke="#a4a4a4" stroke-width="1.600" transform="rotate(15 795.2 859.5)"/><rect x="1188.5" y="849.5" width="12.0" height="12.0" fill="none" stroke="#e2e2e2" stroke-width="1"/><path d="M1190.5 855.5h8.0M1194.5 851.5v8.0" stroke="#a4a4a4" stroke-width="1.600" transform="rotate(45 1194.5 855.5)"/><rect x="1258.5" y="932.5" width="16.0" height="16.0" fill="none" stroke="#e2e2e2" stroke-width="1"/><path d="M1261.0 940.5h10.6M1266.2 935.2v10.6" stroke="#a4a4a4" stroke-width="1.600" transform="rotate(30 1266.2 940.5)"/><rect x="1405.5" y="851.5" width="14.0" height="14.0" fill="none" stroke="#e2e2e2" stroke-width="1"/><path d="M1407.6 858.2h9.3M1412.2 853.6v9.3" stroke="#a4a4a4" stroke-width="1.600" transform="rotate(15 1412.2 858.2)"/><rect x="1354.5" y="866.5" width="14.0" height="14.0" fill="none" stroke="#e2e2e2" stroke-width="1"/><path d="M1356.4 872.8h8.6M1360.8 868.4v8.6" stroke="#a4a4a4" stroke-width="1.600" transform="rotate(45 1360.8 872.8)"/></svg><div class="a" style="left:492px;top:1367px;width:716px;height:144px;background:#5e5e5e"></div><div class="a" style="left:494px;top:1368px;width:712px;height:24px;background:linear-gradient(#717171,#5f5f5f)"></div><div class="a" style="left:494px;top:1392px;width:712px;height:94px;background:#c4c4c4"></div><div class="a" style="left:494px;top:1486px;width:712px;height:23px;background:#aeaaa3"></div><div class="a" style="left:640px;top:1369px;width:400px;text-align:center;font-weight:bold;font-size:14px;letter-spacing:.7px;line-height:21px;color:#c9c9c9;white-space:nowrap">ScreenTransferFunction: Harry_m82andm81</div><svg class="a" style="left:496.500px;top:1371.500px" width="18" height="18" viewBox="0 0 18 18"><defs><linearGradient id="sg" x1="0" y1="0" x2="1" y2="1"><stop offset="0" stop-color="#4a46f0"/><stop offset="1" stop-color="#2618c0"/></linearGradient></defs><rect width="18" height="18" fill="url(#sg)"/><rect width="18" height="2.500" fill="#5a4ad8"/><path d="M13 1.200h1.200M15 1.200h1.200" stroke="#f0a0ff" stroke-width="1"/><path d="M3 3.500V15h13" fill="none" stroke="#c070e8" stroke-width="1"/><path d="M3.500 15C4 8 8 5.500 15 5" fill="none" stroke="#e07a90" stroke-width="1.100"/></svg><svg class="a" style="left:1170px;top:1375px" width="34" height="12" viewBox="0 0 34 12"><g fill="#d6d6d6"><rect x="0" y="1" width="9.500" height="2.200"/><path d="M4.750 3L9.500 9H0z"/></g><path d="M21.500 1l9 9.500M30.500 1l-9 9.500" stroke="#d6d6d6" stroke-width="2.300"/></svg><div class="a" style="left:498px;top:1396px;width:20px;height:20px;border:1px solid #8a8a8a;background:#e6e6e6"></div><div class="a" style="left:522px;top:1396px;width:20px;height:20px;border:1px solid #8a8a8a;background:#e6e6e6"></div><svg class="a" style="left:499px;top:1397px" width="18" height="18" viewBox="0 0 18 18"><g fill="none" stroke="#1a5fb4" stroke-width="2.200" stroke-linecap="round"><path d="M7.500 10.500a3.200 3.200 0 004.500 0l3-3a3.200 3.200 0 00-4.500-4.500l-1.300 1.300"/><path d="M10.500 7.500a3.200 3.200 0 00-4.500 0l-3 3a3.200 3.200 0 004.500 4.500l1.300-1.300"/></g></svg><svg class="a" style="left:523px;top:1397px" width="18" height="18" viewBox="0 0 18 18"><path d="M5 2v13l3.300-3 2.200 4.500 2.200-1-2.200-4.400H15z" fill="#555"/></svg><svg class="a" style="left:499px;top:1419px" width="18" height="18" viewBox="0 0 18 18"><circle cx="7.300" cy="7.300" r="5.600" fill="#f6f6f6" stroke="#444" stroke-width="2.300"/><path d="M11.800 11.800l4.300 4.300" stroke="#444" stroke-width="3.200" stroke-linecap="round"/><g transform="translate(.3 .3)"><rect x="5.500" y="5.500" width="3" height="3" fill="#1a5fb4"/></g></svg><svg class="a" style="left:523px;top:1419px" width="18" height="18" viewBox="0 0 18 18"><circle cx="7.300" cy="7.300" r="5.600" fill="#f6f6f6" stroke="#444" stroke-width="2.300"/><path d="M11.800 11.800l4.300 4.300" stroke="#444" stroke-width="3.200" stroke-linecap="round"/><g transform="translate(.3 .3)"><path d="M4 7h6M7 4v6" stroke="#1a5fb4" stroke-width="1.800"/></g></svg><svg class="a" style="left:499px;top:1441px" width="18" height="18" viewBox="0 0 18 18"><circle cx="9" cy="9" r="8" fill="#e9ad3b"/><path d="M9 9L1.00 9.00A8 8 0 0 1 5.00 2.07Z" fill="#222"/><path d="M9 9L13.00 2.07A8 8 0 0 1 17.00 9.00Z" fill="#222"/><path d="M9 9L13.00 15.93A8 8 0 0 1 5.00 15.93Z" fill="#222"/></svg><svg class="a" style="left:523px;top:1441px" width="18" height="18" viewBox="0 0 18 18"><circle cx="7.300" cy="7.300" r="5.600" fill="#f6f6f6" stroke="#444" stroke-width="2.300"/><path d="M11.800 11.800l4.300 4.300" stroke="#444" stroke-width="3.200" stroke-linecap="round"/><g transform="translate(.3 .3)"><path d="M4 7h6" stroke="#1a5fb4" stroke-width="1.800"/></g></svg><svg class="a" style="left:499px;top:1463px" width="18" height="18" viewBox="0 0 18 18"><path d="M2 3.500a4 4 0 015.500 4.200l8 7.300a1.500 1.500 0 01-2.200 2.200L6 9.200A4 4 0 011 5l2.500 2 2-1.500z" fill="#555"/></svg><svg class="a" style="left:523px;top:1463px" width="18" height="18" viewBox="0 0 18 18"><path d="M1 9l5-4.500v3h6v-3L17 9l-5 4.500v-3H6v3z" fill="#555"/></svg><div class="a" style="left:546px;top:1396px;width:15px;text-align:right;font-size:12.500px;line-height:20px;color:#333">K:</div><div class="a" style="left:565px;top:1396px;width:589px;height:20px;background:#0d0d0d;"></div><svg class="a" style="left:574px;top:1396px" width="12" height="20"><path d="M6.500 0v15" stroke="#f4f4f4" stroke-width="1"/><path d="M6 15l-5 4.800h10z" fill="#0d0d0d" stroke="#f0f0f0" stroke-width="1"/></svg><svg class="a" style="left:785.5px;top:1396px" width="12" height="20"><path d="M6.500 0v15" stroke="#f4f4f4" stroke-width="1"/><path d="M6 15l-5 4.800h10z" fill="#0d0d0d" stroke="#f0f0f0" stroke-width="1"/></svg><svg class="a" style="left:1160px;top:1400px" width="17" height="13" viewBox="0 0 17 13"><path d="M0 6.500L5.500 .5H16.500V12.500H5.500z" fill="#4f4f4f"/><path d="M7.800 3.500l6 6M13.800 3.500l-6 6" stroke="#e8e8e8" stroke-width="1.900"/></svg><svg class="a" style="left:1184px;top:1398px" width="17" height="17" viewBox="0 0 17 17"><rect x="2.500" y="2.500" width="12" height="12" fill="#0d0d0d"/><path d="M8.500 0v17M0 8.500h17" stroke="#0d0d0d" stroke-width="1.600"/><circle cx="8.500" cy="8.500" r=".9" fill="#ccc"/></svg><div class="a" style="left:546px;top:1418px;width:15px;text-align:right;font-size:12.500px;line-height:20px;color:#333">G:</div><div class="a" style="left:565px;top:1418px;width:589px;height:20px;background:#0d0d0d;"></div><svg class="a" style="left:574px;top:1418px" width="12" height="20"><path d="M6.500 0v15" stroke="#f4f4f4" stroke-width="1"/><path d="M6 15l-5 4.800h10z" fill="#0d0d0d" stroke="#f0f0f0" stroke-width="1"/></svg><svg class="a" style="left:785.5px;top:1418px" width="12" height="20"><path d="M6.500 0v15" stroke="#f4f4f4" stroke-width="1"/><path d="M6 15l-5 4.800h10z" fill="#0d0d0d" stroke="#f0f0f0" stroke-width="1"/></svg><svg class="a" style="left:569px;top:1423px" width="11" height="11"><path d="M1 1l9 9M10 1l-9 9" stroke="#e01b24" stroke-width="2.200"/></svg><svg class="a" style="left:1160px;top:1422px" width="17" height="13" viewBox="0 0 17 13"><path d="M0 6.500L5.500 .5H16.500V12.500H5.500z" fill="#4f4f4f"/><path d="M7.800 3.500l6 6M13.800 3.500l-6 6" stroke="#e8e8e8" stroke-width="1.900"/></svg><svg class="a" style="left:1184px;top:1420px" width="17" height="17" viewBox="0 0 17 17"><rect x="3" y="3" width="11" height="11" fill="#9c9c9c" stroke="#444" stroke-width="1.300"/><path d="M8.500 0v17M0 8.500h17" stroke="#444" stroke-width="1.500"/></svg><div class="a" style="left:546px;top:1440px;width:15px;text-align:right;font-size:12.500px;line-height:20px;color:#333">B:</div><div class="a" style="left:565px;top:1440px;width:589px;height:20px;background:#0d0d0d;"></div><svg class="a" style="left:574px;top:1440px" width="12" height="20"><path d="M6.500 0v15" stroke="#f4f4f4" stroke-width="1"/><path d="M6 15l-5 4.800h10z" fill="#0d0d0d" stroke="#f0f0f0" stroke-width="1"/></svg><svg class="a" style="left:785.5px;top:1440px" width="12" height="20"><path d="M6.500 0v15" stroke="#f4f4f4" stroke-width="1"/><path d="M6 15l-5 4.800h10z" fill="#0d0d0d" stroke="#f0f0f0" stroke-width="1"/></svg><svg class="a" style="left:569px;top:1445px" width="11" height="11"><path d="M1 1l9 9M10 1l-9 9" stroke="#e01b24" stroke-width="2.200"/></svg><svg class="a" style="left:1160px;top:1444px" width="17" height="13" viewBox="0 0 17 13"><path d="M0 6.500L5.500 .5H16.500V12.500H5.500z" fill="#4f4f4f"/><path d="M7.800 3.500l6 6M13.800 3.500l-6 6" stroke="#e8e8e8" stroke-width="1.900"/></svg><svg class="a" style="left:1184px;top:1442px" width="17" height="17" viewBox="0 0 17 17"><rect x="3" y="3" width="11" height="11" fill="#f0f0f0" stroke="#333" stroke-width="1.300"/><path d="M8.500 0v17M0 8.500h17" stroke="#333" stroke-width="1.500"/></svg><div class="a" style="left:546px;top:1462px;width:15px;text-align:right;font-size:12.500px;line-height:20px;color:#333">L:</div><div class="a" style="left:565px;top:1462px;width:589px;height:20px;background:linear-gradient(90deg,#0f0f0f,#dcdcdc);border:1px solid #0d0d0d;"></div><svg class="a" style="left:853.5px;top:1462px" width="12" height="20"><path d="M6.500 0v15" stroke="#f4f4f4" stroke-width="1"/><path d="M6 15l-5 4.800h10z" fill="#888" stroke="#f0f0f0" stroke-width="1"/></svg><svg class="a" style="left:569px;top:1467px" width="11" height="11"><path d="M1 1l9 9M10 1l-9 9" stroke="#e01b24" stroke-width="2.200"/></svg><svg class="a" style="left:1160px;top:1466px" width="17" height="13" viewBox="0 0 17 13"><path d="M0 6.500L5.500 .5H16.500V12.500H5.500z" fill="#4f4f4f"/><path d="M7.800 3.500l6 6M13.800 3.500l-6 6" stroke="#e8e8e8" stroke-width="1.900"/></svg><div class="a" style="left:1182px;top:1462px;width:20px;height:20px;border:1px solid #8a8a8a;background:#e6e6e6"></div><svg class="a" style="left:1184px;top:1464px" width="16" height="16" viewBox="0 0 18 18"><rect x="1.600" y="2.100" width="14.800" height="10" fill="none" stroke="#1a5fb4" stroke-width="2.200"/><path d="M9 12.500v3M4.500 16h9" stroke="#1a5fb4" stroke-width="2"/></svg><svg class="a" style="left:565px;top:1476px" width="6" height="6"><path d="M0 0l6 6H0z" fill="#c4c4c4"/></svg><svg class="a" style="left:1148px;top:1476px" width="6" height="6"><path d="M6 0L0 6h6z" fill="#c4c4c4" stroke="#222" stroke-width=".8"/></svg><svg class="a" style="left:502px;top:1492px" width="11" height="11"><path d="M0 0v11h11z" fill="#1a5fb4"/></svg><div class="a" style="left:525px;top:1492px;width:11px;height:11px;background:#1a5fb4"></div><svg class="a" style="left:1117px;top:1491px" width="36" height="13" viewBox="0 0 36 13"><g fill="none" stroke="#1a5fb4" stroke-width="1.800"><rect x="1.500" y="2" width="9" height="9"/><path d="M24.500 2h5l4 4v5h-9z"/><path d="M29.500 2v4h4"/></g></svg><div class="a" style="left:1160px;top:1488px;width:19px;height:18px;border:1px solid #8a8a8a;background:#ececec"></div><svg class="a" style="left:1163px;top:1492px" width="13" height="11"><path d="M1.500 6l3.500 3.500L11.500 1.500" fill="none" stroke="#1a5fb4" stroke-width="2.200"/></svg><svg class="a" style="left:1186px;top:1490.500px" width="14" height="14" viewBox="0 0 14 14"><g stroke="#1a5fb4" stroke-width="1.700"><path d="M0.500 0.500l4.500 4.500M13.500 0.500L9 5M0.500 13.500L5 9M13.500 13.500L9 9"/></g><path d="M5.800 1.500v4.300H1.500zM8.200 1.500v4.300h4.300zM5.800 12.500V8.200H1.500zM8.200 12.500V8.200h4.300z" fill="#1a5fb4"/></svg><div class="a" style="left:1540px;top:647px;width:1019px;height:877px;background:#5c5c5c"></div><div class="a" style="left:1542px;top:648px;width:1015px;height:24px;background:linear-gradient(#727272,#5e5e5e)"></div><div class="a" style="left:1542px;top:672px;width:1015px;height:828px;background:#c3c3c3"></div><div class="a" style="left:1542px;top:1500px;width:1015px;height:22px;background:#aeaaa3"></div><svg class="a" style="left:1545px;top:652px" width="17" height="17" viewBox="0 0 17 17"><defs><linearGradient id="pg3" x1="0" y1="0" x2="1" y2="1"><stop offset="0" stop-color="#c9d0e8"/><stop offset=".5" stop-color="#6a72e6"/><stop offset="1" stop-color="#1010d8"/></linearGradient><linearGradient id="ph3" x1="0" y1="1" x2="1" y2="0"><stop offset="0" stop-color="#0a0ae0"/><stop offset=".55" stop-color="#6a74e0"/><stop offset="1" stop-color="#aeb8dc"/></linearGradient></defs><rect width="17" height="17" fill="url(#pg3)"/><path d="M0 17 C4 14 5 3 8 3 C11 3 13 12 17 17Z" fill="url(#ph3)"/></svg><div class="a" style="left:1938px;top:649px;width:200px;text-align:center;font-weight:bold;font-size:14px;letter-spacing:.7px;line-height:21px;color:#c9c9c9">DynamicPSF</div><svg class="a" style="left:2521px;top:656px" width="34" height="12" viewBox="0 0 34 12"><g fill="#d6d6d6"><rect x="0" y="1" width="9.500" height="2.200"/><path d="M4.750 3L9.500 9H0z"/></g><path d="M21.500 1l9 9.500M30.500 1l-9 9.500" stroke="#d6d6d6" stroke-width="2.300"/></svg><div class="a" style="left:1549px;top:679px;width:1002px;height:649px;background:#8c8c8c"></div><div class="a" style="left:1550px;top:680px;width:984px;height:633px;overflow:hidden;background:#dcdcdc"><div class="a" style="left:0;top:0;width:984px;height:18px;background:linear-gradient(#dadada,#a9a9a9);border-bottom:1px solid #7d7d7d"></div><div class="hd" style="left:0px;width:164px"></div><div class="hd" style="left:164px;width:27px">Ch</div><div class="hd" style="left:191px;width:70px">B</div><div class="hd" style="left:261px;width:70px">A</div><div class="hd" style="left:331px;width:77px">cx</div><div class="hd" style="left:408px;width:77px">cy</div><div class="hd" style="left:485px;width:56px">sx</div><div class="hd" style="left:541px;width:56px">sy</div><div class="hd" style="left:597px;width:68px">FWHMx</div><div class="hd" style="left:665px;width:68px">FWHMy</div><div class="hd" style="left:733px;width:49px">r</div><div class="hd" style="left:782px;width:56px">theta</div><div class="hd" style="left:838px;width:49px">beta</div><div class="hd" style="left:887px;width:77px">MAD</div><div class="hd" style="left:964px;width:20px"></div><div class="row mono" style="top:18px;background:#dcdcdc"><svg class="a" style="left:5px;top:6px" width="12" height="8"><path d="M0 0h12L6 7.500z" fill="#4a4a4a"/></svg><div class="a" style="left:26px;top:2px;width:16px;height:16px;border:2px solid #3c3c3c;border-top-width:4px"></div><span style="left:48px">Harry_m82andm81</span></div><div class="row mono" style="top:38px;background:#cdd2dd"><div class="a" style="left:40px;top:0;width:944px;height:20px;background:linear-gradient(#e0ac7c,#d9985a)"></div><svg class="a" style="left:25px;top:6px" width="12" height="8"><path d="M0 0h12L6 7.500z" fill="#4a4a4a"/></svg><svg class="a" style="left:46px;top:2px" width="16" height="16" viewBox="-8 -8.500 16 16"><path d="M0 -7.600L2.100 -2.400 7.600 -2.100 3.300 1.400 4.700 6.800 0 3.800 -4.700 6.800 -3.300 1.400 -7.600 -2.100 -2.100 -2.400z" fill="#3a5f78" stroke="#3a5f78" stroke-width="1" stroke-linejoin="round"/></svg><span style="right:825px">1</span><span style="right:798px">0</span></div><div class="row mono" style="top:58px;background:#dcdcdc"><div class="a" style="left:60px;top:0;width:924px;height:20px;background:linear-gradient(#e2b080,#d9985a)"></div><svg class="a" style="left:69px;top:5px" width="11" height="11"><circle cx="5.500" cy="5.500" r="5.200" fill="#3a5f78"/></svg><span style="left:88px">Moffat</span><span style="right:728px">0.000778</span><span style="right:658px">0.177464</span><span style="right:581px">521.35</span><span style="right:504px">1347.16</span><span style="right:448px">3.98</span><span style="right:392px">3.75</span><span style="right:324px">2.79px</span><span style="right:256px">2.63px</span><span style="right:207px">0.941</span><span style="right:151px">85.37</span><span style="right:102px">5.97</span><span style="right:25px">7.630e-04</span></div><div class="row mono" style="top:78px;background:#cdd2dd"><svg class="a" style="left:25px;top:6px" width="12" height="8"><path d="M0 0h12L6 7.500z" fill="#4a4a4a"/></svg><svg class="a" style="left:46px;top:2px" width="16" height="16" viewBox="-8 -8.500 16 16"><path d="M0 -7.600L2.100 -2.400 7.600 -2.100 3.300 1.400 4.700 6.800 0 3.800 -4.700 6.800 -3.300 1.400 -7.600 -2.100 -2.100 -2.400z" fill="#3d3d3d" stroke="#3d3d3d" stroke-width="1" stroke-linejoin="round"/></svg><span style="right:825px">2</span><span style="right:798px">0</span></div><div class="row mono" style="top:98px;background:#dcdcdc"><svg class="a" style="left:69px;top:5px" width="11" height="11"><circle cx="5.500" cy="5.500" r="5.200" fill="#333"/></svg><span style="left:88px">Moffat</span><span style="right:728px">0.000522</span><span style="right:658px">0.126332</span><span style="right:581px">1286.00</span><span style="right:504px">1515.09</span><span style="right:448px">4.10</span><span style="right:392px">3.80</span><span style="right:324px">2.78px</span><span style="right:256px">2.57px</span><span style="right:207px">0.925</span><span style="right:151px">80.43</span><span style="right:102px">6.38</span><span style="right:25px">7.653e-04</span></div><div class="row mono" style="top:118px;background:#cdd2dd"><svg class="a" style="left:25px;top:6px" width="12" height="8"><path d="M0 0h12L6 7.500z" fill="#4a4a4a"/></svg><svg class="a" style="left:46px;top:2px" width="16" height="16" viewBox="-8 -8.500 16 16"><path d="M0 -7.600L2.100 -2.400 7.600 -2.100 3.300 1.400 4.700 6.800 0 3.800 -4.700 6.800 -3.300 1.400 -7.600 -2.100 -2.100 -2.400z" fill="#3d3d3d" stroke="#3d3d3d" stroke-width="1" stroke-linejoin="round"/></svg><span style="right:825px">3</span><span style="right:798px">0</span></div><div class="row mono" style="top:138px;background:#dcdcdc"><svg class="a" style="left:69px;top:5px" width="11" height="11"><circle cx="5.500" cy="5.500" r="5.200" fill="#333"/></svg><span style="left:88px">Moffat</span><span style="right:728px">0.000560</span><span style="right:658px">0.088808</span><span style="right:581px">2467.61</span><span style="right:504px">997.03</span><span style="right:448px">3.80</span><span style="right:392px">3.46</span><span style="right:324px">2.80px</span><span style="right:256px">2.55px</span><span style="right:207px">0.911</span><span style="right:151px">27.69</span><span style="right:102px">5.42</span><span style="right:25px">1.030e-03</span></div><div class="row mono" style="top:158px;background:#cdd2dd"><svg class="a" style="left:25px;top:6px" width="12" height="8"><path d="M0 0h12L6 7.500z" fill="#4a4a4a"/></svg><svg class="a" style="left:46px;top:2px" width="16" height="16" viewBox="-8 -8.500 16 16"><path d="M0 -7.600L2.100 -2.400 7.600 -2.100 3.300 1.400 4.700 6.800 0 3.800 -4.700 6.800 -3.300 1.400 -7.600 -2.100 -2.100 -2.400z" fill="#3d3d3d" stroke="#3d3d3d" stroke-width="1" stroke-linejoin="round"/></svg><span style="right:825px">4</span><span style="right:798px">0</span></div><div class="row mono" style="top:178px;background:#dcdcdc"><svg class="a" style="left:69px;top:5px" width="11" height="11"><circle cx="5.500" cy="5.500" r="5.200" fill="#333"/></svg><span style="left:88px">Moffat</span><span style="right:728px">0.000993</span><span style="right:658px">0.172714</span><span style="right:581px">1426.14</span><span style="right:504px">954.82</span><span style="right:448px">3.69</span><span style="right:392px">3.23</span><span style="right:324px">2.76px</span><span style="right:256px">2.41px</span><span style="right:207px">0.875</span><span style="right:151px">74.22</span><span style="right:102px">5.32</span><span style="right:25px">1.032e-03</span></div><div class="row mono" style="top:198px;background:#cdd2dd"><svg class="a" style="left:25px;top:6px" width="12" height="8"><path d="M0 0h12L6 7.500z" fill="#4a4a4a"/></svg><svg class="a" style="left:46px;top:2px" width="16" height="16" viewBox="-8 -8.500 16 16"><path d="M0 -7.600L2.100 -2.400 7.600 -2.100 3.300 1.400 4.700 6.800 0 3.800 -4.700 6.800 -3.300 1.400 -7.600 -2.100 -2.100 -2.400z" fill="#3d3d3d" stroke="#3d3d3d" stroke-width="1" stroke-linejoin="round"/></svg><span style="right:825px">5</span><span style="right:798px">0</span></div><div class="row mono" style="top:218px;background:#dcdcdc"><svg class="a" style="left:69px;top:5px" width="11" height="11"><circle cx="5.500" cy="5.500" r="5.200" fill="#333"/></svg><span style="left:88px">Moffat</span><span style="right:728px">0.000430</span><span style="right:658px">0.061693</span><span style="right:581px">2391.97</span><span style="right:504px">998.95</span><span style="right:448px">3.48</span><span style="right:392px">3.19</span><span style="right:324px">2.74px</span><span style="right:256px">2.51px</span><span style="right:207px">0.917</span><span style="right:151px">32.88</span><span style="right:102px">4.83</span><span style="right:25px">1.071e-03</span></div><div class="row mono" style="top:238px;background:#cdd2dd"><svg class="a" style="left:25px;top:6px" width="12" height="8"><path d="M0 0h12L6 7.500z" fill="#4a4a4a"/></svg><svg class="a" style="left:46px;top:2px" width="16" height="16" viewBox="-8 -8.500 16 16"><path d="M0 -7.600L2.100 -2.400 7.600 -2.100 3.300 1.400 4.700 6.800 0 3.800 -4.700 6.800 -3.300 1.400 -7.600 -2.100 -2.100 -2.400z" fill="#3d3d3d" stroke="#3d3d3d" stroke-width="1" stroke-linejoin="round"/></svg><span style="right:825px">6</span><span style="right:798px">0</span></div><div class="row mono" style="top:258px;background:#dcdcdc"><svg class="a" style="left:69px;top:5px" width="11" height="11"><circle cx="5.500" cy="5.500" r="5.200" fill="#333"/></svg><span style="left:88px">Moffat</span><span style="right:728px">0.000804</span><span style="right:658px">0.152411</span><span style="right:581px">2749.50</span><span style="right:504px">1295.00</span><span style="right:448px">4.57</span><span style="right:392px">3.72</span><span style="right:324px">3.20px</span><span style="right:256px">2.60px</span><span style="right:207px">0.813</span><span style="right:151px">23.89</span><span style="right:102px">6.01</span><span style="right:25px">1.085e-03</span></div><div class="row mono" style="top:278px;background:#cdd2dd"><svg class="a" style="left:25px;top:6px" width="12" height="8"><path d="M0 0h12L6 7.500z" fill="#4a4a4a"/></svg><svg class="a" style="left:46px;top:2px" width="16" height="16" viewBox="-8 -8.500 16 16"><path d="M0 -7.600L2.100 -2.400 7.600 -2.100 3.300 1.400 4.700 6.800 0 3.800 -4.700 6.800 -3.300 1.400 -7.600 -2.100 -2.100 -2.400z" fill="#3d3d3d" stroke="#3d3d3d" stroke-width="1" stroke-linejoin="round"/></svg><span style="right:825px">7</span><span style="right:798px">0</span></div><div class="row mono" style="top:298px;background:#dcdcdc"><svg class="a" style="left:69px;top:5px" width="11" height="11"><circle cx="5.500" cy="5.500" r="5.200" fill="#333"/></svg><span style="left:88px">Gaussian</span><span style="right:728px">0.000553</span><span style="right:658px">0.210535</span><span style="right:581px">590.12</span><span style="right:504px">1499.06</span><span style="right:448px">1.26</span><span style="right:392px">1.17</span><span style="right:324px">2.97px</span><span style="right:256px">2.76px</span><span style="right:207px">0.932</span><span style="right:151px">87.94</span><span style="right:25px">1.090e-03</span></div><div class="row mono" style="top:318px;background:#cdd2dd"><svg class="a" style="left:25px;top:6px" width="12" height="8"><path d="M0 0h12L6 7.500z" fill="#4a4a4a"/></svg><svg class="a" style="left:46px;top:2px" width="16" height="16" viewBox="-8 -8.500 16 16"><path d="M0 -7.600L2.100 -2.400 7.600 -2.100 3.300 1.400 4.700 6.800 0 3.800 -4.700 6.800 -3.300 1.400 -7.600 -2.100 -2.100 -2.400z" fill="#3d3d3d" stroke="#3d3d3d" stroke-width="1" stroke-linejoin="round"/></svg><span style="right:825px">8</span><span style="right:798px">0</span></div><div class="row mono" style="top:338px;background:#dcdcdc"><svg class="a" style="left:69px;top:5px" width="11" height="11"><circle cx="5.500" cy="5.500" r="5.200" fill="#333"/></svg><span style="left:88px">Moffat</span><span style="right:728px">0.000451</span><span style="right:658px">0.063650</span><span style="right:581px">206.90</span><span style="right:504px">1332.29</span><span style="right:448px">4.22</span><span style="right:392px">4.12</span><span style="right:324px">2.81px</span><span style="right:256px">2.74px</span><span style="right:207px">0.976</span><span style="right:151px">80.84</span><span style="right:102px">6.60</span><span style="right:25px">1.120e-03</span></div><div class="row mono" style="top:358px;background:#cdd2dd"><svg class="a" style="left:25px;top:6px" width="12" height="8"><path d="M0 0h12L6 7.500z" fill="#4a4a4a"/></svg><svg class="a" style="left:46px;top:2px" width="16" height="16" viewBox="-8 -8.500 16 16"><path d="M0 -7.600L2.100 -2.400 7.600 -2.100 3.300 1.400 4.700 6.800 0 3.800 -4.700 6.800 -3.300 1.400 -7.600 -2.100 -2.100 -2.400z" fill="#3d3d3d" stroke="#3d3d3d" stroke-width="1" stroke-linejoin="round"/></svg><span style="right:825px">9</span><span style="right:798px">0</span></div><div class="row mono" style="top:378px;background:#dcdcdc"><svg class="a" style="left:69px;top:5px" width="11" height="11"><circle cx="5.500" cy="5.500" r="5.200" fill="#333"/></svg><span style="left:88px">Moffat</span><span style="right:728px">0.000409</span><span style="right:658px">0.051456</span><span style="right:581px">403.90</span><span style="right:504px">1476.37</span><span style="right:448px">3.79</span><span style="right:392px">3.60</span><span style="right:324px">2.75px</span><span style="right:256px">2.60px</span><span style="right:207px">0.948</span><span style="right:151px">88.71</span><span style="right:102px">5.63</span><span style="right:25px">1.135e-03</span></div><div class="row mono" style="top:398px;background:#cdd2dd"><svg class="a" style="left:25px;top:6px" width="12" height="8"><path d="M0 0h12L6 7.500z" fill="#4a4a4a"/></svg><svg class="a" style="left:46px;top:2px" width="16" height="16" viewBox="-8 -8.500 16 16"><path d="M0 -7.600L2.100 -2.400 7.600 -2.100 3.300 1.400 4.700 6.800 0 3.800 -4.700 6.800 -3.300 1.400 -7.600 -2.100 -2.100 -2.400z" fill="#3d3d3d" stroke="#3d3d3d" stroke-width="1" stroke-linejoin="round"/></svg><span style="right:825px">10</span><span style="right:798px">0</span></div><div class="row mono" style="top:418px;background:#dcdcdc"><svg class="a" style="left:69px;top:5px" width="11" height="11"><circle cx="5.500" cy="5.500" r="5.200" fill="#333"/></svg><span style="left:88px">Gaussian</span><span style="right:728px">0.000562</span><span style="right:658px">0.211257</span><span style="right:581px">2334.77</span><span style="right:504px">1130.36</span><span style="right:448px">1.23</span><span style="right:392px">1.15</span><span style="right:324px">2.89px</span><span style="right:256px">2.71px</span><span style="right:207px">0.938</span><span style="right:151px">39.75</span><span style="right:25px">1.141e-03</span></div><div class="row mono" style="top:438px;background:#cdd2dd"><svg class="a" style="left:25px;top:6px" width="12" height="8"><path d="M0 0h12L6 7.500z" fill="#4a4a4a"/></svg><svg class="a" style="left:46px;top:2px" width="16" height="16" viewBox="-8 -8.500 16 16"><path d="M0 -7.600L2.100 -2.400 7.600 -2.100 3.300 1.400 4.700 6.800 0 3.800 -4.700 6.800 -3.300 1.400 -7.600 -2.100 -2.100 -2.400z" fill="#3d3d3d" stroke="#3d3d3d" stroke-width="1" stroke-linejoin="round"/></svg><span style="right:825px">11</span><span style="right:798px">0</span></div><div class="row mono" style="top:458px;background:#dcdcdc"><svg class="a" style="left:69px;top:5px" width="11" height="11"><circle cx="5.500" cy="5.500" r="5.200" fill="#333"/></svg><span style="left:88px">Gaussian</span><span style="right:728px">0.000521</span><span style="right:658px">0.208433</span><span style="right:581px">2906.65</span><span style="right:504px">1435.15</span><span style="right:448px">1.29</span><span style="right:392px">1.17</span><span style="right:324px">3.03px</span><span style="right:256px">2.75px</span><span style="right:207px">0.909</span><span style="right:151px">18.53</span><span style="right:25px">1.145e-03</span></div><div class="row mono" style="top:478px;background:#cdd2dd"><svg class="a" style="left:25px;top:6px" width="12" height="8"><path d="M0 0h12L6 7.500z" fill="#4a4a4a"/></svg><svg class="a" style="left:46px;top:2px" width="16" height="16" viewBox="-8 -8.500 16 16"><path d="M0 -7.600L2.100 -2.400 7.600 -2.100 3.300 1.400 4.700 6.800 0 3.800 -4.700 6.800 -3.300 1.400 -7.600 -2.100 -2.100 -2.400z" fill="#3d3d3d" stroke="#3d3d3d" stroke-width="1" stroke-linejoin="round"/></svg><span style="right:825px">12</span><span style="right:798px">0</span></div><div class="row mono" style="top:498px;background:#dcdcdc"><svg class="a" style="left:69px;top:5px" width="11" height="11"><circle cx="5.500" cy="5.500" r="5.200" fill="#333"/></svg><span style="left:88px">Moffat</span><span style="right:728px">0.000715</span><span style="right:658px">0.112119</span><span style="right:581px">496.07</span><span style="right:504px">967.41</span><span style="right:448px">3.63</span><span style="right:392px">3.53</span><span style="right:324px">2.72px</span><span style="right:256px">2.64px</span><span style="right:207px">0.973</span><span style="right:151px">-61.12</span><span style="right:102px">5.30</span><span style="right:25px">1.151e-03</span></div><div class="row mono" style="top:518px;background:#cdd2dd"><svg class="a" style="left:25px;top:6px" width="12" height="8"><path d="M0 0h12L6 7.500z" fill="#4a4a4a"/></svg><svg class="a" style="left:46px;top:2px" width="16" height="16" viewBox="-8 -8.500 16 16"><path d="M0 -7.600L2.100 -2.400 7.600 -2.100 3.300 1.400 4.700 6.800 0 3.800 -4.700 6.800 -3.300 1.400 -7.600 -2.100 -2.100 -2.400z" fill="#3d3d3d" stroke="#3d3d3d" stroke-width="1" stroke-linejoin="round"/></svg><span style="right:825px">13</span><span style="right:798px">0</span></div><div class="row mono" style="top:538px;background:#dcdcdc"><svg class="a" style="left:69px;top:5px" width="11" height="11"><circle cx="5.500" cy="5.500" r="5.200" fill="#333"/></svg><span style="left:88px">Moffat</span><span style="right:728px">0.004429</span><span style="right:658px">0.265385</span><span style="right:581px">986.94</span><span style="right:504px">932.14</span><span style="right:448px">3.81</span><span style="right:392px">3.46</span><span style="right:324px">2.72px</span><span style="right:256px">2.48px</span><span style="right:207px">0.910</span><span style="right:151px">69.88</span><span style="right:102px">5.75</span><span style="right:25px">1.154e-03</span></div><div class="row mono" style="top:558px;background:#cdd2dd"><svg class="a" style="left:25px;top:6px" width="12" height="8"><path d="M0 0h12L6 7.500z" fill="#4a4a4a"/></svg><svg class="a" style="left:46px;top:2px" width="16" height="16" viewBox="-8 -8.500 16 16"><path d="M0 -7.600L2.100 -2.400 7.600 -2.100 3.300 1.400 4.700 6.800 0 3.800 -4.700 6.800 -3.300 1.400 -7.600 -2.100 -2.100 -2.400z" fill="#3d3d3d" stroke="#3d3d3d" stroke-width="1" stroke-linejoin="round"/></svg><span style="right:825px">14</span><span style="right:798px">0</span></div><div class="row mono" style="top:578px;background:#dcdcdc"><svg class="a" style="left:69px;top:5px" width="11" height="11"><circle cx="5.500" cy="5.500" r="5.200" fill="#333"/></svg><span style="left:88px">Moffat</span><span style="right:728px">0.000415</span><span style="right:658px">0.065429</span><span style="right:581px">2231.40</span><span style="right:504px">1046.31</span><span style="right:448px">3.51</span><span style="right:392px">3.23</span><span style="right:324px">2.72px</span><span style="right:256px">2.50px</span><span style="right:207px">0.920</span><span style="right:151px">44.47</span><span style="right:102px">4.97</span><span style="right:25px">1.172e-03</span></div><div class="row mono" style="top:598px;background:#cdd2dd"><svg class="a" style="left:25px;top:6px" width="12" height="8"><path d="M0 0h12L6 7.500z" fill="#4a4a4a"/></svg><svg class="a" style="left:46px;top:2px" width="16" height="16" viewBox="-8 -8.500 16 16"><path d="M0 -7.600L2.100 -2.400 7.600 -2.100 3.300 1.400 4.700 6.800 0 3.800 -4.700 6.800 -3.300 1.400 -7.600 -2.100 -2.100 -2.400z" fill="#3d3d3d" stroke="#3d3d3d" stroke-width="1" stroke-linejoin="round"/></svg><span style="right:825px">15</span><span style="right:798px">0</span></div><div class="row mono" style="top:618px;background:#dcdcdc"><svg class="a" style="left:69px;top:5px" width="11" height="11"><circle cx="5.500" cy="5.500" r="5.200" fill="#333"/></svg><span style="left:88px">Moffat</span><span style="right:728px">0.000413</span><span style="right:658px">0.047391</span><span style="right:581px">609.27</span><span style="right:504px">1553.38</span><span style="right:448px">3.84</span><span style="right:392px">3.43</span><span style="right:324px">2.79px</span><span style="right:256px">2.49px</span><span style="right:207px">0.895</span><span style="right:151px">85.91</span><span style="right:102px">5.60</span><span style="right:25px">1.207e-03</span></div><div class="a" style="left:163px;top:18px;width:1px;height:615px;background:#9a9a9a;opacity:.55"></div><div class="a" style="left:190px;top:18px;width:1px;height:615px;background:#9a9a9a;opacity:.55"></div><div class="a" style="left:260px;top:18px;width:1px;height:615px;background:#9a9a9a;opacity:.55"></div><div class="a" style="left:330px;top:18px;width:1px;height:615px;background:#9a9a9a;opacity:.55"></div><div class="a" style="left:407px;top:18px;width:1px;height:615px;background:#9a9a9a;opacity:.55"></div><div class="a" style="left:484px;top:18px;width:1px;height:615px;background:#9a9a9a;opacity:.55"></div><div class="a" style="left:540px;top:18px;width:1px;height:615px;background:#9a9a9a;opacity:.55"></div><div class="a" style="left:596px;top:18px;width:1px;height:615px;background:#9a9a9a;opacity:.55"></div><div class="a" style="left:664px;top:18px;width:1px;height:615px;background:#9a9a9a;opacity:.55"></div><div class="a" style="left:732px;top:18px;width:1px;height:615px;background:#9a9a9a;opacity:.55"></div><div class="a" style="left:781px;top:18px;width:1px;height:615px;background:#9a9a9a;opacity:.55"></div><div class="a" style="left:837px;top:18px;width:1px;height:615px;background:#9a9a9a;opacity:.55"></div><div class="a" style="left:886px;top:18px;width:1px;height:615px;background:#9a9a9a;opacity:.55"></div><div class="a" style="left:963px;top:18px;width:1px;height:615px;background:#9a9a9a;opacity:.55"></div></div><div class="a" style="left:2534px;top:680px;width:16px;height:633px;background:#a6a6a6;border-left:1px solid #8a8a8a"></div><div class="a" style="left:2536px;top:681px;width:12px;height:146px;background:linear-gradient(90deg,#cacaca,#bdbdbd);border:1px solid #979797"></div><svg class="a" style="left:2536px;top:1282px" width="12" height="28"><path d="M1 8.500h10L6 2.500zM1 18h10l-5 6z" fill="#2a2a2a"/></svg><div class="a" style="left:1550px;top:1313px;width:1000px;height:14px;background:#a6a6a6;border-top:1px solid #8a8a8a"></div><div class="a" style="left:1552px;top:1314px;width:943px;height:12px;background:linear-gradient(#cbcbcb,#bebebe);border:1px solid #979797"></div><svg class="a" style="left:2502px;top:1314px" width="30" height="12"><path d="M9 1v10L3 6zM20 1v10l6-5z" fill="#2a2a2a"/></svg><div class="a" style="left:1548px;top:1335px;width:703px;height:20px;border:1px solid #6f6f6f;border-right-color:#e4e4e4;border-bottom-color:#e4e4e4;background:#c3c3c3"></div><div class="a" style="left:1552px;top:1337px;font-size:12.900px;line-height:16px;white-space:pre;color:#222">Star<span class="a" style="left:44px">1 of</span><span class="a" style="left:82.500px">60 / 1 selected</span></div><svg class="a" style="left:2268px;top:1334px" width="284" height="22" viewBox="2268 1334 284 22"><g fill="none" stroke="#555" stroke-width="1"><rect x="2272" y="1339.500" width="11" height="11"/><path d="M2274.500 1345h6M2277.500 1342v6"/><rect x="2296" y="1339.500" width="11" height="11"/><path d="M2298.500 1345h6"/></g><rect x="2330" y="1343" width="14" height="4" fill="#c0442c"/><path d="M2366 1338v15l11-7.500z" fill="#444"/><rect x="2377" y="1338" width="3.600" height="15" fill="#444"/><path d="M2402 1350c-1-8 10-9.500 11-2" fill="none" stroke="#1a5fb4" stroke-width="3"/><path d="M2408.500 1346.500h8.500l-4.200 5.500z" fill="#1a5fb4"/><path d="M2439 1345.500a6.500 6.500 0 11-6.500-6.500" fill="none" stroke="#4a4a4a" stroke-width="2"/><path d="M2431.500 1335.500l5 3.500-5 3.500z" fill="#4a4a4a"/><path d="M2453 1351v-11M2449.500 1343.500l3.500-4 3.500 4" fill="none" stroke="#a8a8a8" stroke-width="2"/><path d="M2461 1338v12M2457 1347l4 4.500 4-4.500" fill="none" stroke="#1a5fb4" stroke-width="2.400"/><path d="M2485 1340.500h4l1.500-2.500h5l1.500 2.500h4v11.500h-16z" fill="#1a5fb4"/><circle cx="2493" cy="1346" r="3.400" fill="#c3c3c3"/><circle cx="2493" cy="1346" r="1.700" fill="#1a5fb4"/><path d="M2510.500 1337.500h8l4 4v11.500h-12z" fill="#f4f4f4" stroke="#555"/><path d="M2518.500 1337.500v4h4" fill="none" stroke="#555"/><path d="M2519.500 1344h-6l3 3.500-3 3.500h6" fill="none" stroke="#1a5fb4" stroke-width="1.300"/><path d="M2533.500 1337.500h8l3 3v12.500h-11z" fill="#f4f4f4" stroke="#555"/><path d="M2535.500 1341h6M2535.500 1344h4M2535.500 1347h4M2535.500 1350h6" stroke="#1a5fb4" stroke-width="1"/><path d="M2540 1345.500h6M2544 1342l4.500 3.500-4.500 3.500" fill="none" stroke="#9c36b5" stroke-width="1.800"/></svg><div class="bar" style="top:1361px">PSF Model Functions</div><svg class="a" style="left:2534px;top:1366px" width="9" height="10"><path d="M4.500 0L9 4.500H0zM4.500 5L9 9.500H0z" fill="#1a5fb4"/></svg><div class="bar" style="top:1450px">Star Detection</div><svg class="a" style="left:2534px;top:1455px" width="9" height="10"><path d="M0 .5h9L4.500 5zM0 5.500h9L4.500 10z" fill="#1a5fb4"/></svg><div class="bar" style="top:1475px">Image Scale</div><svg class="a" style="left:2534px;top:1480px" width="9" height="10"><path d="M0 .5h9L4.500 5zM0 5.500h9L4.500 10z" fill="#1a5fb4"/></svg><div class="cb" style="left:1552px;top:1390px"><svg class="a" style="left:0;top:0" width="11" height="11"><path d="M2 5.500l2.500 3L9 2.500" fill="none" stroke="#111" stroke-width="1.800"/></svg></div><div class="lb" style="left:1571px;top:1389px">Auto</div><div class="cb d" style="left:1657px;top:1390px"><svg class="a" style="left:0;top:0" width="11" height="11"><path d="M2 5.500l2.500 3L9 2.500" fill="none" stroke="#9a9a9a" stroke-width="1.800"/></svg></div><div class="lb d" style="left:1676px;top:1389px">Gaussian</div><div class="cb d" style="left:1774px;top:1390px"></div><div class="lb d" style="left:1793px;top:1389px">Moffat</div><div class="cb d" style="left:1859px;top:1390px"></div><div class="lb d" style="left:1878px;top:1389px">Moffat10</div><div class="cb d" style="left:1944px;top:1390px"></div><div class="lb d" style="left:1963px;top:1389px">Moffat8</div><div class="cb d" style="left:1552px;top:1408px"></div><div class="lb d" style="left:1571px;top:1407px">Moffat6</div><div class="cb d" style="left:1657px;top:1408px"></div><div class="lb d" style="left:1676px;top:1407px">Moffat4</div><div class="cb d" style="left:1774px;top:1408px"></div><div class="lb d" style="left:1793px;top:1407px">Moffat25</div><div class="cb d" style="left:1859px;top:1408px"></div><div class="lb d" style="left:1878px;top:1407px">Moffat15</div><div class="cb d" style="left:1944px;top:1408px"></div><div class="lb d" style="left:1963px;top:1407px">Lorentzian</div><div class="cb" style="left:1552px;top:1426px"></div><div class="lb" style="left:1571px;top:1425px">Circular PSF</div><div class="cb" style="left:1657px;top:1426px"><svg class="a" style="left:0;top:0" width="11" height="11"><path d="M2 5.500l2.500 3L9 2.500" fill="none" stroke="#111" stroke-width="1.800"/></svg></div><div class="lb" style="left:1676px;top:1425px">Signed angles</div><svg class="a" style="left:1550px;top:1506px" width="11" height="11"><path d="M0 0v11h11z" fill="#1a5fb4"/></svg><svg class="a" style="left:1574px;top:1506.500px" width="10" height="10"><path d="M1 1l8 8M9 1l-8 8" stroke="#d1402a" stroke-width="2"/></svg><svg class="a" style="left:2490.500px;top:1505px" width="36" height="13" viewBox="0 0 36 13"><g fill="none" stroke="#1a5fb4" stroke-width="1.800"><rect x="1.500" y="2" width="9" height="9"/><path d="M24.500 2h5l4 4v5h-9z"/><path d="M29.500 2v4h4"/></g></svg><svg class="a" style="left:2536.500px;top:1504.500px" width="14" height="14" viewBox="0 0 14 14"><g stroke="#1a5fb4" stroke-width="1.700"><path d="M0.500 0.500l4.500 4.500M13.500 0.500L9 5M0.500 13.500L5 9M13.500 13.500L9 9"/></g><path d="M5.800 1.500v4.300H1.500zM8.200 1.500v4.300h4.300zM5.800 12.500V8.200H1.500zM8.200 12.500V8.200h4.300z" fill="#1a5fb4"/></svg><div class="a" style="left:1542px;top:648px;width:352px;height:556px;background:#000;opacity:.035"></div><div class="a" style="left:1894px;top:648px;width:2px;height:556px;background:#8f9cff;opacity:.22"></div><div class="a" style="left:1542px;top:1204px;width:352px;height:2px;background:#c8d0ff;opacity:.35"></div><div class="a" style="left:2359.500px;top:648px;width:1.500px;height:874px;background:#ffe8cc;opacity:.75"></div><svg class="a" style="left:1540px;top:647px" width="356" height="559" viewBox="1540 647 356 559" opacity=".5"><defs><radialGradient id="s2"><stop offset="0" stop-color="#fff"/><stop offset=".4" stop-color="#fff" stop-opacity=".8"/><stop offset="1" stop-color="#fff" stop-opacity="0"/></radialGradient></defs><use href="#x" transform="translate(1833.0 767.0) rotate(17) scale(35)"/><circle cx="1833.0" cy="767.0" r="18" fill="url(#s2)" opacity=".6"/><circle cx="1833.0" cy="767.0" r="12.1" fill="url(#s2)"/><use href="#x" transform="translate(1648.0 649.0) rotate(17) scale(5.6)"/><circle cx="1648.0" cy="649.0" r="4.6" fill="url(#s2)"/><use href="#x" transform="translate(1702.5 682.7) rotate(17) scale(5.6)"/><circle cx="1702.5" cy="682.7" r="4.6" fill="url(#s2)"/><circle cx="1591.6" cy="681.7" r="3.2" fill="url(#s2)"/><use href="#x" transform="translate(1664.0 734.3) rotate(17) scale(5.6)"/><circle cx="1664.0" cy="734.3" r="4.6" fill="url(#s2)"/><circle cx="1794.5" cy="739.0" r="3.2" fill="url(#s2)"/><use href="#x" transform="translate(1876.0 801.4) rotate(17) scale(5.6)"/><circle cx="1876.0" cy="801.4" r="4.6" fill="url(#s2)"/><circle cx="1585.0" cy="821.7" r="3.9" fill="url(#s2)"/><use href="#x" transform="translate(1676.0 849.0) rotate(17) scale(5.6)"/><circle cx="1676.0" cy="849.0" r="4.6" fill="url(#s2)"/><use href="#x" transform="translate(1566.0 851.7) rotate(17) scale(9.8)"/><circle cx="1566.0" cy="851.7" r="5.4" fill="url(#s2)"/><use href="#x" transform="translate(1726.0 915.6) rotate(17) scale(5.6)"/><circle cx="1726.0" cy="915.6" r="4.6" fill="url(#s2)"/><use href="#x" transform="translate(1859.0 923.0) rotate(17) scale(9.8)"/><circle cx="1859.0" cy="923.0" r="5.4" fill="url(#s2)"/><circle cx="1766.0" cy="923.0" r="3.2" fill="url(#s2)"/><circle cx="1552.0" cy="886.5" r="3.2" fill="url(#s2)"/><circle cx="1628.0" cy="849.0" r="2.5" fill="url(#s2)"/><circle cx="1841.5" cy="850.0" r="2.5" fill="url(#s2)"/><circle cx="1853.7" cy="811.3" r="2.5" fill="url(#s2)"/><circle cx="1689.0" cy="792.6" r="2.5" fill="url(#s2)"/><use href="#x" transform="translate(1866.0 1048.0) rotate(17) scale(9.8)"/><circle cx="1866.0" cy="1048.0" r="5.4" fill="url(#s2)"/><use href="#x" transform="translate(1616.0 1046.7) rotate(17) scale(5.6)"/><circle cx="1616.0" cy="1046.7" r="4.6" fill="url(#s2)"/><use href="#x" transform="translate(1591.6 1112.0) rotate(17) scale(5.6)"/><circle cx="1591.6" cy="1112.0" r="4.6" fill="url(#s2)"/><circle cx="1782.0" cy="973.0" r="3.2" fill="url(#s2)"/><circle cx="1664.0" cy="968.6" r="3.2" fill="url(#s2)"/><circle cx="1655.5" cy="961.6" r="2.5" fill="url(#s2)"/><circle cx="1839.6" cy="1014.0" r="3.2" fill="url(#s2)"/><circle cx="1572.0" cy="1076.0" r="3.2" fill="url(#s2)"/><circle cx="1800.0" cy="1163.5" r="2.5" fill="url(#s2)"/><circle cx="1627.0" cy="1090.0" r="2.5" fill="url(#s2)"/><circle cx="1597.0" cy="949.4" r="2.5" fill="url(#s2)"/></svg><div class="a" style="left:0;top:1537px;width:2560px;height:29px;background:#efefef"></div><div class="grip" style="left:6px;top:1541px;height:20px"></div><div class="a" style="left:20px;top:1541px;width:245px;height:20px;border:1px solid #8a8a8a;border-radius:2px;background:linear-gradient(#fdfdfd,#dcdcdc)"><div class="a" style="left:7px;top:4px;width:11px;height:11px;border:1.500px solid #333;border-top-width:3px;background:#f4f4f4"></div><div class="a mono" style="left:27px;top:0;line-height:18px;color:#1a1a1a">Harry_m82andm81</div><div class="a" style="left:226px;top:2px;width:1px;height:14px;background:#aaa"></div><svg class="a" style="left:230px;top:6px" width="10" height="7"><path d="M0 0h10L5 6z" fill="#111"/></svg></div><div class="a" style="left:269px;top:1542px;width:18px;height:18px;border:1px solid #8a8a8a;background:#fafafa"></div><svg class="a" style="left:272px;top:1545px" width="12" height="12"><path d="M1 11V4l3-3h7v10z" fill="#fff" stroke="#444" stroke-width="1.400"/><path d="M1 11V4l3-3v10z" fill="#444"/></svg><div class="grip" style="left:301px;top:1541px;height:20px"></div><div class="a" style="left:313px;top:1541px;width:19px;height:19px;background:linear-gradient(135deg,#5a5a5a,#2a2a2a)"></div><div class="a" style="left:336px;top:1541px;width:19px;height:19px;background:linear-gradient(135deg,#4d8dff,#1e50c0)"></div><div class="a" style="left:359px;top:1541px;width:19px;height:19px;background:linear-gradient(135deg,#5a5a5a,#2a2a2a)"></div><div class="a" style="left:382px;top:1541px;width:19px;height:19px;background:linear-gradient(135deg,#5a5a5a,#2a2a2a)"></div><div class="grip" style="left:411px;top:1541px;height:20px"></div><div class="grip" style="left:607px;top:1541px;height:20px"></div><svg class="a" style="left:976px;top:1545px" width="11" height="12"><path d="M.5 .5v11l10-5.500z" fill="#222"/></svg><div class="grip" style="left:1003px;top:1541px;height:20px"></div><div class="a mono" style="left:1027px;top:1542px;line-height:18px;color:#1a1a1a;white-space:pre">w:3687 · h:2205 · n:1 · f32 · Gray · 31.013 MiB</div><svg class="a" style="left:1363px;top:1276px" width="16" height="22" viewBox="0 0 16 22"><path d="M1.500 1.500V17l3.700-3.500 2.600 5.800 2.700-1.200-2.600-5.600H13z" fill="#0a0a0a" stroke="#fff" stroke-width="1.300"/></svg></body></html>
